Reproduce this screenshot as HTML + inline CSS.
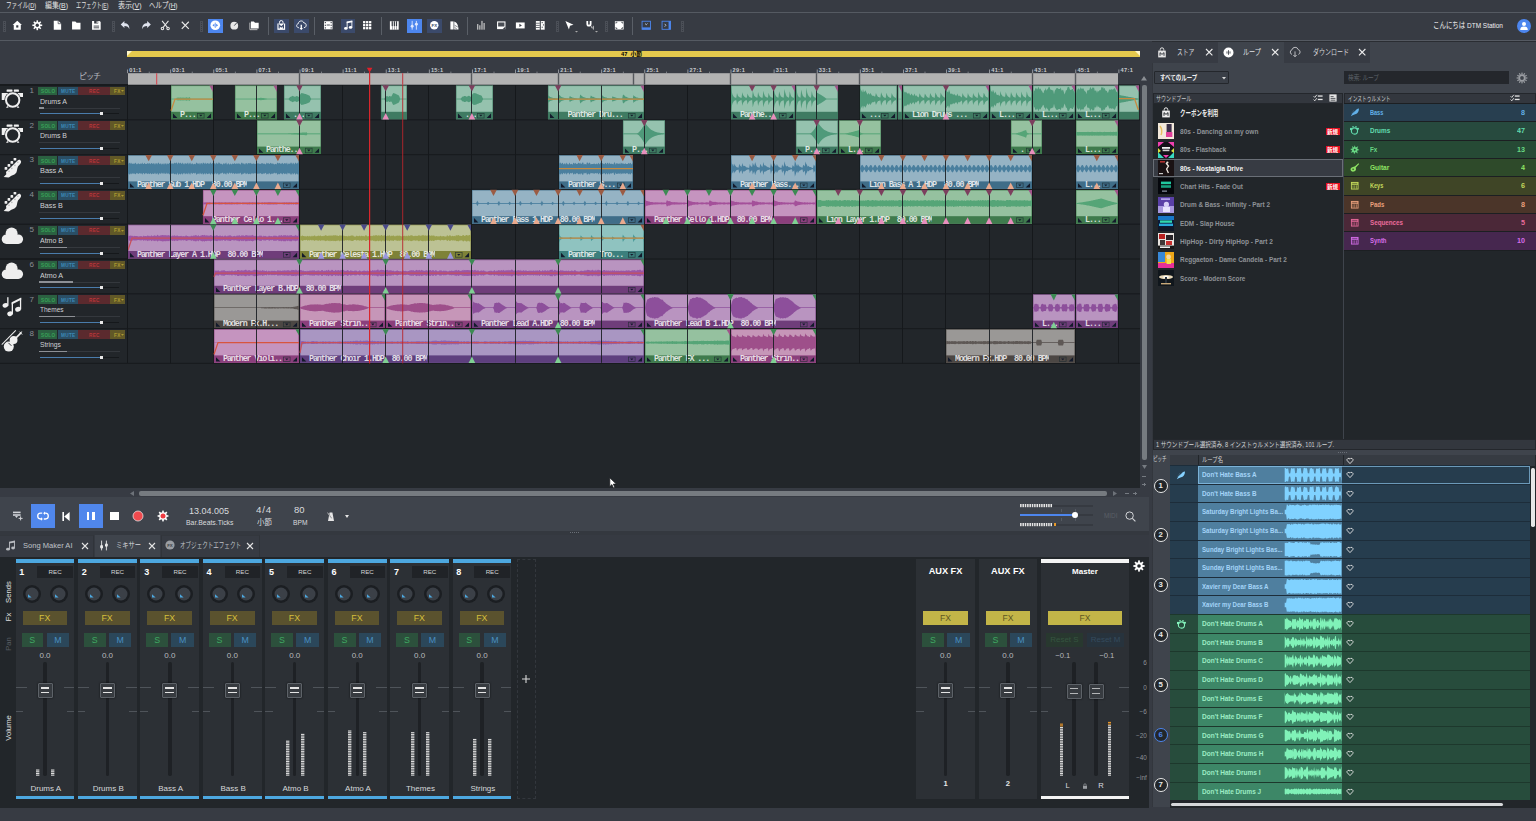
<!DOCTYPE html>
<html lang="ja"><head><meta charset="utf-8"><title>Music Maker</title>
<style>
*{box-sizing:border-box;margin:0;padding:0}
html,body{width:1536px;height:821px;overflow:hidden;background:#373b43;}
body{position:relative;font-family:"Liberation Sans","Noto Sans CJK JP",sans-serif;font-size:8px;color:#ccc;}
div{position:absolute;}
svg{position:absolute;overflow:visible}
.t{white-space:nowrap;line-height:1;}
.mono{font-family:"Liberation Mono","Noto Sans CJK JP",monospace;font-weight:bold;}
.b{font-weight:bold}

.cl{font-size:8.4px;color:rgba(255,255,255,.82);letter-spacing:-1.09px;overflow:hidden;height:8.6px;}

.tb{font-size:9.4px;font-weight:bold;letter-spacing:.6px;transform:scale(.5);transform-origin:0 0}

.tt{color:#d6d8db}

.sb{font-weight:bold}

.mx{font-family:"Liberation Sans",sans-serif}
</style></head>
<body>
<div style="left:0px;top:0px;width:1536px;height:12px;background:#373b43;"></div>
<div style="left:0px;top:12px;width:1536px;height:1px;background:#555a62;"></div>
<div class="t fit" style="left:6.4px;top:1.8px;font-size:8px;color:#e4e4e4;transform-origin:0 0;transform:scaleX(0.696);">ファイル(<u>D</u>)</div>
<div class="t fit" style="left:44.8px;top:1.8px;font-size:8px;color:#e4e4e4;transform-origin:0 0;transform:scaleX(0.862);">編集(<u>B</u>)</div>
<div class="t fit" style="left:76.3px;top:1.8px;font-size:8px;color:#e4e4e4;transform-origin:0 0;transform:scaleX(0.641);">エフェクト(<u>E</u>)</div>
<div class="t fit" style="left:117.6px;top:1.8px;font-size:8px;color:#e4e4e4;transform-origin:0 0;transform:scaleX(0.881);">表示(<u>V</u>)</div>
<div class="t fit" style="left:149.0px;top:1.8px;font-size:8px;color:#e4e4e4;transform-origin:0 0;transform:scaleX(0.811);">ヘルプ(<u>H</u>)</div>
<div style="left:0px;top:13px;width:1536px;height:27px;background:#373b43;"></div>
<div style="left:0px;top:40px;width:1536px;height:1px;background:#555a62;"></div>
<div style="left:3.0px;top:21px;width:3px;height:10.6px;background-image:repeating-linear-gradient(to bottom,#50555d 0 1px,transparent 1px 2px),repeating-linear-gradient(to right,#50555d 0 1px,transparent 1px 2px);background-blend-mode:normal;opacity:.8"></div>
<div style="left:111.5px;top:21px;width:3px;height:10.6px;background-image:repeating-linear-gradient(to bottom,#50555d 0 1px,transparent 1px 2px),repeating-linear-gradient(to right,#50555d 0 1px,transparent 1px 2px);background-blend-mode:normal;opacity:.8"></div>
<div style="left:200.0px;top:21px;width:3px;height:10.6px;background-image:repeating-linear-gradient(to bottom,#50555d 0 1px,transparent 1px 2px),repeating-linear-gradient(to right,#50555d 0 1px,transparent 1px 2px);background-blend-mode:normal;opacity:.8"></div>
<div style="left:555.5px;top:21px;width:3px;height:10.6px;background-image:repeating-linear-gradient(to bottom,#50555d 0 1px,transparent 1px 2px),repeating-linear-gradient(to right,#50555d 0 1px,transparent 1px 2px);background-blend-mode:normal;opacity:.8"></div>
<div style="left:604.5px;top:21px;width:3px;height:10.6px;background-image:repeating-linear-gradient(to bottom,#50555d 0 1px,transparent 1px 2px),repeating-linear-gradient(to right,#50555d 0 1px,transparent 1px 2px);background-blend-mode:normal;opacity:.8"></div>
<div style="left:680.5px;top:21px;width:3px;height:10.6px;background-image:repeating-linear-gradient(to bottom,#50555d 0 1px,transparent 1px 2px),repeating-linear-gradient(to right,#50555d 0 1px,transparent 1px 2px);background-blend-mode:normal;opacity:.8"></div>
<div style="left:267.5px;top:17px;width:1px;height:18px;background:#5a5f67;"></div>
<div style="left:314.3px;top:17px;width:1px;height:18px;background:#5a5f67;"></div>
<div style="left:380.9px;top:17px;width:1px;height:18px;background:#5a5f67;"></div>
<div style="left:467.2px;top:17px;width:1px;height:18px;background:#5a5f67;"></div>
<div style="left:632.0px;top:17px;width:1px;height:18px;background:#5a5f67;"></div>
<div style="left:207.5px;top:18.5px;width:15px;height:14.5px;background:#4d86ee;"></div>
<div style="left:407px;top:18.5px;width:15px;height:14.5px;background:#4d86ee;"></div>
<div style="left:274.3px;top:18.5px;width:14.5px;height:14.5px;background:#3b4a6b;"></div>
<div style="left:294px;top:18.5px;width:14.5px;height:14.5px;background:#3b4a6b;"></div>
<div style="left:340.5px;top:18.5px;width:14.5px;height:14.5px;background:#3b4a6b;"></div>
<div style="left:427.3px;top:18.5px;width:14.5px;height:14.5px;background:#3b4a6b;"></div>
<svg style="left:11.72px;top:20.22px" width="10.56" height="10.56" viewBox="0 0 12 12"><path d="M6 .8 L11.3 5.6 H10 V11 H2 V5.6 H.7 Z" fill="#fff"/><rect x="4.8" y="6" width="2.4" height="2.6" fill="#373b43"/></svg>
<svg style="left:31.72px;top:20.22px" width="10.56" height="10.56" viewBox="0 0 12 12"><g fill="#fff"><circle cx="6" cy="6" r="3.6"/><rect x="5.1" y="0.4" width="1.8" height="11.2" transform="rotate(0 6 6)"/><rect x="5.1" y="0.4" width="1.8" height="11.2" transform="rotate(45 6 6)"/><rect x="5.1" y="0.4" width="1.8" height="11.2" transform="rotate(90 6 6)"/><rect x="5.1" y="0.4" width="1.8" height="11.2" transform="rotate(135 6 6)"/></g><circle cx="6" cy="6" r="1.9" fill="#373b43"/></svg>
<svg style="left:51.72px;top:20.22px" width="10.56" height="10.56" viewBox="0 0 12 12"><path d="M2 .8 H7.2 L10.4 4 V11.2 H2 Z" fill="#fff"/><path d="M7 1 V4.2 H10.2" fill="none" stroke="#373b43" stroke-width=".8"/></svg>
<svg style="left:71.22px;top:20.22px" width="10.56" height="10.56" viewBox="0 0 12 12"><path d="M1.2 1.6 H5 L6.4 3.2 H10.8 V10.8 H1.2 Z" fill="#fff"/></svg>
<svg style="left:91.22px;top:20.22px" width="10.56" height="10.56" viewBox="0 0 12 12"><path d="M1.2 1 H9.6 L11 2.4 V11 H1.2 Z" fill="#fff"/><rect x="3.6" y="1" width="4.6" height="3" fill="#373b43"/><rect x="6.4" y="1.4" width="1.2" height="2.2" fill="#fff"/><rect x="3" y="6.4" width="6.2" height="1" fill="#373b43"/><rect x="3" y="8.4" width="6.2" height="1" fill="#373b43"/></svg>
<svg style="left:120.22px;top:20.22px" width="10.56" height="10.56" viewBox="0 0 12 12"><path d="M5 1.2 V3.6 C8.6 3.6 10.8 5.6 10.6 10.4 C9.8 8 8.2 6.8 5 6.8 V9.2 L.8 5.2 Z" fill="#dfe3ee"/></svg>
<svg style="left:140.72px;top:20.22px" width="10.56" height="10.56" viewBox="0 0 12 12"><path d="M7 1.2 V3.6 C3.4 3.6 1.2 5.6 1.4 10.4 C2.2 8 3.8 6.8 7 6.8 V9.2 L11.2 5.2 Z" fill="#dfe3ee"/></svg>
<svg style="left:159.72px;top:20.22px" width="10.56" height="10.56" viewBox="0 0 12 12"><g stroke="#e8e8e8" stroke-width="1.2" fill="none"><path d="M2.4 1 L8.6 8.6 M9.6 1 L3.4 8.6"/><circle cx="2.8" cy="9.6" r="1.4"/><circle cx="9.2" cy="9.6" r="1.4"/></g></svg>
<svg style="left:179.72px;top:20.22px" width="10.56" height="10.56" viewBox="0 0 12 12"><path d="M2 2 L10 10 M10 2 L2 10" stroke="#e8e8e8" stroke-width="1.3"/></svg>
<svg style="left:209.72px;top:20.22px" width="10.56" height="10.56" viewBox="0 0 12 12"><circle cx="6" cy="6" r="5.5" fill="#fff"/><path d="M6 3 V9" stroke="#4d86ee" stroke-width=".9"/><path d="M5 4.2 V7.8 L2.8 6Z M7 4.2 V7.8 L9.2 6Z" fill="#4d86ee"/></svg>
<svg style="left:228.72px;top:20.22px" width="10.56" height="10.56" viewBox="0 0 12 12"><circle cx="6" cy="6.4" r="4.4" fill="#e8e8e8"/><path d="M6 6.4 L9 3" stroke="#373b43" stroke-width="1"/><path d="M6 .8 A5.4 5.4 0 0 1 11.4 6" stroke="#373b43" stroke-width="1.1" fill="none"/></svg>
<svg style="left:248.72px;top:20.22px" width="10.56" height="10.56" viewBox="0 0 12 12"><path d="M2.2 1.6 H5.6 L6.8 3 H11 V9.6 H2.2 Z" fill="#fff"/><path d="M1 3 V11 H9.6" stroke="#cfcfcf" stroke-width="1" fill="none"/></svg>
<svg style="left:276.22px;top:20.22px" width="10.56" height="10.56" viewBox="0 0 12 12"><path d="M1.6 4 H10.4 V11.2 H1.6 Z" fill="#fff"/><path d="M4 4 V2.6 A2 2 0 0 1 8 2.6 V4" stroke="#fff" stroke-width="1.1" fill="none"/><path d="M3.6 9.8 V5.8 L6 8 L8.4 5.8 V9.8" stroke="#3b4a6b" stroke-width="1.4" fill="none"/></svg>
<svg style="left:295.72px;top:20.22px" width="10.56" height="10.56" viewBox="0 0 12 12"><path d="M3.4 8.8 C.2 8.8 -.2 4.8 2.6 4.2 C2.8 .6 8 -.2 9 3.4 C12.4 3.2 12.6 8.6 9 8.8" stroke="#fff" stroke-width="1" fill="none"/><path d="M6 5.4 V10.4" stroke="#fff" stroke-width="1.5" fill="none"/><path d="M4 9 L6 11.4 L8 9Z" fill="#fff"/></svg>
<svg style="left:322.72px;top:20.22px" width="10.56" height="10.56" viewBox="0 0 12 12"><rect x="1.2" y="1.4" width="9.6" height="9.2" fill="#fff"/><g fill="#373b43"><rect x="2" y="2.4" width="1.4" height="1.2"/><rect x="2" y="5.4" width="1.4" height="1.2"/><rect x="2" y="8.4" width="1.4" height="1.2"/><rect x="8.6" y="2.4" width="1.4" height="1.2"/><rect x="8.6" y="5.4" width="1.4" height="1.2"/><rect x="8.6" y="8.4" width="1.4" height="1.2"/><rect x="4.2" y="5.2" width="3.6" height="1"/></g></svg>
<svg style="left:342.72px;top:20.22px" width="10.56" height="10.56" viewBox="0 0 12 12"><g fill="#fff"><path d="M4.2 1.8 L10.6 .6 V2.6 L4.2 3.8 Z"/><rect x="4.2" y="2" width="1" height="7.6"/><rect x="9.6" y="1" width="1" height="7.4"/><ellipse cx="3.2" cy="9.6" rx="2" ry="1.5"/><ellipse cx="8.6" cy="8.4" rx="2" ry="1.5"/></g></svg>
<svg style="left:362.22px;top:20.22px" width="10.56" height="10.56" viewBox="0 0 12 12"><rect x="1.2" y="1.2" width="2.6" height="2.6" fill="#fff"/><rect x="4.6" y="1.2" width="2.6" height="2.6" fill="#fff"/><rect x="8.0" y="1.2" width="2.6" height="2.6" fill="#fff"/><rect x="1.2" y="4.6" width="2.6" height="2.6" fill="#fff"/><rect x="4.6" y="4.6" width="2.6" height="2.6" fill="#fff"/><rect x="8.0" y="4.6" width="2.6" height="2.6" fill="#fff"/><rect x="1.2" y="8.0" width="2.6" height="2.6" fill="#fff"/><rect x="4.6" y="8.0" width="2.6" height="2.6" fill="#fff"/><rect x="8.0" y="8.0" width="2.6" height="2.6" fill="#fff"/></svg>
<svg style="left:389.22px;top:20.22px" width="10.56" height="10.56" viewBox="0 0 12 12"><rect x="1" y="1.4" width="10" height="9.6" fill="#fff"/><g fill="#373b43"><rect x="3" y="1.4" width="1.4" height="5.6"/><rect x="5.4" y="1.4" width="1.4" height="5.6"/><rect x="7.8" y="1.4" width="1.4" height="5.6"/><rect x="3.5" y="7" width=".5" height="4"/><rect x="5.9" y="7" width=".5" height="4"/><rect x="8.3" y="7" width=".5" height="4"/></g></svg>
<svg style="left:409.22px;top:20.22px" width="10.56" height="10.56" viewBox="0 0 12 12"><g stroke="#dfe8ff" stroke-width="1"><path d="M3.6 1 V11 M8.4 1 V11"/></g><circle cx="3.6" cy="7.2" r="1.7" fill="#dfe8ff"/><circle cx="8.4" cy="4.8" r="1.7" fill="#dfe8ff"/></svg>
<svg style="left:429.42px;top:20.22px" width="10.56" height="10.56" viewBox="0 0 12 12"><circle cx="6" cy="6" r="4.8" fill="#fff"/><text transform="translate(6 7.9) scale(.5)" font-size="10" font-weight="bold" text-anchor="middle" fill="#3b4a6b" font-family="Liberation Sans,sans-serif">FX</text></svg>
<svg style="left:448.72px;top:20.22px" width="10.56" height="10.56" viewBox="0 0 12 12"><rect x="1.6" y="1.6" width="3.6" height="9.2" fill="#fff"/><path d="M6 1.6 C9 2.4 10.6 6 10.8 10.8 H6 Z" fill="#fff"/><path d="M6.4 6 L10 8 M6.4 8.4 L9 10.4" stroke="#373b43" stroke-width=".7"/></svg>
<svg style="left:475.72px;top:20.22px" width="10.56" height="10.56" viewBox="0 0 12 12"><g fill="#dcdcdc"><rect x="1.4" y="4.6" width="1.2" height="6.4"/><rect x="3.8" y="6" width="1.2" height="5"/><rect x="6.2" y="1" width="1.2" height="10"/><rect x="8.6" y="3.4" width="1.2" height="7.6"/></g></svg>
<svg style="left:495.72px;top:20.22px" width="10.56" height="10.56" viewBox="0 0 12 12"><rect x="1.2" y="1.6" width="9.6" height="8.8" fill="#fff"/><rect x="2.4" y="2.8" width="7.2" height="4.6" fill="#4a4e56"/><path d="M7.4 10.4 L10.8 7.4 V10.4 Z" fill="#373b43"/></svg>
<svg style="left:515.22px;top:20.22px" width="10.56" height="10.56" viewBox="0 0 12 12"><rect x="1" y="2.8" width="10" height="6.8" fill="#fff"/><path d="M5 4.4 L7.8 6.2 L5 8 Z" fill="#373b43"/></svg>
<svg style="left:535.22px;top:20.22px" width="10.56" height="10.56" viewBox="0 0 12 12"><rect x="1" y="1.2" width="4.4" height="9.8" fill="#fff"/><rect x="6.6" y="1.2" width="4.4" height="9.8" fill="#fff"/><g fill="#373b43"><rect x="1" y="3.2" width="4.4" height=".8"/><rect x="1" y="5.6" width="4.4" height=".8"/><rect x="1" y="8" width="4.4" height=".8"/><rect x="7.6" y="2.4" width="1.2" height="1.2"/><rect x="9" y="5" width="1.2" height="1.2"/><rect x="7.6" y="7.6" width="1.2" height="1.2"/></g></svg>
<svg style="left:564.22px;top:20.22px" width="10.56" height="10.56" viewBox="0 0 12 12"><path d="M1.6 1 L10.8 5.4 L6.8 6.6 L5.6 10.8 Z" fill="#fff"/></svg>
<svg style="left:584.72px;top:20.22px" width="10.56" height="10.56" viewBox="0 0 12 12"><path d="M1.6 1 V4.6 A2.9 2.9 0 0 0 7.4 4.6 V1 H5.4 V4.6 A.9 .9 0 0 1 3.6 4.6 V1 Z" fill="#fff"/><path d="M7.6 6.6 V9 H9.6 M9.6 6.6 V11" stroke="#ddd" stroke-width=".8" fill="none"/></svg>
<svg style="left:613.72px;top:20.22px" width="10.56" height="10.56" viewBox="0 0 12 12"><rect x="1" y="1.4" width="10" height="9.4" fill="#fff"/><path d="M2.2 4 V2.6 H3.8 M8.2 2.6 H9.8 V4 M9.8 8.2 V9.6 H8.2 M3.8 9.6 H2.2 V8.2" stroke="#373b43" stroke-width=".9" fill="none"/><rect x="4.6" y="4.8" width="2.8" height="2.6" fill="#fff"/></svg>
<svg style="left:640.72px;top:20.22px" width="10.56" height="10.56" viewBox="0 0 12 12"><rect x="1.2" y="1.4" width="9.6" height="9.2" fill="none" stroke="#4d86ee" stroke-width="1"/><rect x="1.2" y="8.4" width="9.6" height="2.4" fill="#4d86ee"/><path d="M4.6 4 L6 5.4 L7.4 4" stroke="#cfe0ff" stroke-width=".9" fill="none"/></svg>
<svg style="left:660.52px;top:20.22px" width="10.56" height="10.56" viewBox="0 0 12 12"><rect x="1.2" y="1.4" width="9.6" height="9.2" fill="none" stroke="#4d86ee" stroke-width="1"/><rect x="8.6" y="1.4" width="2.4" height="9.2" fill="#4d86ee"/><path d="M4.2 4.4 L5.6 6 L4.2 7.6" stroke="#cfe0ff" stroke-width=".9" fill="none"/></svg>
<svg style="left:575.00px;top:31.00px" width="3.00" height="2.00" viewBox="0 0 3 2"><path d="M0 0 L3 0 L1.5 1.6 Z" fill="#aaa"/></svg>
<svg style="left:595.00px;top:31.00px" width="3.00" height="2.00" viewBox="0 0 3 2"><path d="M0 0 L3 0 L1.5 1.6 Z" fill="#aaa"/></svg>
<div class="t fit" style="left:1433.0px;top:22px;font-size:8px;color:#f0f0f0;transform-origin:0 0;transform:scaleX(0.807);">こんにちは DTM Station</div>
<svg style="left:1517.00px;top:19.00px" width="14.00" height="14.00" viewBox="0 0 14 14"><circle cx="7" cy="7" r="7" fill="#4d86ee"/><circle cx="7" cy="5" r="2" fill="#fff"/><path d="M3.2 11 A3.8 3.4 0 0 1 10.8 11 Z" fill="#fff"/></svg>
<div style="left:0px;top:85px;width:1140px;height:403px;background:#22262a;"></div>
<svg style="left:0;top:0" width="1140" height="500" viewBox="0 0 1140 500"><rect x="0" y="84.4" width="1140" height="1.2" fill="#181b1e"/><rect x="0" y="119.2" width="1140" height="1.2" fill="#181b1e"/><rect x="0" y="154.0" width="1140" height="1.2" fill="#181b1e"/><rect x="0" y="188.8" width="1140" height="1.2" fill="#181b1e"/><rect x="0" y="223.6" width="1140" height="1.2" fill="#181b1e"/><rect x="0" y="258.4" width="1140" height="1.2" fill="#181b1e"/><rect x="0" y="293.2" width="1140" height="1.2" fill="#181b1e"/><rect x="0" y="328.0" width="1140" height="1.2" fill="#181b1e"/><rect x="0" y="362.8" width="1140" height="1.2" fill="#181b1e"/><rect x="127" y="85" width="1" height="278.4" fill="#15181b"/><rect x="170" y="85" width="1" height="278.4" fill="#15181b"/><rect x="213" y="85" width="1" height="278.4" fill="#15181b"/><rect x="256" y="85" width="1" height="278.4" fill="#15181b"/><rect x="299" y="85" width="1" height="278.4" fill="#15181b"/><rect x="342" y="85" width="1" height="278.4" fill="#15181b"/><rect x="385" y="85" width="1" height="278.4" fill="#15181b"/><rect x="428" y="85" width="1" height="278.4" fill="#15181b"/><rect x="471" y="85" width="1" height="278.4" fill="#15181b"/><rect x="515" y="85" width="1" height="278.4" fill="#15181b"/><rect x="558" y="85" width="1" height="278.4" fill="#15181b"/><rect x="601" y="85" width="1" height="278.4" fill="#15181b"/><rect x="644" y="85" width="1" height="278.4" fill="#15181b"/><rect x="687" y="85" width="1" height="278.4" fill="#15181b"/><rect x="730" y="85" width="1" height="278.4" fill="#15181b"/><rect x="773" y="85" width="1" height="278.4" fill="#15181b"/><rect x="816" y="85" width="1" height="278.4" fill="#15181b"/><rect x="859" y="85" width="1" height="278.4" fill="#15181b"/><rect x="902" y="85" width="1" height="278.4" fill="#15181b"/><rect x="945" y="85" width="1" height="278.4" fill="#15181b"/><rect x="989" y="85" width="1" height="278.4" fill="#15181b"/><rect x="1032" y="85" width="1" height="278.4" fill="#15181b"/><rect x="1075" y="85" width="1" height="278.4" fill="#15181b"/><rect x="1118" y="85" width="1" height="278.4" fill="#15181b"/><rect x="171.0" y="85.6" width="42.0" height="33.6" fill="#95c19f"/><rect x="171.0" y="111.8" width="42.0" height="7.4" fill="#3f7b4d"/><rect x="171.2" y="85.8" width="41.5" height="33.1" fill="none" stroke="#3f7b4d" stroke-width="0.6" opacity=".8"/><rect x="171.0" y="98.8" width="42.0" height="0.5" fill="#55a577" opacity=".8"/><path d="M171.0 98.7 L171.8 98.7 L172.5 98.7 L173.2 98.7 L174.0 98.7 L174.8 98.7 L175.5 98.7 L176.2 98.7 L177.0 97.6 L177.8 97.8 L178.5 97.4 L179.2 97.8 L180.0 97.5 L180.8 97.6 L181.5 97.8 L182.2 97.5 L183.0 97.8 L183.8 97.5 L184.5 97.8 L185.2 97.8 L186.0 97.5 L186.8 97.2 L187.5 97.8 L188.2 97.7 L189.0 97.4 L189.8 97.1 L190.5 98.7 L191.2 98.7 L192.0 98.7 L192.8 98.7 L193.5 98.7 L194.2 98.7 L195.0 98.7 L195.8 98.7 L196.5 98.7 L197.2 98.7 L198.0 98.7 L198.8 98.7 L199.5 98.7 L200.2 98.7 L201.0 98.7 L201.8 98.7 L202.5 98.7 L203.2 98.7 L204.0 98.7 L204.8 98.7 L205.5 98.7 L206.2 98.7 L207.0 98.7 L207.8 98.7 L208.5 98.7 L209.2 98.7 L210.0 98.7 L210.8 98.7 L211.5 98.7 L212.2 98.7 L213.0 98.7 L213.0 99.3 L212.2 99.3 L211.5 99.3 L210.8 99.3 L210.0 99.3 L209.2 99.3 L208.5 99.3 L207.8 99.3 L207.0 99.3 L206.2 99.3 L205.5 99.3 L204.8 99.3 L204.0 99.3 L203.2 99.3 L202.5 99.3 L201.8 99.3 L201.0 99.3 L200.2 99.3 L199.5 99.3 L198.8 99.3 L198.0 99.3 L197.2 99.3 L196.5 99.3 L195.8 99.3 L195.0 99.3 L194.2 99.3 L193.5 99.3 L192.8 99.3 L192.0 99.3 L191.2 99.3 L190.5 99.3 L189.8 100.9 L189.0 100.6 L188.2 100.3 L187.5 100.2 L186.8 100.8 L186.0 100.5 L185.2 100.2 L184.5 100.2 L183.8 100.5 L183.0 100.2 L182.2 100.5 L181.5 100.2 L180.8 100.4 L180.0 100.5 L179.2 100.2 L178.5 100.6 L177.8 100.2 L177.0 100.4 L176.2 99.3 L175.5 99.3 L174.8 99.3 L174.0 99.3 L173.2 99.3 L172.5 99.3 L171.8 99.3 L171.0 99.3Z" fill="#55a577"/><path d="M171.0 110.8 L175.0 99.0 L213.0 99.0" fill="none" stroke="#c88a40" stroke-width="1.25"/><path d="M173.0 113.6 V118.0 H177.4Z" fill="#131a2b"/><path d="M211.0 113.6 V118.0 H206.6Z" fill="#131a2b"/><rect x="197.5" y="113.4" width="6.6" height="4.6" fill="none" stroke="#1d2a30" stroke-width=".7" opacity=".8"/><path d="M199.1 114.8 H202.5 L200.8 116.6Z" fill="#131a2b"/><rect x="235.0" y="85.6" width="42.0" height="33.6" fill="#95c19f"/><rect x="235.0" y="111.8" width="42.0" height="7.4" fill="#3f7b4d"/><rect x="235.2" y="85.8" width="41.5" height="33.1" fill="none" stroke="#3f7b4d" stroke-width="0.6" opacity=".8"/><rect x="235.0" y="98.8" width="42.0" height="0.5" fill="#55a577" opacity=".8"/><path d="M235.0 98.7 L235.8 98.7 L236.5 98.7 L237.2 98.7 L238.0 98.7 L238.8 98.7 L239.5 98.7 L240.2 98.7 L241.0 98.7 L241.8 98.7 L242.5 98.7 L243.2 98.7 L244.0 98.7 L244.8 98.7 L245.5 98.7 L246.2 98.7 L247.0 98.7 L247.8 98.7 L248.5 98.7 L249.2 98.7 L250.0 98.7 L250.8 98.7 L251.5 98.7 L252.2 98.7 L253.0 98.7 L253.8 98.7 L254.5 98.7 L255.2 98.6 L256.0 98.5 L256.8 98.4 L257.5 98.3 L258.2 98.2 L259.0 98.0 L259.8 97.9 L260.5 97.8 L261.2 97.8 L262.0 97.9 L262.8 98.0 L263.5 98.1 L264.2 98.2 L265.0 98.3 L265.8 98.4 L266.5 98.6 L267.2 98.7 L268.0 98.7 L268.8 98.7 L269.5 98.7 L270.2 98.7 L271.0 98.7 L271.8 98.7 L272.5 98.7 L273.2 98.7 L274.0 98.7 L274.8 98.7 L275.5 98.7 L276.2 98.7 L277.0 98.7 L277.0 99.3 L276.2 99.3 L275.5 99.3 L274.8 99.3 L274.0 99.3 L273.2 99.3 L272.5 99.3 L271.8 99.3 L271.0 99.3 L270.2 99.3 L269.5 99.3 L268.8 99.3 L268.0 99.3 L267.2 99.3 L266.5 99.4 L265.8 99.6 L265.0 99.7 L264.2 99.8 L263.5 99.9 L262.8 100.0 L262.0 100.1 L261.2 100.2 L260.5 100.2 L259.8 100.1 L259.0 100.0 L258.2 99.8 L257.5 99.7 L256.8 99.6 L256.0 99.5 L255.2 99.4 L254.5 99.3 L253.8 99.3 L253.0 99.3 L252.2 99.3 L251.5 99.3 L250.8 99.3 L250.0 99.3 L249.2 99.3 L248.5 99.3 L247.8 99.3 L247.0 99.3 L246.2 99.3 L245.5 99.3 L244.8 99.3 L244.0 99.3 L243.2 99.3 L242.5 99.3 L241.8 99.3 L241.0 99.3 L240.2 99.3 L239.5 99.3 L238.8 99.3 L238.0 99.3 L237.2 99.3 L236.5 99.3 L235.8 99.3 L235.0 99.3Z" fill="#55a577"/><path d="M237.0 113.6 V118.0 H241.4Z" fill="#131a2b"/><path d="M275.0 113.6 V118.0 H270.6Z" fill="#131a2b"/><rect x="261.5" y="113.4" width="6.6" height="4.6" fill="none" stroke="#1d2a30" stroke-width=".7" opacity=".8"/><path d="M263.1 114.8 H266.5 L264.8 116.6Z" fill="#131a2b"/><rect x="284.0" y="85.6" width="37.0" height="33.6" fill="#95c2ae"/><rect x="284.0" y="111.8" width="37.0" height="7.4" fill="#3f7b62"/><rect x="284.2" y="85.8" width="36.5" height="33.1" fill="none" stroke="#3f7b62" stroke-width="0.6" opacity=".8"/><rect x="284.0" y="98.8" width="37.0" height="0.5" fill="#4f9a7a" opacity=".8"/><path d="M284.0 98.7 L284.8 98.7 L285.5 98.7 L286.3 98.7 L287.0 98.7 L287.8 98.7 L288.5 98.7 L289.3 98.0 L290.0 96.9 L290.8 96.7 L291.6 96.5 L292.3 95.8 L293.1 96.3 L293.8 96.3 L294.6 96.8 L295.3 96.7 L296.1 96.3 L296.8 96.1 L297.6 96.2 L298.3 96.9 L299.1 96.5 L299.9 95.1 L300.6 93.9 L301.4 93.0 L302.1 93.2 L302.9 93.3 L303.6 93.6 L304.4 93.8 L305.1 94.0 L305.9 94.1 L306.7 94.4 L307.4 94.8 L308.2 95.0 L308.9 95.4 L309.7 95.8 L310.4 97.4 L311.2 98.7 L311.9 98.7 L312.7 98.7 L313.4 98.7 L314.2 98.7 L315.0 98.7 L315.7 98.7 L316.5 98.7 L317.2 98.7 L318.0 98.7 L318.7 98.7 L319.5 98.7 L320.2 98.7 L321.0 98.7 L321.0 99.3 L320.2 99.3 L319.5 99.3 L318.7 99.3 L318.0 99.3 L317.2 99.3 L316.5 99.3 L315.7 99.3 L315.0 99.3 L314.2 99.3 L313.4 99.3 L312.7 99.3 L311.9 99.3 L311.2 99.3 L310.4 100.6 L309.7 102.2 L308.9 102.6 L308.2 103.0 L307.4 103.2 L306.7 103.6 L305.9 103.9 L305.1 104.0 L304.4 104.2 L303.6 104.4 L302.9 104.7 L302.1 104.8 L301.4 105.0 L300.6 104.1 L299.9 102.9 L299.1 101.5 L298.3 101.1 L297.6 101.8 L296.8 101.9 L296.1 101.7 L295.3 101.3 L294.6 101.2 L293.8 101.7 L293.1 101.7 L292.3 102.2 L291.6 101.5 L290.8 101.3 L290.0 101.1 L289.3 100.0 L288.5 99.3 L287.8 99.3 L287.0 99.3 L286.3 99.3 L285.5 99.3 L284.8 99.3 L284.0 99.3Z" fill="#4f9a7a"/><path d="M286.0 113.6 V118.0 H290.4Z" fill="#131a2b"/><path d="M319.0 113.6 V118.0 H314.6Z" fill="#131a2b"/><rect x="305.5" y="113.4" width="6.6" height="4.6" fill="none" stroke="#1d2a30" stroke-width=".7" opacity=".8"/><path d="M307.1 114.8 H310.5 L308.8 116.6Z" fill="#131a2b"/><rect x="381.0" y="85.6" width="26.0" height="33.6" fill="#95c2ae"/><rect x="381.0" y="111.8" width="26.0" height="7.4" fill="#3f7b62"/><rect x="381.2" y="85.8" width="25.5" height="33.1" fill="none" stroke="#3f7b62" stroke-width="0.6" opacity=".8"/><rect x="381.0" y="98.8" width="26.0" height="0.5" fill="#4f9a7a" opacity=".8"/><path d="M381.0 98.7 L381.8 98.7 L382.5 98.7 L383.3 98.7 L384.1 98.7 L384.8 97.8 L385.6 96.6 L386.4 96.3 L387.1 96.1 L387.9 96.4 L388.6 96.7 L389.4 96.0 L390.2 96.0 L390.9 96.8 L391.7 96.1 L392.5 94.3 L393.2 92.9 L394.0 93.3 L394.8 93.5 L395.5 93.7 L396.3 94.2 L397.1 94.5 L397.8 95.1 L398.6 95.3 L399.4 96.6 L400.1 98.7 L400.9 98.7 L401.6 98.7 L402.4 98.7 L403.2 98.7 L403.9 98.7 L404.7 98.7 L405.5 98.7 L406.2 98.7 L407.0 98.7 L407.0 99.3 L406.2 99.3 L405.5 99.3 L404.7 99.3 L403.9 99.3 L403.2 99.3 L402.4 99.3 L401.6 99.3 L400.9 99.3 L400.1 99.3 L399.4 101.4 L398.6 102.7 L397.8 102.9 L397.1 103.5 L396.3 103.8 L395.5 104.3 L394.8 104.5 L394.0 104.7 L393.2 105.1 L392.5 103.7 L391.7 101.9 L390.9 101.2 L390.2 102.0 L389.4 102.0 L388.6 101.3 L387.9 101.6 L387.1 101.9 L386.4 101.7 L385.6 101.4 L384.8 100.2 L384.1 99.3 L383.3 99.3 L382.5 99.3 L381.8 99.3 L381.0 99.3Z" fill="#4f9a7a"/><rect x="456.0" y="85.6" width="37.0" height="33.6" fill="#95c2ae"/><rect x="456.0" y="111.8" width="37.0" height="7.4" fill="#3f7b62"/><rect x="456.2" y="85.8" width="36.5" height="33.1" fill="none" stroke="#3f7b62" stroke-width="0.6" opacity=".8"/><rect x="456.0" y="98.8" width="37.0" height="0.5" fill="#4f9a7a" opacity=".8"/><path d="M456.0 98.7 L456.8 98.7 L457.5 98.7 L458.3 98.7 L459.0 98.7 L459.8 98.7 L460.5 98.7 L461.3 98.0 L462.0 96.9 L462.8 96.6 L463.6 96.4 L464.3 95.9 L465.1 96.1 L465.8 96.3 L466.6 96.7 L467.3 96.5 L468.1 96.1 L468.8 95.8 L469.6 96.1 L470.3 96.7 L471.1 96.5 L471.9 95.1 L472.6 93.9 L473.4 93.2 L474.1 93.1 L474.9 93.2 L475.6 93.3 L476.4 93.5 L477.1 94.0 L477.9 94.2 L478.7 94.4 L479.4 94.9 L480.2 95.0 L480.9 95.5 L481.7 95.8 L482.4 97.4 L483.2 98.7 L483.9 98.7 L484.7 98.7 L485.4 98.7 L486.2 98.7 L487.0 98.7 L487.7 98.7 L488.5 98.7 L489.2 98.7 L490.0 98.7 L490.7 98.7 L491.5 98.7 L492.2 98.7 L493.0 98.7 L493.0 99.3 L492.2 99.3 L491.5 99.3 L490.7 99.3 L490.0 99.3 L489.2 99.3 L488.5 99.3 L487.7 99.3 L487.0 99.3 L486.2 99.3 L485.4 99.3 L484.7 99.3 L483.9 99.3 L483.2 99.3 L482.4 100.6 L481.7 102.2 L480.9 102.5 L480.2 103.0 L479.4 103.1 L478.7 103.6 L477.9 103.8 L477.1 104.0 L476.4 104.5 L475.6 104.7 L474.9 104.8 L474.1 104.9 L473.4 104.8 L472.6 104.1 L471.9 102.9 L471.1 101.5 L470.3 101.3 L469.6 101.9 L468.8 102.2 L468.1 101.9 L467.3 101.5 L466.6 101.3 L465.8 101.7 L465.1 101.9 L464.3 102.1 L463.6 101.6 L462.8 101.4 L462.0 101.1 L461.3 100.0 L460.5 99.3 L459.8 99.3 L459.0 99.3 L458.3 99.3 L457.5 99.3 L456.8 99.3 L456.0 99.3Z" fill="#4f9a7a"/><path d="M458.0 113.6 V118.0 H462.4Z" fill="#131a2b"/><path d="M491.0 113.6 V118.0 H486.6Z" fill="#131a2b"/><rect x="477.5" y="113.4" width="6.6" height="4.6" fill="none" stroke="#1d2a30" stroke-width=".7" opacity=".8"/><path d="M479.1 114.8 H482.5 L480.8 116.6Z" fill="#131a2b"/><rect x="548.0" y="85.6" width="96.0" height="33.6" fill="#95c2ae"/><rect x="548.0" y="111.8" width="96.0" height="7.4" fill="#3f7b62"/><rect x="548.2" y="85.8" width="95.5" height="33.1" fill="none" stroke="#3f7b62" stroke-width="0.6" opacity=".8"/><rect x="548.0" y="98.8" width="96.0" height="0.5" fill="#4f9a7a" opacity=".8"/><path d="M548.0 95.6 L548.8 95.7 L549.5 96.6 L550.2 97.0 L551.0 97.3 L551.8 97.4 L552.5 97.8 L553.2 97.9 L554.0 98.1 L554.8 98.1 L555.5 98.2 L556.2 98.3 L557.0 98.4 L557.8 98.4 L558.5 98.5 L559.2 94.7 L560.0 95.4 L560.8 96.5 L561.5 96.9 L562.2 97.2 L563.0 97.5 L563.8 97.7 L564.5 97.9 L565.2 98.1 L566.0 98.2 L566.8 98.2 L567.5 98.3 L568.2 98.4 L569.0 98.4 L569.8 95.9 L570.5 96.5 L571.2 96.9 L572.0 97.2 L572.8 97.7 L573.5 97.7 L574.2 97.9 L575.0 98.0 L575.8 98.2 L576.5 98.3 L577.2 98.4 L578.0 98.4 L578.8 98.4 L579.5 98.5 L580.2 94.6 L581.0 95.3 L581.8 96.0 L582.5 96.5 L583.2 97.0 L584.0 97.3 L584.8 97.6 L585.5 97.8 L586.2 97.9 L587.0 98.1 L587.8 98.1 L588.5 98.2 L589.2 98.3 L590.0 98.4 L590.8 95.4 L591.5 96.1 L592.2 96.7 L593.0 96.8 L593.8 97.1 L594.5 97.6 L595.2 97.8 L596.0 98.0 L596.8 98.1 L597.5 98.2 L598.2 98.3 L599.0 98.3 L599.8 98.4 L600.5 98.5 L601.2 98.5 L602.0 95.1 L602.8 96.0 L603.5 96.4 L604.2 97.0 L605.0 97.2 L605.8 97.4 L606.5 97.6 L607.2 97.9 L608.0 98.1 L608.8 98.2 L609.5 98.3 L610.2 98.3 L611.0 98.4 L611.8 98.4 L612.5 96.2 L613.2 96.7 L614.0 96.9 L614.8 97.2 L615.5 97.5 L616.2 97.7 L617.0 97.9 L617.8 98.1 L618.5 98.2 L619.2 98.3 L620.0 98.4 L620.8 98.4 L621.5 98.5 L622.2 98.5 L623.0 94.5 L623.8 95.0 L624.5 95.6 L625.2 96.5 L626.0 96.7 L626.8 97.1 L627.5 97.4 L628.2 97.8 L629.0 98.0 L629.8 98.1 L630.5 98.2 L631.2 98.3 L632.0 98.3 L632.8 98.4 L633.5 95.1 L634.2 96.0 L635.0 96.5 L635.8 96.9 L636.5 97.4 L637.2 97.5 L638.0 97.7 L638.8 97.9 L639.5 98.1 L640.2 98.2 L641.0 98.3 L641.8 98.3 L642.5 98.4 L643.2 98.4 L644.0 93.9 L644.0 104.1 L643.2 99.6 L642.5 99.6 L641.8 99.7 L641.0 99.7 L640.2 99.8 L639.5 99.9 L638.8 100.1 L638.0 100.3 L637.2 100.5 L636.5 100.6 L635.8 101.1 L635.0 101.5 L634.2 102.0 L633.5 102.9 L632.8 99.6 L632.0 99.7 L631.2 99.7 L630.5 99.8 L629.8 99.9 L629.0 100.0 L628.2 100.2 L627.5 100.6 L626.8 100.9 L626.0 101.3 L625.2 101.5 L624.5 102.4 L623.8 103.0 L623.0 103.5 L622.2 99.5 L621.5 99.5 L620.8 99.6 L620.0 99.6 L619.2 99.7 L618.5 99.8 L617.8 99.9 L617.0 100.1 L616.2 100.3 L615.5 100.5 L614.8 100.8 L614.0 101.1 L613.2 101.3 L612.5 101.8 L611.8 99.6 L611.0 99.6 L610.2 99.7 L609.5 99.7 L608.8 99.8 L608.0 99.9 L607.2 100.1 L606.5 100.4 L605.8 100.6 L605.0 100.8 L604.2 101.0 L603.5 101.6 L602.8 102.0 L602.0 102.9 L601.2 99.5 L600.5 99.5 L599.8 99.6 L599.0 99.7 L598.2 99.7 L597.5 99.8 L596.8 99.9 L596.0 100.0 L595.2 100.2 L594.5 100.4 L593.8 100.9 L593.0 101.2 L592.2 101.3 L591.5 101.9 L590.8 102.6 L590.0 99.6 L589.2 99.7 L588.5 99.8 L587.8 99.9 L587.0 99.9 L586.2 100.1 L585.5 100.2 L584.8 100.4 L584.0 100.7 L583.2 101.0 L582.5 101.5 L581.8 102.0 L581.0 102.7 L580.2 103.4 L579.5 99.5 L578.8 99.6 L578.0 99.6 L577.2 99.6 L576.5 99.7 L575.8 99.8 L575.0 100.0 L574.2 100.1 L573.5 100.3 L572.8 100.3 L572.0 100.8 L571.2 101.1 L570.5 101.5 L569.8 102.1 L569.0 99.6 L568.2 99.6 L567.5 99.7 L566.8 99.8 L566.0 99.8 L565.2 99.9 L564.5 100.1 L563.8 100.3 L563.0 100.5 L562.2 100.8 L561.5 101.1 L560.8 101.5 L560.0 102.6 L559.2 103.3 L558.5 99.5 L557.8 99.6 L557.0 99.6 L556.2 99.7 L555.5 99.8 L554.8 99.9 L554.0 99.9 L553.2 100.1 L552.5 100.2 L551.8 100.6 L551.0 100.7 L550.2 101.0 L549.5 101.4 L548.8 102.3 L548.0 102.4Z" fill="#4f9a7a"/><path d="M548.0 99.0 L644.0 99.0" fill="none" stroke="#c88a40" stroke-width="1.25"/><path d="M550.0 113.6 V118.0 H554.4Z" fill="#131a2b"/><path d="M642.0 113.6 V118.0 H637.6Z" fill="#131a2b"/><rect x="628.5" y="113.4" width="6.6" height="4.6" fill="none" stroke="#1d2a30" stroke-width=".7" opacity=".8"/><path d="M630.1 114.8 H633.5 L631.8 116.6Z" fill="#131a2b"/><rect x="731.0" y="85.6" width="64.0" height="33.6" fill="#95c2ae"/><rect x="731.0" y="111.8" width="64.0" height="7.4" fill="#3f7b62"/><rect x="731.2" y="85.8" width="63.5" height="33.1" fill="none" stroke="#3f7b62" stroke-width="0.6" opacity=".8"/><rect x="731.0" y="98.8" width="64.0" height="0.5" fill="#4f9a7a" opacity=".8"/><path d="M731.0 87.1 L731.8 92.0 L732.5 94.4 L733.3 96.1 L734.0 97.0 L734.8 97.5 L735.5 97.7 L736.3 97.8 L737.0 93.1 L737.8 95.6 L738.5 96.5 L739.3 97.1 L740.0 97.5 L740.8 97.8 L741.5 97.9 L742.3 92.3 L743.0 94.9 L743.8 96.0 L744.6 96.9 L745.3 97.4 L746.1 97.7 L746.8 97.8 L747.6 93.5 L748.3 95.5 L749.1 96.8 L749.8 97.3 L750.6 97.6 L751.3 97.8 L752.1 97.9 L752.8 90.8 L753.6 93.9 L754.3 95.9 L755.1 96.6 L755.8 97.3 L756.6 97.6 L757.4 97.8 L758.1 92.0 L758.9 94.9 L759.6 96.2 L760.4 97.0 L761.1 97.5 L761.9 97.7 L762.6 97.8 L763.4 90.7 L764.1 94.1 L764.9 95.9 L765.6 96.7 L766.4 97.3 L767.1 97.6 L767.9 97.8 L768.6 92.8 L769.4 95.2 L770.2 96.4 L770.9 97.1 L771.7 97.5 L772.4 97.7 L773.2 97.8 L773.9 89.3 L774.7 93.2 L775.4 95.1 L776.2 96.5 L776.9 97.1 L777.7 97.5 L778.4 97.7 L779.2 91.2 L779.9 94.1 L780.7 95.9 L781.4 96.8 L782.2 97.3 L783.0 97.6 L783.7 97.8 L784.5 89.0 L785.2 92.6 L786.0 95.1 L786.7 96.4 L787.5 97.1 L788.2 97.5 L789.0 97.7 L789.7 91.2 L790.5 94.3 L791.2 96.2 L792.0 97.0 L792.7 97.4 L793.5 97.7 L794.2 97.8 L795.0 87.7 L795.0 110.3 L794.2 100.2 L793.5 100.3 L792.7 100.6 L792.0 101.0 L791.2 101.8 L790.5 103.7 L789.7 106.8 L789.0 100.3 L788.2 100.5 L787.5 100.9 L786.7 101.6 L786.0 102.9 L785.2 105.4 L784.5 109.0 L783.7 100.2 L783.0 100.4 L782.2 100.7 L781.4 101.2 L780.7 102.1 L779.9 103.9 L779.2 106.8 L778.4 100.3 L777.7 100.5 L776.9 100.9 L776.2 101.5 L775.4 102.9 L774.7 104.8 L773.9 108.7 L773.2 100.2 L772.4 100.3 L771.7 100.5 L770.9 100.9 L770.2 101.6 L769.4 102.8 L768.6 105.2 L767.9 100.2 L767.1 100.4 L766.4 100.7 L765.6 101.3 L764.9 102.1 L764.1 103.9 L763.4 107.3 L762.6 100.2 L761.9 100.3 L761.1 100.5 L760.4 101.0 L759.6 101.8 L758.9 103.1 L758.1 106.0 L757.4 100.2 L756.6 100.4 L755.8 100.7 L755.1 101.4 L754.3 102.1 L753.6 104.1 L752.8 107.2 L752.1 100.1 L751.3 100.2 L750.6 100.4 L749.8 100.7 L749.1 101.2 L748.3 102.5 L747.6 104.5 L746.8 100.2 L746.1 100.3 L745.3 100.6 L744.6 101.1 L743.8 102.0 L743.0 103.1 L742.3 105.7 L741.5 100.1 L740.8 100.2 L740.0 100.5 L739.3 100.9 L738.5 101.5 L737.8 102.4 L737.0 104.9 L736.3 100.2 L735.5 100.3 L734.8 100.5 L734.0 101.0 L733.3 101.9 L732.5 103.6 L731.8 106.0 L731.0 110.9Z" fill="#4f9a7a"/><path d="M733.0 113.6 V118.0 H737.4Z" fill="#131a2b"/><path d="M793.0 113.6 V118.0 H788.6Z" fill="#131a2b"/><rect x="779.5" y="113.4" width="6.6" height="4.6" fill="none" stroke="#1d2a30" stroke-width=".7" opacity=".8"/><path d="M781.1 114.8 H784.5 L782.8 116.6Z" fill="#131a2b"/><rect x="796.0" y="85.6" width="42.0" height="33.6" fill="#95c2ae"/><rect x="796.0" y="111.8" width="42.0" height="7.4" fill="#3f7b62"/><rect x="796.2" y="85.8" width="41.5" height="33.1" fill="none" stroke="#3f7b62" stroke-width="0.6" opacity=".8"/><rect x="796.0" y="98.8" width="42.0" height="0.5" fill="#4f9a7a" opacity=".8"/><path d="M796.0 86.6 L796.8 91.6 L797.5 94.4 L798.2 96.3 L799.0 97.0 L799.8 97.4 L800.5 97.7 L801.2 89.5 L802.0 93.3 L802.8 95.7 L803.5 96.6 L804.2 97.3 L805.0 97.6 L805.8 97.8 L806.5 87.5 L807.2 92.8 L808.0 95.0 L808.8 96.3 L809.5 97.1 L810.2 97.5 L811.0 97.7 L811.8 91.1 L812.5 94.6 L813.2 96.0 L814.0 96.9 L814.8 97.4 L815.5 97.7 L816.2 97.8 L817.0 92.7 L817.8 93.1 L818.5 93.5 L819.2 93.9 L820.0 94.4 L820.8 94.8 L821.5 95.2 L822.2 95.7 L823.0 96.2 L823.8 96.7 L824.5 97.2 L825.2 97.8 L826.0 98.4 L826.8 98.7 L827.5 98.7 L828.2 98.7 L829.0 98.7 L829.8 98.7 L830.5 98.7 L831.2 98.7 L832.0 98.7 L832.8 98.7 L833.5 98.7 L834.2 98.7 L835.0 98.7 L835.8 98.7 L836.5 98.7 L837.2 98.7 L838.0 98.7 L838.0 99.3 L837.2 99.3 L836.5 99.3 L835.8 99.3 L835.0 99.3 L834.2 99.3 L833.5 99.3 L832.8 99.3 L832.0 99.3 L831.2 99.3 L830.5 99.3 L829.8 99.3 L829.0 99.3 L828.2 99.3 L827.5 99.3 L826.8 99.3 L826.0 99.6 L825.2 100.2 L824.5 100.8 L823.8 101.3 L823.0 101.8 L822.2 102.3 L821.5 102.8 L820.8 103.2 L820.0 103.6 L819.2 104.1 L818.5 104.5 L817.8 104.9 L817.0 105.3 L816.2 100.2 L815.5 100.3 L814.8 100.6 L814.0 101.1 L813.2 102.0 L812.5 103.4 L811.8 106.9 L811.0 100.3 L810.2 100.5 L809.5 100.9 L808.8 101.7 L808.0 103.0 L807.2 105.2 L806.5 110.5 L805.8 100.2 L805.0 100.4 L804.2 100.7 L803.5 101.4 L802.8 102.3 L802.0 104.7 L801.2 108.5 L800.5 100.3 L799.8 100.6 L799.0 101.0 L798.2 101.7 L797.5 103.6 L796.8 106.4 L796.0 111.4Z" fill="#4f9a7a"/><rect x="860.0" y="85.6" width="37.0" height="33.6" fill="#95c2ae"/><rect x="860.0" y="111.8" width="37.0" height="7.4" fill="#3f7b62"/><rect x="860.2" y="85.8" width="36.5" height="33.1" fill="none" stroke="#3f7b62" stroke-width="0.6" opacity=".8"/><rect x="860.0" y="98.8" width="37.0" height="0.5" fill="#4f9a7a" opacity=".8"/><path d="M860.0 88.2 L860.8 89.5 L861.5 90.8 L862.3 92.6 L863.0 89.0 L863.8 92.2 L864.5 91.8 L865.3 90.3 L866.0 91.5 L866.8 93.2 L867.6 94.8 L868.3 93.0 L869.1 93.7 L869.8 94.7 L870.6 92.7 L871.3 94.4 L872.1 95.8 L872.8 95.7 L873.6 95.7 L874.3 96.3 L875.1 96.8 L875.9 92.9 L876.6 94.6 L877.4 96.1 L878.1 97.0 L878.9 97.0 L879.6 97.5 L880.4 97.5 L881.1 92.2 L881.9 94.5 L882.7 96.1 L883.4 97.0 L884.2 97.4 L884.9 97.8 L885.7 98.0 L886.4 92.8 L887.2 95.1 L887.9 96.3 L888.7 97.0 L889.4 97.5 L890.2 97.7 L891.0 98.0 L891.7 93.0 L892.5 95.1 L893.2 96.2 L894.0 96.8 L894.7 97.5 L895.5 97.8 L896.2 98.0 L897.0 92.7 L897.0 105.3 L896.2 100.0 L895.5 100.2 L894.7 100.5 L894.0 101.2 L893.2 101.8 L892.5 102.9 L891.7 105.0 L891.0 100.0 L890.2 100.3 L889.4 100.5 L888.7 101.0 L887.9 101.7 L887.2 102.9 L886.4 105.2 L885.7 100.0 L884.9 100.2 L884.2 100.6 L883.4 101.0 L882.7 101.9 L881.9 103.5 L881.1 105.8 L880.4 100.5 L879.6 100.5 L878.9 101.0 L878.1 101.0 L877.4 101.9 L876.6 103.4 L875.9 105.1 L875.1 101.2 L874.3 101.7 L873.6 102.3 L872.8 102.3 L872.1 102.2 L871.3 103.6 L870.6 105.3 L869.8 103.3 L869.1 104.3 L868.3 105.0 L867.6 103.2 L866.8 104.8 L866.0 106.5 L865.3 107.7 L864.5 106.2 L863.8 105.8 L863.0 109.0 L862.3 105.4 L861.5 107.2 L860.8 108.5 L860.0 109.8Z" fill="#4f9a7a"/><path d="M862.0 113.6 V118.0 H866.4Z" fill="#131a2b"/><path d="M895.0 113.6 V118.0 H890.6Z" fill="#131a2b"/><rect x="881.5" y="113.4" width="6.6" height="4.6" fill="none" stroke="#1d2a30" stroke-width=".7" opacity=".8"/><path d="M883.1 114.8 H886.5 L884.8 116.6Z" fill="#131a2b"/><rect x="898.0" y="85.6" width="4.0" height="33.6" fill="#95c2ae"/><rect x="898.0" y="111.8" width="4.0" height="7.4" fill="#3f7b62"/><rect x="898.2" y="85.8" width="3.5" height="33.1" fill="none" stroke="#3f7b62" stroke-width="0.6" opacity=".8"/><rect x="898.0" y="98.8" width="4.0" height="0.5" fill="#4f9a7a" opacity=".8"/><rect x="903.0" y="85.6" width="86.0" height="33.6" fill="#95c2ae"/><rect x="903.0" y="111.8" width="86.0" height="7.4" fill="#3f7b62"/><rect x="903.2" y="85.8" width="85.5" height="33.1" fill="none" stroke="#3f7b62" stroke-width="0.6" opacity=".8"/><rect x="903.0" y="98.8" width="86.0" height="0.5" fill="#4f9a7a" opacity=".8"/><path d="M903.0 88.2 L903.8 90.6 L904.5 92.2 L905.3 92.4 L906.0 91.5 L906.8 92.9 L907.5 93.4 L908.3 93.8 L909.0 92.5 L909.8 94.5 L910.5 95.4 L911.3 93.4 L912.1 94.6 L912.8 95.5 L913.6 95.8 L914.3 93.5 L915.1 95.0 L915.8 96.3 L916.6 95.3 L917.3 96.4 L918.1 97.2 L918.8 97.3 L919.6 93.2 L920.4 95.0 L921.1 96.2 L921.9 96.9 L922.6 97.4 L923.4 97.7 L924.1 97.9 L924.9 93.5 L925.6 94.7 L926.4 96.0 L927.1 96.9 L927.9 97.4 L928.6 97.7 L929.4 97.9 L930.2 93.1 L930.9 94.5 L931.7 95.9 L932.4 96.9 L933.2 97.3 L933.9 97.6 L934.7 97.9 L935.4 92.4 L936.2 94.2 L936.9 95.6 L937.7 96.9 L938.5 97.2 L939.2 97.6 L940.0 97.9 L940.7 92.4 L941.5 94.6 L942.2 95.5 L943.0 96.5 L943.7 97.1 L944.5 97.6 L945.2 97.8 L946.0 89.7 L946.8 90.7 L947.5 92.1 L948.3 92.5 L949.0 89.5 L949.8 91.9 L950.5 94.0 L951.3 93.7 L952.0 93.5 L952.8 94.5 L953.5 94.8 L954.3 93.7 L955.1 95.5 L955.8 95.3 L956.6 95.7 L957.3 93.5 L958.1 95.3 L958.8 96.2 L959.6 95.4 L960.3 96.3 L961.1 96.9 L961.8 97.4 L962.6 93.0 L963.4 95.2 L964.1 96.0 L964.9 97.0 L965.6 97.5 L966.4 97.7 L967.1 97.9 L967.9 92.9 L968.6 95.1 L969.4 96.2 L970.1 96.9 L970.9 97.3 L971.6 97.7 L972.4 97.9 L973.2 92.9 L973.9 94.9 L974.7 95.9 L975.4 96.7 L976.2 97.3 L976.9 97.7 L977.7 97.9 L978.4 91.8 L979.2 94.5 L979.9 95.7 L980.7 96.8 L981.5 97.3 L982.2 97.6 L983.0 97.8 L983.7 92.7 L984.5 93.9 L985.2 95.7 L986.0 96.7 L986.7 97.1 L987.5 97.5 L988.2 97.9 L989.0 89.3 L989.0 108.7 L988.2 100.1 L987.5 100.5 L986.7 100.9 L986.0 101.3 L985.2 102.3 L984.5 104.1 L983.7 105.3 L983.0 100.2 L982.2 100.4 L981.5 100.7 L980.7 101.2 L979.9 102.3 L979.2 103.5 L978.4 106.2 L977.7 100.1 L976.9 100.3 L976.2 100.7 L975.4 101.3 L974.7 102.1 L973.9 103.1 L973.2 105.1 L972.4 100.1 L971.6 100.3 L970.9 100.7 L970.1 101.1 L969.4 101.8 L968.6 102.9 L967.9 105.1 L967.1 100.1 L966.4 100.3 L965.6 100.5 L964.9 101.0 L964.1 102.0 L963.4 102.8 L962.6 105.0 L961.8 100.6 L961.1 101.1 L960.3 101.7 L959.6 102.6 L958.8 101.8 L958.1 102.7 L957.3 104.5 L956.6 102.3 L955.8 102.7 L955.1 102.5 L954.3 104.3 L953.5 103.2 L952.8 103.5 L952.0 104.5 L951.3 104.3 L950.5 104.0 L949.8 106.1 L949.0 108.5 L948.3 105.5 L947.5 105.9 L946.8 107.3 L946.0 108.3 L945.2 100.2 L944.5 100.4 L943.7 100.9 L943.0 101.5 L942.2 102.5 L941.5 103.4 L940.7 105.6 L940.0 100.1 L939.2 100.4 L938.5 100.8 L937.7 101.1 L936.9 102.4 L936.2 103.8 L935.4 105.6 L934.7 100.1 L933.9 100.4 L933.2 100.7 L932.4 101.1 L931.7 102.1 L930.9 103.5 L930.2 104.9 L929.4 100.1 L928.6 100.3 L927.9 100.6 L927.1 101.1 L926.4 102.0 L925.6 103.3 L924.9 104.5 L924.1 100.1 L923.4 100.3 L922.6 100.6 L921.9 101.1 L921.1 101.8 L920.4 103.0 L919.6 104.8 L918.8 100.7 L918.1 100.8 L917.3 101.6 L916.6 102.7 L915.8 101.7 L915.1 103.0 L914.3 104.5 L913.6 102.2 L912.8 102.5 L912.1 103.4 L911.3 104.6 L910.5 102.6 L909.8 103.5 L909.0 105.5 L908.3 104.2 L907.5 104.6 L906.8 105.1 L906.0 106.5 L905.3 105.6 L904.5 105.8 L903.8 107.4 L903.0 109.8Z" fill="#4f9a7a"/><path d="M905.0 113.6 V118.0 H909.4Z" fill="#131a2b"/><path d="M987.0 113.6 V118.0 H982.6Z" fill="#131a2b"/><rect x="973.5" y="113.4" width="6.6" height="4.6" fill="none" stroke="#1d2a30" stroke-width=".7" opacity=".8"/><path d="M975.1 114.8 H978.5 L976.8 116.6Z" fill="#131a2b"/><rect x="990.0" y="85.6" width="42.0" height="33.6" fill="#95c2ae"/><rect x="990.0" y="111.8" width="42.0" height="7.4" fill="#3f7b62"/><rect x="990.2" y="85.8" width="41.5" height="33.1" fill="none" stroke="#3f7b62" stroke-width="0.6" opacity=".8"/><rect x="990.0" y="98.8" width="42.0" height="0.5" fill="#4f9a7a" opacity=".8"/><path d="M990.0 87.6 L990.8 90.2 L991.5 91.2 L992.2 92.2 L993.0 89.8 L993.8 91.7 L994.5 93.8 L995.2 91.5 L996.0 93.0 L996.8 95.0 L997.5 94.9 L998.2 94.4 L999.0 95.7 L999.8 95.8 L1000.5 91.1 L1001.2 94.3 L1002.0 95.3 L1002.8 96.5 L1003.5 96.4 L1004.2 96.6 L1005.0 97.2 L1005.8 92.1 L1006.5 94.2 L1007.2 95.5 L1008.0 96.5 L1008.8 97.1 L1009.5 97.5 L1010.2 97.8 L1011.0 92.1 L1011.8 94.3 L1012.5 95.6 L1013.2 96.7 L1014.0 97.1 L1014.8 97.6 L1015.5 97.8 L1016.2 92.2 L1017.0 94.5 L1017.8 95.4 L1018.5 96.5 L1019.2 97.1 L1020.0 97.6 L1020.8 97.8 L1021.5 91.4 L1022.2 94.2 L1023.0 95.8 L1023.8 96.7 L1024.5 97.1 L1025.2 97.5 L1026.0 97.8 L1026.8 91.2 L1027.5 94.5 L1028.2 95.7 L1029.0 96.7 L1029.8 97.1 L1030.5 97.6 L1031.2 97.8 L1032.0 89.6 L1032.0 108.4 L1031.2 100.2 L1030.5 100.4 L1029.8 100.9 L1029.0 101.3 L1028.2 102.3 L1027.5 103.5 L1026.8 106.8 L1026.0 100.2 L1025.2 100.5 L1024.5 100.9 L1023.8 101.3 L1023.0 102.2 L1022.2 103.8 L1021.5 106.6 L1020.8 100.2 L1020.0 100.4 L1019.2 100.9 L1018.5 101.5 L1017.8 102.6 L1017.0 103.5 L1016.2 105.8 L1015.5 100.2 L1014.8 100.4 L1014.0 100.9 L1013.2 101.3 L1012.5 102.4 L1011.8 103.7 L1011.0 105.9 L1010.2 100.2 L1009.5 100.5 L1008.8 100.9 L1008.0 101.5 L1007.2 102.5 L1006.5 103.8 L1005.8 105.9 L1005.0 100.8 L1004.2 101.4 L1003.5 101.6 L1002.8 101.5 L1002.0 102.7 L1001.2 103.7 L1000.5 106.9 L999.8 102.2 L999.0 102.3 L998.2 103.6 L997.5 103.1 L996.8 103.0 L996.0 105.0 L995.2 106.5 L994.5 104.2 L993.8 106.3 L993.0 108.2 L992.2 105.8 L991.5 106.8 L990.8 107.8 L990.0 110.4Z" fill="#4f9a7a"/><path d="M992.0 113.6 V118.0 H996.4Z" fill="#131a2b"/><path d="M1030.0 113.6 V118.0 H1025.6Z" fill="#131a2b"/><rect x="1016.5" y="113.4" width="6.6" height="4.6" fill="none" stroke="#1d2a30" stroke-width=".7" opacity=".8"/><path d="M1018.1 114.8 H1021.5 L1019.8 116.6Z" fill="#131a2b"/><rect x="1033.0" y="85.6" width="42.0" height="33.6" fill="#95c2ae"/><rect x="1033.0" y="111.8" width="42.0" height="7.4" fill="#3f7b62"/><rect x="1033.2" y="85.8" width="41.5" height="33.1" fill="none" stroke="#3f7b62" stroke-width="0.6" opacity=".8"/><rect x="1033.0" y="98.8" width="42.0" height="0.5" fill="#4f9a7a" opacity=".8"/><path d="M1033.0 94.5 L1033.8 90.4 L1034.5 91.1 L1035.2 88.8 L1036.0 87.6 L1036.8 89.2 L1037.5 89.2 L1038.2 86.7 L1039.0 87.9 L1039.8 89.5 L1040.5 88.3 L1041.2 90.2 L1042.0 91.1 L1042.8 92.8 L1043.5 93.2 L1044.2 90.4 L1045.0 90.0 L1045.8 88.1 L1046.5 90.7 L1047.2 89.6 L1048.0 88.5 L1048.8 86.7 L1049.5 86.7 L1050.2 89.0 L1051.0 89.9 L1051.8 89.8 L1052.5 90.4 L1053.2 90.3 L1054.0 94.2 L1054.8 90.7 L1055.5 89.7 L1056.2 88.5 L1057.0 88.1 L1057.8 88.2 L1058.5 89.0 L1059.2 89.0 L1060.0 88.9 L1060.8 87.6 L1061.5 90.5 L1062.2 90.6 L1063.0 89.6 L1063.8 92.1 L1064.5 94.5 L1065.2 92.7 L1066.0 90.2 L1066.8 90.2 L1067.5 87.3 L1068.2 87.2 L1069.0 86.7 L1069.8 89.2 L1070.5 89.9 L1071.2 90.1 L1072.0 89.0 L1072.8 88.9 L1073.5 90.6 L1074.2 92.2 L1075.0 93.8 L1075.0 104.2 L1074.2 105.8 L1073.5 107.4 L1072.8 109.1 L1072.0 109.0 L1071.2 107.9 L1070.5 108.1 L1069.8 108.8 L1069.0 111.3 L1068.2 110.8 L1067.5 110.7 L1066.8 107.8 L1066.0 107.8 L1065.2 105.3 L1064.5 103.5 L1063.8 105.9 L1063.0 108.4 L1062.2 107.4 L1061.5 107.5 L1060.8 110.4 L1060.0 109.1 L1059.2 109.0 L1058.5 109.0 L1057.8 109.8 L1057.0 109.9 L1056.2 109.5 L1055.5 108.3 L1054.8 107.3 L1054.0 103.8 L1053.2 107.7 L1052.5 107.6 L1051.8 108.2 L1051.0 108.1 L1050.2 109.0 L1049.5 111.3 L1048.8 111.3 L1048.0 109.5 L1047.2 108.4 L1046.5 107.3 L1045.8 109.9 L1045.0 108.0 L1044.2 107.6 L1043.5 104.8 L1042.8 105.2 L1042.0 106.9 L1041.2 107.8 L1040.5 109.7 L1039.8 108.5 L1039.0 110.1 L1038.2 111.3 L1037.5 108.8 L1036.8 108.8 L1036.0 110.4 L1035.2 109.2 L1034.5 106.9 L1033.8 107.6 L1033.0 103.5Z" fill="#4f9a7a"/><path d="M1035.0 113.6 V118.0 H1039.4Z" fill="#131a2b"/><path d="M1073.0 113.6 V118.0 H1068.6Z" fill="#131a2b"/><rect x="1059.5" y="113.4" width="6.6" height="4.6" fill="none" stroke="#1d2a30" stroke-width=".7" opacity=".8"/><path d="M1061.1 114.8 H1064.5 L1062.8 116.6Z" fill="#131a2b"/><rect x="1076.0" y="85.6" width="42.0" height="33.6" fill="#95c2ae"/><rect x="1076.0" y="111.8" width="42.0" height="7.4" fill="#3f7b62"/><rect x="1076.2" y="85.8" width="41.5" height="33.1" fill="none" stroke="#3f7b62" stroke-width="0.6" opacity=".8"/><rect x="1076.0" y="98.8" width="42.0" height="0.5" fill="#4f9a7a" opacity=".8"/><path d="M1076.0 93.4 L1076.8 91.0 L1077.5 89.6 L1078.2 88.5 L1079.0 88.4 L1079.8 90.0 L1080.5 87.1 L1081.2 89.1 L1082.0 88.1 L1082.8 89.1 L1083.5 88.2 L1084.2 90.6 L1085.0 91.2 L1085.8 92.1 L1086.5 94.3 L1087.2 90.5 L1088.0 90.2 L1088.8 90.2 L1089.5 89.4 L1090.2 86.8 L1091.0 88.3 L1091.8 89.3 L1092.5 87.2 L1093.2 88.1 L1094.0 87.3 L1094.8 90.9 L1095.5 90.5 L1096.2 90.6 L1097.0 93.0 L1097.8 90.4 L1098.5 91.8 L1099.2 90.3 L1100.0 90.4 L1100.8 89.8 L1101.5 86.7 L1102.2 88.0 L1103.0 86.8 L1103.8 89.1 L1104.5 87.7 L1105.2 89.8 L1106.0 91.1 L1106.8 90.7 L1107.5 92.8 L1108.2 92.5 L1109.0 90.1 L1109.8 89.2 L1110.5 90.0 L1111.2 89.1 L1112.0 89.7 L1112.8 89.4 L1113.5 89.3 L1114.2 88.3 L1115.0 88.5 L1115.8 90.6 L1116.5 91.9 L1117.2 91.9 L1118.0 93.3 L1118.0 104.7 L1117.2 106.1 L1116.5 106.1 L1115.8 107.4 L1115.0 109.5 L1114.2 109.7 L1113.5 108.7 L1112.8 108.6 L1112.0 108.3 L1111.2 108.9 L1110.5 108.0 L1109.8 108.8 L1109.0 107.9 L1108.2 105.5 L1107.5 105.2 L1106.8 107.3 L1106.0 106.9 L1105.2 108.2 L1104.5 110.3 L1103.8 108.9 L1103.0 111.2 L1102.2 110.0 L1101.5 111.3 L1100.8 108.2 L1100.0 107.6 L1099.2 107.7 L1098.5 106.2 L1097.8 107.6 L1097.0 105.0 L1096.2 107.4 L1095.5 107.5 L1094.8 107.1 L1094.0 110.7 L1093.2 109.9 L1092.5 110.8 L1091.8 108.7 L1091.0 109.7 L1090.2 111.2 L1089.5 108.6 L1088.8 107.8 L1088.0 107.8 L1087.2 107.5 L1086.5 103.7 L1085.8 105.9 L1085.0 106.8 L1084.2 107.4 L1083.5 109.8 L1082.8 108.9 L1082.0 109.9 L1081.2 108.9 L1080.5 110.9 L1079.8 108.0 L1079.0 109.6 L1078.2 109.5 L1077.5 108.4 L1076.8 107.0 L1076.0 104.6Z" fill="#4f9a7a"/><path d="M1078.0 113.6 V118.0 H1082.4Z" fill="#131a2b"/><path d="M1116.0 113.6 V118.0 H1111.6Z" fill="#131a2b"/><rect x="1102.5" y="113.4" width="6.6" height="4.6" fill="none" stroke="#1d2a30" stroke-width=".7" opacity=".8"/><path d="M1104.1 114.8 H1107.5 L1105.8 116.6Z" fill="#131a2b"/><rect x="1119.0" y="85.6" width="20.0" height="33.6" fill="#95c2ae"/><rect x="1119.0" y="111.8" width="20.0" height="7.4" fill="#3f7b62"/><rect x="1119.2" y="85.8" width="19.5" height="33.1" fill="none" stroke="#3f7b62" stroke-width="0.6" opacity=".8"/><rect x="1119.0" y="98.8" width="20.0" height="0.5" fill="#4f9a7a" opacity=".8"/><path d="M1119.0 95.0 L1119.8 95.1 L1120.5 95.3 L1121.3 95.4 L1122.1 95.5 L1122.8 95.7 L1123.6 95.8 L1124.4 96.0 L1125.2 96.1 L1125.9 96.3 L1126.7 96.4 L1127.5 96.6 L1128.2 96.7 L1129.0 96.9 L1129.8 97.0 L1130.5 97.1 L1131.3 97.3 L1132.1 97.4 L1132.8 97.6 L1133.6 97.7 L1134.4 97.9 L1135.2 98.0 L1135.9 98.2 L1136.7 98.3 L1137.5 98.5 L1138.2 98.6 L1139.0 98.7 L1139.0 99.3 L1138.2 99.4 L1137.5 99.5 L1136.7 99.7 L1135.9 99.8 L1135.2 100.0 L1134.4 100.1 L1133.6 100.3 L1132.8 100.4 L1132.1 100.6 L1131.3 100.7 L1130.5 100.9 L1129.8 101.0 L1129.0 101.1 L1128.2 101.3 L1127.5 101.4 L1126.7 101.6 L1125.9 101.7 L1125.2 101.9 L1124.4 102.0 L1123.6 102.2 L1122.8 102.3 L1122.1 102.5 L1121.3 102.6 L1120.5 102.7 L1119.8 102.9 L1119.0 103.0Z" fill="#4f9a7a"/><path d="M1119.0 98.7 L1134.5 98.7 L1138.0 109.0 L1139.0 109.0" fill="none" stroke="#c88a40" stroke-width="1.25"/><rect x="257.0" y="120.4" width="64.0" height="33.6" fill="#95c19f"/><rect x="257.0" y="146.6" width="64.0" height="7.4" fill="#3f7b4d"/><rect x="257.2" y="120.6" width="63.5" height="33.1" fill="none" stroke="#3f7b4d" stroke-width="0.6" opacity=".8"/><rect x="257.0" y="133.6" width="64.0" height="0.5" fill="#55a577" opacity=".8"/><path d="M257.0 133.5 L257.8 133.5 L258.5 133.5 L259.3 133.5 L260.0 133.5 L260.8 133.5 L261.5 133.5 L262.3 133.5 L263.0 133.5 L263.8 133.5 L264.5 133.5 L265.3 133.5 L266.0 133.5 L266.8 133.5 L267.5 133.5 L268.3 133.5 L269.0 133.5 L269.8 133.5 L270.6 133.5 L271.3 133.5 L272.1 133.5 L272.8 133.5 L273.6 133.5 L274.3 133.5 L275.1 133.5 L275.8 133.5 L276.6 133.5 L277.3 133.5 L278.1 133.5 L278.8 133.5 L279.6 133.5 L280.3 133.5 L281.1 133.5 L281.8 133.5 L282.6 133.5 L283.4 133.5 L284.1 133.5 L284.9 133.4 L285.6 133.4 L286.4 133.4 L287.1 133.4 L287.9 133.4 L288.6 133.3 L289.4 133.3 L290.1 133.3 L290.9 133.3 L291.6 133.2 L292.4 133.2 L293.1 133.2 L293.9 133.1 L294.6 133.1 L295.4 133.1 L296.2 133.0 L296.9 133.0 L297.7 132.9 L298.4 132.9 L299.2 132.8 L299.9 132.8 L300.7 132.7 L301.4 132.7 L302.2 132.6 L302.9 132.6 L303.7 132.5 L304.4 132.5 L305.2 132.4 L305.9 132.4 L306.7 132.3 L307.4 133.5 L308.2 133.5 L309.0 133.5 L309.7 133.5 L310.5 133.5 L311.2 133.5 L312.0 133.5 L312.7 133.5 L313.5 133.5 L314.2 133.5 L315.0 133.5 L315.7 133.5 L316.5 133.5 L317.2 133.5 L318.0 133.5 L318.7 133.5 L319.5 133.5 L320.2 133.5 L321.0 133.5 L321.0 134.2 L320.2 134.2 L319.5 134.2 L318.7 134.2 L318.0 134.2 L317.2 134.2 L316.5 134.2 L315.7 134.2 L315.0 134.2 L314.2 134.2 L313.5 134.2 L312.7 134.2 L312.0 134.2 L311.2 134.2 L310.5 134.2 L309.7 134.2 L309.0 134.2 L308.2 134.2 L307.4 134.2 L306.7 135.3 L305.9 135.2 L305.2 135.2 L304.4 135.1 L303.7 135.1 L302.9 135.0 L302.2 135.0 L301.4 134.9 L300.7 134.9 L299.9 134.8 L299.2 134.8 L298.4 134.7 L297.7 134.7 L296.9 134.6 L296.2 134.6 L295.4 134.5 L294.6 134.5 L293.9 134.5 L293.1 134.4 L292.4 134.4 L291.6 134.4 L290.9 134.3 L290.1 134.3 L289.4 134.3 L288.6 134.3 L287.9 134.2 L287.1 134.2 L286.4 134.2 L285.6 134.2 L284.9 134.2 L284.1 134.2 L283.4 134.2 L282.6 134.2 L281.8 134.2 L281.1 134.2 L280.3 134.2 L279.6 134.2 L278.8 134.2 L278.1 134.2 L277.3 134.2 L276.6 134.2 L275.8 134.2 L275.1 134.2 L274.3 134.2 L273.6 134.2 L272.8 134.2 L272.1 134.2 L271.3 134.2 L270.6 134.2 L269.8 134.2 L269.0 134.2 L268.3 134.2 L267.5 134.2 L266.8 134.2 L266.0 134.2 L265.3 134.2 L264.5 134.2 L263.8 134.2 L263.0 134.2 L262.3 134.2 L261.5 134.2 L260.8 134.2 L260.0 134.2 L259.3 134.2 L258.5 134.2 L257.8 134.2 L257.0 134.2Z" fill="#55a577"/><path d="M259.0 148.4 V152.8 H263.4Z" fill="#131a2b"/><path d="M319.0 148.4 V152.8 H314.6Z" fill="#131a2b"/><rect x="305.5" y="148.2" width="6.6" height="4.6" fill="none" stroke="#1d2a30" stroke-width=".7" opacity=".8"/><path d="M307.1 149.6 H310.5 L308.8 151.4Z" fill="#131a2b"/><rect x="623.0" y="120.4" width="42.0" height="33.6" fill="#95c2ae"/><rect x="623.0" y="146.6" width="42.0" height="7.4" fill="#3f7b62"/><rect x="623.2" y="120.6" width="41.5" height="33.1" fill="none" stroke="#3f7b62" stroke-width="0.6" opacity=".8"/><rect x="623.0" y="133.6" width="42.0" height="0.5" fill="#4f9a7a" opacity=".8"/><path d="M623.0 133.5 L623.8 133.5 L624.5 133.5 L625.2 133.5 L626.0 133.5 L626.8 133.5 L627.5 133.5 L628.2 133.5 L629.0 133.5 L629.8 133.5 L630.5 133.5 L631.2 133.5 L632.0 133.5 L632.8 133.5 L633.5 133.5 L634.2 133.5 L635.0 133.5 L635.8 133.5 L636.5 133.5 L637.2 133.3 L638.0 132.9 L638.8 132.3 L639.5 131.6 L640.2 130.7 L641.0 129.8 L641.8 128.7 L642.5 127.6 L643.2 126.4 L644.0 125.1 L644.8 123.7 L645.5 123.1 L646.2 124.4 L647.0 125.5 L647.8 126.5 L648.5 127.3 L649.2 128.1 L650.0 128.8 L650.8 129.4 L651.5 129.9 L652.2 130.3 L653.0 130.7 L653.8 131.1 L654.5 131.4 L655.2 131.7 L656.0 131.9 L656.8 132.2 L657.5 132.4 L658.2 132.5 L659.0 132.7 L659.8 132.8 L660.5 132.9 L661.2 133.0 L662.0 133.1 L662.8 133.2 L663.5 133.3 L664.2 133.3 L665.0 133.4 L665.0 134.2 L664.2 134.3 L663.5 134.3 L662.8 134.4 L662.0 134.5 L661.2 134.6 L660.5 134.7 L659.8 134.8 L659.0 134.9 L658.2 135.1 L657.5 135.2 L656.8 135.4 L656.0 135.7 L655.2 135.9 L654.5 136.2 L653.8 136.5 L653.0 136.9 L652.2 137.3 L651.5 137.7 L650.8 138.2 L650.0 138.8 L649.2 139.5 L648.5 140.3 L647.8 141.1 L647.0 142.1 L646.2 143.2 L645.5 144.5 L644.8 143.9 L644.0 142.5 L643.2 141.2 L642.5 140.0 L641.8 138.9 L641.0 137.8 L640.2 136.9 L639.5 136.0 L638.8 135.3 L638.0 134.7 L637.2 134.3 L636.5 134.2 L635.8 134.2 L635.0 134.2 L634.2 134.2 L633.5 134.2 L632.8 134.2 L632.0 134.2 L631.2 134.2 L630.5 134.2 L629.8 134.2 L629.0 134.2 L628.2 134.2 L627.5 134.2 L626.8 134.2 L626.0 134.2 L625.2 134.2 L624.5 134.2 L623.8 134.2 L623.0 134.2Z" fill="#4f9a7a"/><path d="M625.0 148.4 V152.8 H629.4Z" fill="#131a2b"/><path d="M663.0 148.4 V152.8 H658.6Z" fill="#131a2b"/><rect x="649.5" y="148.2" width="6.6" height="4.6" fill="none" stroke="#1d2a30" stroke-width=".7" opacity=".8"/><path d="M651.1 149.6 H654.5 L652.8 151.4Z" fill="#131a2b"/><rect x="796.0" y="120.4" width="42.0" height="33.6" fill="#95c2ae"/><rect x="796.0" y="146.6" width="42.0" height="7.4" fill="#3f7b62"/><rect x="796.2" y="120.6" width="41.5" height="33.1" fill="none" stroke="#3f7b62" stroke-width="0.6" opacity=".8"/><rect x="796.0" y="133.6" width="42.0" height="0.5" fill="#4f9a7a" opacity=".8"/><path d="M796.0 133.5 L796.8 133.5 L797.5 133.5 L798.2 133.5 L799.0 133.5 L799.8 133.5 L800.5 133.5 L801.2 133.5 L802.0 133.5 L802.8 133.5 L803.5 133.5 L804.2 133.5 L805.0 133.5 L805.8 133.5 L806.5 133.5 L807.2 133.5 L808.0 133.5 L808.8 133.5 L809.5 133.5 L810.2 133.3 L811.0 132.9 L811.8 132.3 L812.5 131.6 L813.2 130.7 L814.0 129.8 L814.8 128.7 L815.5 127.6 L816.2 126.4 L817.0 125.1 L817.8 123.7 L818.5 123.1 L819.2 124.4 L820.0 125.5 L820.8 126.5 L821.5 127.3 L822.2 128.1 L823.0 128.8 L823.8 129.4 L824.5 129.9 L825.2 130.3 L826.0 130.7 L826.8 131.1 L827.5 131.4 L828.2 131.7 L829.0 131.9 L829.8 132.2 L830.5 132.4 L831.2 132.5 L832.0 132.7 L832.8 132.8 L833.5 132.9 L834.2 133.0 L835.0 133.1 L835.8 133.2 L836.5 133.3 L837.2 133.3 L838.0 133.4 L838.0 134.2 L837.2 134.3 L836.5 134.3 L835.8 134.4 L835.0 134.5 L834.2 134.6 L833.5 134.7 L832.8 134.8 L832.0 134.9 L831.2 135.1 L830.5 135.2 L829.8 135.4 L829.0 135.7 L828.2 135.9 L827.5 136.2 L826.8 136.5 L826.0 136.9 L825.2 137.3 L824.5 137.7 L823.8 138.2 L823.0 138.8 L822.2 139.5 L821.5 140.3 L820.8 141.1 L820.0 142.1 L819.2 143.2 L818.5 144.5 L817.8 143.9 L817.0 142.5 L816.2 141.2 L815.5 140.0 L814.8 138.9 L814.0 137.8 L813.2 136.9 L812.5 136.0 L811.8 135.3 L811.0 134.7 L810.2 134.3 L809.5 134.2 L808.8 134.2 L808.0 134.2 L807.2 134.2 L806.5 134.2 L805.8 134.2 L805.0 134.2 L804.2 134.2 L803.5 134.2 L802.8 134.2 L802.0 134.2 L801.2 134.2 L800.5 134.2 L799.8 134.2 L799.0 134.2 L798.2 134.2 L797.5 134.2 L796.8 134.2 L796.0 134.2Z" fill="#4f9a7a"/><path d="M798.0 148.4 V152.8 H802.4Z" fill="#131a2b"/><path d="M836.0 148.4 V152.8 H831.6Z" fill="#131a2b"/><rect x="822.5" y="148.2" width="6.6" height="4.6" fill="none" stroke="#1d2a30" stroke-width=".7" opacity=".8"/><path d="M824.1 149.6 H827.5 L825.8 151.4Z" fill="#131a2b"/><rect x="839.0" y="120.4" width="42.0" height="33.6" fill="#95c19f"/><rect x="839.0" y="146.6" width="42.0" height="7.4" fill="#3f7b4d"/><rect x="839.2" y="120.6" width="41.5" height="33.1" fill="none" stroke="#3f7b4d" stroke-width="0.6" opacity=".8"/><rect x="839.0" y="133.6" width="42.0" height="0.5" fill="#55a577" opacity=".8"/><path d="M839.0 133.5 L839.8 133.5 L840.5 133.5 L841.2 133.5 L842.0 133.5 L842.8 133.5 L843.5 133.5 L844.2 133.5 L845.0 133.4 L845.8 133.3 L846.5 133.2 L847.2 133.0 L848.0 132.9 L848.8 132.7 L849.5 132.6 L850.2 132.4 L851.0 132.3 L851.8 132.1 L852.5 131.9 L853.2 131.7 L854.0 131.5 L854.8 131.3 L855.5 131.1 L856.2 130.9 L857.0 130.7 L857.8 130.5 L858.5 130.2 L859.2 130.0 L860.0 132.3 L860.8 132.7 L861.5 133.0 L862.2 133.2 L863.0 133.3 L863.8 133.4 L864.5 133.5 L865.2 133.5 L866.0 133.5 L866.8 133.5 L867.5 133.5 L868.2 133.5 L869.0 133.5 L869.8 133.5 L870.5 133.5 L871.2 133.5 L872.0 133.5 L872.8 133.5 L873.5 133.5 L874.2 133.5 L875.0 133.5 L875.8 133.5 L876.5 133.5 L877.2 133.5 L878.0 133.5 L878.8 133.5 L879.5 133.5 L880.2 133.5 L881.0 133.5 L881.0 134.2 L880.2 134.2 L879.5 134.2 L878.8 134.2 L878.0 134.2 L877.2 134.2 L876.5 134.2 L875.8 134.2 L875.0 134.2 L874.2 134.2 L873.5 134.2 L872.8 134.2 L872.0 134.2 L871.2 134.2 L870.5 134.2 L869.8 134.2 L869.0 134.2 L868.2 134.2 L867.5 134.2 L866.8 134.2 L866.0 134.2 L865.2 134.2 L864.5 134.2 L863.8 134.2 L863.0 134.3 L862.2 134.4 L861.5 134.6 L860.8 134.9 L860.0 135.3 L859.2 137.6 L858.5 137.4 L857.8 137.1 L857.0 136.9 L856.2 136.7 L855.5 136.5 L854.8 136.3 L854.0 136.1 L853.2 135.9 L852.5 135.7 L851.8 135.5 L851.0 135.3 L850.2 135.2 L849.5 135.0 L848.8 134.9 L848.0 134.7 L847.2 134.6 L846.5 134.4 L845.8 134.3 L845.0 134.2 L844.2 134.2 L843.5 134.2 L842.8 134.2 L842.0 134.2 L841.2 134.2 L840.5 134.2 L839.8 134.2 L839.0 134.2Z" fill="#55a577"/><path d="M841.0 148.4 V152.8 H845.4Z" fill="#131a2b"/><path d="M879.0 148.4 V152.8 H874.6Z" fill="#131a2b"/><rect x="865.5" y="148.2" width="6.6" height="4.6" fill="none" stroke="#1d2a30" stroke-width=".7" opacity=".8"/><path d="M867.1 149.6 H870.5 L868.8 151.4Z" fill="#131a2b"/><rect x="1011.0" y="120.4" width="31.0" height="33.6" fill="#95c19f"/><rect x="1011.0" y="146.6" width="31.0" height="7.4" fill="#3f7b4d"/><rect x="1011.2" y="120.6" width="30.5" height="33.1" fill="none" stroke="#3f7b4d" stroke-width="0.6" opacity=".8"/><rect x="1011.0" y="133.6" width="31.0" height="0.5" fill="#55a577" opacity=".8"/><path d="M1011.0 133.5 L1011.8 133.5 L1012.5 133.5 L1013.3 133.5 L1014.0 133.5 L1014.8 133.5 L1015.5 133.4 L1016.3 133.2 L1017.0 133.0 L1017.8 132.9 L1018.6 132.6 L1019.3 132.4 L1020.1 132.2 L1020.8 131.9 L1021.6 131.7 L1022.3 131.4 L1023.1 131.1 L1023.9 130.8 L1024.6 130.5 L1025.4 130.2 L1026.1 129.9 L1026.9 132.6 L1027.6 133.0 L1028.4 133.2 L1029.1 133.4 L1029.9 133.5 L1030.7 133.5 L1031.4 133.5 L1032.2 133.5 L1032.9 133.5 L1033.7 133.5 L1034.4 133.5 L1035.2 133.5 L1036.0 133.5 L1036.7 133.5 L1037.5 133.5 L1038.2 133.5 L1039.0 133.5 L1039.7 133.5 L1040.5 133.5 L1041.2 133.5 L1042.0 133.5 L1042.0 134.2 L1041.2 134.2 L1040.5 134.2 L1039.7 134.2 L1039.0 134.2 L1038.2 134.2 L1037.5 134.2 L1036.7 134.2 L1036.0 134.2 L1035.2 134.2 L1034.4 134.2 L1033.7 134.2 L1032.9 134.2 L1032.2 134.2 L1031.4 134.2 L1030.7 134.2 L1029.9 134.2 L1029.1 134.2 L1028.4 134.4 L1027.6 134.6 L1026.9 135.0 L1026.1 137.7 L1025.4 137.4 L1024.6 137.1 L1023.9 136.8 L1023.1 136.5 L1022.3 136.2 L1021.6 135.9 L1020.8 135.7 L1020.1 135.4 L1019.3 135.2 L1018.6 135.0 L1017.8 134.7 L1017.0 134.6 L1016.3 134.4 L1015.5 134.2 L1014.8 134.2 L1014.0 134.2 L1013.3 134.2 L1012.5 134.2 L1011.8 134.2 L1011.0 134.2Z" fill="#55a577"/><path d="M1013.0 148.4 V152.8 H1017.4Z" fill="#131a2b"/><path d="M1040.0 148.4 V152.8 H1035.6Z" fill="#131a2b"/><rect x="1026.5" y="148.2" width="6.6" height="4.6" fill="none" stroke="#1d2a30" stroke-width=".7" opacity=".8"/><path d="M1028.1 149.6 H1031.5 L1029.8 151.4Z" fill="#131a2b"/><rect x="1076.0" y="120.4" width="42.0" height="33.6" fill="#95c19f"/><rect x="1076.0" y="146.6" width="42.0" height="7.4" fill="#3f7b4d"/><rect x="1076.2" y="120.6" width="41.5" height="33.1" fill="none" stroke="#3f7b4d" stroke-width="0.6" opacity=".8"/><rect x="1076.0" y="133.6" width="42.0" height="0.5" fill="#55a577" opacity=".8"/><path d="M1076.0 132.1 L1076.8 132.0 L1077.5 132.1 L1078.2 131.9 L1079.0 132.0 L1079.8 132.1 L1080.5 132.1 L1081.2 132.0 L1082.0 132.0 L1082.8 131.9 L1083.5 132.1 L1084.2 132.1 L1085.0 131.9 L1085.8 132.0 L1086.5 132.1 L1087.2 132.0 L1088.0 131.8 L1088.8 132.0 L1089.5 131.9 L1090.2 132.0 L1091.0 132.0 L1091.8 131.8 L1092.5 131.8 L1093.2 132.0 L1094.0 132.1 L1094.8 131.9 L1095.5 132.1 L1096.2 132.2 L1097.0 131.8 L1097.8 132.0 L1098.5 131.9 L1099.2 132.0 L1100.0 131.8 L1100.8 132.0 L1101.5 132.1 L1102.2 132.2 L1103.0 132.0 L1103.8 131.9 L1104.5 131.8 L1105.2 132.1 L1106.0 131.9 L1106.8 132.0 L1107.5 132.0 L1108.2 132.1 L1109.0 132.1 L1109.8 132.0 L1110.5 131.8 L1111.2 132.1 L1112.0 132.0 L1112.8 131.9 L1113.5 131.8 L1114.2 132.1 L1115.0 132.1 L1115.8 131.8 L1116.5 131.8 L1117.2 132.0 L1118.0 132.1 L1118.0 135.5 L1117.2 135.6 L1116.5 135.8 L1115.8 135.8 L1115.0 135.5 L1114.2 135.5 L1113.5 135.8 L1112.8 135.7 L1112.0 135.6 L1111.2 135.5 L1110.5 135.8 L1109.8 135.6 L1109.0 135.5 L1108.2 135.5 L1107.5 135.6 L1106.8 135.6 L1106.0 135.7 L1105.2 135.5 L1104.5 135.8 L1103.8 135.7 L1103.0 135.6 L1102.2 135.4 L1101.5 135.5 L1100.8 135.6 L1100.0 135.8 L1099.2 135.6 L1098.5 135.7 L1097.8 135.6 L1097.0 135.8 L1096.2 135.4 L1095.5 135.5 L1094.8 135.7 L1094.0 135.5 L1093.2 135.6 L1092.5 135.8 L1091.8 135.8 L1091.0 135.6 L1090.2 135.6 L1089.5 135.7 L1088.8 135.6 L1088.0 135.8 L1087.2 135.6 L1086.5 135.5 L1085.8 135.6 L1085.0 135.7 L1084.2 135.5 L1083.5 135.5 L1082.8 135.7 L1082.0 135.6 L1081.2 135.6 L1080.5 135.5 L1079.8 135.5 L1079.0 135.6 L1078.2 135.7 L1077.5 135.5 L1076.8 135.6 L1076.0 135.5Z" fill="#55a577"/><path d="M1078.0 148.4 V152.8 H1082.4Z" fill="#131a2b"/><path d="M1116.0 148.4 V152.8 H1111.6Z" fill="#131a2b"/><rect x="1102.5" y="148.2" width="6.6" height="4.6" fill="none" stroke="#1d2a30" stroke-width=".7" opacity=".8"/><path d="M1104.1 149.6 H1107.5 L1105.8 151.4Z" fill="#131a2b"/><rect x="128.0" y="155.2" width="171.0" height="33.6" fill="#95b3c4"/><rect x="128.0" y="181.4" width="171.0" height="7.4" fill="#3f6d88"/><rect x="128.2" y="155.4" width="170.5" height="33.1" fill="none" stroke="#3f6d88" stroke-width="0.6" opacity=".8"/><rect x="128.0" y="168.4" width="171.0" height="0.5" fill="#4a7f9e" opacity=".8"/><path d="M128.0 163.7 L128.8 163.4 L129.5 162.5 L130.2 164.0 L131.0 162.6 L131.8 163.8 L132.5 163.8 L133.2 163.7 L134.0 163.4 L134.8 163.8 L135.5 162.6 L136.2 163.7 L137.0 164.5 L137.8 163.4 L138.5 163.2 L139.2 164.3 L140.0 163.8 L140.8 163.6 L141.5 163.9 L142.2 162.5 L143.0 164.0 L143.8 164.1 L144.5 162.7 L145.2 164.0 L146.0 163.8 L146.8 163.9 L147.5 163.0 L148.2 164.1 L149.0 163.0 L149.8 163.5 L150.5 164.3 L151.2 163.0 L152.0 163.3 L152.8 164.0 L153.5 163.3 L154.2 163.3 L155.0 164.8 L155.8 163.0 L156.5 163.2 L157.2 164.5 L158.0 162.7 L158.8 162.7 L159.5 164.2 L160.2 163.7 L161.0 163.2 L161.8 164.7 L162.5 163.8 L163.2 163.3 L164.0 164.7 L164.8 163.3 L165.5 163.2 L166.2 164.8 L167.0 162.9 L167.8 163.9 L168.5 163.9 L169.2 162.7 L170.0 163.2 L170.8 164.8 L171.5 163.2 L172.2 163.4 L173.0 163.6 L173.8 163.8 L174.5 162.6 L175.2 163.6 L176.0 162.8 L176.8 162.6 L177.5 164.6 L178.2 162.3 L179.0 163.2 L179.8 163.6 L180.5 162.4 L181.2 163.8 L182.0 163.8 L182.8 162.4 L183.5 163.9 L184.2 164.4 L185.0 162.7 L185.8 163.8 L186.5 163.7 L187.2 163.6 L188.0 162.6 L188.8 164.6 L189.5 163.2 L190.2 162.4 L191.0 164.6 L191.8 163.6 L192.5 163.2 L193.2 164.4 L194.0 164.0 L194.8 163.7 L195.5 164.6 L196.2 162.4 L197.0 162.9 L197.8 163.7 L198.5 163.8 L199.2 162.7 L200.0 164.7 L200.8 163.1 L201.5 162.9 L202.2 164.4 L203.0 162.5 L203.8 163.1 L204.5 164.1 L205.2 162.5 L206.0 163.9 L206.8 163.6 L207.5 163.0 L208.2 163.4 L209.0 163.8 L209.8 163.6 L210.5 162.3 L211.2 164.1 L212.0 163.4 L212.8 162.7 L213.5 164.3 L214.2 163.8 L215.0 162.8 L215.8 164.8 L216.5 162.6 L217.2 163.6 L218.0 164.0 L218.8 162.3 L219.5 163.0 L220.2 164.0 L221.0 163.5 L221.8 164.1 L222.5 164.8 L223.2 163.8 L224.0 163.0 L224.8 164.3 L225.5 163.2 L226.2 162.5 L227.0 164.7 L227.8 163.7 L228.5 162.9 L229.2 164.8 L230.0 164.1 L230.8 163.4 L231.5 164.7 L232.2 163.4 L233.0 163.7 L233.8 164.1 L234.5 163.0 L235.2 163.7 L236.0 164.0 L236.8 163.2 L237.5 163.8 L238.2 163.6 L239.0 163.6 L239.8 163.8 L240.5 164.7 L241.2 162.9 L242.0 162.5 L242.8 163.8 L243.5 163.4 L244.2 163.6 L245.0 164.8 L245.8 162.9 L246.5 163.1 L247.2 164.4 L248.0 162.9 L248.8 163.3 L249.5 163.6 L250.2 162.8 L251.0 163.6 L251.8 163.7 L252.5 164.0 L253.2 163.1 L254.0 164.3 L254.8 163.6 L255.5 164.0 L256.2 163.8 L257.0 164.0 L257.8 163.1 L258.5 163.6 L259.2 163.8 L260.0 163.7 L260.8 164.1 L261.5 163.2 L262.2 162.9 L263.0 163.8 L263.8 163.8 L264.5 163.5 L265.2 164.4 L266.0 164.0 L266.8 162.5 L267.5 163.8 L268.2 162.8 L269.0 164.1 L269.8 163.8 L270.5 162.7 L271.2 163.2 L272.0 163.9 L272.8 163.3 L273.5 163.7 L274.2 164.7 L275.0 163.7 L275.8 164.0 L276.5 164.4 L277.2 162.7 L278.0 162.8 L278.8 163.8 L279.5 162.8 L280.2 163.6 L281.0 164.1 L281.8 163.3 L282.5 162.7 L283.2 164.2 L284.0 163.6 L284.8 162.9 L285.5 163.6 L286.2 163.7 L287.0 162.5 L287.8 164.8 L288.5 163.6 L289.2 163.6 L290.0 163.9 L290.8 162.4 L291.5 162.7 L292.2 164.4 L293.0 162.5 L293.8 163.5 L294.5 164.5 L295.2 162.5 L296.0 163.0 L296.8 163.9 L297.5 162.9 L298.2 162.3 L299.0 164.2 L299.0 173.0 L298.2 174.9 L297.5 174.3 L296.8 173.3 L296.0 174.2 L295.2 174.7 L294.5 172.7 L293.8 173.7 L293.0 174.7 L292.2 172.8 L291.5 174.5 L290.8 174.8 L290.0 173.3 L289.2 173.6 L288.5 173.6 L287.8 172.4 L287.0 174.7 L286.2 173.5 L285.5 173.6 L284.8 174.3 L284.0 173.6 L283.2 173.0 L282.5 174.5 L281.8 173.9 L281.0 173.1 L280.2 173.6 L279.5 174.4 L278.8 173.4 L278.0 174.4 L277.2 174.5 L276.5 172.8 L275.8 173.2 L275.0 173.5 L274.2 172.5 L273.5 173.5 L272.8 173.9 L272.0 173.3 L271.2 174.0 L270.5 174.5 L269.8 173.4 L269.0 173.1 L268.2 174.4 L267.5 173.4 L266.8 174.7 L266.0 173.2 L265.2 172.8 L264.5 173.7 L263.8 173.4 L263.0 173.4 L262.2 174.3 L261.5 174.0 L260.8 173.1 L260.0 173.5 L259.2 173.4 L258.5 173.6 L257.8 174.1 L257.0 173.2 L256.2 173.4 L255.5 173.2 L254.8 173.6 L254.0 172.9 L253.2 174.1 L252.5 173.2 L251.8 173.5 L251.0 173.6 L250.2 174.4 L249.5 173.6 L248.8 173.9 L248.0 174.3 L247.2 172.8 L246.5 174.1 L245.8 174.3 L245.0 172.4 L244.2 173.6 L243.5 173.8 L242.8 173.4 L242.0 174.7 L241.2 174.3 L240.5 172.5 L239.8 173.4 L239.0 173.6 L238.2 173.6 L237.5 173.4 L236.8 174.0 L236.0 173.2 L235.2 173.5 L234.5 174.2 L233.8 173.1 L233.0 173.5 L232.2 173.8 L231.5 172.5 L230.8 173.8 L230.0 173.1 L229.2 172.4 L228.5 174.3 L227.8 173.5 L227.0 172.5 L226.2 174.7 L225.5 174.0 L224.8 172.9 L224.0 174.2 L223.2 173.4 L222.5 172.4 L221.8 173.1 L221.0 173.7 L220.2 173.2 L219.5 174.2 L218.8 174.9 L218.0 173.2 L217.2 173.6 L216.5 174.6 L215.8 172.4 L215.0 174.4 L214.2 173.4 L213.5 172.9 L212.8 174.5 L212.0 173.8 L211.2 173.1 L210.5 174.9 L209.8 173.6 L209.0 173.4 L208.2 173.8 L207.5 174.2 L206.8 173.6 L206.0 173.3 L205.2 174.7 L204.5 173.1 L203.8 174.1 L203.0 174.7 L202.2 172.8 L201.5 174.3 L200.8 174.1 L200.0 172.5 L199.2 174.5 L198.5 173.4 L197.8 173.5 L197.0 174.3 L196.2 174.8 L195.5 172.6 L194.8 173.5 L194.0 173.2 L193.2 172.8 L192.5 174.0 L191.8 173.6 L191.0 172.6 L190.2 174.8 L189.5 174.0 L188.8 172.6 L188.0 174.6 L187.2 173.6 L186.5 173.5 L185.8 173.4 L185.0 174.5 L184.2 172.8 L183.5 173.3 L182.8 174.8 L182.0 173.4 L181.2 173.4 L180.5 174.8 L179.8 173.6 L179.0 174.0 L178.2 174.9 L177.5 172.6 L176.8 174.6 L176.0 174.4 L175.2 173.6 L174.5 174.6 L173.8 173.4 L173.0 173.6 L172.2 173.8 L171.5 174.0 L170.8 172.4 L170.0 174.0 L169.2 174.5 L168.5 173.3 L167.8 173.3 L167.0 174.3 L166.2 172.4 L165.5 174.0 L164.8 173.9 L164.0 172.5 L163.2 173.9 L162.5 173.4 L161.8 172.5 L161.0 174.0 L160.2 173.5 L159.5 173.0 L158.8 174.5 L158.0 174.5 L157.2 172.7 L156.5 174.0 L155.8 174.2 L155.0 172.4 L154.2 173.9 L153.5 173.9 L152.8 173.2 L152.0 173.9 L151.2 174.2 L150.5 172.9 L149.8 173.7 L149.0 174.2 L148.2 173.1 L147.5 174.2 L146.8 173.3 L146.0 173.4 L145.2 173.2 L144.5 174.5 L143.8 173.1 L143.0 173.2 L142.2 174.7 L141.5 173.3 L140.8 173.6 L140.0 173.4 L139.2 172.9 L138.5 174.0 L137.8 173.8 L137.0 172.7 L136.2 173.5 L135.5 174.6 L134.8 173.4 L134.0 173.8 L133.2 173.5 L132.5 173.4 L131.8 173.4 L131.0 174.6 L130.2 173.2 L129.5 174.7 L128.8 173.8 L128.0 173.5Z" fill="#4a7f9e"/><path d="M130.0 183.2 V187.6 H134.4Z" fill="#131a2b"/><path d="M297.0 183.2 V187.6 H292.6Z" fill="#131a2b"/><rect x="283.5" y="183.0" width="6.6" height="4.6" fill="none" stroke="#1d2a30" stroke-width=".7" opacity=".8"/><path d="M285.1 184.4 H288.5 L286.8 186.2Z" fill="#131a2b"/><rect x="559.0" y="155.2" width="74.0" height="33.6" fill="#95b3c4"/><rect x="559.0" y="181.4" width="74.0" height="7.4" fill="#3f6d88"/><rect x="559.2" y="155.4" width="73.5" height="33.1" fill="none" stroke="#3f6d88" stroke-width="0.6" opacity=".8"/><rect x="559.0" y="168.4" width="74.0" height="0.5" fill="#4a7f9e" opacity=".8"/><path d="M559.0 163.8 L559.8 162.8 L560.5 162.6 L561.3 164.3 L562.0 162.8 L562.8 163.1 L563.5 164.4 L564.3 163.7 L565.0 163.0 L565.8 164.7 L566.6 162.5 L567.3 163.8 L568.1 164.8 L568.8 163.9 L569.6 162.4 L570.3 164.4 L571.1 163.8 L571.8 164.0 L572.6 164.8 L573.3 162.8 L574.1 162.9 L574.9 163.9 L575.6 162.8 L576.4 163.9 L577.1 164.1 L577.9 163.4 L578.6 162.6 L579.4 163.8 L580.1 162.5 L580.9 163.9 L581.7 163.7 L582.4 162.5 L583.2 162.4 L583.9 164.7 L584.7 163.7 L585.4 163.9 L586.2 164.8 L586.9 162.6 L587.7 162.6 L588.4 164.0 L589.2 162.6 L590.0 162.9 L590.7 164.5 L591.5 163.9 L592.2 163.9 L593.0 163.9 L593.7 163.7 L594.5 163.5 L595.2 164.3 L596.0 164.0 L596.8 163.6 L597.5 164.5 L598.3 162.8 L599.0 163.4 L599.8 164.4 L600.5 162.4 L601.3 163.2 L602.0 163.7 L602.8 163.0 L603.6 164.0 L604.3 164.3 L605.1 163.3 L605.8 162.7 L606.6 164.4 L607.3 162.8 L608.1 163.1 L608.8 164.5 L609.6 162.5 L610.3 163.9 L611.1 163.8 L611.9 163.8 L612.6 164.1 L613.4 164.6 L614.1 162.7 L614.9 162.3 L615.6 164.8 L616.4 163.2 L617.1 163.2 L617.9 163.8 L618.7 163.7 L619.4 163.2 L620.2 164.4 L620.9 162.6 L621.7 163.6 L622.4 163.6 L623.2 163.6 L623.9 163.7 L624.7 163.9 L625.4 163.2 L626.2 163.9 L627.0 164.0 L627.7 163.9 L628.5 162.7 L629.2 163.9 L630.0 162.7 L630.7 163.0 L631.5 164.4 L632.2 163.4 L633.0 163.4 L633.0 173.8 L632.2 173.8 L631.5 172.8 L630.7 174.2 L630.0 174.5 L629.2 173.3 L628.5 174.5 L627.7 173.3 L627.0 173.2 L626.2 173.3 L625.4 174.0 L624.7 173.3 L623.9 173.5 L623.2 173.6 L622.4 173.6 L621.7 173.6 L620.9 174.6 L620.2 172.8 L619.4 174.0 L618.7 173.5 L617.9 173.4 L617.1 174.0 L616.4 174.0 L615.6 172.4 L614.9 174.9 L614.1 174.5 L613.4 172.6 L612.6 173.1 L611.9 173.4 L611.1 173.4 L610.3 173.3 L609.6 174.7 L608.8 172.7 L608.1 174.1 L607.3 174.4 L606.6 172.8 L605.8 174.5 L605.1 173.9 L604.3 172.9 L603.6 173.2 L602.8 174.2 L602.0 173.5 L601.3 174.0 L600.5 174.8 L599.8 172.8 L599.0 173.8 L598.3 174.4 L597.5 172.7 L596.8 173.6 L596.0 173.2 L595.2 172.9 L594.5 173.7 L593.7 173.5 L593.0 173.3 L592.2 173.3 L591.5 173.3 L590.7 172.7 L590.0 174.3 L589.2 174.6 L588.4 173.2 L587.7 174.6 L586.9 174.6 L586.2 172.4 L585.4 173.3 L584.7 173.5 L583.9 172.5 L583.2 174.8 L582.4 174.7 L581.7 173.5 L580.9 173.3 L580.1 174.7 L579.4 173.4 L578.6 174.6 L577.9 173.8 L577.1 173.1 L576.4 173.3 L575.6 174.4 L574.9 173.3 L574.1 174.3 L573.3 174.4 L572.6 172.4 L571.8 173.2 L571.1 173.4 L570.3 172.8 L569.6 174.8 L568.8 173.3 L568.1 172.4 L567.3 173.4 L566.6 174.7 L565.8 172.5 L565.0 174.2 L564.3 173.5 L563.5 172.8 L562.8 174.1 L562.0 174.4 L561.3 172.9 L560.5 174.6 L559.8 174.4 L559.0 173.4Z" fill="#4a7f9e"/><path d="M559.0 168.6 L633.0 168.6" fill="none" stroke="#c88a40" stroke-width="1.25"/><path d="M561.0 183.2 V187.6 H565.4Z" fill="#131a2b"/><path d="M631.0 183.2 V187.6 H626.6Z" fill="#131a2b"/><rect x="617.5" y="183.0" width="6.6" height="4.6" fill="none" stroke="#1d2a30" stroke-width=".7" opacity=".8"/><path d="M619.1 184.4 H622.5 L620.8 186.2Z" fill="#131a2b"/><rect x="731.0" y="155.2" width="85.0" height="33.6" fill="#95b3c4"/><rect x="731.0" y="181.4" width="85.0" height="7.4" fill="#3f6d88"/><rect x="731.2" y="155.4" width="84.5" height="33.1" fill="none" stroke="#3f6d88" stroke-width="0.6" opacity=".8"/><rect x="731.0" y="168.4" width="85.0" height="0.5" fill="#4a7f9e" opacity=".8"/><path d="M731.0 158.5 L731.8 163.6 L732.5 164.3 L733.3 166.4 L734.0 163.6 L734.8 165.2 L735.5 165.8 L736.3 166.9 L737.0 167.2 L737.8 167.5 L738.5 167.8 L739.3 163.8 L740.0 165.4 L740.8 166.3 L741.5 167.0 L742.3 162.9 L743.0 165.2 L743.8 166.3 L744.5 165.8 L745.3 166.3 L746.0 167.0 L746.8 167.5 L747.5 167.6 L748.3 167.8 L749.1 167.9 L749.8 163.9 L750.6 165.9 L751.3 166.5 L752.1 167.0 L752.8 162.7 L753.6 164.8 L754.3 165.9 L755.1 162.0 L755.8 164.1 L756.6 166.2 L757.3 166.9 L758.1 167.2 L758.8 167.5 L759.6 167.7 L760.3 163.8 L761.1 165.2 L761.8 166.4 L762.6 166.7 L763.3 162.1 L764.1 165.1 L764.8 165.6 L765.6 165.6 L766.4 166.3 L767.1 166.8 L767.9 167.3 L768.6 167.3 L769.4 167.7 L770.1 167.9 L770.9 163.2 L771.6 165.6 L772.4 166.5 L773.1 167.0 L773.9 162.5 L774.6 164.0 L775.4 165.2 L776.1 166.3 L776.9 164.1 L777.6 165.5 L778.4 166.6 L779.1 167.1 L779.9 167.4 L780.6 167.7 L781.4 167.9 L782.2 164.2 L782.9 166.0 L783.7 166.7 L784.4 161.3 L785.2 164.3 L785.9 165.9 L786.7 166.5 L787.4 165.7 L788.2 166.7 L788.9 167.3 L789.7 167.2 L790.4 167.6 L791.2 167.8 L791.9 168.0 L792.7 165.1 L793.4 166.0 L794.2 167.0 L794.9 160.8 L795.7 162.9 L796.4 164.9 L797.2 166.2 L797.9 164.0 L798.7 165.4 L799.5 166.4 L800.2 166.7 L801.0 167.3 L801.7 167.6 L802.5 167.8 L803.2 164.7 L804.0 165.6 L804.7 166.5 L805.5 161.4 L806.2 163.7 L807.0 164.9 L807.7 166.7 L808.5 165.7 L809.2 166.8 L810.0 167.1 L810.7 167.0 L811.5 167.6 L812.2 167.9 L813.0 167.9 L813.7 164.4 L814.5 165.6 L815.2 166.7 L816.0 159.2 L816.0 178.0 L815.2 170.5 L814.5 171.6 L813.7 172.8 L813.0 169.3 L812.2 169.3 L811.5 169.6 L810.7 170.2 L810.0 170.1 L809.2 170.4 L808.5 171.5 L807.7 170.5 L807.0 172.3 L806.2 173.5 L805.5 175.8 L804.7 170.7 L804.0 171.6 L803.2 172.5 L802.5 169.4 L801.7 169.6 L801.0 169.9 L800.2 170.5 L799.5 170.8 L798.7 171.8 L797.9 173.2 L797.2 171.0 L796.4 172.3 L795.7 174.3 L794.9 176.4 L794.2 170.2 L793.4 171.2 L792.7 172.1 L791.9 169.2 L791.2 169.4 L790.4 169.6 L789.7 170.0 L788.9 169.9 L788.2 170.5 L787.4 171.5 L786.7 170.7 L785.9 171.3 L785.2 172.9 L784.4 175.9 L783.7 170.5 L782.9 171.2 L782.2 173.0 L781.4 169.3 L780.6 169.5 L779.9 169.8 L779.1 170.1 L778.4 170.6 L777.6 171.7 L776.9 173.1 L776.1 170.9 L775.4 172.0 L774.6 173.2 L773.9 174.7 L773.1 170.2 L772.4 170.7 L771.6 171.6 L770.9 174.0 L770.1 169.3 L769.4 169.5 L768.6 169.9 L767.9 169.9 L767.1 170.4 L766.4 170.9 L765.6 171.6 L764.8 171.6 L764.1 172.1 L763.3 175.1 L762.6 170.5 L761.8 170.8 L761.1 172.0 L760.3 173.4 L759.6 169.5 L758.8 169.7 L758.1 170.0 L757.3 170.3 L756.6 171.0 L755.8 173.1 L755.1 175.2 L754.3 171.3 L753.6 172.4 L752.8 174.5 L752.1 170.2 L751.3 170.7 L750.6 171.3 L749.8 173.3 L749.1 169.3 L748.3 169.4 L747.5 169.6 L746.8 169.7 L746.0 170.2 L745.3 170.9 L744.5 171.4 L743.8 170.9 L743.0 172.0 L742.3 174.3 L741.5 170.2 L740.8 170.9 L740.0 171.8 L739.3 173.4 L738.5 169.4 L737.8 169.7 L737.0 170.0 L736.3 170.3 L735.5 171.4 L734.8 172.0 L734.0 173.6 L733.3 170.8 L732.5 172.9 L731.8 173.6 L731.0 178.7Z" fill="#4a7f9e"/><path d="M733.0 183.2 V187.6 H737.4Z" fill="#131a2b"/><path d="M814.0 183.2 V187.6 H809.6Z" fill="#131a2b"/><rect x="800.5" y="183.0" width="6.6" height="4.6" fill="none" stroke="#1d2a30" stroke-width=".7" opacity=".8"/><path d="M802.1 184.4 H805.5 L803.8 186.2Z" fill="#131a2b"/><rect x="860.0" y="155.2" width="172.0" height="33.6" fill="#95b3c4"/><rect x="860.0" y="181.4" width="172.0" height="7.4" fill="#3f6d88"/><rect x="860.2" y="155.4" width="171.5" height="33.1" fill="none" stroke="#3f6d88" stroke-width="0.6" opacity=".8"/><rect x="860.0" y="168.4" width="172.0" height="0.5" fill="#4a7f9e" opacity=".8"/><path d="M860.0 168.1 L860.8 166.6 L861.5 165.2 L862.3 164.8 L863.0 165.5 L863.8 167.0 L864.5 167.8 L865.3 166.2 L866.0 165.0 L866.8 164.9 L867.5 165.9 L868.3 167.5 L869.0 167.3 L869.8 165.8 L870.5 164.9 L871.3 165.1 L872.0 166.3 L872.8 167.9 L873.5 166.9 L874.3 165.4 L875.0 164.8 L875.8 165.3 L876.5 166.8 L877.3 168.0 L878.0 166.4 L878.8 165.2 L879.5 164.9 L880.3 165.7 L881.0 167.2 L881.8 167.6 L882.5 166.0 L883.3 165.0 L884.0 165.0 L884.8 166.1 L885.5 167.6 L886.3 167.2 L887.0 165.6 L887.8 164.8 L888.5 165.2 L889.3 166.5 L890.0 168.0 L890.8 166.7 L891.5 165.3 L892.3 164.8 L893.0 165.5 L893.8 166.9 L894.6 167.9 L895.3 166.3 L896.1 165.1 L896.8 164.9 L897.6 165.8 L898.3 167.4 L899.1 167.5 L899.8 165.9 L900.6 164.9 L901.3 165.0 L902.1 166.2 L902.8 167.8 L903.6 167.0 L904.3 165.5 L905.1 164.8 L905.8 165.3 L906.6 166.6 L907.3 168.1 L908.1 166.6 L908.8 165.2 L909.6 164.8 L910.3 165.6 L911.1 167.1 L911.8 167.7 L912.6 166.1 L913.3 165.0 L914.1 164.9 L914.8 165.9 L915.6 167.5 L916.3 167.3 L917.1 165.7 L917.8 164.9 L918.6 165.1 L919.3 166.4 L920.1 167.9 L920.8 166.8 L921.6 165.4 L922.3 164.8 L923.1 165.4 L923.8 166.8 L924.6 168.0 L925.3 166.4 L926.1 165.1 L926.8 164.9 L927.6 165.7 L928.3 167.3 L929.1 167.6 L929.9 166.0 L930.6 164.9 L931.4 165.0 L932.1 166.1 L932.9 167.7 L933.6 167.1 L934.4 165.6 L935.1 164.8 L935.9 165.2 L936.6 166.5 L937.4 168.1 L938.1 166.7 L938.9 165.3 L939.6 164.8 L940.4 165.5 L941.1 167.0 L941.9 167.8 L942.6 166.2 L943.4 165.1 L944.1 164.9 L944.9 165.8 L945.6 167.4 L946.4 167.4 L947.1 165.8 L947.9 164.9 L948.6 165.1 L949.4 166.2 L950.1 167.8 L950.9 167.0 L951.6 165.5 L952.4 164.8 L953.1 165.3 L953.9 166.7 L954.6 168.1 L955.4 166.5 L956.1 165.2 L956.9 164.8 L957.6 165.6 L958.4 167.1 L959.1 167.7 L959.9 166.1 L960.6 165.0 L961.4 164.9 L962.1 166.0 L962.9 167.6 L963.7 167.3 L964.4 165.7 L965.2 164.9 L965.9 165.1 L966.7 166.4 L967.4 168.0 L968.2 166.8 L968.9 165.4 L969.7 164.8 L970.4 165.4 L971.2 166.8 L971.9 167.9 L972.7 166.4 L973.4 165.1 L974.2 164.9 L974.9 165.7 L975.7 167.3 L976.4 167.5 L977.2 165.9 L977.9 164.9 L978.7 165.0 L979.4 166.1 L980.2 167.7 L980.9 167.1 L981.7 165.6 L982.4 164.8 L983.2 165.2 L983.9 166.6 L984.7 168.1 L985.4 166.6 L986.2 165.3 L986.9 164.8 L987.7 165.5 L988.4 167.0 L989.2 167.8 L989.9 166.2 L990.7 165.0 L991.4 164.9 L992.2 165.9 L992.9 167.5 L993.7 167.4 L994.4 165.8 L995.2 164.9 L995.9 165.1 L996.7 166.3 L997.4 167.9 L998.2 166.9 L999.0 165.5 L999.7 164.8 L1000.5 165.3 L1001.2 166.7 L1002.0 168.0 L1002.7 166.5 L1003.5 165.2 L1004.2 164.8 L1005.0 165.6 L1005.7 167.2 L1006.5 167.6 L1007.2 166.1 L1008.0 165.0 L1008.7 165.0 L1009.5 166.0 L1010.2 167.6 L1011.0 167.2 L1011.7 165.7 L1012.5 164.9 L1013.2 165.2 L1014.0 166.4 L1014.7 168.0 L1015.5 166.8 L1016.2 165.3 L1017.0 164.8 L1017.7 165.4 L1018.5 166.9 L1019.2 167.9 L1020.0 166.3 L1020.7 165.1 L1021.5 164.9 L1022.2 165.8 L1023.0 167.3 L1023.7 167.5 L1024.5 165.9 L1025.2 164.9 L1026.0 165.0 L1026.7 166.2 L1027.5 167.8 L1028.2 167.0 L1029.0 165.5 L1029.7 164.8 L1030.5 165.2 L1031.2 166.6 L1032.0 168.1 L1032.0 169.1 L1031.2 170.6 L1030.5 172.0 L1029.7 172.4 L1029.0 171.7 L1028.2 170.2 L1027.5 169.4 L1026.7 171.0 L1026.0 172.2 L1025.2 172.3 L1024.5 171.3 L1023.7 169.7 L1023.0 169.9 L1022.2 171.4 L1021.5 172.3 L1020.7 172.1 L1020.0 170.9 L1019.2 169.3 L1018.5 170.3 L1017.7 171.8 L1017.0 172.4 L1016.2 171.9 L1015.5 170.4 L1014.7 169.2 L1014.0 170.8 L1013.2 172.0 L1012.5 172.3 L1011.7 171.5 L1011.0 170.0 L1010.2 169.6 L1009.5 171.2 L1008.7 172.2 L1008.0 172.2 L1007.2 171.1 L1006.5 169.6 L1005.7 170.0 L1005.0 171.6 L1004.2 172.4 L1003.5 172.0 L1002.7 170.7 L1002.0 169.2 L1001.2 170.5 L1000.5 171.9 L999.7 172.4 L999.0 171.7 L998.2 170.3 L997.4 169.3 L996.7 170.9 L995.9 172.1 L995.2 172.3 L994.4 171.4 L993.7 169.8 L992.9 169.7 L992.2 171.3 L991.4 172.3 L990.7 172.2 L989.9 171.0 L989.2 169.4 L988.4 170.2 L987.7 171.7 L986.9 172.4 L986.2 171.9 L985.4 170.6 L984.7 169.1 L983.9 170.6 L983.2 172.0 L982.4 172.4 L981.7 171.6 L980.9 170.1 L980.2 169.5 L979.4 171.1 L978.7 172.2 L977.9 172.3 L977.2 171.3 L976.4 169.7 L975.7 169.9 L974.9 171.5 L974.2 172.3 L973.4 172.1 L972.7 170.8 L971.9 169.3 L971.2 170.4 L970.4 171.8 L969.7 172.4 L968.9 171.8 L968.2 170.4 L967.4 169.2 L966.7 170.8 L965.9 172.1 L965.2 172.3 L964.4 171.5 L963.7 169.9 L962.9 169.6 L962.1 171.2 L961.4 172.3 L960.6 172.2 L959.9 171.1 L959.1 169.5 L958.4 170.1 L957.6 171.6 L956.9 172.4 L956.1 172.0 L955.4 170.7 L954.6 169.1 L953.9 170.5 L953.1 171.9 L952.4 172.4 L951.6 171.7 L950.9 170.2 L950.1 169.4 L949.4 171.0 L948.6 172.1 L947.9 172.3 L947.1 171.4 L946.4 169.8 L945.6 169.8 L944.9 171.4 L944.1 172.3 L943.4 172.1 L942.6 171.0 L941.9 169.4 L941.1 170.2 L940.4 171.7 L939.6 172.4 L938.9 171.9 L938.1 170.5 L937.4 169.1 L936.6 170.7 L935.9 172.0 L935.1 172.4 L934.4 171.6 L933.6 170.1 L932.9 169.5 L932.1 171.1 L931.4 172.2 L930.6 172.3 L929.9 171.2 L929.1 169.6 L928.3 169.9 L927.6 171.5 L926.8 172.3 L926.1 172.1 L925.3 170.8 L924.6 169.2 L923.8 170.4 L923.1 171.8 L922.3 172.4 L921.6 171.8 L920.8 170.4 L920.1 169.3 L919.3 170.8 L918.6 172.1 L917.8 172.3 L917.1 171.5 L916.3 169.9 L915.6 169.7 L914.8 171.3 L914.1 172.3 L913.3 172.2 L912.6 171.1 L911.8 169.5 L911.1 170.1 L910.3 171.6 L909.6 172.4 L908.8 172.0 L908.1 170.6 L907.3 169.1 L906.6 170.6 L905.8 171.9 L905.1 172.4 L904.3 171.7 L903.6 170.2 L902.8 169.4 L902.1 171.0 L901.3 172.2 L900.6 172.3 L899.8 171.3 L899.1 169.7 L898.3 169.8 L897.6 171.4 L896.8 172.3 L896.1 172.1 L895.3 170.9 L894.6 169.3 L893.8 170.3 L893.0 171.7 L892.3 172.4 L891.5 171.9 L890.8 170.5 L890.0 169.2 L889.3 170.7 L888.5 172.0 L887.8 172.4 L887.0 171.6 L886.3 170.0 L885.5 169.6 L884.8 171.1 L884.0 172.2 L883.3 172.2 L882.5 171.2 L881.8 169.6 L881.0 170.0 L880.3 171.5 L879.5 172.3 L878.8 172.0 L878.0 170.8 L877.3 169.2 L876.5 170.4 L875.8 171.9 L875.0 172.4 L874.3 171.8 L873.5 170.3 L872.8 169.3 L872.0 170.9 L871.3 172.1 L870.5 172.3 L869.8 171.4 L869.0 169.9 L868.3 169.7 L867.5 171.3 L866.8 172.3 L866.0 172.2 L865.3 171.0 L864.5 169.4 L863.8 170.2 L863.0 171.7 L862.3 172.4 L861.5 172.0 L860.8 170.6 L860.0 169.1Z" fill="#4a7f9e"/><path d="M862.0 183.2 V187.6 H866.4Z" fill="#131a2b"/><path d="M1030.0 183.2 V187.6 H1025.6Z" fill="#131a2b"/><rect x="1016.5" y="183.0" width="6.6" height="4.6" fill="none" stroke="#1d2a30" stroke-width=".7" opacity=".8"/><path d="M1018.1 184.4 H1021.5 L1019.8 186.2Z" fill="#131a2b"/><rect x="1076.0" y="155.2" width="42.0" height="33.6" fill="#95b3c4"/><rect x="1076.0" y="181.4" width="42.0" height="7.4" fill="#3f6d88"/><rect x="1076.2" y="155.4" width="41.5" height="33.1" fill="none" stroke="#3f6d88" stroke-width="0.6" opacity=".8"/><rect x="1076.0" y="168.4" width="42.0" height="0.5" fill="#4a7f9e" opacity=".8"/><path d="M1076.0 168.1 L1076.8 166.6 L1077.5 165.2 L1078.2 164.8 L1079.0 165.7 L1079.8 167.2 L1080.5 167.6 L1081.2 165.9 L1082.0 164.9 L1082.8 165.0 L1083.5 166.2 L1084.2 167.9 L1085.0 166.9 L1085.8 165.4 L1086.5 164.8 L1087.2 165.4 L1088.0 166.9 L1088.8 167.9 L1089.5 166.2 L1090.2 165.0 L1091.0 164.9 L1091.8 165.9 L1092.5 167.6 L1093.2 167.2 L1094.0 165.7 L1094.8 164.8 L1095.5 165.2 L1096.2 166.6 L1097.0 168.1 L1097.8 166.6 L1098.5 165.2 L1099.2 164.8 L1100.0 165.7 L1100.8 167.2 L1101.5 167.6 L1102.2 165.9 L1103.0 164.9 L1103.8 165.0 L1104.5 166.2 L1105.2 167.9 L1106.0 166.9 L1106.8 165.4 L1107.5 164.8 L1108.2 165.4 L1109.0 166.9 L1109.8 167.9 L1110.5 166.2 L1111.2 165.0 L1112.0 164.9 L1112.8 165.9 L1113.5 167.6 L1114.2 167.2 L1115.0 165.7 L1115.8 164.8 L1116.5 165.2 L1117.2 166.6 L1118.0 168.1 L1118.0 169.1 L1117.2 170.6 L1116.5 172.0 L1115.8 172.4 L1115.0 171.5 L1114.2 170.0 L1113.5 169.6 L1112.8 171.3 L1112.0 172.3 L1111.2 172.2 L1110.5 171.0 L1109.8 169.3 L1109.0 170.3 L1108.2 171.8 L1107.5 172.4 L1106.8 171.8 L1106.0 170.3 L1105.2 169.3 L1104.5 171.0 L1103.8 172.2 L1103.0 172.3 L1102.2 171.3 L1101.5 169.6 L1100.8 170.0 L1100.0 171.5 L1099.2 172.4 L1098.5 172.0 L1097.8 170.6 L1097.0 169.1 L1096.2 170.6 L1095.5 172.0 L1094.8 172.4 L1094.0 171.5 L1093.2 170.0 L1092.5 169.6 L1091.8 171.3 L1091.0 172.3 L1090.2 172.2 L1089.5 171.0 L1088.8 169.3 L1088.0 170.3 L1087.2 171.8 L1086.5 172.4 L1085.8 171.8 L1085.0 170.3 L1084.2 169.3 L1083.5 171.0 L1082.8 172.2 L1082.0 172.3 L1081.2 171.3 L1080.5 169.6 L1079.8 170.0 L1079.0 171.5 L1078.2 172.4 L1077.5 172.0 L1076.8 170.6 L1076.0 169.1Z" fill="#4a7f9e"/><path d="M1078.0 183.2 V187.6 H1082.4Z" fill="#131a2b"/><path d="M1116.0 183.2 V187.6 H1111.6Z" fill="#131a2b"/><rect x="1102.5" y="183.0" width="6.6" height="4.6" fill="none" stroke="#1d2a30" stroke-width=".7" opacity=".8"/><path d="M1104.1 184.4 H1107.5 L1105.8 186.2Z" fill="#131a2b"/><rect x="203.0" y="190.0" width="96.0" height="33.6" fill="#c594bf"/><rect x="203.0" y="216.2" width="96.0" height="7.4" fill="#8b3f7c"/><rect x="203.2" y="190.2" width="95.5" height="33.1" fill="none" stroke="#8b3f7c" stroke-width="0.6" opacity=".8"/><rect x="203.0" y="203.1" width="96.0" height="0.5" fill="#a4509a" opacity=".8"/><path d="M203.0 202.2 L203.8 202.4 L204.5 202.5 L205.2 202.2 L206.0 202.6 L206.8 202.3 L207.5 202.5 L208.2 202.3 L209.0 202.7 L209.8 202.1 L210.5 202.5 L211.2 202.7 L212.0 202.6 L212.8 202.5 L213.5 202.8 L214.2 202.5 L215.0 202.5 L215.8 202.3 L216.5 202.5 L217.2 202.6 L218.0 202.6 L218.8 202.3 L219.5 202.2 L220.2 202.4 L221.0 202.6 L221.8 202.3 L222.5 202.5 L223.2 202.6 L224.0 202.7 L224.8 202.3 L225.5 202.3 L226.2 202.4 L227.0 202.5 L227.8 202.4 L228.5 202.6 L229.2 202.2 L230.0 202.5 L230.8 202.4 L231.5 202.3 L232.2 202.3 L233.0 202.5 L233.8 202.6 L234.5 202.4 L235.2 202.7 L236.0 202.2 L236.8 202.5 L237.5 202.2 L238.2 202.6 L239.0 202.5 L239.8 202.6 L240.5 202.5 L241.2 202.7 L242.0 202.8 L242.8 202.3 L243.5 202.6 L244.2 202.6 L245.0 202.6 L245.8 202.5 L246.5 202.5 L247.2 202.4 L248.0 202.4 L248.8 202.5 L249.5 202.2 L250.2 202.2 L251.0 202.7 L251.8 202.2 L252.5 202.2 L253.2 202.3 L254.0 202.7 L254.8 202.2 L255.5 202.4 L256.2 202.8 L257.0 202.8 L257.8 202.2 L258.5 202.4 L259.2 202.6 L260.0 202.7 L260.8 202.7 L261.5 202.6 L262.2 202.3 L263.0 202.6 L263.8 202.7 L264.5 202.2 L265.2 202.3 L266.0 202.7 L266.8 202.2 L267.5 202.4 L268.2 202.3 L269.0 202.3 L269.8 202.2 L270.5 202.3 L271.2 202.2 L272.0 202.6 L272.8 202.3 L273.5 202.4 L274.2 202.3 L275.0 202.5 L275.8 202.2 L276.5 202.4 L277.2 202.6 L278.0 202.6 L278.8 202.7 L279.5 202.5 L280.2 202.7 L281.0 202.5 L281.8 202.7 L282.5 202.5 L283.2 202.5 L284.0 202.4 L284.8 202.2 L285.5 202.8 L286.2 202.2 L287.0 202.5 L287.8 202.4 L288.5 202.4 L289.2 202.2 L290.0 202.5 L290.8 202.5 L291.5 202.2 L292.2 202.7 L293.0 202.4 L293.8 202.4 L294.5 202.8 L295.2 202.4 L296.0 202.3 L296.8 202.2 L297.5 202.6 L298.2 202.2 L299.0 202.4 L299.0 204.4 L298.2 204.6 L297.5 204.2 L296.8 204.6 L296.0 204.5 L295.2 204.4 L294.5 204.0 L293.8 204.4 L293.0 204.4 L292.2 204.1 L291.5 204.6 L290.8 204.3 L290.0 204.3 L289.2 204.6 L288.5 204.4 L287.8 204.4 L287.0 204.3 L286.2 204.6 L285.5 204.0 L284.8 204.6 L284.0 204.4 L283.2 204.3 L282.5 204.3 L281.8 204.1 L281.0 204.3 L280.2 204.1 L279.5 204.3 L278.8 204.1 L278.0 204.2 L277.2 204.2 L276.5 204.4 L275.8 204.6 L275.0 204.3 L274.2 204.5 L273.5 204.4 L272.8 204.5 L272.0 204.2 L271.2 204.6 L270.5 204.5 L269.8 204.6 L269.0 204.5 L268.2 204.5 L267.5 204.4 L266.8 204.6 L266.0 204.1 L265.2 204.5 L264.5 204.6 L263.8 204.1 L263.0 204.2 L262.2 204.5 L261.5 204.2 L260.8 204.1 L260.0 204.1 L259.2 204.2 L258.5 204.4 L257.8 204.6 L257.0 204.0 L256.2 204.0 L255.5 204.4 L254.8 204.6 L254.0 204.1 L253.2 204.5 L252.5 204.6 L251.8 204.6 L251.0 204.1 L250.2 204.6 L249.5 204.6 L248.8 204.3 L248.0 204.4 L247.2 204.4 L246.5 204.3 L245.8 204.3 L245.0 204.2 L244.2 204.2 L243.5 204.2 L242.8 204.5 L242.0 204.0 L241.2 204.1 L240.5 204.3 L239.8 204.2 L239.0 204.3 L238.2 204.2 L237.5 204.6 L236.8 204.3 L236.0 204.6 L235.2 204.1 L234.5 204.4 L233.8 204.2 L233.0 204.3 L232.2 204.5 L231.5 204.5 L230.8 204.4 L230.0 204.3 L229.2 204.6 L228.5 204.2 L227.8 204.4 L227.0 204.3 L226.2 204.4 L225.5 204.5 L224.8 204.5 L224.0 204.1 L223.2 204.2 L222.5 204.3 L221.8 204.5 L221.0 204.2 L220.2 204.4 L219.5 204.6 L218.8 204.5 L218.0 204.2 L217.2 204.2 L216.5 204.3 L215.8 204.5 L215.0 204.3 L214.2 204.3 L213.5 204.0 L212.8 204.3 L212.0 204.2 L211.2 204.1 L210.5 204.3 L209.8 204.7 L209.0 204.1 L208.2 204.5 L207.5 204.3 L206.8 204.5 L206.0 204.2 L205.2 204.6 L204.5 204.3 L203.8 204.4 L203.0 204.6Z" fill="#a4509a"/><path d="M203.0 215.2 L207.0 203.4 L299.0 203.4" fill="none" stroke="#d8553f" stroke-width="1.25"/><path d="M205.0 218.0 V222.4 H209.4Z" fill="#131a2b"/><path d="M297.0 218.0 V222.4 H292.6Z" fill="#131a2b"/><rect x="283.5" y="217.8" width="6.6" height="4.6" fill="none" stroke="#1d2a30" stroke-width=".7" opacity=".8"/><path d="M285.1 219.2 H288.5 L286.8 221.0Z" fill="#131a2b"/><rect x="472.0" y="190.0" width="172.0" height="33.6" fill="#95b3c4"/><rect x="472.0" y="216.2" width="172.0" height="7.4" fill="#3f6d88"/><rect x="472.2" y="190.2" width="171.5" height="33.1" fill="none" stroke="#3f6d88" stroke-width="0.6" opacity=".8"/><rect x="472.0" y="203.1" width="172.0" height="0.5" fill="#4a7f9e" opacity=".8"/><path d="M472.0 203.0 L472.8 203.0 L473.5 203.0 L474.3 203.0 L475.0 203.0 L475.8 203.0 L476.5 202.6 L477.3 200.6 L478.0 202.1 L478.8 203.0 L479.5 203.0 L480.3 203.0 L481.0 203.0 L481.8 203.0 L482.5 203.0 L483.3 203.0 L484.0 203.0 L484.8 203.0 L485.5 203.0 L486.3 203.0 L487.0 202.9 L487.8 201.9 L488.5 202.0 L489.3 203.0 L490.0 203.0 L490.8 203.0 L491.5 203.0 L492.3 203.0 L493.0 203.0 L493.8 203.0 L494.5 203.0 L495.3 203.0 L496.0 203.0 L496.8 203.0 L497.5 203.0 L498.3 201.9 L499.0 200.7 L499.8 202.7 L500.5 203.0 L501.3 203.0 L502.0 203.0 L502.8 203.0 L503.5 203.0 L504.3 203.0 L505.0 203.0 L505.8 203.0 L506.6 203.0 L507.3 203.0 L508.1 203.0 L508.8 202.7 L509.6 201.5 L510.3 202.5 L511.1 203.0 L511.8 203.0 L512.6 203.0 L513.3 203.0 L514.1 203.0 L514.8 203.0 L515.6 203.0 L516.3 203.0 L517.1 203.0 L517.8 203.0 L518.6 203.0 L519.3 202.8 L520.1 201.0 L520.8 201.5 L521.6 202.9 L522.3 203.0 L523.1 203.0 L523.8 203.0 L524.6 203.0 L525.3 203.0 L526.1 203.0 L526.8 203.0 L527.6 203.0 L528.3 203.0 L529.1 203.0 L529.8 203.0 L530.6 202.3 L531.3 201.7 L532.1 202.9 L532.8 203.0 L533.6 203.0 L534.3 203.0 L535.1 203.0 L535.8 203.0 L536.6 203.0 L537.3 203.0 L538.1 203.0 L538.8 203.0 L539.6 203.0 L540.3 203.0 L541.1 202.4 L541.9 200.5 L542.6 202.3 L543.4 203.0 L544.1 203.0 L544.9 203.0 L545.6 203.0 L546.4 203.0 L547.1 203.0 L547.9 203.0 L548.6 203.0 L549.4 203.0 L550.1 203.0 L550.9 203.0 L551.6 202.9 L552.4 201.7 L553.1 202.2 L553.9 203.0 L554.6 203.0 L555.4 203.0 L556.1 203.0 L556.9 203.0 L557.6 203.0 L558.4 203.0 L559.1 203.0 L559.9 203.0 L560.6 203.0 L561.4 203.0 L562.1 203.0 L562.9 201.6 L563.6 200.9 L564.4 202.8 L565.1 203.0 L565.9 203.0 L566.6 203.0 L567.4 203.0 L568.1 203.0 L568.9 203.0 L569.6 203.0 L570.4 203.0 L571.1 203.0 L571.9 203.0 L572.6 203.0 L573.4 202.6 L574.1 201.5 L574.9 202.7 L575.7 203.0 L576.4 203.0 L577.2 203.0 L577.9 203.0 L578.7 203.0 L579.4 203.0 L580.2 203.0 L580.9 203.0 L581.7 203.0 L582.4 203.0 L583.2 203.0 L583.9 202.7 L584.7 200.8 L585.4 201.8 L586.2 203.0 L586.9 203.0 L587.7 203.0 L588.4 203.0 L589.2 203.0 L589.9 203.0 L590.7 203.0 L591.4 203.0 L592.2 203.0 L592.9 203.0 L593.7 203.0 L594.4 203.0 L595.2 202.1 L595.9 201.8 L596.7 202.9 L597.4 203.0 L598.2 203.0 L598.9 203.0 L599.7 203.0 L600.4 203.0 L601.2 203.0 L601.9 203.0 L602.7 203.0 L603.4 203.0 L604.2 203.0 L604.9 203.0 L605.7 202.2 L606.4 200.5 L607.2 202.5 L607.9 203.0 L608.7 203.0 L609.4 203.0 L610.2 203.0 L611.0 203.0 L611.7 203.0 L612.5 203.0 L613.2 203.0 L614.0 203.0 L614.7 203.0 L615.5 203.0 L616.2 202.8 L617.0 201.6 L617.7 202.4 L618.5 203.0 L619.2 203.0 L620.0 203.0 L620.7 203.0 L621.5 203.0 L622.2 203.0 L623.0 203.0 L623.7 203.0 L624.5 203.0 L625.2 203.0 L626.0 203.0 L626.7 202.9 L627.5 201.3 L628.2 201.2 L629.0 202.9 L629.7 203.0 L630.5 203.0 L631.2 203.0 L632.0 203.0 L632.7 203.0 L633.5 203.0 L634.2 203.0 L635.0 203.0 L635.7 203.0 L636.5 203.0 L637.2 203.0 L638.0 202.4 L638.7 201.6 L639.5 202.8 L640.2 203.0 L641.0 203.0 L641.7 203.0 L642.5 203.0 L643.2 203.0 L644.0 203.0 L644.0 203.8 L643.2 203.8 L642.5 203.8 L641.7 203.8 L641.0 203.8 L640.2 203.8 L639.5 204.0 L638.7 205.2 L638.0 204.4 L637.2 203.8 L636.5 203.8 L635.7 203.8 L635.0 203.8 L634.2 203.8 L633.5 203.8 L632.7 203.8 L632.0 203.8 L631.2 203.8 L630.5 203.8 L629.7 203.8 L629.0 203.9 L628.2 205.6 L627.5 205.5 L626.7 203.9 L626.0 203.8 L625.2 203.8 L624.5 203.8 L623.7 203.8 L623.0 203.8 L622.2 203.8 L621.5 203.8 L620.7 203.8 L620.0 203.8 L619.2 203.8 L618.5 203.8 L617.7 204.4 L617.0 205.2 L616.2 204.0 L615.5 203.8 L614.7 203.8 L614.0 203.8 L613.2 203.8 L612.5 203.8 L611.7 203.8 L611.0 203.8 L610.2 203.8 L609.4 203.8 L608.7 203.8 L607.9 203.8 L607.2 204.3 L606.4 206.3 L605.7 204.6 L604.9 203.8 L604.2 203.8 L603.4 203.8 L602.7 203.8 L601.9 203.8 L601.2 203.8 L600.4 203.8 L599.7 203.8 L598.9 203.8 L598.2 203.8 L597.4 203.8 L596.7 203.9 L595.9 205.0 L595.2 204.7 L594.4 203.8 L593.7 203.8 L592.9 203.8 L592.2 203.8 L591.4 203.8 L590.7 203.8 L589.9 203.8 L589.2 203.8 L588.4 203.8 L587.7 203.8 L586.9 203.8 L586.2 203.8 L585.4 205.0 L584.7 206.0 L583.9 204.1 L583.2 203.8 L582.4 203.8 L581.7 203.8 L580.9 203.8 L580.2 203.8 L579.4 203.8 L578.7 203.8 L577.9 203.8 L577.2 203.8 L576.4 203.8 L575.7 203.8 L574.9 204.1 L574.1 205.3 L573.4 204.2 L572.6 203.8 L571.9 203.8 L571.1 203.8 L570.4 203.8 L569.6 203.8 L568.9 203.8 L568.1 203.8 L567.4 203.8 L566.6 203.8 L565.9 203.8 L565.1 203.8 L564.4 204.0 L563.6 205.9 L562.9 205.2 L562.1 203.8 L561.4 203.8 L560.6 203.8 L559.9 203.8 L559.1 203.8 L558.4 203.8 L557.6 203.8 L556.9 203.8 L556.1 203.8 L555.4 203.8 L554.6 203.8 L553.9 203.8 L553.1 204.6 L552.4 205.1 L551.6 203.9 L550.9 203.8 L550.1 203.8 L549.4 203.8 L548.6 203.8 L547.9 203.8 L547.1 203.8 L546.4 203.8 L545.6 203.8 L544.9 203.8 L544.1 203.8 L543.4 203.8 L542.6 204.5 L541.9 206.3 L541.1 204.4 L540.3 203.8 L539.6 203.8 L538.8 203.8 L538.1 203.8 L537.3 203.8 L536.6 203.8 L535.8 203.8 L535.1 203.8 L534.3 203.8 L533.6 203.8 L532.8 203.8 L532.1 203.9 L531.3 205.1 L530.6 204.5 L529.8 203.8 L529.1 203.8 L528.3 203.8 L527.6 203.8 L526.8 203.8 L526.1 203.8 L525.3 203.8 L524.6 203.8 L523.8 203.8 L523.1 203.8 L522.3 203.8 L521.6 203.9 L520.8 205.3 L520.1 205.8 L519.3 204.0 L518.6 203.8 L517.8 203.8 L517.1 203.8 L516.3 203.8 L515.6 203.8 L514.8 203.8 L514.1 203.8 L513.3 203.8 L512.6 203.8 L511.8 203.8 L511.1 203.8 L510.3 204.3 L509.6 205.3 L508.8 204.1 L508.1 203.8 L507.3 203.8 L506.6 203.8 L505.8 203.8 L505.0 203.8 L504.3 203.8 L503.5 203.8 L502.8 203.8 L502.0 203.8 L501.3 203.8 L500.5 203.8 L499.8 204.1 L499.0 206.1 L498.3 204.9 L497.5 203.8 L496.8 203.8 L496.0 203.8 L495.3 203.8 L494.5 203.8 L493.8 203.8 L493.0 203.8 L492.3 203.8 L491.5 203.8 L490.8 203.8 L490.0 203.8 L489.3 203.8 L488.5 204.8 L487.8 204.9 L487.0 203.9 L486.3 203.8 L485.5 203.8 L484.8 203.8 L484.0 203.8 L483.3 203.8 L482.5 203.8 L481.8 203.8 L481.0 203.8 L480.3 203.8 L479.5 203.8 L478.8 203.8 L478.0 204.7 L477.3 206.2 L476.5 204.2 L475.8 203.8 L475.0 203.8 L474.3 203.8 L473.5 203.8 L472.8 203.8 L472.0 203.8Z" fill="#4a7f9e"/><path d="M474.0 218.0 V222.4 H478.4Z" fill="#131a2b"/><path d="M642.0 218.0 V222.4 H637.6Z" fill="#131a2b"/><rect x="628.5" y="217.8" width="6.6" height="4.6" fill="none" stroke="#1d2a30" stroke-width=".7" opacity=".8"/><path d="M630.1 219.2 H633.5 L631.8 221.0Z" fill="#131a2b"/><rect x="645.0" y="190.0" width="171.0" height="33.6" fill="#c594bf"/><rect x="645.0" y="216.2" width="171.0" height="7.4" fill="#8b3f7c"/><rect x="645.2" y="190.2" width="170.5" height="33.1" fill="none" stroke="#8b3f7c" stroke-width="0.6" opacity=".8"/><rect x="645.0" y="203.1" width="171.0" height="0.5" fill="#a4509a" opacity=".8"/><path d="M645.0 200.1 L645.8 200.3 L646.5 201.0 L647.2 201.0 L648.0 201.3 L648.8 201.6 L649.5 201.5 L650.2 201.9 L651.0 202.0 L651.8 202.0 L652.5 202.0 L653.2 202.4 L654.0 202.3 L654.8 202.4 L655.5 202.3 L656.2 202.2 L657.0 202.5 L657.8 202.3 L658.5 202.5 L659.2 202.5 L660.0 202.6 L660.8 202.5 L661.5 202.3 L662.2 202.5 L663.0 202.4 L663.8 202.6 L664.5 202.6 L665.2 202.7 L666.0 202.5 L666.8 200.2 L667.5 200.5 L668.2 201.2 L669.0 201.1 L669.8 201.2 L670.5 201.6 L671.2 202.0 L672.0 202.0 L672.8 202.3 L673.5 202.3 L674.2 202.0 L675.0 202.2 L675.8 202.2 L676.5 202.2 L677.2 202.2 L678.0 202.4 L678.8 202.4 L679.5 202.4 L680.2 202.4 L681.0 202.5 L681.8 202.4 L682.5 202.7 L683.2 202.4 L684.0 202.6 L684.8 202.4 L685.5 202.8 L686.2 202.7 L687.0 202.8 L687.8 199.9 L688.5 200.3 L689.2 200.7 L690.0 201.2 L690.8 201.2 L691.5 201.4 L692.2 201.7 L693.0 202.0 L693.8 202.1 L694.5 202.1 L695.2 202.2 L696.0 202.3 L696.8 202.2 L697.5 202.1 L698.2 202.6 L699.0 202.4 L699.8 202.7 L700.5 202.6 L701.2 202.3 L702.0 202.5 L702.8 202.3 L703.5 202.5 L704.2 202.8 L705.0 202.6 L705.8 202.5 L706.5 202.3 L707.2 202.3 L708.0 202.6 L708.8 202.6 L709.5 200.5 L710.2 200.6 L711.0 201.1 L711.8 201.4 L712.5 201.7 L713.2 201.9 L714.0 201.7 L714.8 202.1 L715.5 201.8 L716.2 202.3 L717.0 202.0 L717.8 202.4 L718.5 202.5 L719.2 202.2 L720.0 202.5 L720.8 202.3 L721.5 202.6 L722.2 202.7 L723.0 202.3 L723.8 202.4 L724.5 202.3 L725.2 202.4 L726.0 202.7 L726.8 202.5 L727.5 202.4 L728.2 202.6 L729.0 202.3 L729.8 202.7 L730.5 199.8 L731.2 200.4 L732.0 201.1 L732.8 201.3 L733.5 201.3 L734.2 201.4 L735.0 201.9 L735.8 201.9 L736.5 201.8 L737.2 202.2 L738.0 202.0 L738.8 202.2 L739.5 202.5 L740.2 202.4 L741.0 202.3 L741.8 202.4 L742.5 202.3 L743.2 202.6 L744.0 202.3 L744.8 202.6 L745.5 202.4 L746.2 202.5 L747.0 202.6 L747.8 202.6 L748.5 202.4 L749.2 202.3 L750.0 202.4 L750.8 202.5 L751.5 202.7 L752.2 200.5 L753.0 200.4 L753.8 200.9 L754.5 201.1 L755.2 201.5 L756.0 201.6 L756.8 201.5 L757.5 201.7 L758.2 202.0 L759.0 202.2 L759.8 202.2 L760.5 202.1 L761.2 202.4 L762.0 202.3 L762.8 202.3 L763.5 202.2 L764.2 202.3 L765.0 202.6 L765.8 202.7 L766.5 202.6 L767.2 202.6 L768.0 202.5 L768.8 202.4 L769.5 202.3 L770.2 202.8 L771.0 202.4 L771.8 202.4 L772.5 202.4 L773.2 200.0 L774.0 200.6 L774.8 200.6 L775.5 200.9 L776.2 201.2 L777.0 201.3 L777.8 201.8 L778.5 202.1 L779.2 201.9 L780.0 201.9 L780.8 202.3 L781.5 202.1 L782.2 202.1 L783.0 202.5 L783.8 202.3 L784.5 202.3 L785.2 202.4 L786.0 202.6 L786.8 202.6 L787.5 202.4 L788.2 202.4 L789.0 202.5 L789.8 202.7 L790.5 202.4 L791.2 202.4 L792.0 202.7 L792.8 202.5 L793.5 202.4 L794.2 202.4 L795.0 200.3 L795.8 200.7 L796.5 200.9 L797.2 201.4 L798.0 201.6 L798.8 201.8 L799.5 201.7 L800.2 202.0 L801.0 202.0 L801.8 202.2 L802.5 202.2 L803.2 202.4 L804.0 202.5 L804.8 202.1 L805.5 202.4 L806.2 202.6 L807.0 202.4 L807.8 202.3 L808.5 202.7 L809.2 202.4 L810.0 202.6 L810.8 202.5 L811.5 202.8 L812.2 202.8 L813.0 202.3 L813.8 202.4 L814.5 202.6 L815.2 202.5 L816.0 200.2 L816.0 206.6 L815.2 204.3 L814.5 204.2 L813.8 204.4 L813.0 204.5 L812.2 204.0 L811.5 204.0 L810.8 204.3 L810.0 204.2 L809.2 204.4 L808.5 204.1 L807.8 204.5 L807.0 204.4 L806.2 204.2 L805.5 204.4 L804.8 204.7 L804.0 204.3 L803.2 204.4 L802.5 204.6 L801.8 204.6 L801.0 204.8 L800.2 204.8 L799.5 205.1 L798.8 205.0 L798.0 205.2 L797.2 205.4 L796.5 205.9 L795.8 206.1 L795.0 206.5 L794.2 204.4 L793.5 204.4 L792.8 204.3 L792.0 204.1 L791.2 204.4 L790.5 204.4 L789.8 204.1 L789.0 204.3 L788.2 204.4 L787.5 204.4 L786.8 204.2 L786.0 204.2 L785.2 204.4 L784.5 204.5 L783.8 204.5 L783.0 204.3 L782.2 204.7 L781.5 204.7 L780.8 204.5 L780.0 204.9 L779.2 204.9 L778.5 204.7 L777.8 205.0 L777.0 205.5 L776.2 205.6 L775.5 205.9 L774.8 206.2 L774.0 206.2 L773.2 206.8 L772.5 204.4 L771.8 204.4 L771.0 204.4 L770.2 204.0 L769.5 204.5 L768.8 204.4 L768.0 204.3 L767.2 204.2 L766.5 204.2 L765.8 204.1 L765.0 204.2 L764.2 204.5 L763.5 204.6 L762.8 204.5 L762.0 204.5 L761.2 204.4 L760.5 204.7 L759.8 204.6 L759.0 204.6 L758.2 204.8 L757.5 205.1 L756.8 205.3 L756.0 205.2 L755.2 205.3 L754.5 205.7 L753.8 205.9 L753.0 206.4 L752.2 206.3 L751.5 204.1 L750.8 204.3 L750.0 204.4 L749.2 204.5 L748.5 204.4 L747.8 204.2 L747.0 204.2 L746.2 204.3 L745.5 204.4 L744.8 204.2 L744.0 204.5 L743.2 204.2 L742.5 204.5 L741.8 204.4 L741.0 204.5 L740.2 204.4 L739.5 204.3 L738.8 204.6 L738.0 204.8 L737.2 204.6 L736.5 205.0 L735.8 204.9 L735.0 204.9 L734.2 205.4 L733.5 205.5 L732.8 205.5 L732.0 205.7 L731.2 206.4 L730.5 207.0 L729.8 204.1 L729.0 204.5 L728.2 204.2 L727.5 204.4 L726.8 204.3 L726.0 204.1 L725.2 204.4 L724.5 204.5 L723.8 204.4 L723.0 204.5 L722.2 204.1 L721.5 204.2 L720.8 204.5 L720.0 204.3 L719.2 204.6 L718.5 204.3 L717.8 204.4 L717.0 204.8 L716.2 204.5 L715.5 205.0 L714.8 204.7 L714.0 205.1 L713.2 204.9 L712.5 205.1 L711.8 205.4 L711.0 205.7 L710.2 206.2 L709.5 206.3 L708.8 204.2 L708.0 204.2 L707.2 204.5 L706.5 204.5 L705.8 204.3 L705.0 204.2 L704.2 204.0 L703.5 204.3 L702.8 204.5 L702.0 204.3 L701.2 204.5 L700.5 204.2 L699.8 204.1 L699.0 204.4 L698.2 204.2 L697.5 204.7 L696.8 204.6 L696.0 204.5 L695.2 204.6 L694.5 204.7 L693.8 204.7 L693.0 204.8 L692.2 205.1 L691.5 205.4 L690.8 205.6 L690.0 205.6 L689.2 206.1 L688.5 206.5 L687.8 206.9 L687.0 204.0 L686.2 204.1 L685.5 204.0 L684.8 204.4 L684.0 204.2 L683.2 204.4 L682.5 204.1 L681.8 204.4 L681.0 204.3 L680.2 204.4 L679.5 204.4 L678.8 204.4 L678.0 204.4 L677.2 204.6 L676.5 204.6 L675.8 204.6 L675.0 204.6 L674.2 204.8 L673.5 204.5 L672.8 204.5 L672.0 204.8 L671.2 204.8 L670.5 205.2 L669.8 205.6 L669.0 205.7 L668.2 205.6 L667.5 206.3 L666.8 206.6 L666.0 204.3 L665.2 204.1 L664.5 204.2 L663.8 204.2 L663.0 204.4 L662.2 204.3 L661.5 204.5 L660.8 204.3 L660.0 204.2 L659.2 204.3 L658.5 204.3 L657.8 204.5 L657.0 204.3 L656.2 204.6 L655.5 204.5 L654.8 204.4 L654.0 204.5 L653.2 204.4 L652.5 204.8 L651.8 204.8 L651.0 204.8 L650.2 204.9 L649.5 205.3 L648.8 205.2 L648.0 205.5 L647.2 205.8 L646.5 205.8 L645.8 206.5 L645.0 206.7Z" fill="#a4509a"/><path d="M647.0 218.0 V222.4 H651.4Z" fill="#131a2b"/><path d="M814.0 218.0 V222.4 H809.6Z" fill="#131a2b"/><rect x="800.5" y="217.8" width="6.6" height="4.6" fill="none" stroke="#1d2a30" stroke-width=".7" opacity=".8"/><path d="M802.1 219.2 H805.5 L803.8 221.0Z" fill="#131a2b"/><rect x="817.0" y="190.0" width="215.0" height="33.6" fill="#95c19f"/><rect x="817.0" y="216.2" width="215.0" height="7.4" fill="#3f7b4d"/><rect x="817.2" y="190.2" width="214.5" height="33.1" fill="none" stroke="#3f7b4d" stroke-width="0.6" opacity=".8"/><rect x="817.0" y="203.1" width="215.0" height="0.5" fill="#55a577" opacity=".8"/><path d="M817.0 200.1 L817.8 200.5 L818.5 199.9 L819.3 200.1 L820.0 200.1 L820.8 199.9 L821.5 200.6 L822.3 200.8 L823.0 200.7 L823.8 200.7 L824.5 200.8 L825.3 200.8 L826.0 200.3 L826.8 200.0 L827.5 200.4 L828.3 199.9 L829.0 200.0 L829.8 200.8 L830.5 200.3 L831.3 200.5 L832.0 200.8 L832.8 199.9 L833.5 200.6 L834.3 200.3 L835.0 200.2 L835.8 199.9 L836.5 200.2 L837.3 200.5 L838.0 200.4 L838.8 200.7 L839.6 199.9 L840.3 199.9 L841.1 200.7 L841.8 200.8 L842.6 200.6 L843.3 200.5 L844.1 200.0 L844.8 200.0 L845.6 200.0 L846.3 200.8 L847.1 200.1 L847.8 200.2 L848.6 200.2 L849.3 199.9 L850.1 200.8 L850.8 200.7 L851.6 200.1 L852.3 199.9 L853.1 200.2 L853.8 200.6 L854.6 200.3 L855.3 200.1 L856.1 200.8 L856.8 200.6 L857.6 200.6 L858.3 200.8 L859.1 200.4 L859.8 200.7 L860.6 200.6 L861.4 200.7 L862.1 200.2 L862.9 200.9 L863.6 200.2 L864.4 200.7 L865.1 200.8 L865.9 199.9 L866.6 200.7 L867.4 199.9 L868.1 200.0 L868.9 200.0 L869.6 200.7 L870.4 200.4 L871.1 200.8 L871.9 199.9 L872.6 200.0 L873.4 200.2 L874.1 200.4 L874.9 200.5 L875.6 200.1 L876.4 200.4 L877.1 200.2 L877.9 200.7 L878.6 200.7 L879.4 200.8 L880.1 200.2 L880.9 200.3 L881.7 200.7 L882.4 200.0 L883.2 200.6 L883.9 200.5 L884.7 200.7 L885.4 200.6 L886.2 200.0 L886.9 200.5 L887.7 200.7 L888.4 200.4 L889.2 200.6 L889.9 200.0 L890.7 200.8 L891.4 199.9 L892.2 200.8 L892.9 200.0 L893.7 200.2 L894.4 200.7 L895.2 200.4 L895.9 200.6 L896.7 200.6 L897.4 200.7 L898.2 200.5 L898.9 199.9 L899.7 199.9 L900.4 199.9 L901.2 200.8 L901.9 200.6 L902.7 200.0 L903.5 200.8 L904.2 200.1 L905.0 200.6 L905.7 199.9 L906.5 200.9 L907.2 200.1 L908.0 200.5 L908.7 200.7 L909.5 200.9 L910.2 200.0 L911.0 200.3 L911.7 200.7 L912.5 200.4 L913.2 200.0 L914.0 200.7 L914.7 200.3 L915.5 200.7 L916.2 200.7 L917.0 200.1 L917.7 200.2 L918.5 200.7 L919.2 200.8 L920.0 200.8 L920.7 200.3 L921.5 200.4 L922.2 200.6 L923.0 200.7 L923.7 200.3 L924.5 200.2 L925.3 200.1 L926.0 200.3 L926.8 200.7 L927.5 200.8 L928.3 200.1 L929.0 200.5 L929.8 200.2 L930.5 200.8 L931.3 200.1 L932.0 200.5 L932.8 200.0 L933.5 200.0 L934.3 200.4 L935.0 200.9 L935.8 200.0 L936.5 200.4 L937.3 200.0 L938.0 200.6 L938.8 200.7 L939.5 200.0 L940.3 200.5 L941.0 200.7 L941.8 200.5 L942.5 200.3 L943.3 200.9 L944.0 200.4 L944.8 200.4 L945.5 200.4 L946.3 200.8 L947.1 200.2 L947.8 200.1 L948.6 200.0 L949.3 200.6 L950.1 200.2 L950.8 200.5 L951.6 200.1 L952.3 200.8 L953.1 200.0 L953.8 199.9 L954.6 200.4 L955.3 200.4 L956.1 200.3 L956.8 200.3 L957.6 200.9 L958.3 199.9 L959.1 200.7 L959.8 200.7 L960.6 200.8 L961.3 200.6 L962.1 200.1 L962.8 200.8 L963.6 200.8 L964.3 200.2 L965.1 200.7 L965.8 200.9 L966.6 200.3 L967.3 200.3 L968.1 200.4 L968.9 200.2 L969.6 200.8 L970.4 200.0 L971.1 200.2 L971.9 200.8 L972.6 200.8 L973.4 200.4 L974.1 200.4 L974.9 200.6 L975.6 200.8 L976.4 200.5 L977.1 200.7 L977.9 200.3 L978.6 200.0 L979.4 200.7 L980.1 200.3 L980.9 200.1 L981.6 200.7 L982.4 200.0 L983.1 199.9 L983.9 200.5 L984.6 200.5 L985.4 200.0 L986.1 200.4 L986.9 200.5 L987.6 199.9 L988.4 200.1 L989.2 200.5 L989.9 200.6 L990.7 200.5 L991.4 200.4 L992.2 199.9 L992.9 200.1 L993.7 200.0 L994.4 200.1 L995.2 200.0 L995.9 200.8 L996.7 200.4 L997.4 199.9 L998.2 199.9 L998.9 200.6 L999.7 200.5 L1000.4 200.2 L1001.2 200.5 L1001.9 200.3 L1002.7 200.8 L1003.4 200.4 L1004.2 200.4 L1004.9 200.9 L1005.7 200.7 L1006.4 199.9 L1007.2 200.1 L1007.9 199.9 L1008.7 200.2 L1009.4 200.1 L1010.2 200.0 L1011.0 200.0 L1011.7 200.8 L1012.5 200.2 L1013.2 200.6 L1014.0 200.2 L1014.7 200.6 L1015.5 200.3 L1016.2 199.9 L1017.0 200.3 L1017.7 200.6 L1018.5 200.4 L1019.2 200.4 L1020.0 199.9 L1020.7 200.6 L1021.5 200.6 L1022.2 200.2 L1023.0 200.8 L1023.7 200.3 L1024.5 199.9 L1025.2 200.4 L1026.0 200.6 L1026.7 200.4 L1027.5 200.3 L1028.2 200.7 L1029.0 200.8 L1029.7 200.7 L1030.5 200.6 L1031.2 200.5 L1032.0 200.6 L1032.0 206.2 L1031.2 206.3 L1030.5 206.2 L1029.7 206.1 L1029.0 206.0 L1028.2 206.1 L1027.5 206.5 L1026.7 206.4 L1026.0 206.2 L1025.2 206.4 L1024.5 206.9 L1023.7 206.5 L1023.0 206.0 L1022.2 206.6 L1021.5 206.2 L1020.7 206.2 L1020.0 206.9 L1019.2 206.4 L1018.5 206.4 L1017.7 206.2 L1017.0 206.5 L1016.2 206.9 L1015.5 206.5 L1014.7 206.2 L1014.0 206.6 L1013.2 206.2 L1012.5 206.6 L1011.7 206.0 L1011.0 206.8 L1010.2 206.8 L1009.4 206.7 L1008.7 206.6 L1007.9 206.9 L1007.2 206.7 L1006.4 206.9 L1005.7 206.1 L1004.9 205.9 L1004.2 206.4 L1003.4 206.4 L1002.7 206.0 L1001.9 206.5 L1001.2 206.3 L1000.4 206.6 L999.7 206.3 L998.9 206.2 L998.2 206.9 L997.4 206.9 L996.7 206.4 L995.9 206.0 L995.2 206.8 L994.4 206.7 L993.7 206.8 L992.9 206.7 L992.2 206.9 L991.4 206.4 L990.7 206.3 L989.9 206.2 L989.2 206.3 L988.4 206.7 L987.6 206.9 L986.9 206.3 L986.1 206.4 L985.4 206.8 L984.6 206.3 L983.9 206.3 L983.1 206.9 L982.4 206.8 L981.6 206.1 L980.9 206.7 L980.1 206.5 L979.4 206.1 L978.6 206.8 L977.9 206.5 L977.1 206.1 L976.4 206.3 L975.6 206.0 L974.9 206.2 L974.1 206.4 L973.4 206.4 L972.6 206.0 L971.9 206.0 L971.1 206.6 L970.4 206.8 L969.6 206.0 L968.9 206.6 L968.1 206.4 L967.3 206.5 L966.6 206.5 L965.8 205.9 L965.1 206.1 L964.3 206.6 L963.6 206.0 L962.8 206.0 L962.1 206.7 L961.3 206.2 L960.6 206.0 L959.8 206.1 L959.1 206.1 L958.3 206.9 L957.6 205.9 L956.8 206.5 L956.1 206.5 L955.3 206.4 L954.6 206.4 L953.8 206.9 L953.1 206.8 L952.3 206.0 L951.6 206.7 L950.8 206.3 L950.1 206.6 L949.3 206.2 L948.6 206.8 L947.8 206.7 L947.1 206.6 L946.3 206.0 L945.5 206.4 L944.8 206.4 L944.0 206.4 L943.3 205.9 L942.5 206.5 L941.8 206.3 L941.0 206.1 L940.3 206.3 L939.5 206.8 L938.8 206.1 L938.0 206.2 L937.3 206.8 L936.5 206.4 L935.8 206.8 L935.0 205.9 L934.3 206.4 L933.5 206.8 L932.8 206.8 L932.0 206.3 L931.3 206.7 L930.5 206.0 L929.8 206.6 L929.0 206.3 L928.3 206.7 L927.5 206.0 L926.8 206.1 L926.0 206.5 L925.3 206.7 L924.5 206.6 L923.7 206.5 L923.0 206.1 L922.2 206.2 L921.5 206.4 L920.7 206.5 L920.0 206.0 L919.2 206.0 L918.5 206.1 L917.7 206.6 L917.0 206.7 L916.2 206.1 L915.5 206.1 L914.7 206.5 L914.0 206.1 L913.2 206.8 L912.5 206.4 L911.7 206.1 L911.0 206.5 L910.2 206.8 L909.5 205.9 L908.7 206.1 L908.0 206.3 L907.2 206.7 L906.5 205.9 L905.7 206.9 L905.0 206.2 L904.2 206.7 L903.5 206.0 L902.7 206.8 L901.9 206.2 L901.2 206.0 L900.4 206.9 L899.7 206.9 L898.9 206.9 L898.2 206.3 L897.4 206.1 L896.7 206.2 L895.9 206.2 L895.2 206.4 L894.4 206.1 L893.7 206.6 L892.9 206.8 L892.2 206.0 L891.4 206.9 L890.7 206.0 L889.9 206.8 L889.2 206.2 L888.4 206.4 L887.7 206.1 L886.9 206.3 L886.2 206.8 L885.4 206.2 L884.7 206.1 L883.9 206.3 L883.2 206.2 L882.4 206.8 L881.7 206.1 L880.9 206.5 L880.1 206.6 L879.4 206.0 L878.6 206.1 L877.9 206.1 L877.1 206.6 L876.4 206.4 L875.6 206.7 L874.9 206.3 L874.1 206.4 L873.4 206.6 L872.6 206.8 L871.9 206.9 L871.1 206.0 L870.4 206.4 L869.6 206.1 L868.9 206.8 L868.1 206.8 L867.4 206.9 L866.6 206.1 L865.9 206.9 L865.1 206.0 L864.4 206.1 L863.6 206.6 L862.9 205.9 L862.1 206.6 L861.4 206.1 L860.6 206.2 L859.8 206.1 L859.1 206.4 L858.3 206.0 L857.6 206.2 L856.8 206.2 L856.1 206.0 L855.3 206.7 L854.6 206.5 L853.8 206.2 L853.1 206.6 L852.3 206.9 L851.6 206.7 L850.8 206.1 L850.1 206.0 L849.3 206.9 L848.6 206.6 L847.8 206.6 L847.1 206.7 L846.3 206.0 L845.6 206.8 L844.8 206.8 L844.1 206.8 L843.3 206.3 L842.6 206.2 L841.8 206.0 L841.1 206.1 L840.3 206.9 L839.6 206.9 L838.8 206.1 L838.0 206.4 L837.3 206.3 L836.5 206.6 L835.8 206.9 L835.0 206.6 L834.3 206.5 L833.5 206.2 L832.8 206.9 L832.0 206.0 L831.3 206.3 L830.5 206.5 L829.8 206.0 L829.0 206.8 L828.3 206.9 L827.5 206.4 L826.8 206.8 L826.0 206.5 L825.3 206.0 L824.5 206.0 L823.8 206.1 L823.0 206.1 L822.3 206.0 L821.5 206.2 L820.8 206.9 L820.0 206.7 L819.3 206.7 L818.5 206.9 L817.8 206.3 L817.0 206.7Z" fill="#55a577"/><path d="M819.0 218.0 V222.4 H823.4Z" fill="#131a2b"/><path d="M1030.0 218.0 V222.4 H1025.6Z" fill="#131a2b"/><rect x="1016.5" y="217.8" width="6.6" height="4.6" fill="none" stroke="#1d2a30" stroke-width=".7" opacity=".8"/><path d="M1018.1 219.2 H1021.5 L1019.8 221.0Z" fill="#131a2b"/><rect x="1076.0" y="190.0" width="42.0" height="33.6" fill="#95c19f"/><rect x="1076.0" y="216.2" width="42.0" height="7.4" fill="#3f7b4d"/><rect x="1076.2" y="190.2" width="41.5" height="33.1" fill="none" stroke="#3f7b4d" stroke-width="0.6" opacity=".8"/><rect x="1076.0" y="203.1" width="42.0" height="0.5" fill="#55a577" opacity=".8"/><path d="M1076.0 203.0 L1076.8 203.0 L1077.5 202.9 L1078.2 202.8 L1079.0 202.7 L1079.8 202.6 L1080.5 202.5 L1081.2 202.4 L1082.0 202.3 L1082.8 202.2 L1083.5 202.1 L1084.2 202.0 L1085.0 201.8 L1085.8 201.7 L1086.5 201.6 L1087.2 201.4 L1088.0 201.3 L1088.8 201.2 L1089.5 201.0 L1090.2 200.9 L1091.0 200.7 L1091.8 200.6 L1092.5 200.4 L1093.2 200.3 L1094.0 200.1 L1094.8 199.9 L1095.5 199.8 L1096.2 199.6 L1097.0 199.4 L1097.8 199.3 L1098.5 199.1 L1099.2 198.9 L1100.0 198.8 L1100.8 198.6 L1101.5 198.6 L1102.2 198.8 L1103.0 199.1 L1103.8 199.3 L1104.5 199.5 L1105.2 199.8 L1106.0 200.0 L1106.8 200.2 L1107.5 200.4 L1108.2 200.7 L1109.0 200.9 L1109.8 201.1 L1110.5 201.3 L1111.2 201.5 L1112.0 201.7 L1112.8 201.9 L1113.5 202.1 L1114.2 202.3 L1115.0 202.4 L1115.8 202.6 L1116.5 202.8 L1117.2 202.9 L1118.0 203.0 L1118.0 203.8 L1117.2 203.9 L1116.5 204.0 L1115.8 204.2 L1115.0 204.4 L1114.2 204.5 L1113.5 204.7 L1112.8 204.9 L1112.0 205.1 L1111.2 205.3 L1110.5 205.5 L1109.8 205.7 L1109.0 205.9 L1108.2 206.1 L1107.5 206.4 L1106.8 206.6 L1106.0 206.8 L1105.2 207.0 L1104.5 207.3 L1103.8 207.5 L1103.0 207.7 L1102.2 208.0 L1101.5 208.2 L1100.8 208.2 L1100.0 208.0 L1099.2 207.9 L1098.5 207.7 L1097.8 207.5 L1097.0 207.4 L1096.2 207.2 L1095.5 207.0 L1094.8 206.9 L1094.0 206.7 L1093.2 206.5 L1092.5 206.4 L1091.8 206.2 L1091.0 206.1 L1090.2 205.9 L1089.5 205.8 L1088.8 205.6 L1088.0 205.5 L1087.2 205.4 L1086.5 205.2 L1085.8 205.1 L1085.0 205.0 L1084.2 204.8 L1083.5 204.7 L1082.8 204.6 L1082.0 204.5 L1081.2 204.4 L1080.5 204.3 L1079.8 204.2 L1079.0 204.1 L1078.2 204.0 L1077.5 203.9 L1076.8 203.8 L1076.0 203.8Z" fill="#55a577"/><path d="M1078.0 218.0 V222.4 H1082.4Z" fill="#131a2b"/><path d="M1116.0 218.0 V222.4 H1111.6Z" fill="#131a2b"/><rect x="1102.5" y="217.8" width="6.6" height="4.6" fill="none" stroke="#1d2a30" stroke-width=".7" opacity=".8"/><path d="M1104.1 219.2 H1107.5 L1105.8 221.0Z" fill="#131a2b"/><rect x="128.0" y="224.8" width="171.0" height="33.6" fill="#b994c0"/><rect x="128.0" y="251.0" width="171.0" height="7.4" fill="#6f3d7a"/><rect x="128.2" y="225.0" width="170.5" height="33.1" fill="none" stroke="#6f3d7a" stroke-width="0.6" opacity=".8"/><rect x="128.0" y="237.9" width="171.0" height="0.5" fill="#9a55a6" opacity=".8"/><path d="M128.0 236.1 L128.8 236.3 L129.5 235.7 L130.2 235.4 L131.0 235.7 L131.8 235.8 L132.5 235.7 L133.2 236.4 L134.0 235.7 L134.8 236.1 L135.5 235.9 L136.2 235.9 L137.0 236.1 L137.8 236.3 L138.5 236.4 L139.2 236.4 L140.0 236.0 L140.8 236.2 L141.5 235.9 L142.2 236.7 L143.0 236.2 L143.8 235.5 L144.5 236.3 L145.2 235.9 L146.0 235.9 L146.8 236.2 L147.5 235.2 L148.2 236.1 L149.0 235.4 L149.8 236.2 L150.5 236.3 L151.2 235.2 L152.0 235.7 L152.8 236.2 L153.5 235.7 L154.2 235.6 L155.0 235.2 L155.8 236.0 L156.5 235.9 L157.2 234.8 L158.0 235.1 L158.8 235.9 L159.5 235.7 L160.2 235.6 L161.0 235.2 L161.8 235.3 L162.5 235.0 L163.2 235.0 L164.0 235.4 L164.8 235.1 L165.5 235.2 L166.2 235.2 L167.0 235.6 L167.8 235.2 L168.5 235.3 L169.2 235.1 L170.0 236.2 L170.8 235.2 L171.5 236.4 L172.2 235.4 L173.0 235.7 L173.8 235.8 L174.5 235.2 L175.2 235.8 L176.0 236.0 L176.8 235.6 L177.5 235.5 L178.2 235.9 L179.0 236.2 L179.8 236.1 L180.5 236.1 L181.2 235.7 L182.0 236.3 L182.8 236.2 L183.5 236.0 L184.2 236.2 L185.0 236.3 L185.8 235.6 L186.5 235.5 L187.2 236.0 L188.0 236.0 L188.8 236.4 L189.5 236.2 L190.2 236.4 L191.0 235.7 L191.8 235.7 L192.5 236.3 L193.2 235.2 L194.0 236.0 L194.8 235.2 L195.5 235.2 L196.2 235.0 L197.0 236.0 L197.8 235.7 L198.5 235.0 L199.2 236.2 L200.0 236.1 L200.8 235.4 L201.5 235.5 L202.2 234.9 L203.0 235.1 L203.8 235.4 L204.5 234.7 L205.2 235.4 L206.0 235.4 L206.8 235.2 L207.5 235.6 L208.2 235.7 L209.0 235.4 L209.8 235.7 L210.5 234.9 L211.2 235.3 L212.0 235.6 L212.8 236.2 L213.5 235.9 L214.2 235.8 L215.0 235.7 L215.8 235.7 L216.5 235.3 L217.2 235.2 L218.0 235.9 L218.8 236.0 L219.5 235.8 L220.2 235.3 L221.0 236.2 L221.8 236.0 L222.5 235.6 L223.2 236.5 L224.0 236.3 L224.8 235.4 L225.5 235.6 L226.2 236.0 L227.0 236.6 L227.8 235.5 L228.5 235.8 L229.2 235.6 L230.0 235.3 L230.8 235.4 L231.5 236.1 L232.2 236.4 L233.0 236.2 L233.8 235.9 L234.5 235.8 L235.2 236.2 L236.0 236.2 L236.8 235.6 L237.5 235.6 L238.2 235.9 L239.0 235.0 L239.8 235.4 L240.5 236.2 L241.2 235.7 L242.0 235.1 L242.8 235.8 L243.5 235.2 L244.2 236.1 L245.0 235.7 L245.8 235.0 L246.5 235.3 L247.2 235.2 L248.0 235.8 L248.8 235.4 L249.5 235.4 L250.2 235.8 L251.0 235.3 L251.8 235.4 L252.5 234.8 L253.2 235.4 L254.0 235.7 L254.8 236.1 L255.5 236.1 L256.2 235.3 L257.0 236.2 L257.8 236.3 L258.5 236.2 L259.2 235.8 L260.0 235.4 L260.8 235.7 L261.5 235.5 L262.2 236.5 L263.0 236.6 L263.8 235.6 L264.5 236.2 L265.2 235.7 L266.0 236.2 L266.8 236.5 L267.5 236.4 L268.2 236.6 L269.0 235.5 L269.8 235.9 L270.5 236.3 L271.2 236.1 L272.0 236.2 L272.8 236.6 L273.5 235.5 L274.2 235.9 L275.0 235.3 L275.8 236.0 L276.5 235.7 L277.2 236.2 L278.0 236.5 L278.8 235.2 L279.5 235.3 L280.2 236.0 L281.0 235.1 L281.8 235.2 L282.5 235.9 L283.2 235.5 L284.0 234.9 L284.8 235.5 L285.5 234.9 L286.2 235.8 L287.0 235.6 L287.8 235.2 L288.5 235.8 L289.2 235.7 L290.0 234.9 L290.8 235.4 L291.5 235.0 L292.2 235.8 L293.0 235.9 L293.8 235.7 L294.5 235.9 L295.2 234.8 L296.0 235.8 L296.8 235.5 L297.5 236.1 L298.2 235.5 L299.0 235.8 L299.0 240.6 L298.2 240.9 L297.5 240.3 L296.8 240.9 L296.0 240.6 L295.2 241.6 L294.5 240.5 L293.8 240.7 L293.0 240.5 L292.2 240.6 L291.5 241.4 L290.8 241.0 L290.0 241.5 L289.2 240.7 L288.5 240.6 L287.8 241.2 L287.0 240.8 L286.2 240.6 L285.5 241.5 L284.8 240.9 L284.0 241.5 L283.2 240.9 L282.5 240.5 L281.8 241.2 L281.0 241.3 L280.2 240.4 L279.5 241.1 L278.8 241.2 L278.0 239.9 L277.2 240.2 L276.5 240.7 L275.8 240.4 L275.0 241.1 L274.2 240.5 L273.5 240.9 L272.8 239.8 L272.0 240.2 L271.2 240.3 L270.5 240.1 L269.8 240.5 L269.0 240.9 L268.2 239.8 L267.5 240.0 L266.8 239.9 L266.0 240.2 L265.2 240.7 L264.5 240.2 L263.8 240.8 L263.0 239.8 L262.2 239.9 L261.5 240.9 L260.8 240.7 L260.0 241.0 L259.2 240.6 L258.5 240.2 L257.8 240.1 L257.0 240.2 L256.2 241.1 L255.5 240.3 L254.8 240.3 L254.0 240.7 L253.2 241.0 L252.5 241.6 L251.8 241.0 L251.0 241.1 L250.2 240.6 L249.5 241.0 L248.8 241.0 L248.0 240.6 L247.2 241.2 L246.5 241.1 L245.8 241.4 L245.0 240.7 L244.2 240.3 L243.5 241.2 L242.8 240.6 L242.0 241.3 L241.2 240.7 L240.5 240.2 L239.8 241.0 L239.0 241.4 L238.2 240.5 L237.5 240.8 L236.8 240.8 L236.0 240.2 L235.2 240.2 L234.5 240.6 L233.8 240.5 L233.0 240.2 L232.2 240.0 L231.5 240.3 L230.8 241.0 L230.0 241.1 L229.2 240.8 L228.5 240.6 L227.8 240.9 L227.0 239.8 L226.2 240.4 L225.5 240.8 L224.8 241.0 L224.0 240.1 L223.2 239.9 L222.5 240.8 L221.8 240.4 L221.0 240.2 L220.2 241.1 L219.5 240.6 L218.8 240.4 L218.0 240.5 L217.2 241.2 L216.5 241.1 L215.8 240.7 L215.0 240.7 L214.2 240.6 L213.5 240.5 L212.8 240.2 L212.0 240.8 L211.2 241.1 L210.5 241.5 L209.8 240.7 L209.0 241.0 L208.2 240.7 L207.5 240.8 L206.8 241.2 L206.0 241.0 L205.2 241.0 L204.5 241.7 L203.8 241.0 L203.0 241.3 L202.2 241.5 L201.5 240.9 L200.8 241.0 L200.0 240.3 L199.2 240.2 L198.5 241.4 L197.8 240.7 L197.0 240.4 L196.2 241.4 L195.5 241.2 L194.8 241.2 L194.0 240.4 L193.2 241.2 L192.5 240.1 L191.8 240.7 L191.0 240.7 L190.2 240.0 L189.5 240.2 L188.8 240.0 L188.0 240.4 L187.2 240.4 L186.5 240.9 L185.8 240.8 L185.0 240.1 L184.2 240.2 L183.5 240.4 L182.8 240.2 L182.0 240.1 L181.2 240.7 L180.5 240.3 L179.8 240.3 L179.0 240.2 L178.2 240.5 L177.5 240.9 L176.8 240.8 L176.0 240.4 L175.2 240.6 L174.5 241.2 L173.8 240.6 L173.0 240.7 L172.2 241.0 L171.5 240.0 L170.8 241.2 L170.0 240.2 L169.2 241.3 L168.5 241.1 L167.8 241.2 L167.0 240.8 L166.2 241.2 L165.5 241.2 L164.8 241.3 L164.0 241.0 L163.2 241.4 L162.5 241.4 L161.8 241.1 L161.0 241.2 L160.2 240.8 L159.5 240.7 L158.8 240.5 L158.0 241.3 L157.2 241.6 L156.5 240.5 L155.8 240.4 L155.0 241.2 L154.2 240.8 L153.5 240.7 L152.8 240.2 L152.0 240.7 L151.2 241.2 L150.5 240.1 L149.8 240.2 L149.0 241.0 L148.2 240.3 L147.5 241.2 L146.8 240.2 L146.0 240.5 L145.2 240.5 L144.5 240.1 L143.8 240.9 L143.0 240.2 L142.2 239.7 L141.5 240.5 L140.8 240.2 L140.0 240.4 L139.2 240.0 L138.5 240.0 L137.8 240.1 L137.0 240.3 L136.2 240.5 L135.5 240.5 L134.8 240.3 L134.0 240.7 L133.2 240.0 L132.5 240.7 L131.8 240.6 L131.0 240.7 L130.2 241.0 L129.5 240.7 L128.8 240.1 L128.0 240.3Z" fill="#9a55a6"/><path d="M128.0 250.0 L132.0 238.2 L299.0 238.2" fill="none" stroke="#c8505a" stroke-width="1.25"/><path d="M130.0 252.8 V257.2 H134.4Z" fill="#131a2b"/><path d="M297.0 252.8 V257.2 H292.6Z" fill="#131a2b"/><rect x="283.5" y="252.6" width="6.6" height="4.6" fill="none" stroke="#1d2a30" stroke-width=".7" opacity=".8"/><path d="M285.1 254.0 H288.5 L286.8 255.8Z" fill="#131a2b"/><rect x="300.0" y="224.8" width="171.0" height="33.6" fill="#bcc294"/><rect x="300.0" y="251.0" width="171.0" height="7.4" fill="#7e8238"/><rect x="300.2" y="225.0" width="170.5" height="33.1" fill="none" stroke="#7e8238" stroke-width="0.6" opacity=".8"/><rect x="300.0" y="237.9" width="171.0" height="0.5" fill="#9aa04e" opacity=".8"/><path d="M300.0 235.8 L300.8 236.3 L301.5 236.2 L302.2 235.3 L303.0 236.0 L303.8 236.1 L304.5 236.3 L305.2 236.2 L306.0 236.3 L306.8 236.6 L307.5 235.7 L308.2 236.2 L309.0 236.5 L309.8 235.7 L310.5 236.6 L311.2 236.4 L312.0 235.6 L312.8 236.6 L313.5 236.1 L314.2 235.6 L315.0 235.6 L315.8 236.5 L316.5 236.2 L317.2 235.7 L318.0 236.2 L318.8 235.3 L319.5 236.3 L320.2 235.3 L321.0 235.9 L321.8 236.2 L322.5 235.9 L323.2 236.3 L324.0 235.5 L324.8 236.1 L325.5 235.1 L326.2 235.5 L327.0 235.8 L327.8 235.9 L328.5 235.4 L329.2 235.9 L330.0 235.0 L330.8 236.0 L331.5 235.5 L332.2 235.4 L333.0 235.8 L333.8 235.1 L334.5 235.6 L335.2 235.2 L336.0 235.3 L336.8 235.7 L337.5 235.6 L338.2 236.0 L339.0 235.9 L339.8 235.0 L340.5 235.8 L341.2 235.3 L342.0 236.1 L342.8 235.5 L343.5 235.8 L344.2 235.7 L345.0 236.0 L345.8 236.3 L346.5 236.0 L347.2 236.2 L348.0 236.4 L348.8 235.6 L349.5 236.2 L350.2 236.1 L351.0 235.4 L351.8 235.6 L352.5 235.5 L353.2 235.5 L354.0 236.5 L354.8 236.4 L355.5 236.7 L356.2 235.8 L357.0 235.8 L357.8 236.3 L358.5 236.2 L359.2 235.8 L360.0 235.7 L360.8 236.4 L361.5 235.5 L362.2 236.2 L363.0 235.8 L363.8 236.3 L364.5 236.4 L365.2 235.3 L366.0 235.5 L366.8 235.5 L367.5 236.4 L368.2 236.3 L369.0 236.1 L369.8 236.1 L370.5 235.9 L371.2 235.7 L372.0 236.2 L372.8 235.8 L373.5 235.3 L374.2 235.9 L375.0 235.0 L375.8 235.4 L376.5 235.1 L377.2 235.8 L378.0 235.5 L378.8 235.2 L379.5 235.6 L380.2 236.1 L381.0 235.0 L381.8 235.1 L382.5 235.8 L383.2 236.1 L384.0 235.0 L384.8 235.4 L385.5 236.2 L386.2 236.0 L387.0 236.2 L387.8 235.3 L388.5 236.1 L389.2 235.2 L390.0 235.4 L390.8 236.4 L391.5 235.6 L392.2 236.0 L393.0 235.6 L393.8 235.5 L394.5 236.3 L395.2 236.6 L396.0 235.4 L396.8 236.1 L397.5 235.4 L398.2 235.8 L399.0 235.7 L399.8 235.6 L400.5 235.9 L401.2 236.1 L402.0 236.7 L402.8 235.8 L403.5 236.1 L404.2 236.0 L405.0 235.4 L405.8 236.5 L406.5 235.6 L407.2 236.5 L408.0 235.6 L408.8 235.4 L409.5 236.1 L410.2 235.7 L411.0 235.1 L411.8 235.5 L412.5 235.6 L413.2 236.0 L414.0 236.2 L414.8 235.8 L415.5 235.7 L416.2 235.9 L417.0 235.8 L417.8 236.0 L418.5 235.2 L419.2 235.2 L420.0 235.8 L420.8 235.8 L421.5 235.4 L422.2 235.5 L423.0 234.8 L423.8 235.6 L424.5 235.7 L425.2 234.9 L426.0 236.0 L426.8 235.4 L427.5 235.8 L428.2 235.1 L429.0 235.5 L429.8 235.3 L430.5 236.1 L431.2 235.5 L432.0 235.6 L432.8 235.8 L433.5 235.4 L434.2 235.4 L435.0 236.4 L435.8 236.2 L436.5 236.1 L437.2 236.3 L438.0 236.6 L438.8 236.3 L439.5 236.4 L440.2 235.7 L441.0 236.1 L441.8 236.6 L442.5 236.3 L443.2 236.1 L444.0 236.2 L444.8 236.5 L445.5 236.6 L446.2 236.7 L447.0 235.3 L447.8 235.6 L448.5 236.6 L449.2 235.6 L450.0 235.3 L450.8 235.8 L451.5 236.4 L452.2 235.8 L453.0 235.9 L453.8 236.2 L454.5 235.7 L455.2 236.4 L456.0 235.1 L456.8 235.4 L457.5 235.4 L458.2 235.0 L459.0 235.3 L459.8 235.9 L460.5 235.8 L461.2 236.0 L462.0 236.1 L462.8 235.1 L463.5 235.0 L464.2 235.7 L465.0 235.9 L465.8 235.2 L466.5 235.0 L467.2 234.9 L468.0 235.9 L468.8 235.1 L469.5 235.0 L470.2 235.2 L471.0 235.8 L471.0 240.6 L470.2 241.2 L469.5 241.4 L468.8 241.3 L468.0 240.5 L467.2 241.5 L466.5 241.4 L465.8 241.2 L465.0 240.5 L464.2 240.7 L463.5 241.4 L462.8 241.3 L462.0 240.3 L461.2 240.4 L460.5 240.6 L459.8 240.5 L459.0 241.1 L458.2 241.4 L457.5 241.0 L456.8 241.0 L456.0 241.3 L455.2 240.0 L454.5 240.7 L453.8 240.2 L453.0 240.5 L452.2 240.6 L451.5 240.0 L450.8 240.6 L450.0 241.1 L449.2 240.8 L448.5 239.8 L447.8 240.8 L447.0 241.1 L446.2 239.7 L445.5 239.8 L444.8 239.9 L444.0 240.2 L443.2 240.3 L442.5 240.1 L441.8 239.8 L441.0 240.3 L440.2 240.7 L439.5 240.0 L438.8 240.1 L438.0 239.8 L437.2 240.1 L436.5 240.3 L435.8 240.2 L435.0 240.0 L434.2 241.0 L433.5 241.0 L432.8 240.6 L432.0 240.8 L431.2 240.9 L430.5 240.3 L429.8 241.1 L429.0 240.9 L428.2 241.3 L427.5 240.6 L426.8 241.0 L426.0 240.4 L425.2 241.5 L424.5 240.7 L423.8 240.8 L423.0 241.6 L422.2 240.9 L421.5 241.0 L420.8 240.6 L420.0 240.6 L419.2 241.2 L418.5 241.2 L417.8 240.4 L417.0 240.6 L416.2 240.5 L415.5 240.7 L414.8 240.6 L414.0 240.2 L413.2 240.4 L412.5 240.8 L411.8 240.9 L411.0 241.3 L410.2 240.7 L409.5 240.3 L408.8 241.0 L408.0 240.8 L407.2 239.9 L406.5 240.8 L405.8 239.9 L405.0 241.0 L404.2 240.4 L403.5 240.3 L402.8 240.6 L402.0 239.7 L401.2 240.3 L400.5 240.5 L399.8 240.8 L399.0 240.7 L398.2 240.6 L397.5 241.0 L396.8 240.3 L396.0 241.0 L395.2 239.8 L394.5 240.1 L393.8 240.9 L393.0 240.8 L392.2 240.4 L391.5 240.8 L390.8 240.0 L390.0 241.0 L389.2 241.2 L388.5 240.3 L387.8 241.1 L387.0 240.2 L386.2 240.4 L385.5 240.2 L384.8 241.0 L384.0 241.4 L383.2 240.3 L382.5 240.6 L381.8 241.3 L381.0 241.4 L380.2 240.3 L379.5 240.8 L378.8 241.2 L378.0 240.9 L377.2 240.6 L376.5 241.3 L375.8 241.0 L375.0 241.4 L374.2 240.5 L373.5 241.1 L372.8 240.6 L372.0 240.2 L371.2 240.7 L370.5 240.5 L369.8 240.3 L369.0 240.3 L368.2 240.1 L367.5 240.0 L366.8 240.9 L366.0 240.9 L365.2 241.1 L364.5 240.0 L363.8 240.1 L363.0 240.6 L362.2 240.2 L361.5 240.9 L360.8 240.0 L360.0 240.7 L359.2 240.6 L358.5 240.2 L357.8 240.1 L357.0 240.6 L356.2 240.6 L355.5 239.7 L354.8 240.0 L354.0 239.9 L353.2 240.9 L352.5 240.9 L351.8 240.8 L351.0 241.0 L350.2 240.3 L349.5 240.2 L348.8 240.8 L348.0 240.0 L347.2 240.2 L346.5 240.4 L345.8 240.1 L345.0 240.4 L344.2 240.7 L343.5 240.6 L342.8 240.9 L342.0 240.3 L341.2 241.1 L340.5 240.6 L339.8 241.4 L339.0 240.5 L338.2 240.4 L337.5 240.8 L336.8 240.7 L336.0 241.1 L335.2 241.2 L334.5 240.8 L333.8 241.3 L333.0 240.6 L332.2 241.0 L331.5 240.9 L330.8 240.4 L330.0 241.4 L329.2 240.5 L328.5 241.0 L327.8 240.5 L327.0 240.6 L326.2 240.9 L325.5 241.3 L324.8 240.3 L324.0 240.9 L323.2 240.1 L322.5 240.5 L321.8 240.2 L321.0 240.5 L320.2 241.1 L319.5 240.1 L318.8 241.1 L318.0 240.2 L317.2 240.7 L316.5 240.2 L315.8 239.9 L315.0 240.8 L314.2 240.8 L313.5 240.3 L312.8 239.8 L312.0 240.8 L311.2 240.0 L310.5 239.8 L309.8 240.7 L309.0 239.9 L308.2 240.2 L307.5 240.7 L306.8 239.8 L306.0 240.1 L305.2 240.2 L304.5 240.1 L303.8 240.3 L303.0 240.4 L302.2 241.1 L301.5 240.2 L300.8 240.1 L300.0 240.6Z" fill="#9aa04e"/><path d="M302.0 252.8 V257.2 H306.4Z" fill="#131a2b"/><path d="M469.0 252.8 V257.2 H464.6Z" fill="#131a2b"/><rect x="455.5" y="252.6" width="6.6" height="4.6" fill="none" stroke="#1d2a30" stroke-width=".7" opacity=".8"/><path d="M457.1 254.0 H460.5 L458.8 255.8Z" fill="#131a2b"/><rect x="559.0" y="224.8" width="85.0" height="33.6" fill="#8fc3c0"/><rect x="559.0" y="251.0" width="85.0" height="7.4" fill="#3c7f7d"/><rect x="559.2" y="225.0" width="84.5" height="33.1" fill="none" stroke="#3c7f7d" stroke-width="0.6" opacity=".8"/><rect x="559.0" y="237.9" width="85.0" height="0.5" fill="#4a9a98" opacity=".8"/><path d="M559.0 233.9 L559.8 235.7 L560.5 236.6 L561.3 237.2 L562.0 237.5 L562.8 237.7 L563.5 237.8 L564.3 237.8 L565.0 237.8 L565.8 237.8 L566.5 237.8 L567.3 237.8 L568.0 237.8 L568.8 237.8 L569.5 237.8 L570.3 236.9 L571.0 237.3 L571.8 237.6 L572.5 237.8 L573.3 237.8 L574.0 237.8 L574.8 237.8 L575.5 237.8 L576.3 237.8 L577.1 237.8 L577.8 237.8 L578.6 237.8 L579.3 237.8 L580.1 237.8 L580.8 235.3 L581.6 236.5 L582.3 237.1 L583.1 237.5 L583.8 237.7 L584.6 237.8 L585.3 237.8 L586.1 237.8 L586.8 237.8 L587.6 237.8 L588.3 237.8 L589.1 237.8 L589.8 237.8 L590.6 237.8 L591.3 235.1 L592.1 236.3 L592.8 237.0 L593.6 237.4 L594.4 237.7 L595.1 237.8 L595.9 237.8 L596.6 237.8 L597.4 237.8 L598.1 237.8 L598.9 237.8 L599.6 237.8 L600.4 237.8 L601.1 237.8 L601.9 234.9 L602.6 236.2 L603.4 237.0 L604.1 237.4 L604.9 237.6 L605.6 237.8 L606.4 237.8 L607.1 237.8 L607.9 237.8 L608.6 237.8 L609.4 237.8 L610.2 237.8 L610.9 237.8 L611.7 237.8 L612.4 236.5 L613.2 237.1 L613.9 237.5 L614.7 237.7 L615.4 237.8 L616.2 237.8 L616.9 237.8 L617.7 237.8 L618.4 237.8 L619.2 237.8 L619.9 237.8 L620.7 237.8 L621.4 237.8 L622.2 237.8 L622.9 234.4 L623.7 236.0 L624.4 236.8 L625.2 237.3 L625.9 237.6 L626.7 237.7 L627.5 237.8 L628.2 237.8 L629.0 237.8 L629.7 237.8 L630.5 237.8 L631.2 237.8 L632.0 237.8 L632.7 237.8 L633.5 234.2 L634.2 235.8 L635.0 236.7 L635.7 237.3 L636.5 237.6 L637.2 237.7 L638.0 237.8 L638.7 237.8 L639.5 237.8 L640.2 237.8 L641.0 237.8 L641.7 237.8 L642.5 237.8 L643.2 237.8 L644.0 233.9 L644.0 242.5 L643.2 238.5 L642.5 238.5 L641.7 238.5 L641.0 238.5 L640.2 238.5 L639.5 238.5 L638.7 238.5 L638.0 238.6 L637.2 238.7 L636.5 238.8 L635.7 239.1 L635.0 239.7 L634.2 240.6 L633.5 242.2 L632.7 238.5 L632.0 238.5 L631.2 238.5 L630.5 238.5 L629.7 238.5 L629.0 238.5 L628.2 238.5 L627.5 238.6 L626.7 238.7 L625.9 238.8 L625.2 239.1 L624.4 239.6 L623.7 240.4 L622.9 242.0 L622.2 238.5 L621.4 238.5 L620.7 238.5 L619.9 238.5 L619.2 238.5 L618.4 238.5 L617.7 238.5 L616.9 238.5 L616.2 238.5 L615.4 238.6 L614.7 238.7 L613.9 238.9 L613.2 239.3 L612.4 239.9 L611.7 238.5 L610.9 238.5 L610.2 238.5 L609.4 238.5 L608.6 238.5 L607.9 238.5 L607.1 238.5 L606.4 238.6 L605.6 238.6 L604.9 238.8 L604.1 239.0 L603.4 239.4 L602.6 240.2 L601.9 241.5 L601.1 238.5 L600.4 238.5 L599.6 238.5 L598.9 238.5 L598.1 238.5 L597.4 238.5 L596.6 238.5 L595.9 238.5 L595.1 238.6 L594.4 238.7 L593.6 239.0 L592.8 239.4 L592.1 240.1 L591.3 241.3 L590.6 238.5 L589.8 238.5 L589.1 238.5 L588.3 238.5 L587.6 238.5 L586.8 238.5 L586.1 238.5 L585.3 238.5 L584.6 238.6 L583.8 238.7 L583.1 238.9 L582.3 239.3 L581.6 239.9 L580.8 241.1 L580.1 238.5 L579.3 238.5 L578.6 238.5 L577.8 238.5 L577.1 238.5 L576.3 238.5 L575.5 238.5 L574.8 238.5 L574.0 238.5 L573.3 238.6 L572.5 238.6 L571.8 238.8 L571.0 239.1 L570.3 239.5 L569.5 238.5 L568.8 238.5 L568.0 238.5 L567.3 238.5 L566.5 238.5 L565.8 238.5 L565.0 238.5 L564.3 238.5 L563.5 238.6 L562.8 238.7 L562.0 238.9 L561.3 239.2 L560.5 239.8 L559.8 240.7 L559.0 242.5Z" fill="#4a9a98"/><path d="M559.0 238.2 L644.0 238.2" fill="none" stroke="#c88a40" stroke-width="1.25"/><path d="M561.0 252.8 V257.2 H565.4Z" fill="#131a2b"/><path d="M642.0 252.8 V257.2 H637.6Z" fill="#131a2b"/><rect x="628.5" y="252.6" width="6.6" height="4.6" fill="none" stroke="#1d2a30" stroke-width=".7" opacity=".8"/><path d="M630.1 254.0 H633.5 L631.8 255.8Z" fill="#131a2b"/><rect x="214.0" y="259.6" width="430.0" height="33.6" fill="#b994c0"/><rect x="214.0" y="285.8" width="430.0" height="7.4" fill="#6f3d7a"/><rect x="214.2" y="259.9" width="429.5" height="33.1" fill="none" stroke="#6f3d7a" stroke-width="0.6" opacity=".8"/><rect x="214.0" y="272.8" width="430.0" height="0.5" fill="#9a55a6" opacity=".8"/><path d="M214.0 270.9 L214.8 270.1 L215.5 270.8 L216.3 270.8 L217.0 270.5 L217.8 270.8 L218.5 270.2 L219.3 271.1 L220.0 271.4 L220.8 270.7 L221.5 270.6 L222.3 270.4 L223.0 270.5 L223.8 270.3 L224.5 270.2 L225.3 270.9 L226.0 270.9 L226.8 271.3 L227.5 271.1 L228.3 270.7 L229.0 271.4 L229.8 270.6 L230.5 271.3 L231.3 270.9 L232.0 270.1 L232.8 271.3 L233.5 271.3 L234.3 270.8 L235.0 271.1 L235.8 270.3 L236.5 271.3 L237.3 270.1 L238.0 270.0 L238.8 270.1 L239.5 270.5 L240.3 270.7 L241.0 270.2 L241.8 270.3 L242.5 270.4 L243.3 270.5 L244.0 270.4 L244.8 270.0 L245.5 269.8 L246.3 269.7 L247.0 270.7 L247.8 270.5 L248.5 270.3 L249.3 270.1 L250.0 270.5 L250.8 270.7 L251.5 270.8 L252.3 270.5 L253.0 270.4 L253.8 269.7 L254.5 269.8 L255.3 269.9 L256.0 269.8 L256.8 269.8 L257.5 270.3 L258.3 270.1 L259.0 271.2 L259.8 270.3 L260.5 270.5 L261.3 270.9 L262.0 270.6 L262.8 270.1 L263.5 270.8 L264.3 270.6 L265.0 271.1 L265.8 271.0 L266.5 270.3 L267.3 271.5 L268.0 271.3 L268.8 270.6 L269.5 270.9 L270.3 271.4 L271.0 270.6 L271.8 271.0 L272.5 270.7 L273.3 270.9 L274.0 270.8 L274.8 270.7 L275.5 270.9 L276.3 271.3 L277.0 271.1 L277.8 270.1 L278.5 270.6 L279.3 271.1 L280.0 270.1 L280.8 270.9 L281.5 271.1 L282.3 270.4 L283.0 270.8 L283.8 270.4 L284.5 270.3 L285.3 270.7 L286.0 270.2 L286.8 270.8 L287.5 270.3 L288.3 270.1 L289.0 270.8 L289.8 270.4 L290.5 270.8 L291.3 270.3 L292.0 269.7 L292.8 270.2 L293.5 269.9 L294.3 269.9 L295.0 270.8 L295.8 269.6 L296.5 270.0 L297.3 270.9 L298.0 269.9 L298.8 270.5 L299.5 270.9 L300.3 269.8 L301.1 270.4 L301.8 270.1 L302.6 271.0 L303.3 270.2 L304.1 271.2 L304.8 271.0 L305.6 270.9 L306.3 271.4 L307.1 270.6 L307.8 271.2 L308.6 271.1 L309.3 270.5 L310.1 270.9 L310.8 270.3 L311.6 270.7 L312.3 270.3 L313.1 270.8 L313.8 270.3 L314.6 270.3 L315.3 271.3 L316.1 270.5 L316.8 271.0 L317.6 270.4 L318.3 270.5 L319.1 270.3 L319.8 271.3 L320.6 270.9 L321.3 270.3 L322.1 270.0 L322.8 270.3 L323.6 271.2 L324.3 270.4 L325.1 271.1 L325.8 270.4 L326.6 270.0 L327.3 271.0 L328.1 269.8 L328.8 270.1 L329.6 270.7 L330.3 270.7 L331.1 270.4 L331.8 269.8 L332.6 270.1 L333.3 270.8 L334.1 270.9 L334.8 270.8 L335.6 269.8 L336.3 270.7 L337.1 270.2 L337.8 270.5 L338.6 270.0 L339.3 270.4 L340.1 270.8 L340.8 269.8 L341.6 270.3 L342.3 270.1 L343.1 270.0 L343.8 269.8 L344.6 271.1 L345.3 270.7 L346.1 271.0 L346.8 270.6 L347.6 270.1 L348.3 270.2 L349.1 271.3 L349.8 271.1 L350.6 270.3 L351.3 270.5 L352.1 270.9 L352.8 270.8 L353.6 271.3 L354.3 270.4 L355.1 271.0 L355.8 270.3 L356.6 270.7 L357.3 271.4 L358.1 271.1 L358.8 271.2 L359.6 270.3 L360.3 270.7 L361.1 271.4 L361.8 271.2 L362.6 271.0 L363.3 270.8 L364.1 270.6 L364.8 270.8 L365.6 270.9 L366.3 271.3 L367.1 270.5 L367.8 270.8 L368.6 271.2 L369.3 270.5 L370.1 269.8 L370.8 271.0 L371.6 270.9 L372.3 270.1 L373.1 270.6 L373.8 270.6 L374.6 270.3 L375.3 270.6 L376.1 270.2 L376.8 270.2 L377.6 269.6 L378.3 269.5 L379.1 270.9 L379.8 270.1 L380.6 269.9 L381.3 269.7 L382.1 269.9 L382.8 270.1 L383.6 270.1 L384.3 270.5 L385.1 270.6 L385.8 270.0 L386.6 269.9 L387.4 269.8 L388.1 270.2 L388.9 270.8 L389.6 270.2 L390.4 270.2 L391.1 270.6 L391.9 270.4 L392.6 270.9 L393.4 270.6 L394.1 270.9 L394.9 271.4 L395.6 271.0 L396.4 271.0 L397.1 270.1 L397.9 270.9 L398.6 271.0 L399.4 271.2 L400.1 271.2 L400.9 271.1 L401.6 271.4 L402.4 271.5 L403.1 270.3 L403.9 270.9 L404.6 270.9 L405.4 270.7 L406.1 271.0 L406.9 271.2 L407.6 271.3 L408.4 271.0 L409.1 270.9 L409.9 270.3 L410.6 270.5 L411.4 269.9 L412.1 270.7 L412.9 269.9 L413.6 270.3 L414.4 271.0 L415.1 270.8 L415.9 270.2 L416.6 269.7 L417.4 270.5 L418.1 269.9 L418.9 270.4 L419.6 269.7 L420.4 270.8 L421.1 270.3 L421.9 269.7 L422.6 270.5 L423.4 270.6 L424.1 270.9 L424.9 270.7 L425.6 270.6 L426.4 270.0 L427.1 270.7 L427.9 270.5 L428.6 270.8 L429.4 270.2 L430.1 269.9 L430.9 270.2 L431.6 270.9 L432.4 270.2 L433.1 269.9 L433.9 270.4 L434.6 271.2 L435.4 270.2 L436.1 270.1 L436.9 270.9 L437.6 271.2 L438.4 271.2 L439.1 270.7 L439.9 270.3 L440.6 270.6 L441.4 270.2 L442.1 271.2 L442.9 271.1 L443.6 270.5 L444.4 270.7 L445.1 271.0 L445.9 270.6 L446.6 271.1 L447.4 271.4 L448.1 270.9 L448.9 271.4 L449.6 270.6 L450.4 271.0 L451.1 270.7 L451.9 270.5 L452.6 271.0 L453.4 270.7 L454.1 271.3 L454.9 270.0 L455.6 270.4 L456.4 269.8 L457.1 271.1 L457.9 270.3 L458.6 270.1 L459.4 270.6 L460.1 270.9 L460.9 270.8 L461.6 270.8 L462.4 269.9 L463.1 270.8 L463.9 269.8 L464.6 270.3 L465.4 270.2 L466.1 270.1 L466.9 270.2 L467.6 270.0 L468.4 270.1 L469.1 270.5 L469.9 269.9 L470.6 270.6 L471.4 270.0 L472.2 270.0 L472.9 270.0 L473.7 270.7 L474.4 270.1 L475.2 269.8 L475.9 270.6 L476.7 270.8 L477.4 270.5 L478.2 270.0 L478.9 271.1 L479.7 271.3 L480.4 270.7 L481.2 270.5 L481.9 270.4 L482.7 271.0 L483.4 270.1 L484.2 271.2 L484.9 270.5 L485.7 271.4 L486.4 271.5 L487.2 271.4 L487.9 271.5 L488.7 270.9 L489.4 270.8 L490.2 271.3 L490.9 270.2 L491.7 271.0 L492.4 271.3 L493.2 271.2 L493.9 270.4 L494.7 270.1 L495.4 271.2 L496.2 271.3 L496.9 270.2 L497.7 270.9 L498.4 269.9 L499.2 270.5 L499.9 270.3 L500.7 270.7 L501.4 270.0 L502.2 270.4 L502.9 270.6 L503.7 269.8 L504.4 270.9 L505.2 270.0 L505.9 270.9 L506.7 270.1 L507.4 270.4 L508.2 269.7 L508.9 270.8 L509.7 270.1 L510.4 270.4 L511.2 269.7 L511.9 269.6 L512.7 270.1 L513.4 270.7 L514.2 270.6 L514.9 270.6 L515.7 270.4 L516.4 270.7 L517.2 270.8 L517.9 270.1 L518.7 270.3 L519.4 270.8 L520.2 269.8 L520.9 271.0 L521.7 270.5 L522.4 271.1 L523.2 270.2 L523.9 270.2 L524.7 271.0 L525.4 270.4 L526.2 270.3 L526.9 271.1 L527.7 271.0 L528.4 270.9 L529.2 270.3 L529.9 271.3 L530.7 270.6 L531.4 270.7 L532.2 270.9 L532.9 270.7 L533.7 270.3 L534.4 271.2 L535.2 270.3 L535.9 271.0 L536.7 270.4 L537.4 270.2 L538.2 271.2 L538.9 270.2 L539.7 270.0 L540.4 270.9 L541.2 271.3 L541.9 271.1 L542.7 269.9 L543.4 271.2 L544.2 269.9 L544.9 270.9 L545.7 270.1 L546.4 270.9 L547.2 270.8 L547.9 270.1 L548.7 270.9 L549.4 270.5 L550.2 269.7 L550.9 269.9 L551.7 269.7 L552.4 269.6 L553.2 270.9 L553.9 270.6 L554.7 269.8 L555.4 270.0 L556.2 270.9 L556.9 270.3 L557.7 270.7 L558.5 270.4 L559.2 270.9 L560.0 271.0 L560.7 269.7 L561.5 270.7 L562.2 269.9 L563.0 271.0 L563.7 270.5 L564.5 271.1 L565.2 270.7 L566.0 271.1 L566.7 270.4 L567.5 271.2 L568.2 270.4 L569.0 270.7 L569.7 271.3 L570.5 271.0 L571.2 270.8 L572.0 270.2 L572.7 271.1 L573.5 271.2 L574.2 270.2 L575.0 270.3 L575.7 270.5 L576.5 271.2 L577.2 271.3 L578.0 271.2 L578.7 271.4 L579.5 271.4 L580.2 270.8 L581.0 270.9 L581.7 270.6 L582.5 270.9 L583.2 271.3 L584.0 270.4 L584.7 270.4 L585.5 270.5 L586.2 270.5 L587.0 270.2 L587.7 269.8 L588.5 269.9 L589.2 270.1 L590.0 270.5 L590.7 270.6 L591.5 270.4 L592.2 269.6 L593.0 270.4 L593.7 270.4 L594.5 270.4 L595.2 270.7 L596.0 269.5 L596.7 270.9 L597.5 270.1 L598.2 269.6 L599.0 270.6 L599.7 270.1 L600.5 270.4 L601.2 270.7 L602.0 270.7 L602.7 270.9 L603.5 269.9 L604.2 270.0 L605.0 269.9 L605.7 271.1 L606.5 270.2 L607.2 270.8 L608.0 270.4 L608.7 270.5 L609.5 270.9 L610.2 270.0 L611.0 271.4 L611.7 270.4 L612.5 270.3 L613.2 270.8 L614.0 270.7 L614.7 270.1 L615.5 271.2 L616.2 270.7 L617.0 270.5 L617.7 271.0 L618.5 270.6 L619.2 271.0 L620.0 270.8 L620.7 270.7 L621.5 270.6 L622.2 271.1 L623.0 270.6 L623.7 270.7 L624.5 271.1 L625.2 270.6 L626.0 271.0 L626.7 270.1 L627.5 270.7 L628.2 270.3 L629.0 270.5 L629.7 270.6 L630.5 270.9 L631.2 271.0 L632.0 269.8 L632.7 270.4 L633.5 270.3 L634.2 270.3 L635.0 269.9 L635.7 270.7 L636.5 270.7 L637.2 269.8 L638.0 270.3 L638.7 270.0 L639.5 269.8 L640.2 269.7 L641.0 269.7 L641.7 270.9 L642.5 270.4 L643.2 269.8 L644.0 269.8 L644.0 276.2 L643.2 276.2 L642.5 275.6 L641.7 275.1 L641.0 276.3 L640.2 276.3 L639.5 276.2 L638.7 276.0 L638.0 275.7 L637.2 276.2 L636.5 275.3 L635.7 275.3 L635.0 276.1 L634.2 275.7 L633.5 275.7 L632.7 275.6 L632.0 276.2 L631.2 275.0 L630.5 275.1 L629.7 275.4 L629.0 275.5 L628.2 275.7 L627.5 275.3 L626.7 275.9 L626.0 275.0 L625.2 275.4 L624.5 274.9 L623.7 275.3 L623.0 275.4 L622.2 274.9 L621.5 275.4 L620.7 275.3 L620.0 275.2 L619.2 275.0 L618.5 275.4 L617.7 275.0 L617.0 275.5 L616.2 275.3 L615.5 274.8 L614.7 275.9 L614.0 275.3 L613.2 275.2 L612.5 275.7 L611.7 275.6 L611.0 274.6 L610.2 276.0 L609.5 275.1 L608.7 275.5 L608.0 275.6 L607.2 275.2 L606.5 275.8 L605.7 274.9 L605.0 276.1 L604.2 276.0 L603.5 276.1 L602.7 275.1 L602.0 275.3 L601.2 275.3 L600.5 275.6 L599.7 275.9 L599.0 275.4 L598.2 276.4 L597.5 275.9 L596.7 275.1 L596.0 276.5 L595.2 275.3 L594.5 275.6 L593.7 275.6 L593.0 275.6 L592.2 276.4 L591.5 275.6 L590.7 275.4 L590.0 275.5 L589.2 275.9 L588.5 276.1 L587.7 276.2 L587.0 275.8 L586.2 275.5 L585.5 275.5 L584.7 275.6 L584.0 275.6 L583.2 274.7 L582.5 275.1 L581.7 275.4 L581.0 275.1 L580.2 275.2 L579.5 274.6 L578.7 274.6 L578.0 274.8 L577.2 274.7 L576.5 274.8 L575.7 275.5 L575.0 275.7 L574.2 275.8 L573.5 274.8 L572.7 274.9 L572.0 275.8 L571.2 275.2 L570.5 275.0 L569.7 274.7 L569.0 275.3 L568.2 275.6 L567.5 274.8 L566.7 275.6 L566.0 274.9 L565.2 275.3 L564.5 274.9 L563.7 275.5 L563.0 275.0 L562.2 276.1 L561.5 275.3 L560.7 276.3 L560.0 275.0 L559.2 275.1 L558.5 275.6 L557.7 275.3 L556.9 275.7 L556.2 275.1 L555.4 276.0 L554.7 276.2 L553.9 275.4 L553.2 275.1 L552.4 276.4 L551.7 276.3 L550.9 276.1 L550.2 276.3 L549.4 275.5 L548.7 275.1 L547.9 275.9 L547.2 275.2 L546.4 275.1 L545.7 275.9 L544.9 275.1 L544.2 276.1 L543.4 274.8 L542.7 276.1 L541.9 274.9 L541.2 274.7 L540.4 275.1 L539.7 276.0 L538.9 275.8 L538.2 274.8 L537.4 275.8 L536.7 275.6 L535.9 275.0 L535.2 275.7 L534.4 274.8 L533.7 275.7 L532.9 275.3 L532.2 275.1 L531.4 275.3 L530.7 275.4 L529.9 274.7 L529.2 275.7 L528.4 275.1 L527.7 275.0 L526.9 274.9 L526.2 275.7 L525.4 275.6 L524.7 275.0 L523.9 275.8 L523.2 275.8 L522.4 274.9 L521.7 275.5 L520.9 275.0 L520.2 276.2 L519.4 275.2 L518.7 275.7 L517.9 275.9 L517.2 275.2 L516.4 275.3 L515.7 275.6 L514.9 275.4 L514.2 275.4 L513.4 275.3 L512.7 275.9 L511.9 276.4 L511.2 276.3 L510.4 275.6 L509.7 275.9 L508.9 275.2 L508.2 276.3 L507.4 275.6 L506.7 275.9 L505.9 275.1 L505.2 276.0 L504.4 275.1 L503.7 276.2 L502.9 275.4 L502.2 275.6 L501.4 276.0 L500.7 275.3 L499.9 275.7 L499.2 275.5 L498.4 276.1 L497.7 275.1 L496.9 275.8 L496.2 274.7 L495.4 274.8 L494.7 275.9 L493.9 275.6 L493.2 274.8 L492.4 274.7 L491.7 275.0 L490.9 275.8 L490.2 274.7 L489.4 275.2 L488.7 275.1 L487.9 274.5 L487.2 274.6 L486.4 274.5 L485.7 274.6 L484.9 275.5 L484.2 274.8 L483.4 275.9 L482.7 275.0 L481.9 275.6 L481.2 275.5 L480.4 275.3 L479.7 274.7 L478.9 274.9 L478.2 276.0 L477.4 275.5 L476.7 275.2 L475.9 275.4 L475.2 276.2 L474.4 275.9 L473.7 275.3 L472.9 276.0 L472.2 276.0 L471.4 276.0 L470.6 275.4 L469.9 276.1 L469.1 275.5 L468.4 275.9 L467.6 276.0 L466.9 275.8 L466.1 275.9 L465.4 275.8 L464.6 275.7 L463.9 276.2 L463.1 275.2 L462.4 276.1 L461.6 275.2 L460.9 275.2 L460.1 275.1 L459.4 275.4 L458.6 275.9 L457.9 275.7 L457.1 274.9 L456.4 276.2 L455.6 275.6 L454.9 276.0 L454.1 274.7 L453.4 275.3 L452.6 275.0 L451.9 275.5 L451.1 275.3 L450.4 275.0 L449.6 275.4 L448.9 274.6 L448.1 275.1 L447.4 274.6 L446.6 274.9 L445.9 275.4 L445.1 275.0 L444.4 275.3 L443.6 275.5 L442.9 274.9 L442.1 274.8 L441.4 275.8 L440.6 275.4 L439.9 275.7 L439.1 275.3 L438.4 274.8 L437.6 274.8 L436.9 275.1 L436.1 275.9 L435.4 275.8 L434.6 274.8 L433.9 275.6 L433.1 276.1 L432.4 275.8 L431.6 275.1 L430.9 275.8 L430.1 276.1 L429.4 275.8 L428.6 275.2 L427.9 275.5 L427.1 275.3 L426.4 276.0 L425.6 275.4 L424.9 275.3 L424.1 275.1 L423.4 275.4 L422.6 275.5 L421.9 276.3 L421.1 275.7 L420.4 275.2 L419.6 276.3 L418.9 275.6 L418.1 276.1 L417.4 275.5 L416.6 276.3 L415.9 275.8 L415.1 275.2 L414.4 275.0 L413.6 275.7 L412.9 276.1 L412.1 275.3 L411.4 276.1 L410.6 275.5 L409.9 275.7 L409.1 275.1 L408.4 275.0 L407.6 274.7 L406.9 274.8 L406.1 275.0 L405.4 275.3 L404.6 275.1 L403.9 275.1 L403.1 275.7 L402.4 274.5 L401.6 274.6 L400.9 274.9 L400.1 274.8 L399.4 274.8 L398.6 275.0 L397.9 275.1 L397.1 275.9 L396.4 275.0 L395.6 275.0 L394.9 274.6 L394.1 275.1 L393.4 275.4 L392.6 275.1 L391.9 275.6 L391.1 275.4 L390.4 275.8 L389.6 275.8 L388.9 275.2 L388.1 275.8 L387.4 276.2 L386.6 276.1 L385.8 276.0 L385.1 275.4 L384.3 275.5 L383.6 275.9 L382.8 275.9 L382.1 276.1 L381.3 276.3 L380.6 276.1 L379.8 275.9 L379.1 275.1 L378.3 276.5 L377.6 276.4 L376.8 275.8 L376.1 275.8 L375.3 275.4 L374.6 275.7 L373.8 275.4 L373.1 275.4 L372.3 275.9 L371.6 275.1 L370.8 275.0 L370.1 276.2 L369.3 275.5 L368.6 274.8 L367.8 275.2 L367.1 275.5 L366.3 274.7 L365.6 275.1 L364.8 275.2 L364.1 275.4 L363.3 275.2 L362.6 275.0 L361.8 274.8 L361.1 274.6 L360.3 275.3 L359.6 275.7 L358.8 274.8 L358.1 274.9 L357.3 274.6 L356.6 275.3 L355.8 275.7 L355.1 275.0 L354.3 275.6 L353.6 274.7 L352.8 275.2 L352.1 275.1 L351.3 275.5 L350.6 275.7 L349.8 274.9 L349.1 274.7 L348.3 275.8 L347.6 275.9 L346.8 275.4 L346.1 275.0 L345.3 275.3 L344.6 274.9 L343.8 276.2 L343.1 276.0 L342.3 275.9 L341.6 275.7 L340.8 276.2 L340.1 275.2 L339.3 275.6 L338.6 276.0 L337.8 275.5 L337.1 275.8 L336.3 275.3 L335.6 276.2 L334.8 275.2 L334.1 275.1 L333.3 275.2 L332.6 275.9 L331.8 276.2 L331.1 275.6 L330.3 275.3 L329.6 275.3 L328.8 275.9 L328.1 276.2 L327.3 275.0 L326.6 276.0 L325.8 275.6 L325.1 274.9 L324.3 275.6 L323.6 274.8 L322.8 275.7 L322.1 276.0 L321.3 275.7 L320.6 275.1 L319.8 274.7 L319.1 275.7 L318.3 275.5 L317.6 275.6 L316.8 275.0 L316.1 275.5 L315.3 274.7 L314.6 275.7 L313.8 275.7 L313.1 275.2 L312.3 275.7 L311.6 275.3 L310.8 275.7 L310.1 275.1 L309.3 275.5 L308.6 274.9 L307.8 274.8 L307.1 275.4 L306.3 274.6 L305.6 275.1 L304.8 275.0 L304.1 274.8 L303.3 275.8 L302.6 275.0 L301.8 275.9 L301.1 275.6 L300.3 276.2 L299.5 275.1 L298.8 275.5 L298.0 276.1 L297.3 275.1 L296.5 276.0 L295.8 276.4 L295.0 275.2 L294.3 276.1 L293.5 276.1 L292.8 275.8 L292.0 276.3 L291.3 275.7 L290.5 275.2 L289.8 275.6 L289.0 275.2 L288.3 275.9 L287.5 275.7 L286.8 275.2 L286.0 275.8 L285.3 275.3 L284.5 275.7 L283.8 275.6 L283.0 275.2 L282.3 275.6 L281.5 274.9 L280.8 275.1 L280.0 275.9 L279.3 274.9 L278.5 275.4 L277.8 275.9 L277.0 274.9 L276.3 274.7 L275.5 275.1 L274.8 275.3 L274.0 275.2 L273.3 275.1 L272.5 275.3 L271.8 275.0 L271.0 275.4 L270.3 274.6 L269.5 275.1 L268.8 275.4 L268.0 274.7 L267.3 274.5 L266.5 275.7 L265.8 275.0 L265.0 274.9 L264.3 275.4 L263.5 275.2 L262.8 275.9 L262.0 275.4 L261.3 275.1 L260.5 275.5 L259.8 275.7 L259.0 274.8 L258.3 275.9 L257.5 275.7 L256.8 276.2 L256.0 276.2 L255.3 276.1 L254.5 276.2 L253.8 276.3 L253.0 275.6 L252.3 275.5 L251.5 275.2 L250.8 275.3 L250.0 275.5 L249.3 275.9 L248.5 275.7 L247.8 275.5 L247.0 275.3 L246.3 276.3 L245.5 276.2 L244.8 276.0 L244.0 275.6 L243.3 275.5 L242.5 275.6 L241.8 275.7 L241.0 275.8 L240.3 275.3 L239.5 275.5 L238.8 275.9 L238.0 276.0 L237.3 275.9 L236.5 274.7 L235.8 275.7 L235.0 274.9 L234.3 275.2 L233.5 274.7 L232.8 274.7 L232.0 275.9 L231.3 275.1 L230.5 274.7 L229.8 275.4 L229.0 274.6 L228.3 275.3 L227.5 274.9 L226.8 274.7 L226.0 275.1 L225.3 275.1 L224.5 275.8 L223.8 275.7 L223.0 275.5 L222.3 275.6 L221.5 275.4 L220.8 275.3 L220.0 274.6 L219.3 274.9 L218.5 275.8 L217.8 275.2 L217.0 275.5 L216.3 275.2 L215.5 275.2 L214.8 275.9 L214.0 275.1Z" fill="#9a55a6"/><path d="M214.0 276.8 L215.5 273.0 L644.0 273.0" fill="none" stroke="#c8505a" stroke-width="1.25"/><path d="M216.0 287.6 V292.0 H220.4Z" fill="#131a2b"/><path d="M642.0 287.6 V292.0 H637.6Z" fill="#131a2b"/><rect x="628.5" y="287.4" width="6.6" height="4.6" fill="none" stroke="#1d2a30" stroke-width=".7" opacity=".8"/><path d="M630.1 288.8 H633.5 L631.8 290.6Z" fill="#131a2b"/><rect x="214.0" y="294.4" width="85.0" height="33.6" fill="#9a9896"/><rect x="214.0" y="320.6" width="85.0" height="7.4" fill="#4c4744"/><rect x="214.2" y="294.6" width="84.5" height="33.1" fill="none" stroke="#4c4744" stroke-width="0.6" opacity=".8"/><rect x="214.0" y="307.5" width="85.0" height="0.5" fill="#5e5855" opacity=".8"/><path d="M214.0 307.4 L214.8 307.4 L215.5 307.4 L216.3 307.4 L217.0 307.4 L217.8 307.4 L218.5 307.4 L219.3 307.4 L220.0 307.4 L220.8 307.4 L221.5 307.4 L222.3 307.4 L223.0 307.4 L223.8 307.4 L224.5 307.4 L225.3 307.4 L226.0 307.4 L226.8 307.4 L227.5 307.4 L228.3 307.4 L229.0 307.4 L229.8 307.4 L230.5 307.4 L231.3 307.4 L232.1 307.4 L232.8 307.4 L233.6 307.4 L234.3 307.4 L235.1 307.4 L235.8 307.4 L236.6 307.4 L237.3 307.4 L238.1 307.4 L238.8 307.4 L239.6 307.4 L240.3 307.4 L241.1 307.4 L241.8 307.4 L242.6 307.4 L243.3 307.4 L244.1 307.4 L244.8 307.4 L245.6 307.4 L246.3 307.4 L247.1 307.4 L247.8 307.4 L248.6 307.4 L249.4 307.4 L250.1 307.4 L250.9 307.4 L251.6 307.4 L252.4 307.4 L253.1 307.4 L253.9 307.4 L254.6 307.4 L255.4 307.4 L256.1 307.4 L256.9 307.4 L257.6 307.4 L258.4 307.4 L259.1 307.4 L259.9 307.4 L260.6 307.4 L261.4 307.3 L262.1 307.3 L262.9 307.3 L263.6 307.3 L264.4 307.2 L265.2 307.1 L265.9 307.2 L266.7 307.2 L267.4 307.3 L268.2 307.2 L268.9 307.0 L269.7 307.1 L270.4 307.2 L271.2 307.2 L271.9 307.1 L272.7 307.1 L273.4 307.3 L274.2 307.1 L274.9 307.2 L275.7 307.2 L276.4 307.3 L277.2 307.2 L277.9 307.2 L278.7 307.2 L279.4 307.3 L280.2 307.3 L280.9 307.2 L281.7 307.3 L282.5 307.3 L283.2 307.1 L284.0 307.3 L284.7 307.2 L285.5 307.3 L286.2 307.1 L287.0 307.3 L287.7 307.2 L288.5 307.1 L289.2 307.3 L290.0 307.2 L290.7 307.2 L291.5 307.1 L292.2 307.1 L293.0 307.1 L293.7 306.8 L294.5 306.7 L295.2 306.4 L296.0 306.5 L296.7 306.3 L297.5 306.0 L298.2 305.7 L299.0 306.0 L299.0 309.6 L298.2 309.9 L297.5 309.6 L296.7 309.3 L296.0 309.1 L295.2 309.2 L294.5 308.9 L293.7 308.8 L293.0 308.5 L292.2 308.5 L291.5 308.5 L290.7 308.4 L290.0 308.4 L289.2 308.3 L288.5 308.5 L287.7 308.4 L287.0 308.3 L286.2 308.5 L285.5 308.3 L284.7 308.4 L284.0 308.3 L283.2 308.5 L282.5 308.3 L281.7 308.3 L280.9 308.4 L280.2 308.3 L279.4 308.3 L278.7 308.4 L277.9 308.4 L277.2 308.4 L276.4 308.3 L275.7 308.4 L274.9 308.4 L274.2 308.5 L273.4 308.3 L272.7 308.5 L271.9 308.5 L271.2 308.4 L270.4 308.4 L269.7 308.5 L268.9 308.6 L268.2 308.4 L267.4 308.3 L266.7 308.4 L265.9 308.4 L265.2 308.5 L264.4 308.4 L263.6 308.3 L262.9 308.3 L262.1 308.3 L261.4 308.3 L260.6 308.1 L259.9 308.1 L259.1 308.1 L258.4 308.1 L257.6 308.1 L256.9 308.1 L256.1 308.1 L255.4 308.1 L254.6 308.1 L253.9 308.1 L253.1 308.1 L252.4 308.1 L251.6 308.1 L250.9 308.1 L250.1 308.1 L249.4 308.1 L248.6 308.1 L247.8 308.1 L247.1 308.1 L246.3 308.1 L245.6 308.1 L244.8 308.1 L244.1 308.1 L243.3 308.1 L242.6 308.1 L241.8 308.1 L241.1 308.1 L240.3 308.1 L239.6 308.1 L238.8 308.1 L238.1 308.1 L237.3 308.1 L236.6 308.1 L235.8 308.1 L235.1 308.1 L234.3 308.1 L233.6 308.1 L232.8 308.1 L232.1 308.1 L231.3 308.1 L230.5 308.1 L229.8 308.1 L229.0 308.1 L228.3 308.1 L227.5 308.1 L226.8 308.1 L226.0 308.1 L225.3 308.1 L224.5 308.1 L223.8 308.1 L223.0 308.1 L222.3 308.1 L221.5 308.1 L220.8 308.1 L220.0 308.1 L219.3 308.1 L218.5 308.1 L217.8 308.1 L217.0 308.1 L216.3 308.1 L215.5 308.1 L214.8 308.1 L214.0 308.1Z" fill="#5e5855"/><path d="M216.0 322.4 V326.8 H220.4Z" fill="#131a2b"/><path d="M297.0 322.4 V326.8 H292.6Z" fill="#131a2b"/><rect x="283.5" y="322.2" width="6.6" height="4.6" fill="none" stroke="#1d2a30" stroke-width=".7" opacity=".8"/><path d="M285.1 323.6 H288.5 L286.8 325.4Z" fill="#131a2b"/><rect x="300.0" y="294.4" width="85.0" height="33.6" fill="#c696b8"/><rect x="300.0" y="320.6" width="85.0" height="7.4" fill="#8b3f7c"/><rect x="300.2" y="294.6" width="84.5" height="33.1" fill="none" stroke="#8b3f7c" stroke-width="0.6" opacity=".8"/><rect x="300.0" y="307.5" width="85.0" height="0.5" fill="#9e4f8a" opacity=".8"/><path d="M300.0 307.4 L300.8 307.0 L301.5 306.7 L302.3 306.5 L303.0 306.2 L303.8 306.0 L304.5 305.8 L305.3 305.6 L306.0 305.5 L306.8 305.4 L307.5 305.1 L308.3 305.0 L309.0 304.8 L309.8 304.7 L310.5 304.5 L311.3 304.5 L312.0 304.6 L312.8 304.4 L313.5 304.4 L314.3 304.4 L315.0 304.2 L315.8 304.4 L316.5 304.4 L317.3 304.3 L318.1 304.5 L318.8 304.5 L319.6 304.6 L320.3 304.6 L321.1 304.7 L321.8 304.8 L322.6 304.8 L323.3 304.8 L324.1 304.4 L324.8 304.3 L325.6 304.0 L326.3 303.8 L327.1 303.9 L327.8 303.8 L328.6 303.7 L329.3 303.3 L330.1 303.5 L330.8 303.4 L331.6 303.0 L332.3 303.0 L333.1 303.2 L333.8 302.9 L334.6 302.9 L335.4 303.0 L336.1 303.2 L336.9 303.0 L337.6 303.2 L338.4 303.2 L339.1 303.1 L339.9 303.3 L340.6 303.4 L341.4 303.9 L342.1 303.9 L342.9 304.0 L343.6 304.4 L344.4 304.2 L345.1 304.6 L345.9 304.8 L346.6 304.9 L347.4 305.0 L348.1 304.7 L348.9 304.7 L349.6 304.6 L350.4 304.6 L351.2 304.7 L351.9 304.5 L352.7 304.3 L353.4 304.3 L354.2 304.3 L354.9 304.5 L355.7 304.6 L356.4 304.7 L357.2 304.6 L357.9 304.7 L358.7 304.8 L359.4 304.9 L360.2 305.0 L360.9 305.2 L361.7 305.3 L362.4 305.6 L363.2 305.6 L363.9 305.9 L364.7 306.2 L365.4 306.3 L366.2 306.5 L366.9 306.8 L367.7 307.1 L368.5 307.4 L369.2 307.4 L370.0 307.4 L370.7 307.4 L371.5 307.4 L372.2 307.4 L373.0 307.4 L373.7 307.4 L374.5 307.4 L375.2 307.4 L376.0 307.4 L376.7 307.4 L377.5 307.4 L378.2 307.4 L379.0 307.4 L379.7 307.4 L380.5 307.4 L381.2 307.4 L382.0 307.4 L382.7 307.4 L383.5 307.4 L384.2 307.4 L385.0 307.4 L385.0 308.1 L384.2 308.1 L383.5 308.1 L382.7 308.1 L382.0 308.1 L381.2 308.1 L380.5 308.1 L379.7 308.1 L379.0 308.1 L378.2 308.1 L377.5 308.1 L376.7 308.1 L376.0 308.1 L375.2 308.1 L374.5 308.1 L373.7 308.1 L373.0 308.1 L372.2 308.1 L371.5 308.1 L370.7 308.1 L370.0 308.1 L369.2 308.1 L368.5 308.1 L367.7 308.5 L366.9 308.8 L366.2 309.1 L365.4 309.3 L364.7 309.4 L363.9 309.7 L363.2 310.0 L362.4 310.0 L361.7 310.3 L360.9 310.4 L360.2 310.6 L359.4 310.7 L358.7 310.8 L357.9 310.9 L357.2 311.0 L356.4 310.9 L355.7 311.0 L354.9 311.1 L354.2 311.3 L353.4 311.3 L352.7 311.3 L351.9 311.1 L351.2 310.9 L350.4 311.0 L349.6 311.0 L348.9 310.9 L348.1 310.9 L347.4 310.6 L346.6 310.7 L345.9 310.8 L345.1 311.0 L344.4 311.4 L343.6 311.2 L342.9 311.6 L342.1 311.7 L341.4 311.7 L340.6 312.2 L339.9 312.3 L339.1 312.5 L338.4 312.4 L337.6 312.4 L336.9 312.6 L336.1 312.4 L335.4 312.6 L334.6 312.7 L333.8 312.7 L333.1 312.4 L332.3 312.6 L331.6 312.6 L330.8 312.2 L330.1 312.1 L329.3 312.3 L328.6 311.9 L327.8 311.8 L327.1 311.7 L326.3 311.8 L325.6 311.6 L324.8 311.3 L324.1 311.2 L323.3 310.8 L322.6 310.8 L321.8 310.8 L321.1 310.9 L320.3 311.0 L319.6 311.0 L318.8 311.1 L318.1 311.1 L317.3 311.3 L316.5 311.2 L315.8 311.2 L315.0 311.4 L314.3 311.2 L313.5 311.2 L312.8 311.2 L312.0 311.0 L311.3 311.1 L310.5 311.1 L309.8 310.9 L309.0 310.8 L308.3 310.6 L307.5 310.5 L306.8 310.2 L306.0 310.1 L305.3 310.0 L304.5 309.8 L303.8 309.6 L303.0 309.4 L302.3 309.1 L301.5 308.9 L300.8 308.6 L300.0 308.2Z" fill="#9e4f8a"/><path d="M302.0 322.4 V326.8 H306.4Z" fill="#131a2b"/><path d="M383.0 322.4 V326.8 H378.6Z" fill="#131a2b"/><rect x="369.5" y="322.2" width="6.6" height="4.6" fill="none" stroke="#1d2a30" stroke-width=".7" opacity=".8"/><path d="M371.1 323.6 H374.5 L372.8 325.4Z" fill="#131a2b"/><rect x="386.0" y="294.4" width="85.0" height="33.6" fill="#c696b8"/><rect x="386.0" y="320.6" width="85.0" height="7.4" fill="#8b3f7c"/><rect x="386.2" y="294.6" width="84.5" height="33.1" fill="none" stroke="#8b3f7c" stroke-width="0.6" opacity=".8"/><rect x="386.0" y="307.5" width="85.0" height="0.5" fill="#9e4f8a" opacity=".8"/><path d="M386.0 307.4 L386.8 307.0 L387.5 306.7 L388.3 306.5 L389.0 306.2 L389.8 306.0 L390.5 305.8 L391.3 305.6 L392.0 305.4 L392.8 305.3 L393.5 305.0 L394.3 305.1 L395.0 304.9 L395.8 304.7 L396.5 304.8 L397.3 304.4 L398.0 304.6 L398.8 304.4 L399.5 304.5 L400.3 304.2 L401.0 304.3 L401.8 304.2 L402.5 304.4 L403.3 304.4 L404.1 304.4 L404.8 304.6 L405.6 304.7 L406.3 304.6 L407.1 304.9 L407.8 304.8 L408.6 304.9 L409.3 304.7 L410.1 304.6 L410.8 304.2 L411.6 303.9 L412.3 304.0 L413.1 303.7 L413.8 303.7 L414.6 303.3 L415.3 303.3 L416.1 303.4 L416.8 303.4 L417.6 303.0 L418.3 303.3 L419.1 302.9 L419.8 303.1 L420.6 303.1 L421.4 303.0 L422.1 303.1 L422.9 303.1 L423.6 303.3 L424.4 303.1 L425.1 303.4 L425.9 303.3 L426.6 303.7 L427.4 303.6 L428.1 303.7 L428.9 304.1 L429.6 304.3 L430.4 304.4 L431.1 304.5 L431.9 304.8 L432.6 304.9 L433.4 305.0 L434.1 304.8 L434.9 304.7 L435.6 304.7 L436.4 304.5 L437.2 304.6 L437.9 304.4 L438.7 304.6 L439.4 304.3 L440.2 304.3 L440.9 304.3 L441.7 304.5 L442.4 304.6 L443.2 304.7 L443.9 304.6 L444.7 304.8 L445.4 304.8 L446.2 305.2 L446.9 305.2 L447.7 305.3 L448.4 305.5 L449.2 305.7 L449.9 306.0 L450.7 306.2 L451.4 306.3 L452.2 306.5 L452.9 306.8 L453.7 307.2 L454.5 307.4 L455.2 307.4 L456.0 307.4 L456.7 307.4 L457.5 307.4 L458.2 307.4 L459.0 307.4 L459.7 307.4 L460.5 307.4 L461.2 307.4 L462.0 307.4 L462.7 307.4 L463.5 307.4 L464.2 307.4 L465.0 307.4 L465.7 307.4 L466.5 307.4 L467.2 307.4 L468.0 307.4 L468.7 307.4 L469.5 307.4 L470.2 307.4 L471.0 307.4 L471.0 308.1 L470.2 308.1 L469.5 308.1 L468.7 308.1 L468.0 308.1 L467.2 308.1 L466.5 308.1 L465.7 308.1 L465.0 308.1 L464.2 308.1 L463.5 308.1 L462.7 308.1 L462.0 308.1 L461.2 308.1 L460.5 308.1 L459.7 308.1 L459.0 308.1 L458.2 308.1 L457.5 308.1 L456.7 308.1 L456.0 308.1 L455.2 308.1 L454.5 308.1 L453.7 308.4 L452.9 308.8 L452.2 309.1 L451.4 309.3 L450.7 309.4 L449.9 309.6 L449.2 309.9 L448.4 310.1 L447.7 310.3 L446.9 310.4 L446.2 310.4 L445.4 310.8 L444.7 310.8 L443.9 311.0 L443.2 310.9 L442.4 311.0 L441.7 311.1 L440.9 311.3 L440.2 311.3 L439.4 311.3 L438.7 311.0 L437.9 311.2 L437.2 311.0 L436.4 311.1 L435.6 310.9 L434.9 310.9 L434.1 310.8 L433.4 310.6 L432.6 310.7 L431.9 310.8 L431.1 311.1 L430.4 311.2 L429.6 311.3 L428.9 311.5 L428.1 311.9 L427.4 312.0 L426.6 311.9 L425.9 312.3 L425.1 312.2 L424.4 312.5 L423.6 312.3 L422.9 312.5 L422.1 312.5 L421.4 312.6 L420.6 312.5 L419.8 312.5 L419.1 312.7 L418.3 312.3 L417.6 312.6 L416.8 312.2 L416.1 312.2 L415.3 312.3 L414.6 312.3 L413.8 311.9 L413.1 311.9 L412.3 311.6 L411.6 311.7 L410.8 311.4 L410.1 311.0 L409.3 310.9 L408.6 310.7 L407.8 310.8 L407.1 310.7 L406.3 311.0 L405.6 310.9 L404.8 311.0 L404.1 311.2 L403.3 311.2 L402.5 311.2 L401.8 311.4 L401.0 311.3 L400.3 311.4 L399.5 311.1 L398.8 311.2 L398.0 311.0 L397.3 311.2 L396.5 310.8 L395.8 310.9 L395.0 310.7 L394.3 310.5 L393.5 310.6 L392.8 310.3 L392.0 310.2 L391.3 310.0 L390.5 309.8 L389.8 309.6 L389.0 309.4 L388.3 309.1 L387.5 308.9 L386.8 308.6 L386.0 308.2Z" fill="#9e4f8a"/><path d="M388.0 322.4 V326.8 H392.4Z" fill="#131a2b"/><path d="M469.0 322.4 V326.8 H464.6Z" fill="#131a2b"/><rect x="455.5" y="322.2" width="6.6" height="4.6" fill="none" stroke="#1d2a30" stroke-width=".7" opacity=".8"/><path d="M457.1 323.6 H460.5 L458.8 325.4Z" fill="#131a2b"/><rect x="472.0" y="294.4" width="172.0" height="33.6" fill="#b994c0"/><rect x="472.0" y="320.6" width="172.0" height="7.4" fill="#6f3d7a"/><rect x="472.2" y="294.6" width="171.5" height="33.1" fill="none" stroke="#6f3d7a" stroke-width="0.6" opacity=".8"/><rect x="472.0" y="307.5" width="172.0" height="0.5" fill="#8d4f9b" opacity=".8"/><path d="M472.0 307.4 L472.8 303.4 L473.5 301.6 L474.3 302.3 L475.0 303.2 L475.8 302.8 L476.5 303.0 L477.3 303.4 L478.0 303.2 L478.8 303.2 L479.5 303.9 L480.3 304.2 L481.0 305.0 L481.8 305.3 L482.5 306.0 L483.3 306.5 L484.0 306.8 L484.8 307.2 L485.5 307.4 L486.3 307.4 L487.0 307.4 L487.8 307.4 L488.5 307.4 L489.3 307.4 L490.0 307.4 L490.8 307.4 L491.5 307.4 L492.3 307.4 L493.0 307.4 L493.8 306.4 L494.5 303.0 L495.3 303.1 L496.0 303.1 L496.8 302.6 L497.5 303.0 L498.3 302.6 L499.0 302.6 L499.8 302.9 L500.5 303.6 L501.3 304.2 L502.0 304.4 L502.8 305.2 L503.5 305.6 L504.3 306.1 L505.0 306.6 L505.8 307.0 L506.6 307.3 L507.3 307.4 L508.1 307.4 L508.8 307.4 L509.6 307.4 L510.3 307.4 L511.1 307.4 L511.8 307.4 L512.6 307.4 L513.3 307.4 L514.1 307.4 L514.8 307.4 L515.6 304.5 L516.3 301.0 L517.1 302.5 L517.8 302.9 L518.6 303.1 L519.3 303.0 L520.1 303.3 L520.8 302.9 L521.6 303.2 L522.3 303.7 L523.1 304.4 L523.8 304.8 L524.6 305.3 L525.3 305.9 L526.1 306.2 L526.8 306.8 L527.6 307.1 L528.3 307.4 L529.1 307.4 L529.8 307.4 L530.6 307.4 L531.3 307.4 L532.1 307.4 L532.8 307.4 L533.6 307.4 L534.3 307.4 L535.1 307.4 L535.8 307.4 L536.6 307.1 L537.3 304.0 L538.1 302.7 L538.8 302.9 L539.6 302.6 L540.3 303.3 L541.1 302.6 L541.9 303.0 L542.6 303.0 L543.4 303.5 L544.1 304.0 L544.9 304.3 L545.6 304.9 L546.4 305.6 L547.1 306.0 L547.9 306.5 L548.6 306.9 L549.4 307.3 L550.1 307.4 L550.9 307.4 L551.6 307.4 L552.4 307.4 L553.1 307.4 L553.9 307.4 L554.6 307.4 L555.4 307.4 L556.1 307.4 L556.9 307.4 L557.6 307.4 L558.4 305.3 L559.1 300.9 L559.9 301.9 L560.6 303.4 L561.4 303.0 L562.1 303.2 L562.9 303.4 L563.6 302.8 L564.4 303.0 L565.1 303.3 L565.9 304.2 L566.6 304.5 L567.4 305.0 L568.1 305.6 L568.9 306.1 L569.6 306.6 L570.4 307.0 L571.1 307.4 L571.9 307.4 L572.6 307.4 L573.4 307.4 L574.1 307.4 L574.9 307.4 L575.7 307.4 L576.4 307.4 L577.2 307.4 L577.9 307.4 L578.7 307.4 L579.4 307.4 L580.2 304.8 L580.9 302.6 L581.7 303.1 L582.4 303.1 L583.2 302.9 L583.9 303.1 L584.7 302.9 L585.4 302.6 L586.2 302.9 L586.9 303.5 L587.7 304.3 L588.4 304.7 L589.2 305.3 L589.9 305.8 L590.7 306.3 L591.4 306.7 L592.2 307.2 L592.9 307.4 L593.7 307.4 L594.4 307.4 L595.2 307.4 L595.9 307.4 L596.7 307.4 L597.4 307.4 L598.2 307.4 L598.9 307.4 L599.7 307.4 L600.4 307.4 L601.2 306.4 L601.9 302.0 L602.7 301.9 L603.4 303.0 L604.2 303.2 L604.9 303.3 L605.7 303.2 L606.4 302.9 L607.2 303.0 L607.9 303.4 L608.7 304.1 L609.4 304.6 L610.2 304.9 L611.0 305.6 L611.7 306.0 L612.5 306.5 L613.2 307.0 L614.0 307.3 L614.7 307.4 L615.5 307.4 L616.2 307.4 L617.0 307.4 L617.7 307.4 L618.5 307.4 L619.2 307.4 L620.0 307.4 L620.7 307.4 L621.5 307.4 L622.2 307.4 L623.0 305.5 L623.7 302.5 L624.5 302.9 L625.2 302.5 L626.0 303.1 L626.7 302.6 L627.5 303.1 L628.2 302.9 L629.0 303.3 L629.7 303.7 L630.5 303.9 L631.2 304.7 L632.0 305.1 L632.7 305.8 L633.5 306.3 L634.2 306.7 L635.0 307.1 L635.7 307.4 L636.5 307.4 L637.2 307.4 L638.0 307.4 L638.7 307.4 L639.5 307.4 L640.2 307.4 L641.0 307.4 L641.7 307.4 L642.5 307.4 L643.2 307.4 L644.0 307.4 L644.0 308.1 L643.2 308.1 L642.5 308.1 L641.7 308.1 L641.0 308.1 L640.2 308.1 L639.5 308.1 L638.7 308.1 L638.0 308.1 L637.2 308.1 L636.5 308.1 L635.7 308.2 L635.0 308.5 L634.2 308.9 L633.5 309.3 L632.7 309.8 L632.0 310.5 L631.2 310.9 L630.5 311.7 L629.7 311.9 L629.0 312.3 L628.2 312.7 L627.5 312.5 L626.7 313.0 L626.0 312.5 L625.2 313.1 L624.5 312.7 L623.7 313.1 L623.0 310.1 L622.2 308.1 L621.5 308.1 L620.7 308.1 L620.0 308.1 L619.2 308.1 L618.5 308.1 L617.7 308.1 L617.0 308.1 L616.2 308.1 L615.5 308.1 L614.7 308.1 L614.0 308.3 L613.2 308.6 L612.5 309.1 L611.7 309.6 L611.0 310.0 L610.2 310.7 L609.4 311.0 L608.7 311.5 L607.9 312.2 L607.2 312.6 L606.4 312.7 L605.7 312.4 L604.9 312.3 L604.2 312.4 L603.4 312.6 L602.7 313.7 L601.9 313.6 L601.2 309.2 L600.4 308.1 L599.7 308.1 L598.9 308.1 L598.2 308.1 L597.4 308.1 L596.7 308.1 L595.9 308.1 L595.2 308.1 L594.4 308.1 L593.7 308.1 L592.9 308.1 L592.2 308.4 L591.4 308.9 L590.7 309.3 L589.9 309.8 L589.2 310.3 L588.4 310.9 L587.7 311.3 L586.9 312.1 L586.2 312.7 L585.4 313.0 L584.7 312.7 L583.9 312.5 L583.2 312.7 L582.4 312.5 L581.7 312.5 L580.9 313.0 L580.2 310.8 L579.4 308.1 L578.7 308.1 L577.9 308.1 L577.2 308.1 L576.4 308.1 L575.7 308.1 L574.9 308.1 L574.1 308.1 L573.4 308.1 L572.6 308.1 L571.9 308.1 L571.1 308.2 L570.4 308.6 L569.6 309.0 L568.9 309.5 L568.1 310.0 L567.4 310.6 L566.6 311.1 L565.9 311.4 L565.1 312.3 L564.4 312.6 L563.6 312.8 L562.9 312.2 L562.1 312.4 L561.4 312.6 L560.6 312.2 L559.9 313.7 L559.1 314.7 L558.4 310.3 L557.6 308.1 L556.9 308.1 L556.1 308.1 L555.4 308.1 L554.6 308.1 L553.9 308.1 L553.1 308.1 L552.4 308.1 L551.6 308.1 L550.9 308.1 L550.1 308.1 L549.4 308.3 L548.6 308.7 L547.9 309.1 L547.1 309.6 L546.4 310.0 L545.6 310.7 L544.9 311.3 L544.1 311.6 L543.4 312.1 L542.6 312.6 L541.9 312.6 L541.1 313.0 L540.3 312.3 L539.6 313.0 L538.8 312.7 L538.1 312.9 L537.3 311.6 L536.6 308.5 L535.8 308.1 L535.1 308.1 L534.3 308.1 L533.6 308.1 L532.8 308.1 L532.1 308.1 L531.3 308.1 L530.6 308.1 L529.8 308.1 L529.1 308.1 L528.3 308.2 L527.6 308.5 L526.8 308.8 L526.1 309.4 L525.3 309.7 L524.6 310.3 L523.8 310.8 L523.1 311.2 L522.3 311.9 L521.6 312.4 L520.8 312.7 L520.1 312.3 L519.3 312.6 L518.6 312.5 L517.8 312.7 L517.1 313.1 L516.3 314.6 L515.6 311.1 L514.8 308.1 L514.1 308.1 L513.3 308.1 L512.6 308.1 L511.8 308.1 L511.1 308.1 L510.3 308.1 L509.6 308.1 L508.8 308.1 L508.1 308.1 L507.3 308.1 L506.6 308.3 L505.8 308.6 L505.0 309.0 L504.3 309.5 L503.5 310.0 L502.8 310.4 L502.0 311.2 L501.3 311.4 L500.5 312.0 L499.8 312.7 L499.0 313.0 L498.3 313.0 L497.5 312.6 L496.8 313.0 L496.0 312.5 L495.3 312.5 L494.5 312.6 L493.8 309.2 L493.0 308.1 L492.3 308.1 L491.5 308.1 L490.8 308.1 L490.0 308.1 L489.3 308.1 L488.5 308.1 L487.8 308.1 L487.0 308.1 L486.3 308.1 L485.5 308.1 L484.8 308.4 L484.0 308.8 L483.3 309.1 L482.5 309.6 L481.8 310.3 L481.0 310.6 L480.3 311.4 L479.5 311.7 L478.8 312.4 L478.0 312.4 L477.3 312.2 L476.5 312.6 L475.8 312.8 L475.0 312.4 L474.3 313.3 L473.5 314.0 L472.8 312.2 L472.0 308.1Z" fill="#8d4f9b"/><path d="M474.0 322.4 V326.8 H478.4Z" fill="#131a2b"/><path d="M642.0 322.4 V326.8 H637.6Z" fill="#131a2b"/><rect x="628.5" y="322.2" width="6.6" height="4.6" fill="none" stroke="#1d2a30" stroke-width=".7" opacity=".8"/><path d="M630.1 323.6 H633.5 L631.8 325.4Z" fill="#131a2b"/><rect x="645.0" y="294.4" width="171.0" height="33.6" fill="#b994c0"/><rect x="645.0" y="320.6" width="171.0" height="7.4" fill="#6f3d7a"/><rect x="645.2" y="294.6" width="170.5" height="33.1" fill="none" stroke="#6f3d7a" stroke-width="0.6" opacity=".8"/><rect x="645.0" y="307.5" width="171.0" height="0.5" fill="#8d4f9b" opacity=".8"/><path d="M645.0 307.2 L645.8 304.4 L646.5 301.7 L647.2 299.5 L648.0 299.3 L648.8 298.8 L649.5 298.3 L650.2 297.8 L651.0 297.9 L651.8 297.8 L652.5 297.0 L653.2 297.9 L654.0 296.9 L654.8 297.1 L655.5 297.2 L656.2 297.5 L657.0 297.3 L657.8 297.4 L658.5 297.8 L659.2 298.1 L660.0 299.1 L660.8 299.2 L661.5 299.7 L662.2 299.4 L663.0 300.3 L663.8 301.5 L664.5 301.9 L665.2 302.6 L666.0 303.5 L666.8 304.0 L667.5 304.4 L668.2 305.0 L669.0 305.6 L669.8 306.0 L670.5 306.5 L671.2 306.9 L672.0 307.2 L672.8 307.4 L673.5 307.4 L674.2 307.4 L675.0 307.4 L675.8 307.4 L676.5 307.4 L677.2 307.4 L678.0 307.4 L678.8 307.4 L679.5 307.4 L680.2 307.4 L681.0 307.4 L681.8 307.4 L682.5 307.4 L683.2 307.4 L684.0 307.4 L684.8 307.4 L685.5 307.4 L686.2 307.4 L687.0 307.4 L687.8 307.2 L688.5 304.4 L689.2 301.7 L690.0 299.3 L690.8 299.1 L691.5 299.0 L692.2 298.1 L693.0 298.0 L693.8 297.7 L694.5 297.9 L695.2 297.9 L696.0 297.3 L696.8 296.9 L697.5 296.9 L698.2 297.5 L699.0 297.8 L699.8 297.5 L700.5 297.4 L701.2 298.4 L702.0 298.1 L702.8 299.0 L703.5 299.2 L704.2 299.8 L705.0 300.0 L705.8 300.7 L706.5 301.0 L707.2 301.7 L708.0 302.8 L708.8 303.4 L709.5 303.7 L710.2 304.6 L711.0 305.1 L711.8 305.6 L712.5 306.1 L713.2 306.5 L714.0 306.9 L714.8 307.2 L715.5 307.4 L716.2 307.4 L717.0 307.4 L717.8 307.4 L718.5 307.4 L719.2 307.4 L720.0 307.4 L720.8 307.4 L721.5 307.4 L722.2 307.4 L723.0 307.4 L723.8 307.4 L724.5 307.4 L725.2 307.4 L726.0 307.4 L726.8 307.4 L727.5 307.4 L728.2 307.4 L729.0 307.4 L729.8 307.4 L730.5 307.2 L731.2 304.4 L732.0 301.7 L732.8 299.9 L733.5 298.9 L734.2 298.9 L735.0 298.2 L735.8 298.1 L736.5 297.6 L737.2 297.9 L738.0 297.9 L738.8 297.1 L739.5 297.3 L740.2 297.2 L741.0 297.1 L741.8 297.1 L742.5 297.8 L743.2 297.9 L744.0 297.6 L744.8 298.3 L745.5 298.8 L746.2 298.9 L747.0 299.6 L747.8 299.6 L748.5 300.9 L749.2 301.1 L750.0 301.9 L750.8 302.7 L751.5 303.1 L752.2 304.0 L753.0 304.6 L753.8 305.2 L754.5 305.5 L755.2 306.0 L756.0 306.4 L756.8 306.9 L757.5 307.2 L758.2 307.4 L759.0 307.4 L759.8 307.4 L760.5 307.4 L761.2 307.4 L762.0 307.4 L762.8 307.4 L763.5 307.4 L764.2 307.4 L765.0 307.4 L765.8 307.4 L766.5 307.4 L767.2 307.4 L768.0 307.4 L768.8 307.4 L769.5 307.4 L770.2 307.4 L771.0 307.4 L771.8 307.4 L772.5 307.4 L773.2 307.2 L774.0 304.4 L774.8 301.7 L775.5 299.5 L776.2 298.8 L777.0 298.7 L777.8 298.3 L778.5 297.9 L779.2 298.0 L780.0 297.2 L780.8 297.2 L781.5 297.5 L782.2 297.4 L783.0 296.9 L783.8 297.5 L784.5 297.7 L785.2 297.2 L786.0 297.7 L786.8 298.0 L787.5 298.1 L788.2 298.3 L789.0 299.3 L789.8 299.5 L790.5 300.2 L791.2 300.6 L792.0 301.3 L792.8 301.8 L793.5 302.6 L794.2 303.3 L795.0 303.9 L795.8 304.5 L796.5 305.1 L797.2 305.5 L798.0 306.0 L798.8 306.4 L799.5 306.9 L800.2 307.2 L801.0 307.4 L801.8 307.4 L802.5 307.4 L803.2 307.4 L804.0 307.4 L804.8 307.4 L805.5 307.4 L806.2 307.4 L807.0 307.4 L807.8 307.4 L808.5 307.4 L809.2 307.4 L810.0 307.4 L810.8 307.4 L811.5 307.4 L812.2 307.4 L813.0 307.4 L813.8 307.4 L814.5 307.4 L815.2 307.4 L816.0 307.2 L816.0 308.4 L815.2 308.1 L814.5 308.1 L813.8 308.1 L813.0 308.1 L812.2 308.1 L811.5 308.1 L810.8 308.1 L810.0 308.1 L809.2 308.1 L808.5 308.1 L807.8 308.1 L807.0 308.1 L806.2 308.1 L805.5 308.1 L804.8 308.1 L804.0 308.1 L803.2 308.1 L802.5 308.1 L801.8 308.1 L801.0 308.1 L800.2 308.4 L799.5 308.7 L798.8 309.2 L798.0 309.6 L797.2 310.1 L796.5 310.5 L795.8 311.1 L795.0 311.7 L794.2 312.3 L793.5 313.0 L792.8 313.8 L792.0 314.3 L791.2 315.0 L790.5 315.4 L789.8 316.1 L789.0 316.3 L788.2 317.3 L787.5 317.5 L786.8 317.6 L786.0 317.9 L785.2 318.4 L784.5 317.9 L783.8 318.1 L783.0 318.7 L782.2 318.2 L781.5 318.1 L780.8 318.4 L780.0 318.4 L779.2 317.6 L778.5 317.7 L777.8 317.3 L777.0 316.9 L776.2 316.8 L775.5 316.1 L774.8 313.9 L774.0 311.2 L773.2 308.4 L772.5 308.1 L771.8 308.1 L771.0 308.1 L770.2 308.1 L769.5 308.1 L768.8 308.1 L768.0 308.1 L767.2 308.1 L766.5 308.1 L765.8 308.1 L765.0 308.1 L764.2 308.1 L763.5 308.1 L762.8 308.1 L762.0 308.1 L761.2 308.1 L760.5 308.1 L759.8 308.1 L759.0 308.1 L758.2 308.1 L757.5 308.4 L756.8 308.7 L756.0 309.2 L755.2 309.6 L754.5 310.1 L753.8 310.4 L753.0 311.0 L752.2 311.6 L751.5 312.5 L750.8 312.9 L750.0 313.7 L749.2 314.5 L748.5 314.7 L747.8 316.0 L747.0 316.0 L746.2 316.7 L745.5 316.8 L744.8 317.3 L744.0 318.0 L743.2 317.7 L742.5 317.8 L741.8 318.5 L741.0 318.5 L740.2 318.4 L739.5 318.3 L738.8 318.5 L738.0 317.7 L737.2 317.7 L736.5 318.0 L735.8 317.5 L735.0 317.4 L734.2 316.7 L733.5 316.7 L732.8 315.7 L732.0 313.9 L731.2 311.2 L730.5 308.4 L729.8 308.1 L729.0 308.1 L728.2 308.1 L727.5 308.1 L726.8 308.1 L726.0 308.1 L725.2 308.1 L724.5 308.1 L723.8 308.1 L723.0 308.1 L722.2 308.1 L721.5 308.1 L720.8 308.1 L720.0 308.1 L719.2 308.1 L718.5 308.1 L717.8 308.1 L717.0 308.1 L716.2 308.1 L715.5 308.1 L714.8 308.4 L714.0 308.7 L713.2 309.1 L712.5 309.5 L711.8 310.0 L711.0 310.5 L710.2 311.0 L709.5 311.9 L708.8 312.2 L708.0 312.8 L707.2 313.9 L706.5 314.6 L705.8 314.9 L705.0 315.6 L704.2 315.8 L703.5 316.4 L702.8 316.6 L702.0 317.5 L701.2 317.2 L700.5 318.2 L699.8 318.1 L699.0 317.8 L698.2 318.1 L697.5 318.7 L696.8 318.7 L696.0 318.3 L695.2 317.7 L694.5 317.7 L693.8 317.9 L693.0 317.6 L692.2 317.5 L691.5 316.6 L690.8 316.5 L690.0 316.3 L689.2 313.9 L688.5 311.2 L687.8 308.4 L687.0 308.1 L686.2 308.1 L685.5 308.1 L684.8 308.1 L684.0 308.1 L683.2 308.1 L682.5 308.1 L681.8 308.1 L681.0 308.1 L680.2 308.1 L679.5 308.1 L678.8 308.1 L678.0 308.1 L677.2 308.1 L676.5 308.1 L675.8 308.1 L675.0 308.1 L674.2 308.1 L673.5 308.1 L672.8 308.1 L672.0 308.4 L671.2 308.7 L670.5 309.1 L669.8 309.6 L669.0 310.0 L668.2 310.6 L667.5 311.2 L666.8 311.6 L666.0 312.1 L665.2 313.0 L664.5 313.7 L663.8 314.1 L663.0 315.3 L662.2 316.2 L661.5 315.9 L660.8 316.4 L660.0 316.5 L659.2 317.5 L658.5 317.8 L657.8 318.2 L657.0 318.3 L656.2 318.1 L655.5 318.4 L654.8 318.5 L654.0 318.7 L653.2 317.7 L652.5 318.6 L651.8 317.8 L651.0 317.7 L650.2 317.8 L649.5 317.3 L648.8 316.8 L648.0 316.3 L647.2 316.1 L646.5 313.9 L645.8 311.2 L645.0 308.4Z" fill="#8d4f9b"/><path d="M647.0 322.4 V326.8 H651.4Z" fill="#131a2b"/><path d="M814.0 322.4 V326.8 H809.6Z" fill="#131a2b"/><rect x="800.5" y="322.2" width="6.6" height="4.6" fill="none" stroke="#1d2a30" stroke-width=".7" opacity=".8"/><path d="M802.1 323.6 H805.5 L803.8 325.4Z" fill="#131a2b"/><rect x="1033.0" y="294.4" width="42.0" height="33.6" fill="#b994c0"/><rect x="1033.0" y="320.6" width="42.0" height="7.4" fill="#6f3d7a"/><rect x="1033.2" y="294.6" width="41.5" height="33.1" fill="none" stroke="#6f3d7a" stroke-width="0.6" opacity=".8"/><rect x="1033.0" y="307.5" width="42.0" height="0.5" fill="#8d4f9b" opacity=".8"/><path d="M1033.0 307.2 L1033.8 307.2 L1034.5 303.9 L1035.2 303.8 L1036.0 304.0 L1036.8 303.8 L1037.5 304.6 L1038.2 304.0 L1039.0 307.2 L1039.8 307.2 L1040.5 307.2 L1041.2 304.6 L1042.0 304.1 L1042.8 303.8 L1043.5 304.4 L1044.2 304.5 L1045.0 304.5 L1045.8 304.6 L1046.5 307.2 L1047.2 307.2 L1048.0 307.2 L1048.8 304.3 L1049.5 304.0 L1050.2 304.6 L1051.0 303.8 L1051.8 304.4 L1052.5 304.7 L1053.2 307.2 L1054.0 307.2 L1054.8 307.2 L1055.5 304.6 L1056.2 304.2 L1057.0 304.1 L1057.8 303.8 L1058.5 304.7 L1059.2 303.8 L1060.0 307.2 L1060.8 307.2 L1061.5 307.2 L1062.2 304.3 L1063.0 304.4 L1063.8 304.1 L1064.5 304.5 L1065.2 303.9 L1066.0 304.5 L1066.8 303.8 L1067.5 307.2 L1068.2 307.2 L1069.0 307.2 L1069.8 303.9 L1070.5 304.7 L1071.2 304.2 L1072.0 304.3 L1072.8 304.6 L1073.5 304.0 L1074.2 307.2 L1075.0 307.2 L1075.0 308.4 L1074.2 308.4 L1073.5 311.6 L1072.8 311.0 L1072.0 311.3 L1071.2 311.4 L1070.5 310.9 L1069.8 311.7 L1069.0 308.4 L1068.2 308.4 L1067.5 308.4 L1066.8 311.8 L1066.0 311.1 L1065.2 311.7 L1064.5 311.1 L1063.8 311.5 L1063.0 311.2 L1062.2 311.3 L1061.5 308.4 L1060.8 308.4 L1060.0 308.4 L1059.2 311.8 L1058.5 310.9 L1057.8 311.8 L1057.0 311.5 L1056.2 311.4 L1055.5 311.0 L1054.8 308.4 L1054.0 308.4 L1053.2 308.4 L1052.5 310.9 L1051.8 311.2 L1051.0 311.8 L1050.2 311.0 L1049.5 311.6 L1048.8 311.3 L1048.0 308.4 L1047.2 308.4 L1046.5 308.4 L1045.8 311.0 L1045.0 311.1 L1044.2 311.1 L1043.5 311.2 L1042.8 311.8 L1042.0 311.5 L1041.2 311.0 L1040.5 308.4 L1039.8 308.4 L1039.0 308.4 L1038.2 311.6 L1037.5 311.0 L1036.8 311.8 L1036.0 311.6 L1035.2 311.8 L1034.5 311.7 L1033.8 308.4 L1033.0 308.4Z" fill="#8d4f9b"/><path d="M1035.0 322.4 V326.8 H1039.4Z" fill="#131a2b"/><path d="M1073.0 322.4 V326.8 H1068.6Z" fill="#131a2b"/><rect x="1059.5" y="322.2" width="6.6" height="4.6" fill="none" stroke="#1d2a30" stroke-width=".7" opacity=".8"/><path d="M1061.1 323.6 H1064.5 L1062.8 325.4Z" fill="#131a2b"/><rect x="1076.0" y="294.4" width="42.0" height="33.6" fill="#b994c0"/><rect x="1076.0" y="320.6" width="42.0" height="7.4" fill="#6f3d7a"/><rect x="1076.2" y="294.6" width="41.5" height="33.1" fill="none" stroke="#6f3d7a" stroke-width="0.6" opacity=".8"/><rect x="1076.0" y="307.5" width="42.0" height="0.5" fill="#8d4f9b" opacity=".8"/><path d="M1076.0 307.2 L1076.8 307.2 L1077.5 304.1 L1078.2 304.5 L1079.0 303.8 L1079.8 303.6 L1080.5 303.8 L1081.2 303.7 L1082.0 307.2 L1082.8 307.2 L1083.5 307.2 L1084.2 304.2 L1085.0 304.6 L1085.8 304.2 L1086.5 304.0 L1087.2 304.0 L1088.0 304.2 L1088.8 304.3 L1089.5 307.2 L1090.2 307.2 L1091.0 307.2 L1091.8 304.5 L1092.5 303.9 L1093.2 304.2 L1094.0 304.2 L1094.8 304.5 L1095.5 304.0 L1096.2 307.2 L1097.0 307.2 L1097.8 307.2 L1098.5 304.0 L1099.2 303.7 L1100.0 303.9 L1100.8 303.7 L1101.5 303.7 L1102.2 303.9 L1103.0 307.2 L1103.8 307.2 L1104.5 307.2 L1105.2 304.7 L1106.0 303.8 L1106.8 303.9 L1107.5 304.0 L1108.2 304.4 L1109.0 304.3 L1109.8 304.5 L1110.5 307.2 L1111.2 307.2 L1112.0 307.2 L1112.8 304.7 L1113.5 304.5 L1114.2 304.3 L1115.0 303.7 L1115.8 303.8 L1116.5 304.2 L1117.2 307.2 L1118.0 307.2 L1118.0 308.4 L1117.2 308.4 L1116.5 311.4 L1115.8 311.8 L1115.0 311.9 L1114.2 311.3 L1113.5 311.1 L1112.8 310.9 L1112.0 308.4 L1111.2 308.4 L1110.5 308.4 L1109.8 311.1 L1109.0 311.3 L1108.2 311.2 L1107.5 311.6 L1106.8 311.7 L1106.0 311.8 L1105.2 310.9 L1104.5 308.4 L1103.8 308.4 L1103.0 308.4 L1102.2 311.7 L1101.5 311.9 L1100.8 311.9 L1100.0 311.7 L1099.2 311.9 L1098.5 311.6 L1097.8 308.4 L1097.0 308.4 L1096.2 308.4 L1095.5 311.6 L1094.8 311.1 L1094.0 311.4 L1093.2 311.4 L1092.5 311.7 L1091.8 311.1 L1091.0 308.4 L1090.2 308.4 L1089.5 308.4 L1088.8 311.3 L1088.0 311.4 L1087.2 311.6 L1086.5 311.6 L1085.8 311.4 L1085.0 311.0 L1084.2 311.4 L1083.5 308.4 L1082.8 308.4 L1082.0 308.4 L1081.2 311.9 L1080.5 311.8 L1079.8 312.0 L1079.0 311.8 L1078.2 311.1 L1077.5 311.5 L1076.8 308.4 L1076.0 308.4Z" fill="#8d4f9b"/><path d="M1078.0 322.4 V326.8 H1082.4Z" fill="#131a2b"/><path d="M1116.0 322.4 V326.8 H1111.6Z" fill="#131a2b"/><rect x="1102.5" y="322.2" width="6.6" height="4.6" fill="none" stroke="#1d2a30" stroke-width=".7" opacity=".8"/><path d="M1104.1 323.6 H1107.5 L1105.8 325.4Z" fill="#131a2b"/><rect x="214.0" y="329.2" width="85.0" height="33.6" fill="#c594bf"/><rect x="214.0" y="355.4" width="85.0" height="7.4" fill="#8b3f7c"/><rect x="214.2" y="329.4" width="84.5" height="33.1" fill="none" stroke="#8b3f7c" stroke-width="0.6" opacity=".8"/><rect x="214.0" y="342.3" width="85.0" height="0.5" fill="#a4509a" opacity=".8"/><path d="M214.0 354.4 L218.0 342.6 L299.0 342.6" fill="none" stroke="#d8553f" stroke-width="1.25"/><path d="M216.0 357.2 V361.6 H220.4Z" fill="#131a2b"/><path d="M297.0 357.2 V361.6 H292.6Z" fill="#131a2b"/><rect x="283.5" y="357.0" width="6.6" height="4.6" fill="none" stroke="#1d2a30" stroke-width=".7" opacity=".8"/><path d="M285.1 358.4 H288.5 L286.8 360.2Z" fill="#131a2b"/><rect x="300.0" y="329.2" width="344.0" height="33.6" fill="#a996c2"/><rect x="300.0" y="355.4" width="344.0" height="7.4" fill="#5e3f7e"/><rect x="300.2" y="329.4" width="343.5" height="33.1" fill="none" stroke="#5e3f7e" stroke-width="0.6" opacity=".8"/><rect x="300.0" y="342.3" width="344.0" height="0.5" fill="#8a62b4" opacity=".8"/><path d="M300.0 341.5 L300.8 341.0 L301.5 341.3 L302.3 341.0 L303.0 341.0 L303.8 341.2 L304.5 341.5 L305.3 341.2 L306.0 341.7 L306.8 341.8 L307.5 341.4 L308.3 341.5 L309.0 341.7 L309.8 341.7 L310.5 341.8 L311.3 341.2 L312.0 341.3 L312.8 341.1 L313.5 341.1 L314.3 341.5 L315.0 341.3 L315.8 341.6 L316.5 341.2 L317.3 341.2 L318.0 341.7 L318.8 341.8 L319.5 341.7 L320.3 341.4 L321.0 341.6 L321.8 341.8 L322.5 341.2 L323.3 341.2 L324.0 341.5 L324.8 341.8 L325.5 341.2 L326.3 341.4 L327.0 341.8 L327.8 341.6 L328.5 341.4 L329.3 341.2 L330.0 341.5 L330.8 341.4 L331.5 341.7 L332.3 341.7 L333.0 341.2 L333.8 341.6 L334.6 341.8 L335.3 341.4 L336.1 341.7 L336.8 341.7 L337.6 341.5 L338.3 341.4 L339.1 341.4 L339.8 341.3 L340.6 341.5 L341.3 341.8 L342.1 341.3 L342.8 341.8 L343.6 341.5 L344.3 341.5 L345.1 341.3 L345.8 341.3 L346.6 341.6 L347.3 341.2 L348.1 341.2 L348.8 341.3 L349.6 341.5 L350.3 340.9 L351.1 341.1 L351.8 341.5 L352.6 341.3 L353.3 340.7 L354.1 341.3 L354.8 341.1 L355.6 340.8 L356.3 340.7 L357.1 340.8 L357.8 340.7 L358.6 341.3 L359.3 341.2 L360.1 340.5 L360.8 340.6 L361.6 341.2 L362.3 341.2 L363.1 341.0 L363.8 340.5 L364.6 341.0 L365.3 340.7 L366.1 340.5 L366.8 340.7 L367.6 340.5 L368.3 341.0 L369.1 341.1 L369.9 341.3 L370.6 340.7 L371.4 341.2 L372.1 340.6 L372.9 340.8 L373.6 341.2 L374.4 340.8 L375.1 341.3 L375.9 341.1 L376.6 341.4 L377.4 340.9 L378.1 340.9 L378.9 340.9 L379.6 341.6 L380.4 341.0 L381.1 341.3 L381.9 341.1 L382.6 341.4 L383.4 341.3 L384.1 341.4 L384.9 341.2 L385.6 341.8 L386.4 341.8 L387.1 341.4 L387.9 341.6 L388.6 341.5 L389.4 341.8 L390.1 341.3 L390.9 341.8 L391.6 341.2 L392.4 341.2 L393.1 341.5 L393.9 341.8 L394.6 341.4 L395.4 341.7 L396.1 341.5 L396.9 341.8 L397.6 341.1 L398.4 341.4 L399.1 341.6 L399.9 341.8 L400.6 341.3 L401.4 341.2 L402.1 341.2 L402.9 341.8 L403.7 341.6 L404.4 341.6 L405.2 341.3 L405.9 341.7 L406.7 341.4 L407.4 341.1 L408.2 341.3 L408.9 341.8 L409.7 341.8 L410.4 341.8 L411.2 341.3 L411.9 341.4 L412.7 341.5 L413.4 341.5 L414.2 341.5 L414.9 341.4 L415.7 341.4 L416.4 341.2 L417.2 341.3 L417.9 341.2 L418.7 341.2 L419.4 341.2 L420.2 341.3 L420.9 341.8 L421.7 341.3 L422.4 341.2 L423.2 341.5 L423.9 341.2 L424.7 341.7 L425.4 341.1 L426.2 341.4 L426.9 341.2 L427.7 341.5 L428.4 341.4 L429.2 341.3 L429.9 341.3 L430.7 341.5 L431.4 341.2 L432.2 340.7 L432.9 341.0 L433.7 340.7 L434.4 340.8 L435.2 340.7 L435.9 340.6 L436.7 340.8 L437.4 341.1 L438.2 341.1 L439.0 341.0 L439.7 341.2 L440.5 341.1 L441.2 340.6 L442.0 340.5 L442.7 341.0 L443.5 340.6 L444.2 340.6 L445.0 340.5 L445.7 340.6 L446.5 340.8 L447.2 341.2 L448.0 340.6 L448.7 341.0 L449.5 340.8 L450.2 341.0 L451.0 340.9 L451.7 340.6 L452.5 341.2 L453.2 341.0 L454.0 340.9 L454.7 341.0 L455.5 340.7 L456.2 341.2 L457.0 340.8 L457.7 341.0 L458.5 340.8 L459.2 341.5 L460.0 341.5 L460.7 341.5 L461.5 341.0 L462.2 341.7 L463.0 341.6 L463.7 341.3 L464.5 341.1 L465.2 341.7 L466.0 341.5 L466.7 341.3 L467.5 341.3 L468.2 341.3 L469.0 341.3 L469.7 341.7 L470.5 341.6 L471.2 341.8 L472.0 341.3 L472.8 341.7 L473.5 341.6 L474.3 341.1 L475.0 341.4 L475.8 341.4 L476.5 341.3 L477.3 341.4 L478.0 341.3 L478.8 341.6 L479.5 341.8 L480.3 341.8 L481.0 341.8 L481.8 341.6 L482.5 341.7 L483.3 341.8 L484.0 341.5 L484.8 341.1 L485.5 341.3 L486.3 341.6 L487.0 341.3 L487.8 341.7 L488.5 341.8 L489.3 341.6 L490.0 341.5 L490.8 341.3 L491.5 341.5 L492.3 341.3 L493.0 341.8 L493.8 341.1 L494.5 341.6 L495.3 341.2 L496.0 341.8 L496.8 341.2 L497.5 341.7 L498.3 341.2 L499.0 341.2 L499.8 341.3 L500.5 341.6 L501.3 341.8 L502.0 341.7 L502.8 341.2 L503.5 341.7 L504.3 341.3 L505.0 341.3 L505.8 341.2 L506.6 341.6 L507.3 341.6 L508.1 341.6 L508.8 340.9 L509.6 341.3 L510.3 341.0 L511.1 341.1 L511.8 341.3 L512.6 341.4 L513.3 341.4 L514.1 340.7 L514.8 341.3 L515.6 340.6 L516.3 341.0 L517.1 340.8 L517.8 341.2 L518.6 340.7 L519.3 341.1 L520.1 341.0 L520.8 340.8 L521.6 341.1 L522.3 341.0 L523.1 340.6 L523.8 341.0 L524.6 340.9 L525.3 340.6 L526.1 341.1 L526.8 341.1 L527.6 341.1 L528.3 341.0 L529.1 341.0 L529.8 340.8 L530.6 340.9 L531.3 340.7 L532.1 341.3 L532.8 340.9 L533.6 340.8 L534.3 341.2 L535.1 341.4 L535.8 341.2 L536.6 341.4 L537.3 341.2 L538.1 341.0 L538.8 341.5 L539.6 341.6 L540.3 341.3 L541.1 341.6 L541.9 341.6 L542.6 341.5 L543.4 341.7 L544.1 341.8 L544.9 341.6 L545.6 341.5 L546.4 341.1 L547.1 341.4 L547.9 341.8 L548.6 341.7 L549.4 341.3 L550.1 341.4 L550.9 341.2 L551.6 341.1 L552.4 341.2 L553.1 341.8 L553.9 341.1 L554.6 341.4 L555.4 341.7 L556.1 341.7 L556.9 341.2 L557.6 341.7 L558.4 341.8 L559.1 341.6 L559.9 341.1 L560.6 341.5 L561.4 341.3 L562.1 341.8 L562.9 341.5 L563.6 341.6 L564.4 341.7 L565.1 341.3 L565.9 341.6 L566.6 341.8 L567.4 341.1 L568.1 341.5 L568.9 341.7 L569.6 341.8 L570.4 341.4 L571.1 341.5 L571.9 341.8 L572.6 341.5 L573.4 341.3 L574.1 341.4 L574.9 341.7 L575.7 341.5 L576.4 341.4 L577.2 341.4 L577.9 341.7 L578.7 341.2 L579.4 341.1 L580.2 341.3 L580.9 341.2 L581.7 341.6 L582.4 341.2 L583.2 341.7 L583.9 341.6 L584.7 341.3 L585.4 341.1 L586.2 341.6 L586.9 341.5 L587.7 341.6 L588.4 341.3 L589.2 341.5 L589.9 341.4 L590.7 340.9 L591.4 341.0 L592.2 340.7 L592.9 341.1 L593.7 340.9 L594.4 341.3 L595.2 340.6 L595.9 341.1 L596.7 340.9 L597.4 340.9 L598.2 340.5 L598.9 340.9 L599.7 340.5 L600.4 340.8 L601.2 341.1 L601.9 340.6 L602.7 341.1 L603.4 340.5 L604.2 340.9 L604.9 341.0 L605.7 340.5 L606.4 341.0 L607.2 340.9 L607.9 341.0 L608.7 340.8 L609.4 341.3 L610.2 341.0 L611.0 341.2 L611.7 340.7 L612.5 341.4 L613.2 340.9 L614.0 341.2 L614.7 341.1 L615.5 341.1 L616.2 341.0 L617.0 341.4 L617.7 341.4 L618.5 341.5 L619.2 340.9 L620.0 341.6 L620.7 341.6 L621.5 341.4 L622.2 341.4 L623.0 341.2 L623.7 341.8 L624.5 341.7 L625.2 341.7 L626.0 341.4 L626.7 341.5 L627.5 341.5 L628.2 341.2 L629.0 341.3 L629.7 341.2 L630.5 341.1 L631.2 341.6 L632.0 341.1 L632.7 341.5 L633.5 341.8 L634.2 341.2 L635.0 341.8 L635.7 341.8 L636.5 341.6 L637.2 341.6 L638.0 341.1 L638.7 341.2 L639.5 341.5 L640.2 341.4 L641.0 341.2 L641.7 341.2 L642.5 341.4 L643.2 341.5 L644.0 341.8 L644.0 343.4 L643.2 343.7 L642.5 343.8 L641.7 344.0 L641.0 344.0 L640.2 343.8 L639.5 343.7 L638.7 344.0 L638.0 344.1 L637.2 343.6 L636.5 343.6 L635.7 343.4 L635.0 343.4 L634.2 344.0 L633.5 343.4 L632.7 343.7 L632.0 344.1 L631.2 343.6 L630.5 344.1 L629.7 344.0 L629.0 343.9 L628.2 344.0 L627.5 343.7 L626.7 343.7 L626.0 343.8 L625.2 343.5 L624.5 343.5 L623.7 343.4 L623.0 344.0 L622.2 343.8 L621.5 343.8 L620.7 343.6 L620.0 343.6 L619.2 344.3 L618.5 343.7 L617.7 343.8 L617.0 343.8 L616.2 344.2 L615.5 344.1 L614.7 344.1 L614.0 344.0 L613.2 344.3 L612.5 343.8 L611.7 344.5 L611.0 344.0 L610.2 344.2 L609.4 343.9 L608.7 344.4 L607.9 344.2 L607.2 344.3 L606.4 344.2 L605.7 344.7 L604.9 344.2 L604.2 344.3 L603.4 344.7 L602.7 344.1 L601.9 344.6 L601.2 344.1 L600.4 344.4 L599.7 344.7 L598.9 344.3 L598.2 344.7 L597.4 344.3 L596.7 344.3 L595.9 344.1 L595.2 344.6 L594.4 343.9 L593.7 344.3 L592.9 344.1 L592.2 344.5 L591.4 344.2 L590.7 344.3 L589.9 343.8 L589.2 343.7 L588.4 343.9 L587.7 343.6 L586.9 343.7 L586.2 343.6 L585.4 344.1 L584.7 343.9 L583.9 343.6 L583.2 343.5 L582.4 344.0 L581.7 343.6 L580.9 344.0 L580.2 343.9 L579.4 344.1 L578.7 344.0 L577.9 343.5 L577.2 343.8 L576.4 343.8 L575.7 343.7 L574.9 343.5 L574.1 343.8 L573.4 343.9 L572.6 343.7 L571.9 343.4 L571.1 343.7 L570.4 343.8 L569.6 343.4 L568.9 343.5 L568.1 343.7 L567.4 344.1 L566.6 343.4 L565.9 343.6 L565.1 343.9 L564.4 343.5 L563.6 343.6 L562.9 343.7 L562.1 343.4 L561.4 343.9 L560.6 343.7 L559.9 344.1 L559.1 343.6 L558.4 343.4 L557.6 343.5 L556.9 344.0 L556.1 343.5 L555.4 343.5 L554.6 343.8 L553.9 344.1 L553.1 343.4 L552.4 344.0 L551.6 344.1 L550.9 344.0 L550.1 343.8 L549.4 343.9 L548.6 343.5 L547.9 343.4 L547.1 343.8 L546.4 344.1 L545.6 343.7 L544.9 343.6 L544.1 343.4 L543.4 343.5 L542.6 343.7 L541.9 343.6 L541.1 343.6 L540.3 343.9 L539.6 343.6 L538.8 343.7 L538.1 344.2 L537.3 344.0 L536.6 343.8 L535.8 344.0 L535.1 343.8 L534.3 344.0 L533.6 344.4 L532.8 344.3 L532.1 343.9 L531.3 344.5 L530.6 344.3 L529.8 344.4 L529.1 344.2 L528.3 344.2 L527.6 344.1 L526.8 344.1 L526.1 344.1 L525.3 344.6 L524.6 344.3 L523.8 344.2 L523.1 344.6 L522.3 344.2 L521.6 344.1 L520.8 344.4 L520.1 344.2 L519.3 344.1 L518.6 344.5 L517.8 344.0 L517.1 344.4 L516.3 344.2 L515.6 344.6 L514.8 343.9 L514.1 344.5 L513.3 343.8 L512.6 343.8 L511.8 343.9 L511.1 344.1 L510.3 344.2 L509.6 343.9 L508.8 344.3 L508.1 343.6 L507.3 343.6 L506.6 343.6 L505.8 344.0 L505.0 343.9 L504.3 343.9 L503.5 343.5 L502.8 344.0 L502.0 343.5 L501.3 343.4 L500.5 343.6 L499.8 343.9 L499.0 344.0 L498.3 344.0 L497.5 343.5 L496.8 344.0 L496.0 343.4 L495.3 344.0 L494.5 343.6 L493.8 344.1 L493.0 343.4 L492.3 343.9 L491.5 343.7 L490.8 343.9 L490.0 343.7 L489.3 343.6 L488.5 343.4 L487.8 343.5 L487.0 343.9 L486.3 343.6 L485.5 343.9 L484.8 344.1 L484.0 343.7 L483.3 343.4 L482.5 343.5 L481.8 343.6 L481.0 343.4 L480.3 343.4 L479.5 343.4 L478.8 343.6 L478.0 343.9 L477.3 343.8 L476.5 343.9 L475.8 343.8 L475.0 343.8 L474.3 344.1 L473.5 343.6 L472.8 343.5 L472.0 343.9 L471.2 343.4 L470.5 343.6 L469.7 343.5 L469.0 343.9 L468.2 343.9 L467.5 343.9 L466.7 343.9 L466.0 343.7 L465.2 343.5 L464.5 344.1 L463.7 343.9 L463.0 343.6 L462.2 343.5 L461.5 344.2 L460.7 343.7 L460.0 343.7 L459.2 343.7 L458.5 344.4 L457.7 344.2 L457.0 344.4 L456.2 344.0 L455.5 344.5 L454.7 344.2 L454.0 344.3 L453.2 344.2 L452.5 344.0 L451.7 344.6 L451.0 344.3 L450.2 344.2 L449.5 344.4 L448.7 344.2 L448.0 344.6 L447.2 344.0 L446.5 344.4 L445.7 344.6 L445.0 344.7 L444.2 344.6 L443.5 344.6 L442.7 344.2 L442.0 344.7 L441.2 344.6 L440.5 344.1 L439.7 344.0 L439.0 344.2 L438.2 344.1 L437.4 344.1 L436.7 344.4 L435.9 344.6 L435.2 344.5 L434.4 344.4 L433.7 344.5 L432.9 344.2 L432.2 344.5 L431.4 344.0 L430.7 343.7 L429.9 343.9 L429.2 343.9 L428.4 343.8 L427.7 343.7 L426.9 344.0 L426.2 343.8 L425.4 344.1 L424.7 343.5 L423.9 344.0 L423.2 343.7 L422.4 344.0 L421.7 343.9 L420.9 343.4 L420.2 343.9 L419.4 344.0 L418.7 344.0 L417.9 344.0 L417.2 343.9 L416.4 344.0 L415.7 343.8 L414.9 343.8 L414.2 343.7 L413.4 343.7 L412.7 343.7 L411.9 343.8 L411.2 343.9 L410.4 343.4 L409.7 343.4 L408.9 343.4 L408.2 343.9 L407.4 344.1 L406.7 343.8 L405.9 343.5 L405.2 343.9 L404.4 343.6 L403.7 343.6 L402.9 343.4 L402.1 344.0 L401.4 344.0 L400.6 343.9 L399.9 343.4 L399.1 343.6 L398.4 343.8 L397.6 344.1 L396.9 343.4 L396.1 343.7 L395.4 343.5 L394.6 343.8 L393.9 343.4 L393.1 343.7 L392.4 344.0 L391.6 344.0 L390.9 343.4 L390.1 343.9 L389.4 343.4 L388.6 343.7 L387.9 343.6 L387.1 343.8 L386.4 343.4 L385.6 343.4 L384.9 344.0 L384.1 343.8 L383.4 343.9 L382.6 343.8 L381.9 344.1 L381.1 343.9 L380.4 344.2 L379.6 343.6 L378.9 344.3 L378.1 344.3 L377.4 344.3 L376.6 343.8 L375.9 344.1 L375.1 343.9 L374.4 344.4 L373.6 344.0 L372.9 344.4 L372.1 344.6 L371.4 344.0 L370.6 344.5 L369.9 343.9 L369.1 344.1 L368.3 344.2 L367.6 344.7 L366.8 344.5 L366.1 344.7 L365.3 344.5 L364.6 344.2 L363.8 344.7 L363.1 344.2 L362.3 344.0 L361.6 344.0 L360.8 344.6 L360.1 344.7 L359.3 344.0 L358.6 343.9 L357.8 344.5 L357.1 344.4 L356.3 344.5 L355.6 344.4 L354.8 344.1 L354.1 343.9 L353.3 344.5 L352.6 343.9 L351.8 343.7 L351.1 344.1 L350.3 344.3 L349.6 343.7 L348.8 343.9 L348.1 344.0 L347.3 344.0 L346.6 343.6 L345.8 343.9 L345.1 343.9 L344.3 343.7 L343.6 343.7 L342.8 343.4 L342.1 343.9 L341.3 343.4 L340.6 343.7 L339.8 343.9 L339.1 343.8 L338.3 343.8 L337.6 343.7 L336.8 343.5 L336.1 343.5 L335.3 343.8 L334.6 343.4 L333.8 343.6 L333.0 344.0 L332.3 343.5 L331.5 343.5 L330.8 343.8 L330.0 343.7 L329.3 344.0 L328.5 343.8 L327.8 343.6 L327.0 343.4 L326.3 343.8 L325.5 344.0 L324.8 343.4 L324.0 343.7 L323.3 344.0 L322.5 344.0 L321.8 343.4 L321.0 343.6 L320.3 343.8 L319.5 343.5 L318.8 343.4 L318.0 343.5 L317.3 344.0 L316.5 344.0 L315.8 343.6 L315.0 343.9 L314.3 343.7 L313.5 344.1 L312.8 344.1 L312.0 343.9 L311.3 344.0 L310.5 343.4 L309.8 343.5 L309.0 343.5 L308.3 343.7 L307.5 343.8 L306.8 343.4 L306.0 343.5 L305.3 344.0 L304.5 343.7 L303.8 344.0 L303.0 344.2 L302.3 344.2 L301.5 343.9 L300.8 344.2 L300.0 343.7Z" fill="#8a62b4"/><path d="M300.0 352.9 L302.0 342.6 L644.0 342.6" fill="none" stroke="#c8505a" stroke-width="1.25"/><path d="M302.0 357.2 V361.6 H306.4Z" fill="#131a2b"/><path d="M642.0 357.2 V361.6 H637.6Z" fill="#131a2b"/><rect x="628.5" y="357.0" width="6.6" height="4.6" fill="none" stroke="#1d2a30" stroke-width=".7" opacity=".8"/><path d="M630.1 358.4 H633.5 L631.8 360.2Z" fill="#131a2b"/><rect x="645.0" y="329.2" width="85.0" height="33.6" fill="#95c19f"/><rect x="645.0" y="355.4" width="85.0" height="7.4" fill="#3f7b4d"/><rect x="645.2" y="329.4" width="84.5" height="33.1" fill="none" stroke="#3f7b4d" stroke-width="0.6" opacity=".8"/><rect x="645.0" y="342.3" width="85.0" height="0.5" fill="#55a577" opacity=".8"/><path d="M645.0 341.8 L645.8 341.6 L646.5 341.7 L647.3 341.5 L648.0 341.5 L648.8 341.4 L649.5 341.8 L650.3 341.9 L651.0 341.4 L651.8 341.6 L652.5 341.8 L653.3 341.5 L654.0 341.7 L654.8 341.7 L655.5 341.6 L656.3 341.6 L657.0 341.5 L657.8 341.8 L658.5 341.4 L659.3 341.5 L660.0 341.5 L660.8 341.4 L661.5 341.3 L662.3 341.7 L663.1 341.5 L663.8 341.4 L664.6 341.4 L665.3 341.4 L666.1 341.6 L666.8 341.2 L667.6 341.3 L668.3 341.5 L669.1 341.4 L669.8 341.2 L670.6 341.5 L671.3 341.4 L672.1 341.1 L672.8 341.1 L673.6 341.5 L674.3 341.2 L675.1 341.4 L675.8 341.2 L676.6 341.2 L677.3 341.5 L678.1 341.4 L678.8 341.4 L679.6 341.4 L680.4 341.5 L681.1 341.4 L681.9 341.3 L682.6 341.3 L683.4 341.4 L684.1 341.2 L684.9 341.0 L685.6 341.1 L686.4 341.2 L687.1 341.1 L687.9 341.2 L688.6 341.3 L689.4 341.1 L690.1 341.4 L690.9 341.0 L691.6 341.3 L692.4 341.2 L693.1 340.8 L693.9 340.9 L694.6 340.9 L695.4 341.0 L696.2 341.0 L696.9 340.9 L697.7 340.8 L698.4 341.2 L699.2 340.9 L699.9 341.1 L700.7 341.1 L701.4 340.8 L702.2 340.9 L702.9 340.8 L703.7 340.7 L704.4 340.9 L705.2 341.1 L705.9 341.1 L706.7 340.9 L707.4 340.8 L708.2 341.0 L708.9 341.1 L709.7 341.1 L710.4 341.0 L711.2 340.7 L711.9 341.1 L712.7 341.0 L713.5 340.9 L714.2 340.7 L715.0 340.5 L715.7 341.0 L716.5 341.0 L717.2 340.5 L718.0 340.5 L718.7 340.9 L719.5 340.8 L720.2 340.7 L721.0 340.8 L721.7 340.7 L722.5 340.7 L723.2 340.8 L724.0 340.9 L724.7 340.9 L725.5 340.8 L726.2 340.8 L727.0 340.6 L727.7 340.5 L728.5 340.7 L729.2 340.4 L730.0 340.5 L730.0 344.7 L729.2 344.8 L728.5 344.5 L727.7 344.7 L727.0 344.6 L726.2 344.4 L725.5 344.4 L724.7 344.3 L724.0 344.3 L723.2 344.4 L722.5 344.5 L721.7 344.5 L721.0 344.4 L720.2 344.5 L719.5 344.4 L718.7 344.3 L718.0 344.7 L717.2 344.7 L716.5 344.2 L715.7 344.2 L715.0 344.7 L714.2 344.5 L713.5 344.3 L712.7 344.2 L711.9 344.1 L711.2 344.5 L710.4 344.2 L709.7 344.1 L708.9 344.1 L708.2 344.2 L707.4 344.4 L706.7 344.3 L705.9 344.1 L705.2 344.1 L704.4 344.3 L703.7 344.5 L702.9 344.4 L702.2 344.3 L701.4 344.4 L700.7 344.1 L699.9 344.1 L699.2 344.3 L698.4 344.0 L697.7 344.4 L696.9 344.3 L696.2 344.2 L695.4 344.2 L694.6 344.3 L693.9 344.3 L693.1 344.4 L692.4 344.0 L691.6 343.9 L690.9 344.2 L690.1 343.8 L689.4 344.1 L688.6 343.9 L687.9 344.0 L687.1 344.1 L686.4 344.0 L685.6 344.1 L684.9 344.2 L684.1 344.0 L683.4 343.8 L682.6 343.9 L681.9 343.9 L681.1 343.8 L680.4 343.7 L679.6 343.8 L678.8 343.8 L678.1 343.8 L677.3 343.7 L676.6 344.0 L675.8 344.0 L675.1 343.8 L674.3 344.0 L673.6 343.7 L672.8 344.1 L672.1 344.1 L671.3 343.8 L670.6 343.7 L669.8 344.0 L669.1 343.8 L668.3 343.7 L667.6 343.9 L666.8 344.0 L666.1 343.6 L665.3 343.8 L664.6 343.8 L663.8 343.8 L663.1 343.7 L662.3 343.5 L661.5 343.9 L660.8 343.8 L660.0 343.7 L659.3 343.7 L658.5 343.8 L657.8 343.4 L657.0 343.7 L656.3 343.6 L655.5 343.6 L654.8 343.5 L654.0 343.5 L653.3 343.7 L652.5 343.4 L651.8 343.6 L651.0 343.8 L650.3 343.3 L649.5 343.4 L648.8 343.8 L648.0 343.7 L647.3 343.7 L646.5 343.5 L645.8 343.6 L645.0 343.4Z" fill="#55a577"/><path d="M647.0 357.2 V361.6 H651.4Z" fill="#131a2b"/><path d="M728.0 357.2 V361.6 H723.6Z" fill="#131a2b"/><rect x="714.5" y="357.0" width="6.6" height="4.6" fill="none" stroke="#1d2a30" stroke-width=".7" opacity=".8"/><path d="M716.1 358.4 H719.5 L717.8 360.2Z" fill="#131a2b"/><rect x="731.0" y="329.2" width="85.0" height="33.6" fill="#c696b8"/><rect x="731.0" y="355.4" width="85.0" height="7.4" fill="#8b3f7c"/><rect x="731.2" y="329.4" width="84.5" height="33.1" fill="none" stroke="#8b3f7c" stroke-width="0.6" opacity=".8"/><rect x="731.0" y="342.3" width="85.0" height="0.5" fill="#9e4f8a" opacity=".8"/><path d="M731.0 333.8 L731.8 334.9 L732.5 335.9 L733.3 336.2 L734.0 336.4 L734.8 336.6 L735.5 337.2 L736.3 337.2 L737.0 334.3 L737.8 335.6 L738.5 336.2 L739.3 336.8 L740.0 336.7 L740.8 336.8 L741.5 337.2 L742.3 334.8 L743.0 335.7 L743.8 336.2 L744.5 336.4 L745.3 336.6 L746.0 337.0 L746.8 336.9 L747.5 335.2 L748.3 335.5 L749.1 335.7 L749.8 336.1 L750.6 336.9 L751.3 337.2 L752.1 337.3 L752.8 335.1 L753.6 335.4 L754.3 335.9 L755.1 336.8 L755.8 336.7 L756.6 336.7 L757.3 336.8 L758.1 335.3 L758.8 335.5 L759.6 336.0 L760.3 336.7 L761.1 336.5 L761.8 336.9 L762.6 336.7 L763.3 333.7 L764.1 335.8 L764.8 336.1 L765.6 336.2 L766.4 336.8 L767.1 336.8 L767.9 337.3 L768.6 333.8 L769.4 335.7 L770.1 336.3 L770.9 336.5 L771.6 336.5 L772.4 337.2 L773.1 337.3 L773.9 333.9 L774.6 335.8 L775.4 335.8 L776.1 336.7 L776.9 336.4 L777.6 337.1 L778.4 336.6 L779.1 333.6 L779.9 334.7 L780.6 336.1 L781.4 336.1 L782.2 337.0 L782.9 337.0 L783.7 337.0 L784.4 334.7 L785.2 334.8 L785.9 335.8 L786.7 336.6 L787.4 336.7 L788.2 336.9 L788.9 336.6 L789.7 334.3 L790.4 334.7 L791.2 335.2 L791.9 336.1 L792.7 336.7 L793.4 336.9 L794.2 337.0 L794.9 334.8 L795.7 334.7 L796.4 335.4 L797.2 336.3 L797.9 336.2 L798.7 336.5 L799.5 336.7 L800.2 334.1 L801.0 334.9 L801.7 336.0 L802.5 336.1 L803.2 336.4 L804.0 336.4 L804.7 336.6 L805.5 333.2 L806.2 335.1 L807.0 335.4 L807.7 336.4 L808.5 336.3 L809.2 336.9 L810.0 337.1 L810.7 334.5 L811.5 335.2 L812.2 336.2 L813.0 336.2 L813.7 336.7 L814.5 336.6 L815.2 337.0 L816.0 333.0 L816.0 352.2 L815.2 348.2 L814.5 348.6 L813.7 348.5 L813.0 349.0 L812.2 349.0 L811.5 350.0 L810.7 350.7 L810.0 348.1 L809.2 348.3 L808.5 348.9 L807.7 348.8 L807.0 349.8 L806.2 350.1 L805.5 352.0 L804.7 348.6 L804.0 348.8 L803.2 348.8 L802.5 349.1 L801.7 349.2 L801.0 350.3 L800.2 351.1 L799.5 348.5 L798.7 348.7 L797.9 349.0 L797.2 348.9 L796.4 349.8 L795.7 350.5 L794.9 350.4 L794.2 348.2 L793.4 348.3 L792.7 348.5 L791.9 349.1 L791.2 350.0 L790.4 350.5 L789.7 350.9 L788.9 348.6 L788.2 348.3 L787.4 348.5 L786.7 348.6 L785.9 349.4 L785.2 350.4 L784.4 350.5 L783.7 348.2 L782.9 348.2 L782.2 348.2 L781.4 349.1 L780.6 349.1 L779.9 350.5 L779.1 351.6 L778.4 348.6 L777.6 348.1 L776.9 348.8 L776.1 348.5 L775.4 349.4 L774.6 349.4 L773.9 351.3 L773.1 347.9 L772.4 348.0 L771.6 348.7 L770.9 348.7 L770.1 348.9 L769.4 349.5 L768.6 351.4 L767.9 347.9 L767.1 348.4 L766.4 348.4 L765.6 349.0 L764.8 349.1 L764.1 349.4 L763.3 351.5 L762.6 348.5 L761.8 348.3 L761.1 348.7 L760.3 348.5 L759.6 349.2 L758.8 349.7 L758.1 349.9 L757.3 348.4 L756.6 348.5 L755.8 348.5 L755.1 348.4 L754.3 349.3 L753.6 349.8 L752.8 350.1 L752.1 347.9 L751.3 348.0 L750.6 348.3 L749.8 349.1 L749.1 349.5 L748.3 349.7 L747.5 350.0 L746.8 348.3 L746.0 348.2 L745.3 348.6 L744.5 348.8 L743.8 349.0 L743.0 349.5 L742.3 350.4 L741.5 348.0 L740.8 348.4 L740.0 348.5 L739.3 348.4 L738.5 349.0 L737.8 349.6 L737.0 350.9 L736.3 348.0 L735.5 348.0 L734.8 348.6 L734.0 348.8 L733.3 349.0 L732.5 349.3 L731.8 350.3 L731.0 351.4Z" fill="#9e4f8a"/><path d="M733.0 357.2 V361.6 H737.4Z" fill="#131a2b"/><path d="M814.0 357.2 V361.6 H809.6Z" fill="#131a2b"/><rect x="800.5" y="357.0" width="6.6" height="4.6" fill="none" stroke="#1d2a30" stroke-width=".7" opacity=".8"/><path d="M802.1 358.4 H805.5 L803.8 360.2Z" fill="#131a2b"/><rect x="946.0" y="329.2" width="129.0" height="33.6" fill="#9a9896"/><rect x="946.0" y="355.4" width="129.0" height="7.4" fill="#4c4744"/><rect x="946.2" y="329.4" width="128.5" height="33.1" fill="none" stroke="#4c4744" stroke-width="0.6" opacity=".8"/><rect x="946.0" y="342.3" width="129.0" height="0.5" fill="#5e5855" opacity=".8"/><path d="M946.0 341.3 L946.8 341.0 L947.5 341.1 L948.2 341.4 L949.0 341.0 L949.8 341.2 L950.5 341.5 L951.2 341.2 L952.0 341.1 L952.8 341.3 L953.5 341.3 L954.2 341.3 L955.0 341.0 L955.8 341.2 L956.5 341.5 L957.2 341.4 L958.0 341.4 L958.8 341.0 L959.5 341.2 L960.2 341.5 L961.0 341.0 L961.8 341.6 L962.5 341.2 L963.2 341.3 L964.0 341.1 L964.8 341.3 L965.5 341.5 L966.2 341.3 L967.0 341.1 L967.8 341.1 L968.5 341.4 L969.2 341.5 L970.0 341.1 L970.8 341.1 L971.5 341.5 L972.2 341.0 L973.0 341.0 L973.8 341.3 L974.5 341.4 L975.2 341.1 L976.0 341.0 L976.8 341.5 L977.5 341.4 L978.2 341.4 L979.0 341.1 L979.8 341.5 L980.5 341.2 L981.2 341.3 L982.0 341.2 L982.8 341.5 L983.5 341.0 L984.2 341.0 L985.0 341.2 L985.8 341.1 L986.5 341.5 L987.2 341.0 L988.0 341.2 L988.8 341.1 L989.5 341.0 L990.2 341.4 L991.0 341.0 L991.8 341.5 L992.5 341.6 L993.2 341.3 L994.0 341.0 L994.8 341.0 L995.5 341.0 L996.2 341.3 L997.0 341.0 L997.8 341.2 L998.5 341.5 L999.2 341.2 L1000.0 341.1 L1000.8 341.3 L1001.5 341.2 L1002.2 341.4 L1003.0 341.4 L1003.8 341.3 L1004.5 341.3 L1005.2 341.3 L1006.0 341.5 L1006.8 341.6 L1007.5 341.4 L1008.2 341.1 L1009.0 341.1 L1009.8 341.4 L1010.5 341.4 L1011.2 341.3 L1012.0 341.5 L1012.8 341.2 L1013.5 341.0 L1014.2 341.5 L1015.0 341.2 L1015.8 341.1 L1016.5 341.1 L1017.2 341.1 L1018.0 341.1 L1018.8 341.4 L1019.5 341.1 L1020.2 341.0 L1021.0 341.6 L1021.8 341.0 L1022.5 341.3 L1023.2 341.5 L1024.0 341.5 L1024.8 341.1 L1025.5 341.2 L1026.2 341.5 L1027.0 341.3 L1027.8 341.2 L1028.5 341.0 L1029.2 341.4 L1030.0 341.1 L1030.8 341.4 L1031.5 342.2 L1032.2 342.2 L1033.0 342.2 L1033.8 342.2 L1034.5 342.2 L1035.2 342.2 L1036.0 342.2 L1036.8 339.8 L1037.5 339.8 L1038.2 339.8 L1039.0 339.8 L1039.8 339.8 L1040.5 339.8 L1041.2 339.8 L1042.0 342.2 L1042.8 342.2 L1043.5 342.2 L1044.2 342.2 L1045.0 342.2 L1045.8 342.2 L1046.5 342.2 L1047.2 342.2 L1048.0 342.2 L1048.8 342.2 L1049.5 342.2 L1050.2 342.2 L1051.0 342.2 L1051.8 342.2 L1052.5 342.2 L1053.2 342.2 L1054.0 342.2 L1054.8 342.2 L1055.5 342.2 L1056.2 342.2 L1057.0 342.2 L1057.8 342.2 L1058.5 339.8 L1059.2 339.8 L1060.0 339.8 L1060.8 339.8 L1061.5 339.8 L1062.2 339.8 L1063.0 339.8 L1063.8 342.2 L1064.5 342.2 L1065.2 342.2 L1066.0 342.2 L1066.8 342.2 L1067.5 342.2 L1068.2 342.2 L1069.0 342.2 L1069.8 342.2 L1070.5 342.2 L1071.2 342.2 L1072.0 342.2 L1072.8 342.2 L1073.5 342.2 L1074.2 342.2 L1075.0 342.2 L1075.0 342.9 L1074.2 342.9 L1073.5 342.9 L1072.8 342.9 L1072.0 342.9 L1071.2 342.9 L1070.5 342.9 L1069.8 342.9 L1069.0 342.9 L1068.2 342.9 L1067.5 342.9 L1066.8 342.9 L1066.0 342.9 L1065.2 342.9 L1064.5 342.9 L1063.8 342.9 L1063.0 345.4 L1062.2 345.4 L1061.5 345.4 L1060.8 345.4 L1060.0 345.4 L1059.2 345.4 L1058.5 345.4 L1057.8 342.9 L1057.0 342.9 L1056.2 342.9 L1055.5 342.9 L1054.8 342.9 L1054.0 342.9 L1053.2 342.9 L1052.5 342.9 L1051.8 342.9 L1051.0 342.9 L1050.2 342.9 L1049.5 342.9 L1048.8 342.9 L1048.0 342.9 L1047.2 342.9 L1046.5 342.9 L1045.8 342.9 L1045.0 342.9 L1044.2 342.9 L1043.5 342.9 L1042.8 342.9 L1042.0 342.9 L1041.2 345.4 L1040.5 345.4 L1039.8 345.4 L1039.0 345.4 L1038.2 345.4 L1037.5 345.4 L1036.8 345.4 L1036.0 342.9 L1035.2 342.9 L1034.5 342.9 L1033.8 342.9 L1033.0 342.9 L1032.2 342.9 L1031.5 342.9 L1030.8 343.8 L1030.0 344.1 L1029.2 343.8 L1028.5 344.2 L1027.8 344.0 L1027.0 343.9 L1026.2 343.7 L1025.5 344.0 L1024.8 344.1 L1024.0 343.7 L1023.2 343.7 L1022.5 343.9 L1021.8 344.2 L1021.0 343.6 L1020.2 344.2 L1019.5 344.1 L1018.8 343.8 L1018.0 344.1 L1017.2 344.1 L1016.5 344.1 L1015.8 344.1 L1015.0 344.0 L1014.2 343.7 L1013.5 344.2 L1012.8 344.0 L1012.0 343.7 L1011.2 343.9 L1010.5 343.8 L1009.8 343.8 L1009.0 344.1 L1008.2 344.1 L1007.5 343.8 L1006.8 343.6 L1006.0 343.7 L1005.2 343.9 L1004.5 343.9 L1003.8 343.9 L1003.0 343.8 L1002.2 343.8 L1001.5 344.0 L1000.8 343.9 L1000.0 344.1 L999.2 344.0 L998.5 343.7 L997.8 344.0 L997.0 344.2 L996.2 343.9 L995.5 344.2 L994.8 344.2 L994.0 344.2 L993.2 343.9 L992.5 343.6 L991.8 343.7 L991.0 344.2 L990.2 343.8 L989.5 344.2 L988.8 344.1 L988.0 344.0 L987.2 344.2 L986.5 343.7 L985.8 344.1 L985.0 344.0 L984.2 344.2 L983.5 344.2 L982.8 343.7 L982.0 344.0 L981.2 343.9 L980.5 344.0 L979.8 343.7 L979.0 344.1 L978.2 343.8 L977.5 343.8 L976.8 343.7 L976.0 344.2 L975.2 344.1 L974.5 343.8 L973.8 343.9 L973.0 344.2 L972.2 344.2 L971.5 343.7 L970.8 344.1 L970.0 344.1 L969.2 343.7 L968.5 343.8 L967.8 344.1 L967.0 344.1 L966.2 343.9 L965.5 343.7 L964.8 343.9 L964.0 344.1 L963.2 343.9 L962.5 344.0 L961.8 343.6 L961.0 344.2 L960.2 343.7 L959.5 344.0 L958.8 344.2 L958.0 343.8 L957.2 343.8 L956.5 343.7 L955.8 344.0 L955.0 344.2 L954.2 343.9 L953.5 343.9 L952.8 343.9 L952.0 344.1 L951.2 344.0 L950.5 343.7 L949.8 344.0 L949.0 344.2 L948.2 343.8 L947.5 344.1 L946.8 344.2 L946.0 343.9Z" fill="#5e5855"/><path d="M948.0 357.2 V361.6 H952.4Z" fill="#131a2b"/><path d="M1073.0 357.2 V361.6 H1068.6Z" fill="#131a2b"/><rect x="1059.5" y="357.0" width="6.6" height="4.6" fill="none" stroke="#1d2a30" stroke-width=".7" opacity=".8"/><path d="M1061.1 358.4 H1064.5 L1062.8 360.2Z" fill="#131a2b"/></svg>
<div class="t mono cl" style="left:180.0px;top:111.3px;max-width:16.0px">P...</div>
<div class="t mono cl" style="left:244.0px;top:111.3px;max-width:16.0px">P...</div>
<div class="t mono cl" style="left:293.0px;top:111.3px;max-width:11.0px">...</div>
<div class="t mono cl" style="left:465.0px;top:111.3px;max-width:11.0px">...</div>
<div class="t mono cl" style="left:567.6px;top:111.3px;max-width:59.4px">Panther Dru...</div>
<div class="t mono cl" style="left:740.0px;top:111.3px;max-width:38.0px">Panthe...</div>
<div class="t mono cl" style="left:869.0px;top:111.3px;max-width:11.0px">...</div>
<div class="t mono cl" style="left:912.0px;top:111.3px;max-width:60.0px">Lion Drums ...</div>
<div class="t mono cl" style="left:999.0px;top:111.3px;max-width:16.0px">L...</div>
<div class="t mono cl" style="left:1042.0px;top:111.3px;max-width:16.0px">L...</div>
<div class="t mono cl" style="left:1085.0px;top:111.3px;max-width:16.0px">L...</div>
<div class="t mono cl" style="left:266.0px;top:146.1px;max-width:38.0px">Panthe...</div>
<div class="t mono cl" style="left:632.0px;top:146.1px;max-width:16.0px">P...</div>
<div class="t mono cl" style="left:805.0px;top:146.1px;max-width:16.0px">P...</div>
<div class="t mono cl" style="left:848.0px;top:146.1px;max-width:16.0px">L...</div>
<div class="t mono cl" style="left:1020.0px;top:146.1px;max-width:5.0px">...</div>
<div class="t mono cl" style="left:1085.0px;top:146.1px;max-width:16.0px">L...</div>
<div class="t mono cl" style="left:137.0px;top:180.9px;max-width:145.0px">Panther Sub 1.HDP&nbsp;&nbsp;80.00 BPM</div>
<div class="t mono cl" style="left:568.0px;top:180.9px;max-width:48.0px">Panther S...</div>
<div class="t mono cl" style="left:740.0px;top:180.9px;max-width:59.0px">Panther Bass...</div>
<div class="t mono cl" style="left:869.0px;top:180.9px;max-width:146.0px">Lion Bass A 1.HDP&nbsp;&nbsp;80.00 BPM</div>
<div class="t mono cl" style="left:1085.0px;top:180.9px;max-width:16.0px">L...</div>
<div class="t mono cl" style="left:212.0px;top:215.7px;max-width:70.0px">Panther Cello 1...</div>
<div class="t mono cl" style="left:481.0px;top:215.7px;max-width:146.0px">Panther Bass 1.HDP&nbsp;&nbsp;80.00 BPM</div>
<div class="t mono cl" style="left:654.0px;top:215.7px;max-width:145.0px">Panther Cello 1.HDP&nbsp;&nbsp;80.00 BPM</div>
<div class="t mono cl" style="left:826.0px;top:215.7px;max-width:189.0px">Lion Layer 1.HDP&nbsp;&nbsp;80.00 BPM</div>
<div class="t mono cl" style="left:1085.0px;top:215.7px;max-width:16.0px">L...</div>
<div class="t mono cl" style="left:137.0px;top:250.5px;max-width:145.0px">Panther Layer A 1.HDP&nbsp;&nbsp;80.00 BPM</div>
<div class="t mono cl" style="left:309.0px;top:250.5px;max-width:145.0px">Panther Celesta 1.HDP&nbsp;&nbsp;80.00 BPM</div>
<div class="t mono cl" style="left:568.0px;top:250.5px;max-width:59.0px">Panther Tro...</div>
<div class="t mono cl" style="left:223.0px;top:285.3px;max-width:404.0px">Panther Layer B.HDP&nbsp;&nbsp;80.00 BPM</div>
<div class="t mono cl" style="left:223.0px;top:320.1px;max-width:59.0px">Modern Fx.H...</div>
<div class="t mono cl" style="left:309.0px;top:320.1px;max-width:59.0px">Panther Strin...</div>
<div class="t mono cl" style="left:395.0px;top:320.1px;max-width:59.0px">Panther Strin...</div>
<div class="t mono cl" style="left:481.0px;top:320.1px;max-width:146.0px">Panther Lead A.HDP&nbsp;&nbsp;80.00 BPM</div>
<div class="t mono cl" style="left:654.0px;top:320.1px;max-width:145.0px">Panther Lead B 1.HDP&nbsp;&nbsp;80.00 BPM</div>
<div class="t mono cl" style="left:1042.0px;top:320.1px;max-width:16.0px">L...</div>
<div class="t mono cl" style="left:1085.0px;top:320.1px;max-width:16.0px">L...</div>
<div class="t mono cl" style="left:223.0px;top:354.9px;max-width:59.0px">Panther Violi...</div>
<div class="t mono cl" style="left:309.0px;top:354.9px;max-width:318.0px">Panther Choir 1.HDP&nbsp;&nbsp;80.00 BPM</div>
<div class="t mono cl" style="left:654.0px;top:354.9px;max-width:59.0px">Panther FX ...</div>
<div class="t mono cl" style="left:740.0px;top:354.9px;max-width:59.0px">Panther Strin...</div>
<div class="t mono cl" style="left:955.0px;top:354.9px;max-width:103.0px">Modern Fx.HDP&nbsp;&nbsp;80.00 BPM</div>
<svg style="left:0;top:0" width="1140" height="500" viewBox="0 0 1140 500"><path d="M209.4 85.6 H213.0 V92.0Z" fill="#a0548a"/><rect x="256" y="85.6" width="1" height="33.6" fill="#1a1e22" opacity=".9"/><path d="M273.4 85.6 H277.0 V92.0Z" fill="#a0548a"/><rect x="299" y="85.6" width="1" height="33.6" fill="#1a1e22" opacity=".9"/><path d="M296.2 85.3 H302.8 L299.5 91.6Z" fill="#7c3f5e"/><path d="M296.2 119.5 H302.8 L299.5 112.9Z" fill="#e78fbd"/><rect x="385" y="85.6" width="1" height="33.6" fill="#1a1e22" opacity=".9"/><path d="M382.4 85.3 H389.0 L385.7 91.6Z" fill="#7c3f5e"/><path d="M382.4 119.5 H389.0 L385.7 112.9Z" fill="#e78fbd"/><rect x="471" y="85.6" width="1" height="33.6" fill="#1a1e22" opacity=".9"/><path d="M468.6 85.3 H475.2 L471.9 91.6Z" fill="#7c3f5e"/><path d="M468.6 119.5 H475.2 L471.9 112.9Z" fill="#e78fbd"/><rect x="558" y="85.6" width="1" height="33.6" fill="#1a1e22" opacity=".9"/><rect x="601" y="85.6" width="1" height="33.6" fill="#1a1e22" opacity=".9"/><path d="M554.8 85.3 H561.4 L558.1 91.6Z" fill="#7c3f5e"/><path d="M640.4 85.6 H644.0 V92.0Z" fill="#a0548a"/><rect x="773" y="85.6" width="1" height="33.6" fill="#1a1e22" opacity=".9"/><path d="M748.8 85.3 H755.4 L752.1 91.6Z" fill="#7c3f5e"/><path d="M770.3 85.3 H776.9 L773.6 91.6Z" fill="#7c3f5e"/><path d="M791.4 85.6 H795.0 V92.0Z" fill="#a0548a"/><path d="M748.8 119.5 H755.4 L752.1 112.9Z" fill="#e78fbd"/><path d="M770.3 119.5 H776.9 L773.6 112.9Z" fill="#e78fbd"/><rect x="816" y="85.6" width="1" height="33.6" fill="#1a1e22" opacity=".9"/><path d="M813.4 85.3 H820.0 L816.7 91.6Z" fill="#7c3f5e"/><path d="M834.4 85.6 H838.0 V92.0Z" fill="#a0548a"/><path d="M898.4 85.6 H902.0 V92.0Z" fill="#a0548a"/><rect x="945" y="85.6" width="1" height="33.6" fill="#1a1e22" opacity=".9"/><path d="M942.7 85.3 H949.3 L946.0 91.6Z" fill="#7c3f5e"/><path d="M985.4 85.6 H989.0 V92.0Z" fill="#a0548a"/><path d="M942.7 119.5 H949.3 L946.0 112.9Z" fill="#e78fbd"/><path d="M1028.4 85.6 H1032.0 V92.0Z" fill="#a0548a"/><path d="M1071.4 85.6 H1075.0 V92.0Z" fill="#a0548a"/><path d="M1114.4 85.6 H1118.0 V92.0Z" fill="#a0548a"/><path d="M1135.4 85.6 H1139.0 V92.0Z" fill="#a0548a"/><rect x="299" y="120.4" width="1" height="33.6" fill="#1a1e22" opacity=".9"/><path d="M296.2 120.1 H302.8 L299.5 126.4Z" fill="#7c3f5e"/><path d="M296.2 154.3 H302.8 L299.5 147.7Z" fill="#e78fbd"/><rect x="644" y="120.4" width="1" height="33.6" fill="#1a1e22" opacity=".9"/><path d="M641.0 120.1 H647.6 L644.3 126.4Z" fill="#7c3f5e"/><path d="M641.0 154.3 H647.6 L644.3 147.7Z" fill="#e78fbd"/><rect x="816" y="120.4" width="1" height="33.6" fill="#1a1e22" opacity=".9"/><path d="M813.4 120.1 H820.0 L816.7 126.4Z" fill="#7c3f5e"/><path d="M813.4 154.3 H820.0 L816.7 147.7Z" fill="#e78fbd"/><rect x="859" y="120.4" width="1" height="33.6" fill="#1a1e22" opacity=".9"/><path d="M856.5 120.1 H863.1 L859.8 126.4Z" fill="#7c3f5e"/><path d="M856.5 154.3 H863.1 L859.8 147.7Z" fill="#e78fbd"/><rect x="1032" y="120.4" width="1" height="33.6" fill="#1a1e22" opacity=".9"/><path d="M1028.9 120.1 H1035.5 L1032.2 126.4Z" fill="#7c3f5e"/><path d="M1028.9 154.3 H1035.5 L1032.2 147.7Z" fill="#e78fbd"/><path d="M1114.4 120.4 H1118.0 V126.8Z" fill="#a0548a"/><rect x="170" y="155.2" width="1" height="33.6" fill="#1a1e22" opacity=".9"/><rect x="213" y="155.2" width="1" height="33.6" fill="#1a1e22" opacity=".9"/><rect x="256" y="155.2" width="1" height="33.6" fill="#1a1e22" opacity=".9"/><path d="M145.3 154.9 H152.0 L148.7 161.2Z" fill="#9b5c44"/><path d="M166.9 154.9 H173.5 L170.2 161.2Z" fill="#9b5c44"/><path d="M188.4 154.9 H195.1 L191.8 161.2Z" fill="#9b5c44"/><path d="M210.0 154.9 H216.6 L213.3 161.2Z" fill="#9b5c44"/><path d="M231.5 154.9 H238.2 L234.8 161.2Z" fill="#9b5c44"/><path d="M253.1 154.9 H259.7 L256.4 161.2Z" fill="#9b5c44"/><path d="M274.6 154.9 H281.2 L277.9 161.2Z" fill="#9b5c44"/><path d="M295.4 155.2 H299.0 V161.6Z" fill="#9b5c44"/><path d="M145.3 189.1 H152.0 L148.7 182.5Z" fill="#e9a98d"/><path d="M166.9 189.1 H173.5 L170.2 182.5Z" fill="#e9a98d"/><path d="M188.4 189.1 H195.1 L191.8 182.5Z" fill="#e9a98d"/><path d="M210.0 189.1 H216.6 L213.3 182.5Z" fill="#e9a98d"/><path d="M231.5 189.1 H238.2 L234.8 182.5Z" fill="#e9a98d"/><path d="M253.1 189.1 H259.7 L256.4 182.5Z" fill="#e9a98d"/><path d="M274.6 189.1 H281.2 L277.9 182.5Z" fill="#e9a98d"/><rect x="601" y="155.2" width="1" height="33.6" fill="#1a1e22" opacity=".9"/><path d="M576.4 154.9 H582.9 L579.6 161.2Z" fill="#9b5c44"/><path d="M597.9 154.9 H604.5 L601.2 161.2Z" fill="#9b5c44"/><path d="M619.5 154.9 H626.0 L622.8 161.2Z" fill="#9b5c44"/><path d="M629.4 155.2 H633.0 V161.6Z" fill="#9b5c44"/><path d="M597.9 189.1 H604.5 L601.2 182.5Z" fill="#e9a98d"/><path d="M619.5 189.1 H626.0 L622.8 182.5Z" fill="#e9a98d"/><rect x="773" y="155.2" width="1" height="33.6" fill="#1a1e22" opacity=".9"/><path d="M748.8 154.9 H755.4 L752.1 161.2Z" fill="#9b5c44"/><path d="M770.3 154.9 H776.9 L773.6 161.2Z" fill="#9b5c44"/><path d="M791.9 154.9 H798.5 L795.2 161.2Z" fill="#9b5c44"/><path d="M812.4 155.2 H816.0 V161.6Z" fill="#9b5c44"/><path d="M748.8 189.1 H755.4 L752.1 182.5Z" fill="#e9a98d"/><path d="M770.3 189.1 H776.9 L773.6 182.5Z" fill="#e9a98d"/><path d="M791.9 189.1 H798.5 L795.2 182.5Z" fill="#e9a98d"/><rect x="902" y="155.2" width="1" height="33.6" fill="#1a1e22" opacity=".9"/><rect x="945" y="155.2" width="1" height="33.6" fill="#1a1e22" opacity=".9"/><rect x="989" y="155.2" width="1" height="33.6" fill="#1a1e22" opacity=".9"/><path d="M878.1 154.9 H884.6 L881.4 161.2Z" fill="#9b5c44"/><path d="M899.6 154.9 H906.2 L902.9 161.2Z" fill="#9b5c44"/><path d="M921.2 154.9 H927.8 L924.5 161.2Z" fill="#9b5c44"/><path d="M942.7 154.9 H949.3 L946.0 161.2Z" fill="#9b5c44"/><path d="M964.3 154.9 H970.9 L967.6 161.2Z" fill="#9b5c44"/><path d="M985.8 154.9 H992.4 L989.1 161.2Z" fill="#9b5c44"/><path d="M1007.4 154.9 H1014.0 L1010.7 161.2Z" fill="#9b5c44"/><path d="M1028.4 155.2 H1032.0 V161.6Z" fill="#9b5c44"/><path d="M878.1 189.1 H884.6 L881.4 182.5Z" fill="#e9a98d"/><path d="M899.6 189.1 H906.2 L902.9 182.5Z" fill="#e9a98d"/><path d="M921.2 189.1 H927.8 L924.5 182.5Z" fill="#e9a98d"/><path d="M942.7 189.1 H949.3 L946.0 182.5Z" fill="#e9a98d"/><path d="M964.3 189.1 H970.9 L967.6 182.5Z" fill="#e9a98d"/><path d="M985.8 189.1 H992.4 L989.1 182.5Z" fill="#e9a98d"/><path d="M1007.4 189.1 H1014.0 L1010.7 182.5Z" fill="#e9a98d"/><path d="M1093.5 154.9 H1100.1 L1096.8 161.2Z" fill="#9b5c44"/><path d="M1114.4 155.2 H1118.0 V161.6Z" fill="#9b5c44"/><path d="M1093.5 189.1 H1100.1 L1096.8 182.5Z" fill="#e9a98d"/><rect x="213" y="190.0" width="1" height="33.6" fill="#1a1e22" opacity=".9"/><rect x="256" y="190.0" width="1" height="33.6" fill="#1a1e22" opacity=".9"/><path d="M210.0 189.7 H216.6 L213.3 196.0Z" fill="#3d8a54"/><path d="M231.5 189.7 H238.2 L234.8 196.0Z" fill="#3d8a54"/><path d="M253.1 189.7 H259.7 L256.4 196.0Z" fill="#3d8a54"/><path d="M274.6 189.7 H281.2 L277.9 196.0Z" fill="#3d8a54"/><path d="M295.4 190.0 H299.0 V196.4Z" fill="#3d8a54"/><path d="M210.0 223.9 H216.6 L213.3 217.3Z" fill="#7fd093"/><path d="M231.5 223.9 H238.2 L234.8 217.3Z" fill="#7fd093"/><path d="M253.1 223.9 H259.7 L256.4 217.3Z" fill="#7fd093"/><path d="M274.6 223.9 H281.2 L277.9 217.3Z" fill="#7fd093"/><rect x="515" y="190.0" width="1" height="33.6" fill="#1a1e22" opacity=".9"/><rect x="558" y="190.0" width="1" height="33.6" fill="#1a1e22" opacity=".9"/><rect x="601" y="190.0" width="1" height="33.6" fill="#1a1e22" opacity=".9"/><path d="M490.2 189.7 H496.8 L493.5 196.0Z" fill="#9b5c44"/><path d="M511.7 189.7 H518.3 L515.0 196.0Z" fill="#9b5c44"/><path d="M533.2 189.7 H539.8 L536.5 196.0Z" fill="#9b5c44"/><path d="M554.8 189.7 H561.4 L558.1 196.0Z" fill="#9b5c44"/><path d="M576.4 189.7 H582.9 L579.6 196.0Z" fill="#9b5c44"/><path d="M597.9 189.7 H604.5 L601.2 196.0Z" fill="#9b5c44"/><path d="M619.5 189.7 H626.0 L622.8 196.0Z" fill="#9b5c44"/><path d="M640.4 190.0 H644.0 V196.4Z" fill="#9b5c44"/><path d="M490.2 223.9 H496.8 L493.5 217.3Z" fill="#e9a98d"/><path d="M511.7 223.9 H518.3 L515.0 217.3Z" fill="#e9a98d"/><path d="M533.2 223.9 H539.8 L536.5 217.3Z" fill="#e9a98d"/><path d="M554.8 223.9 H561.4 L558.1 217.3Z" fill="#e9a98d"/><path d="M576.4 223.9 H582.9 L579.6 217.3Z" fill="#e9a98d"/><path d="M597.9 223.9 H604.5 L601.2 217.3Z" fill="#e9a98d"/><path d="M619.5 223.9 H626.0 L622.8 217.3Z" fill="#e9a98d"/><rect x="687" y="190.0" width="1" height="33.6" fill="#1a1e22" opacity=".9"/><rect x="730" y="190.0" width="1" height="33.6" fill="#1a1e22" opacity=".9"/><rect x="773" y="190.0" width="1" height="33.6" fill="#1a1e22" opacity=".9"/><path d="M662.6 189.7 H669.1 L665.9 196.0Z" fill="#3d8a54"/><path d="M684.1 189.7 H690.7 L687.4 196.0Z" fill="#3d8a54"/><path d="M705.7 189.7 H712.2 L709.0 196.0Z" fill="#3d8a54"/><path d="M727.2 189.7 H733.8 L730.5 196.0Z" fill="#3d8a54"/><path d="M748.8 189.7 H755.4 L752.1 196.0Z" fill="#3d8a54"/><path d="M770.3 189.7 H776.9 L773.6 196.0Z" fill="#3d8a54"/><path d="M791.9 189.7 H798.5 L795.2 196.0Z" fill="#3d8a54"/><path d="M812.4 190.0 H816.0 V196.4Z" fill="#3d8a54"/><path d="M662.6 223.9 H669.1 L665.9 217.3Z" fill="#7fd093"/><path d="M684.1 223.9 H690.7 L687.4 217.3Z" fill="#7fd093"/><path d="M705.7 223.9 H712.2 L709.0 217.3Z" fill="#7fd093"/><path d="M727.2 223.9 H733.8 L730.5 217.3Z" fill="#7fd093"/><path d="M748.8 223.9 H755.4 L752.1 217.3Z" fill="#7fd093"/><path d="M770.3 223.9 H776.9 L773.6 217.3Z" fill="#7fd093"/><path d="M791.9 223.9 H798.5 L795.2 217.3Z" fill="#7fd093"/><rect x="859" y="190.0" width="1" height="33.6" fill="#1a1e22" opacity=".9"/><rect x="902" y="190.0" width="1" height="33.6" fill="#1a1e22" opacity=".9"/><rect x="945" y="190.0" width="1" height="33.6" fill="#1a1e22" opacity=".9"/><rect x="989" y="190.0" width="1" height="33.6" fill="#1a1e22" opacity=".9"/><path d="M835.0 189.7 H841.5 L838.2 196.0Z" fill="#7c3f5e"/><path d="M856.5 189.7 H863.1 L859.8 196.0Z" fill="#7c3f5e"/><path d="M878.1 189.7 H884.6 L881.4 196.0Z" fill="#7c3f5e"/><path d="M899.6 189.7 H906.2 L902.9 196.0Z" fill="#7c3f5e"/><path d="M921.2 189.7 H927.8 L924.5 196.0Z" fill="#7c3f5e"/><path d="M942.7 189.7 H949.3 L946.0 196.0Z" fill="#7c3f5e"/><path d="M964.3 189.7 H970.9 L967.6 196.0Z" fill="#7c3f5e"/><path d="M985.8 189.7 H992.4 L989.1 196.0Z" fill="#7c3f5e"/><path d="M1007.4 189.7 H1014.0 L1010.7 196.0Z" fill="#7c3f5e"/><path d="M1028.4 190.0 H1032.0 V196.4Z" fill="#a0548a"/><path d="M835.0 223.9 H841.5 L838.2 217.3Z" fill="#e78fbd"/><path d="M856.5 223.9 H863.1 L859.8 217.3Z" fill="#e78fbd"/><path d="M878.1 223.9 H884.6 L881.4 217.3Z" fill="#e78fbd"/><path d="M899.6 223.9 H906.2 L902.9 217.3Z" fill="#e78fbd"/><path d="M921.2 223.9 H927.8 L924.5 217.3Z" fill="#e78fbd"/><path d="M942.7 223.9 H949.3 L946.0 217.3Z" fill="#e78fbd"/><path d="M964.3 223.9 H970.9 L967.6 217.3Z" fill="#e78fbd"/><path d="M985.8 223.9 H992.4 L989.1 217.3Z" fill="#e78fbd"/><path d="M1007.4 223.9 H1014.0 L1010.7 217.3Z" fill="#e78fbd"/><path d="M1114.4 190.0 H1118.0 V196.4Z" fill="#a0548a"/><rect x="170" y="224.8" width="1" height="33.6" fill="#1a1e22" opacity=".9"/><rect x="213" y="224.8" width="1" height="33.6" fill="#1a1e22" opacity=".9"/><rect x="256" y="224.8" width="1" height="33.6" fill="#1a1e22" opacity=".9"/><path d="M210.0 224.5 H216.6 L213.3 230.8Z" fill="#3d8a54"/><path d="M295.4 224.8 H299.0 V231.2Z" fill="#3d8a54"/><path d="M210.0 258.7 H216.6 L213.3 252.1Z" fill="#7fd093"/><rect x="342" y="224.8" width="1" height="33.6" fill="#1a1e22" opacity=".9"/><rect x="385" y="224.8" width="1" height="33.6" fill="#1a1e22" opacity=".9"/><rect x="428" y="224.8" width="1" height="33.6" fill="#1a1e22" opacity=".9"/><path d="M317.8 224.5 H324.4 L321.1 230.8Z" fill="#4a4a8a"/><path d="M339.3 224.5 H345.9 L342.6 230.8Z" fill="#4a4a8a"/><path d="M360.8 224.5 H367.4 L364.1 230.8Z" fill="#4a4a8a"/><path d="M382.4 224.5 H389.0 L385.7 230.8Z" fill="#4a4a8a"/><path d="M403.9 224.5 H410.6 L407.2 230.8Z" fill="#4a4a8a"/><path d="M425.5 224.5 H432.1 L428.8 230.8Z" fill="#4a4a8a"/><path d="M447.1 224.5 H453.7 L450.4 230.8Z" fill="#4a4a8a"/><path d="M467.4 224.8 H471.0 V231.2Z" fill="#4a4a8a"/><path d="M317.8 258.7 H324.4 L321.1 252.1Z" fill="#9a96e0"/><path d="M339.3 258.7 H345.9 L342.6 252.1Z" fill="#9a96e0"/><path d="M360.8 258.7 H367.4 L364.1 252.1Z" fill="#9a96e0"/><path d="M382.4 258.7 H389.0 L385.7 252.1Z" fill="#9a96e0"/><path d="M403.9 258.7 H410.6 L407.2 252.1Z" fill="#9a96e0"/><path d="M425.5 258.7 H432.1 L428.8 252.1Z" fill="#9a96e0"/><path d="M447.1 258.7 H453.7 L450.4 252.1Z" fill="#9a96e0"/><rect x="601" y="224.8" width="1" height="33.6" fill="#1a1e22" opacity=".9"/><path d="M640.4 224.8 H644.0 V231.2Z" fill="#9b5c44"/><rect x="256" y="259.6" width="1" height="33.6" fill="#1a1e22" opacity=".9"/><rect x="299" y="259.6" width="1" height="33.6" fill="#1a1e22" opacity=".9"/><rect x="342" y="259.6" width="1" height="33.6" fill="#1a1e22" opacity=".9"/><rect x="385" y="259.6" width="1" height="33.6" fill="#1a1e22" opacity=".9"/><rect x="428" y="259.6" width="1" height="33.6" fill="#1a1e22" opacity=".9"/><rect x="471" y="259.6" width="1" height="33.6" fill="#1a1e22" opacity=".9"/><rect x="515" y="259.6" width="1" height="33.6" fill="#1a1e22" opacity=".9"/><rect x="558" y="259.6" width="1" height="33.6" fill="#1a1e22" opacity=".9"/><rect x="601" y="259.6" width="1" height="33.6" fill="#1a1e22" opacity=".9"/><path d="M296.2 259.3 H302.8 L299.5 265.6Z" fill="#3d8a54"/><path d="M382.4 259.3 H389.0 L385.7 265.6Z" fill="#3d8a54"/><path d="M468.6 259.3 H475.2 L471.9 265.6Z" fill="#3d8a54"/><path d="M554.8 259.3 H561.4 L558.1 265.6Z" fill="#3d8a54"/><path d="M640.4 259.6 H644.0 V266.0Z" fill="#3d8a54"/><path d="M296.2 293.5 H302.8 L299.5 286.9Z" fill="#7fd093"/><path d="M382.4 293.5 H389.0 L385.7 286.9Z" fill="#7fd093"/><path d="M468.6 293.5 H475.2 L471.9 286.9Z" fill="#7fd093"/><path d="M554.8 293.5 H561.4 L558.1 286.9Z" fill="#7fd093"/><rect x="256" y="294.4" width="1" height="33.6" fill="#1a1e22" opacity=".9"/><rect x="342" y="294.4" width="1" height="33.6" fill="#1a1e22" opacity=".9"/><path d="M381.4 294.4 H385.0 V300.8Z" fill="#3d8a54"/><rect x="428" y="294.4" width="1" height="33.6" fill="#1a1e22" opacity=".9"/><path d="M467.4 294.4 H471.0 V300.8Z" fill="#3d8a54"/><rect x="515" y="294.4" width="1" height="33.6" fill="#1a1e22" opacity=".9"/><rect x="558" y="294.4" width="1" height="33.6" fill="#1a1e22" opacity=".9"/><rect x="601" y="294.4" width="1" height="33.6" fill="#1a1e22" opacity=".9"/><path d="M554.8 294.1 H561.4 L558.1 300.4Z" fill="#3d8a54"/><path d="M640.4 294.4 H644.0 V300.8Z" fill="#3d8a54"/><path d="M554.8 328.3 H561.4 L558.1 321.7Z" fill="#7fd093"/><rect x="687" y="294.4" width="1" height="33.6" fill="#1a1e22" opacity=".9"/><rect x="730" y="294.4" width="1" height="33.6" fill="#1a1e22" opacity=".9"/><rect x="773" y="294.4" width="1" height="33.6" fill="#1a1e22" opacity=".9"/><path d="M727.2 294.1 H733.8 L730.5 300.4Z" fill="#3d8a54"/><path d="M812.4 294.4 H816.0 V300.8Z" fill="#3d8a54"/><path d="M727.2 328.3 H733.8 L730.5 321.7Z" fill="#7fd093"/><path d="M1050.5 294.1 H1057.0 L1053.8 300.4Z" fill="#3d8a54"/><path d="M1071.4 294.4 H1075.0 V300.8Z" fill="#3d8a54"/><path d="M1050.5 328.3 H1057.0 L1053.8 321.7Z" fill="#7fd093"/><path d="M1114.4 294.4 H1118.0 V300.8Z" fill="#3d8a54"/><rect x="256" y="329.2" width="1" height="33.6" fill="#1a1e22" opacity=".9"/><path d="M295.4 329.2 H299.0 V335.6Z" fill="#3d8a54"/><rect x="342" y="329.2" width="1" height="33.6" fill="#1a1e22" opacity=".9"/><rect x="385" y="329.2" width="1" height="33.6" fill="#1a1e22" opacity=".9"/><rect x="428" y="329.2" width="1" height="33.6" fill="#1a1e22" opacity=".9"/><rect x="471" y="329.2" width="1" height="33.6" fill="#1a1e22" opacity=".9"/><rect x="515" y="329.2" width="1" height="33.6" fill="#1a1e22" opacity=".9"/><rect x="558" y="329.2" width="1" height="33.6" fill="#1a1e22" opacity=".9"/><rect x="601" y="329.2" width="1" height="33.6" fill="#1a1e22" opacity=".9"/><path d="M382.4 328.9 H389.0 L385.7 335.2Z" fill="#3d8a54"/><path d="M468.6 328.9 H475.2 L471.9 335.2Z" fill="#3d8a54"/><path d="M554.8 328.9 H561.4 L558.1 335.2Z" fill="#3d8a54"/><path d="M640.4 329.2 H644.0 V335.6Z" fill="#3d8a54"/><path d="M382.4 363.1 H389.0 L385.7 356.5Z" fill="#7fd093"/><path d="M468.6 363.1 H475.2 L471.9 356.5Z" fill="#7fd093"/><path d="M554.8 363.1 H561.4 L558.1 356.5Z" fill="#7fd093"/><rect x="687" y="329.2" width="1" height="33.6" fill="#1a1e22" opacity=".9"/><path d="M726.4 329.2 H730.0 V335.6Z" fill="#a0548a"/><rect x="773" y="329.2" width="1" height="33.6" fill="#1a1e22" opacity=".9"/><path d="M770.3 328.9 H776.9 L773.6 335.2Z" fill="#3d8a54"/><path d="M812.4 329.2 H816.0 V335.6Z" fill="#3d8a54"/><path d="M770.3 363.1 H776.9 L773.6 356.5Z" fill="#7fd093"/><rect x="989" y="329.2" width="1" height="33.6" fill="#1a1e22" opacity=".9"/><rect x="1032" y="329.2" width="1" height="33.6" fill="#1a1e22" opacity=".9"/><rect x="369" y="73" width="1.2" height="290.4" fill="#d8262c"/><rect x="402.2" y="73" width="1" height="290.4" fill="#b8262c" opacity=".9"/></svg>
<div style="left:127px;top:50.8px;width:1013px;height:6.2px;background:#e5c94d;"></div>
<svg style="left:127px;top:50.8px" width="1013" height="7" viewBox="0 0 1013 7"><path d="M0 0 H5 L0 5Z" fill="#fff6c8"/><path d="M1013 0 H1008 L1013 5Z" fill="#fff6c8"/></svg>
<div class="t fit" style="left:621.1px;top:51.3px;font-size:11.2px;color:#000;transform-origin:0 0;transform:scale(0.512,.5);font-weight:bold;">47&nbsp;&nbsp;小節</div>
<svg style="left:0;top:0" width="1140" height="90" viewBox="0 0 1140 90"><rect x="127.2" y="69.5" width=".8" height="3.7" fill="#a8acb2"/><text transform="translate(129.2 71.8) scale(.5)" font-size="11.2" font-weight="bold" fill="#c9cbcf" letter-spacing=".7" font-family="Liberation Sans,sans-serif">01:1</text><rect x="148.8" y="71.6" width=".8" height="1.6" fill="#8c9096"/><rect x="170.3" y="69.5" width=".8" height="3.7" fill="#a8acb2"/><text transform="translate(172.3 71.8) scale(.5)" font-size="11.2" font-weight="bold" fill="#c9cbcf" letter-spacing=".7" font-family="Liberation Sans,sans-serif">03:1</text><rect x="191.8" y="71.6" width=".8" height="1.6" fill="#8c9096"/><rect x="213.4" y="69.5" width=".8" height="3.7" fill="#a8acb2"/><text transform="translate(215.4 71.8) scale(.5)" font-size="11.2" font-weight="bold" fill="#c9cbcf" letter-spacing=".7" font-family="Liberation Sans,sans-serif">05:1</text><rect x="234.9" y="71.6" width=".8" height="1.6" fill="#8c9096"/><rect x="256.5" y="69.5" width=".8" height="3.7" fill="#a8acb2"/><text transform="translate(258.5 71.8) scale(.5)" font-size="11.2" font-weight="bold" fill="#c9cbcf" letter-spacing=".7" font-family="Liberation Sans,sans-serif">07:1</text><rect x="278.1" y="71.6" width=".8" height="1.6" fill="#8c9096"/><rect x="299.6" y="69.5" width=".8" height="3.7" fill="#a8acb2"/><text transform="translate(301.6 71.8) scale(.5)" font-size="11.2" font-weight="bold" fill="#c9cbcf" letter-spacing=".7" font-family="Liberation Sans,sans-serif">09:1</text><rect x="321.2" y="71.6" width=".8" height="1.6" fill="#8c9096"/><rect x="342.7" y="69.5" width=".8" height="3.7" fill="#a8acb2"/><text transform="translate(344.7 71.8) scale(.5)" font-size="11.2" font-weight="bold" fill="#c9cbcf" letter-spacing=".7" font-family="Liberation Sans,sans-serif">11:1</text><rect x="364.2" y="71.6" width=".8" height="1.6" fill="#8c9096"/><rect x="385.8" y="69.5" width=".8" height="3.7" fill="#a8acb2"/><text transform="translate(387.8 71.8) scale(.5)" font-size="11.2" font-weight="bold" fill="#c9cbcf" letter-spacing=".7" font-family="Liberation Sans,sans-serif">13:1</text><rect x="407.4" y="71.6" width=".8" height="1.6" fill="#8c9096"/><rect x="428.9" y="69.5" width=".8" height="3.7" fill="#a8acb2"/><text transform="translate(430.9 71.8) scale(.5)" font-size="11.2" font-weight="bold" fill="#c9cbcf" letter-spacing=".7" font-family="Liberation Sans,sans-serif">15:1</text><rect x="450.5" y="71.6" width=".8" height="1.6" fill="#8c9096"/><rect x="472.0" y="69.5" width=".8" height="3.7" fill="#a8acb2"/><text transform="translate(474.0 71.8) scale(.5)" font-size="11.2" font-weight="bold" fill="#c9cbcf" letter-spacing=".7" font-family="Liberation Sans,sans-serif">17:1</text><rect x="493.6" y="71.6" width=".8" height="1.6" fill="#8c9096"/><rect x="515.1" y="69.5" width=".8" height="3.7" fill="#a8acb2"/><text transform="translate(517.1 71.8) scale(.5)" font-size="11.2" font-weight="bold" fill="#c9cbcf" letter-spacing=".7" font-family="Liberation Sans,sans-serif">19:1</text><rect x="536.6" y="71.6" width=".8" height="1.6" fill="#8c9096"/><rect x="558.2" y="69.5" width=".8" height="3.7" fill="#a8acb2"/><text transform="translate(560.2 71.8) scale(.5)" font-size="11.2" font-weight="bold" fill="#c9cbcf" letter-spacing=".7" font-family="Liberation Sans,sans-serif">21:1</text><rect x="579.8" y="71.6" width=".8" height="1.6" fill="#8c9096"/><rect x="601.3" y="69.5" width=".8" height="3.7" fill="#a8acb2"/><text transform="translate(603.3 71.8) scale(.5)" font-size="11.2" font-weight="bold" fill="#c9cbcf" letter-spacing=".7" font-family="Liberation Sans,sans-serif">23:1</text><rect x="622.9" y="71.6" width=".8" height="1.6" fill="#8c9096"/><rect x="644.4" y="69.5" width=".8" height="3.7" fill="#a8acb2"/><text transform="translate(646.4 71.8) scale(.5)" font-size="11.2" font-weight="bold" fill="#c9cbcf" letter-spacing=".7" font-family="Liberation Sans,sans-serif">25:1</text><rect x="666.0" y="71.6" width=".8" height="1.6" fill="#8c9096"/><rect x="687.5" y="69.5" width=".8" height="3.7" fill="#a8acb2"/><text transform="translate(689.5 71.8) scale(.5)" font-size="11.2" font-weight="bold" fill="#c9cbcf" letter-spacing=".7" font-family="Liberation Sans,sans-serif">27:1</text><rect x="709.1" y="71.6" width=".8" height="1.6" fill="#8c9096"/><rect x="730.6" y="69.5" width=".8" height="3.7" fill="#a8acb2"/><text transform="translate(732.6 71.8) scale(.5)" font-size="11.2" font-weight="bold" fill="#c9cbcf" letter-spacing=".7" font-family="Liberation Sans,sans-serif">29:1</text><rect x="752.2" y="71.6" width=".8" height="1.6" fill="#8c9096"/><rect x="773.7" y="69.5" width=".8" height="3.7" fill="#a8acb2"/><text transform="translate(775.7 71.8) scale(.5)" font-size="11.2" font-weight="bold" fill="#c9cbcf" letter-spacing=".7" font-family="Liberation Sans,sans-serif">31:1</text><rect x="795.3" y="71.6" width=".8" height="1.6" fill="#8c9096"/><rect x="816.8" y="69.5" width=".8" height="3.7" fill="#a8acb2"/><text transform="translate(818.8 71.8) scale(.5)" font-size="11.2" font-weight="bold" fill="#c9cbcf" letter-spacing=".7" font-family="Liberation Sans,sans-serif">33:1</text><rect x="838.4" y="71.6" width=".8" height="1.6" fill="#8c9096"/><rect x="859.9" y="69.5" width=".8" height="3.7" fill="#a8acb2"/><text transform="translate(861.9 71.8) scale(.5)" font-size="11.2" font-weight="bold" fill="#c9cbcf" letter-spacing=".7" font-family="Liberation Sans,sans-serif">35:1</text><rect x="881.5" y="71.6" width=".8" height="1.6" fill="#8c9096"/><rect x="903.0" y="69.5" width=".8" height="3.7" fill="#a8acb2"/><text transform="translate(905.0 71.8) scale(.5)" font-size="11.2" font-weight="bold" fill="#c9cbcf" letter-spacing=".7" font-family="Liberation Sans,sans-serif">37:1</text><rect x="924.6" y="71.6" width=".8" height="1.6" fill="#8c9096"/><rect x="946.1" y="69.5" width=".8" height="3.7" fill="#a8acb2"/><text transform="translate(948.1 71.8) scale(.5)" font-size="11.2" font-weight="bold" fill="#c9cbcf" letter-spacing=".7" font-family="Liberation Sans,sans-serif">39:1</text><rect x="967.7" y="71.6" width=".8" height="1.6" fill="#8c9096"/><rect x="989.2" y="69.5" width=".8" height="3.7" fill="#a8acb2"/><text transform="translate(991.2 71.8) scale(.5)" font-size="11.2" font-weight="bold" fill="#c9cbcf" letter-spacing=".7" font-family="Liberation Sans,sans-serif">41:1</text><rect x="1010.8" y="71.6" width=".8" height="1.6" fill="#8c9096"/><rect x="1032.3" y="69.5" width=".8" height="3.7" fill="#a8acb2"/><text transform="translate(1034.3 71.8) scale(.5)" font-size="11.2" font-weight="bold" fill="#c9cbcf" letter-spacing=".7" font-family="Liberation Sans,sans-serif">43:1</text><rect x="1053.8" y="71.6" width=".8" height="1.6" fill="#8c9096"/><rect x="1075.4" y="69.5" width=".8" height="3.7" fill="#a8acb2"/><text transform="translate(1077.4 71.8) scale(.5)" font-size="11.2" font-weight="bold" fill="#c9cbcf" letter-spacing=".7" font-family="Liberation Sans,sans-serif">45:1</text><rect x="1096.9" y="71.6" width=".8" height="1.6" fill="#8c9096"/><rect x="1118.5" y="69.5" width=".8" height="3.7" fill="#a8acb2"/><text transform="translate(1120.5 71.8) scale(.5)" font-size="11.2" font-weight="bold" fill="#c9cbcf" letter-spacing=".7" font-family="Liberation Sans,sans-serif">47:1</text><rect x="128" y="73.2" width="990" height="11.5" fill="#b2b2b2"/><rect x="298.8" y="73.2" width="1.4" height="11.5" fill="#55585d"/><rect x="470.8" y="73.2" width="1.4" height="11.5" fill="#55585d"/><rect x="557.8" y="73.2" width="1.4" height="11.5" fill="#55585d"/><rect x="632.8" y="73.2" width="1.4" height="11.5" fill="#55585d"/><rect x="643.8" y="73.2" width="1.4" height="11.5" fill="#55585d"/><rect x="729.8" y="73.2" width="1.4" height="11.5" fill="#55585d"/><rect x="815.8" y="73.2" width="1.4" height="11.5" fill="#55585d"/><rect x="858.8" y="73.2" width="1.4" height="11.5" fill="#55585d"/><rect x="1031.8" y="73.2" width="1.4" height="11.5" fill="#55585d"/><rect x="1074.8" y="73.2" width="1.4" height="11.5" fill="#55585d"/><rect x="156.2" y="73.2" width="1" height="11.5" fill="#d8404a"/><rect x="369" y="72" width="1.2" height="13" fill="#d8262c"/><rect x="402.2" y="73.2" width="1" height="11.6" fill="#c0363c"/><path d="M366.8 67.8 H372.4 L369.6 72.6Z" fill="#e0202a"/></svg>
<div class="t" style="left:79px;top:72.5px;font-size:8px;color:#b4b8be;letter-spacing:-1px">ピッチ</div>
<div style="left:0px;top:84.4px;width:127.5px;height:1.2px;background:#181b1e;"></div>
<svg style="left:0px;top:85.0px" width="24" height="35" viewBox="0 0 24 35"><g fill="#f0f0f0"><rect x="6.6" y="4.5" width="5.9" height="2.2" rx=".5"/><rect x="13.8" y="4.5" width="5.1" height="2.2" rx=".5"/><rect x="1.75" y="8" width="6.4" height="7"/><rect x="17.6" y="8" width="5.4" height="4"/><path d="M7.9 20 L6 22.7 H8 L9.6 21.2Z M17.5 20 L19.4 22.7 H17.4 L15.8 21.2Z"/></g><circle cx="12.7" cy="15" r="8.3" fill="#22262a"/><circle cx="12.7" cy="15" r="7.7" fill="#f0f0f0"/><circle cx="12.7" cy="15" r="5.7" fill="#22262a"/></svg>
<div class="t" style="left:29.5px;top:86.8px;font-size:8px;color:#8b8f95;">1</div>
<div style="left:38.2px;top:86.6px;width:19.3px;height:8.8px;background:#2b6141;"><div class="t tb" style="left:3.2px;top:2.4px;color:#38a258">SOLO</div></div>
<div style="left:57.5px;top:86.6px;width:20.3px;height:8.8px;background:#2a4e65;"><div class="t tb" style="left:3.6px;top:2.4px;color:#3c88b8">MUTE</div></div>
<div style="left:77.8px;top:86.6px;width:31.8px;height:8.8px;background:#5b2a2e;"><div class="t tb" style="left:11.6px;top:2.4px;color:#ba3638">REC</div></div>
<div style="left:109.6px;top:86.6px;width:15.9px;height:8.8px;background:#615827;"><div class="t tb" style="left:4px;top:2.4px;color:#ac9a31">FX</div><svg style="left:11.6px;top:3.8px" width="3" height="2" viewBox="0 0 3 2"><path d="M0 0H3L1.5 1.8Z" fill="#ac9a31"/></svg></div>
<div class="t fit" style="left:40.0px;top:97.6px;font-size:7.8px;color:#cfd1d4;transform-origin:0 0;transform:scaleX(0.903);">Drums A</div>
<div style="left:39px;top:107.6px;width:81px;height:1px;background:#34383d;"></div>
<div style="left:39px;top:107.4px;width:5px;height:1.3px;background:#8d9095;"></div>
<div style="left:40px;top:113.4px;width:79px;height:1px;background:#15181b;"></div>
<div style="left:40px;top:113.3px;width:61px;height:1.2px;background:#4a7cab;"></div>
<div style="left:100.2px;top:112.4px;width:3px;height:3px;background:#e8e8e8;"></div>
<div style="left:0px;top:119.2px;width:127.5px;height:1.2px;background:#181b1e;"></div>
<svg style="left:0px;top:119.8px" width="24" height="35" viewBox="0 0 24 35"><g fill="#f0f0f0"><rect x="6.6" y="4.5" width="5.9" height="2.2" rx=".5"/><rect x="13.8" y="4.5" width="5.1" height="2.2" rx=".5"/><rect x="1.75" y="8" width="6.4" height="7"/><rect x="17.6" y="8" width="5.4" height="4"/><path d="M7.9 20 L6 22.7 H8 L9.6 21.2Z M17.5 20 L19.4 22.7 H17.4 L15.8 21.2Z"/></g><circle cx="12.7" cy="15" r="8.3" fill="#22262a"/><circle cx="12.7" cy="15" r="7.7" fill="#f0f0f0"/><circle cx="12.7" cy="15" r="5.7" fill="#22262a"/></svg>
<div class="t" style="left:29.5px;top:121.6px;font-size:8px;color:#8b8f95;">2</div>
<div style="left:38.2px;top:121.39999999999999px;width:19.3px;height:8.8px;background:#2b6141;"><div class="t tb" style="left:3.2px;top:2.4px;color:#38a258">SOLO</div></div>
<div style="left:57.5px;top:121.39999999999999px;width:20.3px;height:8.8px;background:#2a4e65;"><div class="t tb" style="left:3.6px;top:2.4px;color:#3c88b8">MUTE</div></div>
<div style="left:77.8px;top:121.39999999999999px;width:31.8px;height:8.8px;background:#5b2a2e;"><div class="t tb" style="left:11.6px;top:2.4px;color:#ba3638">REC</div></div>
<div style="left:109.6px;top:121.39999999999999px;width:15.9px;height:8.8px;background:#615827;"><div class="t tb" style="left:4px;top:2.4px;color:#ac9a31">FX</div><svg style="left:11.6px;top:3.8px" width="3" height="2" viewBox="0 0 3 2"><path d="M0 0H3L1.5 1.8Z" fill="#ac9a31"/></svg></div>
<div class="t fit" style="left:40.0px;top:132.4px;font-size:7.8px;color:#cfd1d4;transform-origin:0 0;transform:scaleX(0.890);">Drums B</div>
<div style="left:39px;top:142.4px;width:81px;height:1px;background:#34383d;"></div>
<div style="left:40px;top:148.2px;width:79px;height:1px;background:#15181b;"></div>
<div style="left:40px;top:148.1px;width:61px;height:1.2px;background:#4a7cab;"></div>
<div style="left:100.2px;top:147.2px;width:3px;height:3px;background:#e8e8e8;"></div>
<div style="left:0px;top:154.0px;width:127.5px;height:1.2px;background:#181b1e;"></div>
<svg style="left:0px;top:154.6px" width="24" height="35" viewBox="0 0 24 35"><g fill="#f0f0f0"><path d="M3.7 22.1 L6.3 19.2 L6.0 17.0 L17.6 5.4 C19 4.4 20.6 4.8 21.1 6.6 C21.4 8.6 19.4 9.6 18 11.6 C17 13.4 17.4 15.4 16.4 17.4 C15.4 19.2 13.6 19.6 12 20.4 C10.4 21.2 9.4 22.2 8.4 22.4 Z"/><rect x="13.6" y="2.9" width="2.7" height="2.7" rx=".6"/><rect x="10.5" y="6.1" width="2.7" height="2.7" rx=".6"/><rect x="7.6" y="9.1" width="2.7" height="2.7" rx=".6"/><rect x="4.6" y="12.1" width="2.7" height="2.7" rx=".6"/></g><g fill="#b8b8b8"><circle cx="17.8" cy="7.3" r=".8"/><circle cx="14.9" cy="10.4" r=".8"/><circle cx="11.8" cy="13.4" r=".8"/><circle cx="9" cy="16.3" r=".8"/></g></svg>
<div class="t" style="left:29.5px;top:156.4px;font-size:8px;color:#8b8f95;">3</div>
<div style="left:38.2px;top:156.2px;width:19.3px;height:8.8px;background:#2b6141;"><div class="t tb" style="left:3.2px;top:2.4px;color:#38a258">SOLO</div></div>
<div style="left:57.5px;top:156.2px;width:20.3px;height:8.8px;background:#2a4e65;"><div class="t tb" style="left:3.6px;top:2.4px;color:#3c88b8">MUTE</div></div>
<div style="left:77.8px;top:156.2px;width:31.8px;height:8.8px;background:#5b2a2e;"><div class="t tb" style="left:11.6px;top:2.4px;color:#ba3638">REC</div></div>
<div style="left:109.6px;top:156.2px;width:15.9px;height:8.8px;background:#615827;"><div class="t tb" style="left:4px;top:2.4px;color:#ac9a31">FX</div><svg style="left:11.6px;top:3.8px" width="3" height="2" viewBox="0 0 3 2"><path d="M0 0H3L1.5 1.8Z" fill="#ac9a31"/></svg></div>
<div class="t fit" style="left:40.0px;top:167.2px;font-size:7.8px;color:#cfd1d4;transform-origin:0 0;transform:scaleX(0.939);">Bass A</div>
<div style="left:39px;top:177.2px;width:81px;height:1px;background:#34383d;"></div>
<div style="left:40px;top:183.0px;width:79px;height:1px;background:#15181b;"></div>
<div style="left:40px;top:182.9px;width:61px;height:1.2px;background:#4a7cab;"></div>
<div style="left:100.2px;top:182.0px;width:3px;height:3px;background:#e8e8e8;"></div>
<div style="left:0px;top:188.79999999999998px;width:127.5px;height:1.2px;background:#181b1e;"></div>
<svg style="left:0px;top:189.4px" width="24" height="35" viewBox="0 0 24 35"><g fill="#f0f0f0"><path d="M3.7 22.1 L6.3 19.2 L6.0 17.0 L17.6 5.4 C19 4.4 20.6 4.8 21.1 6.6 C21.4 8.6 19.4 9.6 18 11.6 C17 13.4 17.4 15.4 16.4 17.4 C15.4 19.2 13.6 19.6 12 20.4 C10.4 21.2 9.4 22.2 8.4 22.4 Z"/><rect x="13.6" y="2.9" width="2.7" height="2.7" rx=".6"/><rect x="10.5" y="6.1" width="2.7" height="2.7" rx=".6"/><rect x="7.6" y="9.1" width="2.7" height="2.7" rx=".6"/><rect x="4.6" y="12.1" width="2.7" height="2.7" rx=".6"/></g><g fill="#b8b8b8"><circle cx="17.8" cy="7.3" r=".8"/><circle cx="14.9" cy="10.4" r=".8"/><circle cx="11.8" cy="13.4" r=".8"/><circle cx="9" cy="16.3" r=".8"/></g></svg>
<div class="t" style="left:29.5px;top:191.2px;font-size:8px;color:#8b8f95;">4</div>
<div style="left:38.2px;top:190.99999999999997px;width:19.3px;height:8.8px;background:#2b6141;"><div class="t tb" style="left:3.2px;top:2.4px;color:#38a258">SOLO</div></div>
<div style="left:57.5px;top:190.99999999999997px;width:20.3px;height:8.8px;background:#2a4e65;"><div class="t tb" style="left:3.6px;top:2.4px;color:#3c88b8">MUTE</div></div>
<div style="left:77.8px;top:190.99999999999997px;width:31.8px;height:8.8px;background:#5b2a2e;"><div class="t tb" style="left:11.6px;top:2.4px;color:#ba3638">REC</div></div>
<div style="left:109.6px;top:190.99999999999997px;width:15.9px;height:8.8px;background:#615827;"><div class="t tb" style="left:4px;top:2.4px;color:#ac9a31">FX</div><svg style="left:11.6px;top:3.8px" width="3" height="2" viewBox="0 0 3 2"><path d="M0 0H3L1.5 1.8Z" fill="#ac9a31"/></svg></div>
<div class="t fit" style="left:40.0px;top:202.0px;font-size:7.8px;color:#cfd1d4;transform-origin:0 0;transform:scaleX(0.923);">Bass B</div>
<div style="left:39px;top:211.99999999999997px;width:81px;height:1px;background:#34383d;"></div>
<div style="left:40px;top:217.79999999999998px;width:79px;height:1px;background:#15181b;"></div>
<div style="left:40px;top:217.7px;width:61px;height:1.2px;background:#4a7cab;"></div>
<div style="left:100.2px;top:216.79999999999998px;width:3px;height:3px;background:#e8e8e8;"></div>
<div style="left:0px;top:223.6px;width:127.5px;height:1.2px;background:#181b1e;"></div>
<svg style="left:0px;top:224.2px" width="24" height="35" viewBox="0 0 24 35"><g fill="#eeeeee"><circle cx="11.6" cy="9.6" r="6"/><rect x="1.75" y="10.4" width="21.3" height="9.5" rx="4.7"/></g></svg>
<div class="t" style="left:29.5px;top:226.0px;font-size:8px;color:#8b8f95;">5</div>
<div style="left:38.2px;top:225.79999999999998px;width:19.3px;height:8.8px;background:#2b6141;"><div class="t tb" style="left:3.2px;top:2.4px;color:#38a258">SOLO</div></div>
<div style="left:57.5px;top:225.79999999999998px;width:20.3px;height:8.8px;background:#2a4e65;"><div class="t tb" style="left:3.6px;top:2.4px;color:#3c88b8">MUTE</div></div>
<div style="left:77.8px;top:225.79999999999998px;width:31.8px;height:8.8px;background:#5b2a2e;"><div class="t tb" style="left:11.6px;top:2.4px;color:#ba3638">REC</div></div>
<div style="left:109.6px;top:225.79999999999998px;width:15.9px;height:8.8px;background:#615827;"><div class="t tb" style="left:4px;top:2.4px;color:#ac9a31">FX</div><svg style="left:11.6px;top:3.8px" width="3" height="2" viewBox="0 0 3 2"><path d="M0 0H3L1.5 1.8Z" fill="#ac9a31"/></svg></div>
<div class="t fit" style="left:40.0px;top:236.8px;font-size:7.8px;color:#cfd1d4;transform-origin:0 0;transform:scaleX(0.899);">Atmo B</div>
<div style="left:39px;top:246.79999999999998px;width:81px;height:1px;background:#34383d;"></div>
<div style="left:39px;top:246.6px;width:28px;height:1.3px;background:#8d9095;"></div>
<div style="left:40px;top:252.6px;width:79px;height:1px;background:#15181b;"></div>
<div style="left:40px;top:252.5px;width:61px;height:1.2px;background:#4a7cab;"></div>
<div style="left:100.2px;top:251.6px;width:3px;height:3px;background:#e8e8e8;"></div>
<div style="left:0px;top:258.4px;width:127.5px;height:1.2px;background:#181b1e;"></div>
<svg style="left:0px;top:259.0px" width="24" height="35" viewBox="0 0 24 35"><g fill="#eeeeee"><circle cx="11.6" cy="9.6" r="6"/><rect x="1.75" y="10.4" width="21.3" height="9.5" rx="4.7"/></g></svg>
<div class="t" style="left:29.5px;top:260.8px;font-size:8px;color:#8b8f95;">6</div>
<div style="left:38.2px;top:260.6px;width:19.3px;height:8.8px;background:#2b6141;"><div class="t tb" style="left:3.2px;top:2.4px;color:#38a258">SOLO</div></div>
<div style="left:57.5px;top:260.6px;width:20.3px;height:8.8px;background:#2a4e65;"><div class="t tb" style="left:3.6px;top:2.4px;color:#3c88b8">MUTE</div></div>
<div style="left:77.8px;top:260.6px;width:31.8px;height:8.8px;background:#5b2a2e;"><div class="t tb" style="left:11.6px;top:2.4px;color:#ba3638">REC</div></div>
<div style="left:109.6px;top:260.6px;width:15.9px;height:8.8px;background:#615827;"><div class="t tb" style="left:4px;top:2.4px;color:#ac9a31">FX</div><svg style="left:11.6px;top:3.8px" width="3" height="2" viewBox="0 0 3 2"><path d="M0 0H3L1.5 1.8Z" fill="#ac9a31"/></svg></div>
<div class="t fit" style="left:40.0px;top:271.6px;font-size:7.8px;color:#cfd1d4;transform-origin:0 0;transform:scaleX(0.915);">Atmo A</div>
<div style="left:39px;top:281.6px;width:81px;height:1px;background:#34383d;"></div>
<div style="left:39px;top:281.4px;width:34px;height:1.3px;background:#8d9095;"></div>
<div style="left:40px;top:287.4px;width:79px;height:1px;background:#15181b;"></div>
<div style="left:40px;top:287.3px;width:61px;height:1.2px;background:#4a7cab;"></div>
<div style="left:100.2px;top:286.4px;width:3px;height:3px;background:#e8e8e8;"></div>
<div style="left:0px;top:293.19999999999993px;width:127.5px;height:1.2px;background:#181b1e;"></div>
<svg style="left:0px;top:293.8px" width="24" height="35" viewBox="0 0 24 35"><g fill="#f0f0f0"><ellipse cx="5.3" cy="11.4" rx="2.8" ry="2.2" transform="rotate(-18 5.3 11.4)"/><rect x="7.2" y="3.2" width="1.3" height="8.6"/><ellipse cx="10.1" cy="19.7" rx="2.9" ry="2.3" transform="rotate(-18 10.1 19.7)"/><ellipse cx="18" cy="15.3" rx="2.9" ry="2.3" transform="rotate(-18 18 15.3)"/><rect x="11.7" y="8.6" width="1.3" height="11.2"/><rect x="19.9" y="4" width="1.3" height="11.4"/><path d="M11.7 8.2 L21.2 3.4 V5.8 L11.7 10.6Z"/></g></svg>
<div class="t" style="left:29.5px;top:295.59999999999997px;font-size:8px;color:#8b8f95;">7</div>
<div style="left:38.2px;top:295.4px;width:19.3px;height:8.8px;background:#2b6141;"><div class="t tb" style="left:3.2px;top:2.4px;color:#38a258">SOLO</div></div>
<div style="left:57.5px;top:295.4px;width:20.3px;height:8.8px;background:#2a4e65;"><div class="t tb" style="left:3.6px;top:2.4px;color:#3c88b8">MUTE</div></div>
<div style="left:77.8px;top:295.4px;width:31.8px;height:8.8px;background:#5b2a2e;"><div class="t tb" style="left:11.6px;top:2.4px;color:#ba3638">REC</div></div>
<div style="left:109.6px;top:295.4px;width:15.9px;height:8.8px;background:#615827;"><div class="t tb" style="left:4px;top:2.4px;color:#ac9a31">FX</div><svg style="left:11.6px;top:3.8px" width="3" height="2" viewBox="0 0 3 2"><path d="M0 0H3L1.5 1.8Z" fill="#ac9a31"/></svg></div>
<div class="t fit" style="left:40.0px;top:306.4px;font-size:7.8px;color:#cfd1d4;transform-origin:0 0;transform:scaleX(0.838);">Themes</div>
<div style="left:39px;top:316.4px;width:81px;height:1px;background:#34383d;"></div>
<div style="left:39px;top:316.19999999999993px;width:36px;height:1.3px;background:#8d9095;"></div>
<div style="left:40px;top:322.19999999999993px;width:79px;height:1px;background:#15181b;"></div>
<div style="left:40px;top:322.09999999999997px;width:61px;height:1.2px;background:#4a7cab;"></div>
<div style="left:100.2px;top:321.19999999999993px;width:3px;height:3px;background:#e8e8e8;"></div>
<div style="left:0px;top:327.99999999999994px;width:127.5px;height:1.2px;background:#181b1e;"></div>
<svg style="left:0px;top:328.6px" width="24" height="35" viewBox="0 0 24 35"><g fill="#f0f0f0"><circle cx="8.8" cy="17.6" r="5"/><circle cx="13.6" cy="11" r="3.9"/><path d="M9.6 12 L13 15.6 L16.4 12.6 L12 9Z"/><path d="M15.4 8.2 L21 2.8 L22 3.9 L16.6 9.4Z"/><path d="M19.4 2.6 L22.2 5.6 M21.8 2.4 L19.6 5" stroke="#f0f0f0" stroke-width=".8"/><path d="M1.4 15.2 L15.4 1 L16.2 1.8 L2.2 16Z"/></g><path d="M8.4 13.8 L11.4 16.8" stroke="#22262a" stroke-width=".9"/><path d="M1.9 16.7 L16.5 2.2" stroke="#22262a" stroke-width=".55"/></svg>
<div class="t" style="left:29.5px;top:330.4px;font-size:8px;color:#8b8f95;">8</div>
<div style="left:38.2px;top:330.2px;width:19.3px;height:8.8px;background:#2b6141;"><div class="t tb" style="left:3.2px;top:2.4px;color:#38a258">SOLO</div></div>
<div style="left:57.5px;top:330.2px;width:20.3px;height:8.8px;background:#2a4e65;"><div class="t tb" style="left:3.6px;top:2.4px;color:#3c88b8">MUTE</div></div>
<div style="left:77.8px;top:330.2px;width:31.8px;height:8.8px;background:#5b2a2e;"><div class="t tb" style="left:11.6px;top:2.4px;color:#ba3638">REC</div></div>
<div style="left:109.6px;top:330.2px;width:15.9px;height:8.8px;background:#615827;"><div class="t tb" style="left:4px;top:2.4px;color:#ac9a31">FX</div><svg style="left:11.6px;top:3.8px" width="3" height="2" viewBox="0 0 3 2"><path d="M0 0H3L1.5 1.8Z" fill="#ac9a31"/></svg></div>
<div class="t fit" style="left:40.0px;top:341.2px;font-size:7.8px;color:#cfd1d4;transform-origin:0 0;transform:scaleX(0.865);">Strings</div>
<div style="left:39px;top:351.2px;width:81px;height:1px;background:#34383d;"></div>
<div style="left:39px;top:350.99999999999994px;width:28px;height:1.3px;background:#8d9095;"></div>
<div style="left:40px;top:356.99999999999994px;width:79px;height:1px;background:#15181b;"></div>
<div style="left:40px;top:356.9px;width:61px;height:1.2px;background:#4a7cab;"></div>
<div style="left:100.2px;top:355.99999999999994px;width:3px;height:3px;background:#e8e8e8;"></div>
<div style="left:0px;top:362.79999999999995px;width:127.5px;height:1.2px;background:#181b1e;"></div>
<div style="left:127px;top:85px;width:1px;height:278.4px;background:#15181b;"></div>
<div style="left:1140px;top:41px;width:12px;height:456px;background:#373b43;"></div>
<svg style="left:1141.20px;top:75.80px" width="6.00" height="4.40" viewBox="0 0 6 4.4"><path d="M0 4.4 L3 0 L6 4.4Z" fill="#8a8e93"/></svg>
<div style="left:1141.7px;top:85.4px;width:5.2px;height:375px;background:#767b80;border-radius:2px"></div>
<svg style="left:1141.80px;top:465.00px" width="5.00" height="4.00" viewBox="0 0 5 4"><path d="M0 0 L5 0 L2.5 4Z" fill="#767b82"/></svg>
<div style="left:1142.4px;top:475.5px;width:3.6px;height:1px;background:#767b82;"></div>
<div style="left:1142.4px;top:484px;width:3.6px;height:1px;background:#767b82;"></div>
<div style="left:1143.7px;top:482.7px;width:1px;height:3.6px;background:#767b82;"></div>
<div style="left:1149.6px;top:420px;width:1px;height:10px;background-image:repeating-linear-gradient(to bottom,#6a6f77 0 1px,transparent 1px 2px)"></div>
<div style="left:0px;top:488px;width:1140px;height:9.5px;background:#373b43;"></div>
<svg style="left:129.50px;top:490.80px" width="4.00" height="5.00" viewBox="0 0 4 5"><path d="M4 0 L0 2.5 L4 5Z" fill="#6d7279"/></svg>
<div style="left:139px;top:490.9px;width:968px;height:4.9px;background:#767b80;border-radius:2px"></div>
<svg style="left:1112.50px;top:490.80px" width="4.00" height="5.00" viewBox="0 0 4 5"><path d="M0 0 L4 2.5 L0 5Z" fill="#6d7279"/></svg>
<div style="left:1125px;top:493px;width:3.6px;height:1px;background:#767b82;"></div>
<div style="left:1133.3px;top:493px;width:3.6px;height:1px;background:#767b82;"></div>
<div style="left:1134.6px;top:491.7px;width:1px;height:3.6px;background:#767b82;"></div>
<div style="left:0px;top:496.5px;width:1148.5px;height:34.5px;background:#3f444c;"></div>
<div style="left:0px;top:531px;width:1148.5px;height:4px;background:#34383f;"></div>
<div style="left:30.6px;top:503.9px;width:24.2px;height:24.2px;background:#5087ec;"></div>
<div style="left:78.5px;top:503.9px;width:24.4px;height:24.2px;background:#5087ec;"></div>
<svg style="left:12.00px;top:510.00px" width="12.00" height="12.00" viewBox="0 0 12 12"><rect x="1" y="1.6" width="7.6" height="1.6" fill="#cfd2d6"/><rect x="1" y="4.2" width="7.6" height="1.6" fill="#cfd2d6"/><path d="M3 6 H6 L4.5 8Z" fill="#cfd2d6"/><path d="M8.6 6.4 V10.4 M6.6 8.4 H10.6" stroke="#cfd2d6" stroke-width="1"/></svg>
<svg style="left:35.70px;top:510.00px" width="14.00" height="12.00" viewBox="0 0 14 12"><path d="M6.2 3.2 H4.6 A2.9 2.9 0 0 0 4.6 9 H5.4 M7.8 9 H9.4 A2.9 2.9 0 0 0 9.4 3.2 H8.6" stroke="#fff" stroke-width="1.3" fill="none"/><path d="M5 7.2 L6.8 9 L5 10.8Z M9 1.4 L7.2 3.2 L9 5Z" fill="#fff"/></svg>
<svg style="left:61.30px;top:510.50px" width="10.00" height="11.00" viewBox="0 0 10 11"><rect x="1.4" y="1" width="1.6" height="9" fill="#fff"/><path d="M8.6 1 V10 L3.2 5.5Z" fill="#fff"/></svg>
<div style="left:86.8px;top:511.8px;width:2.4px;height:8.4px;background:#fff;"></div>
<div style="left:92.2px;top:511.8px;width:2.4px;height:8.4px;background:#fff;"></div>
<div style="left:110.4px;top:511.7px;width:8.5px;height:8.5px;background:#fff;"></div>
<svg style="left:132.40px;top:510.00px" width="12.00" height="12.00" viewBox="0 0 12 12"><circle cx="6" cy="6" r="5" fill="#ef4a4e" stroke="#e8dede" stroke-width=".8"/></svg>
<svg style="left:156.50px;top:510.00px" width="12.00" height="12.00" viewBox="0 0 12 12"><g fill="#fff"><circle cx="6" cy="6" r="3.8"/><rect x="5.2" y="0.6" width="1.6" height="10.8" transform="rotate(0 6 6)"/><rect x="5.2" y="0.6" width="1.6" height="10.8" transform="rotate(45 6 6)"/><rect x="5.2" y="0.6" width="1.6" height="10.8" transform="rotate(90 6 6)"/><rect x="5.2" y="0.6" width="1.6" height="10.8" transform="rotate(135 6 6)"/></g><circle cx="6" cy="6" r="2.5" fill="#ef3a40"/></svg>
<div class="t fit" style="left:189.0px;top:505.6px;font-size:9.6px;color:#d9dbde;transform-origin:0 0;transform:scaleX(0.937);">13.04.005</div>
<div class="t fit" style="left:186.2px;top:519.2px;font-size:7.4px;color:#d9dbde;transform-origin:0 0;transform:scaleX(0.930);">Bar.Beats.Ticks</div>
<div class="t fit" style="left:255.8px;top:504.6px;font-size:9.6px;color:#d9dbde;transform-origin:0 0;transform:scaleX(1.016);letter-spacing:.8px;">4/4</div>
<div class="t fit" style="left:256.5px;top:519px;font-size:7.6px;color:#d9dbde;transform-origin:0 0;transform:scaleX(0.988);">小節</div>
<div class="t fit" style="left:294.4px;top:504.6px;font-size:9.6px;color:#d9dbde;transform-origin:0 0;transform:scaleX(0.984);">80</div>
<div class="t fit" style="left:292.8px;top:519.2px;font-size:7.4px;color:#d9dbde;transform-origin:0 0;transform:scaleX(0.905);">BPM</div>
<svg style="left:326.00px;top:510.50px" width="10.00" height="11.00" viewBox="0 0 10 11"><path d="M3.6 1.6 H6.4 L8 10 H2Z" fill="#e6e6e6"/><path d="M2 2 L5.4 7.2" stroke="#3f444c" stroke-width=".9"/><path d="M1.6 1.6 L5 7" stroke="#e6e6e6" stroke-width=".7"/></svg>
<svg style="left:345.20px;top:514.90px" width="4.00" height="3.00" viewBox="0 0 4 3"><path d="M0 0 H4 L2 3Z" fill="#e6e6e6"/></svg>
<div style="left:1020.3px;top:504.8px;width:72.4px;height:2px;background:#363a41;"></div>
<svg style="left:1020.3px;top:504.2px" width="33" height="3.2" viewBox="0 0 33 3.2"><rect x="0.00" y="0" width="1.55" height="3.2" fill="#e6e6e6"/><rect x="2.35" y="0" width="1.55" height="3.2" fill="#e6e6e6"/><rect x="4.70" y="0" width="1.55" height="3.2" fill="#e6e6e6"/><rect x="7.05" y="0" width="1.55" height="3.2" fill="#e6e6e6"/><rect x="9.40" y="0" width="1.55" height="3.2" fill="#e6e6e6"/><rect x="11.75" y="0" width="1.55" height="3.2" fill="#e6e6e6"/><rect x="14.10" y="0" width="1.55" height="3.2" fill="#e6e6e6"/><rect x="16.45" y="0" width="1.55" height="3.2" fill="#e6e6e6"/><rect x="18.80" y="0" width="1.55" height="3.2" fill="#e6e6e6"/><rect x="21.15" y="0" width="1.55" height="3.2" fill="#e6e6e6"/><rect x="23.50" y="0" width="1.55" height="3.2" fill="#e6e6e6"/><rect x="25.85" y="0" width="1.55" height="3.2" fill="#e6e6e6"/><rect x="28.20" y="0" width="1.55" height="3.2" fill="#e6e6e6"/><rect x="30.55" y="0" width="1.55" height="3.2" fill="#e6e6e6"/></svg>
<div style="left:1020.3px;top:523.6px;width:72.4px;height:2px;background:#363a41;"></div>
<svg style="left:1020.3px;top:523px" width="33" height="3.2" viewBox="0 0 33 3.2"><rect x="0.00" y="0" width="1.55" height="3.2" fill="#e6e6e6"/><rect x="2.35" y="0" width="1.55" height="3.2" fill="#e6e6e6"/><rect x="4.70" y="0" width="1.55" height="3.2" fill="#e6e6e6"/><rect x="7.05" y="0" width="1.55" height="3.2" fill="#e6e6e6"/><rect x="9.40" y="0" width="1.55" height="3.2" fill="#e6e6e6"/><rect x="11.75" y="0" width="1.55" height="3.2" fill="#e6e6e6"/><rect x="14.10" y="0" width="1.55" height="3.2" fill="#e6e6e6"/><rect x="16.45" y="0" width="1.55" height="3.2" fill="#e6e6e6"/><rect x="18.80" y="0" width="1.55" height="3.2" fill="#e6e6e6"/><rect x="21.15" y="0" width="1.55" height="3.2" fill="#e6e6e6"/><rect x="23.50" y="0" width="1.55" height="3.2" fill="#e6e6e6"/><rect x="25.85" y="0" width="1.55" height="3.2" fill="#e6e6e6"/><rect x="28.20" y="0" width="1.55" height="3.2" fill="#e6e6e6"/><rect x="30.55" y="0" width="1.55" height="3.2" fill="#e6e6e6"/></svg>
<div style="left:1053.6px;top:523px;width:2.2px;height:3.2px;background:#e89a2a;"></div>
<div style="left:1020.3px;top:514.4px;width:72.4px;height:1.6px;background:#363a41;"></div>
<div style="left:1020.3px;top:514.1px;width:53px;height:2.1px;background:#4d86ee;"></div>
<div style="left:1060.6px;top:509px;width:0.9px;height:3px;background:#555a62;"></div>
<div style="left:1060.6px;top:518.3px;width:0.9px;height:3.2px;background:#555a62;"></div>
<div style="left:1075.1px;top:509px;width:0.9px;height:3px;background:#555a62;"></div>
<div style="left:1075.1px;top:518.3px;width:0.9px;height:3.2px;background:#555a62;"></div>
<div style="left:1072.1px;top:512.3px;width:5.8px;height:5.8px;background:#fff;border-radius:50%"></div>
<div class="t fit" style="left:1104.2px;top:512.6px;font-size:6.8px;color:#5a5f66;transform-origin:0 0;transform:scaleX(0.940);">MIDI</div>
<svg style="left:1125.00px;top:511.20px" width="12.00" height="12.00" viewBox="0 0 12 12"><circle cx="4.6" cy="4.6" r="3.7" fill="none" stroke="#d4d6d9" stroke-width="1"/><path d="M7.4 7.4 L10.4 10.4" stroke="#d4d6d9" stroke-width="1.1"/></svg>
<div style="left:570px;top:532.4px;width:10px;height:1px;background-image:repeating-linear-gradient(to right,#6a6f77 0 1px,transparent 1px 2px)"></div>
<div style="left:0px;top:534.6px;width:1148.5px;height:22.6px;background:#363a42;"></div>
<div style="left:0px;top:534.9px;width:93.8px;height:22.2px;background:#373b43;border-right:1px solid #30343a;border-top:1px solid #33373d"></div>
<div style="left:94.9px;top:534.9px;width:65.4px;height:22.2px;background:#3f444c;"></div>
<div style="left:161.2px;top:534.9px;width:98.4px;height:22.2px;background:#373b43;border-right:1px solid #30343a;border-left:1px solid #30343a;border-top:1px solid #33373d"></div>
<svg style="left:4.50px;top:539.90px" width="11.00" height="11.00" viewBox="0 0 11 11"><g fill="#b9bcc1"><path d="M4 1.8 L10 .6 V2.4 L4 3.6 Z"/><rect x="4" y="2" width=".9" height="7.2"/><rect x="9.1" y="1" width=".9" height="7"/><ellipse cx="3" cy="9.2" rx="1.9" ry="1.4"/><ellipse cx="8.1" cy="8" rx="1.9" ry="1.4"/></g></svg>
<div class="t fit" style="left:23.3px;top:542.4px;font-size:8px;color:#bfc2c7;transform-origin:0 0;transform:scaleX(0.943);">Song Maker AI</div>
<svg style="left:81.00px;top:541.80px" width="8.00" height="8.00" viewBox="0 0 8 8"><path d="M1 1 L7 7 M7 1 L1 7" stroke="#e4e4e4" stroke-width="1.1"/></svg>
<svg style="left:99.00px;top:539.90px" width="10.00" height="11.00" viewBox="0 0 10 11"><g stroke="#e8e8e8" stroke-width=".9"><path d="M2.6 .6 V10.4 M7.4 .6 V10.4"/></g><rect x="1.2" y="5" width="2.8" height="3.4" rx="1.2" fill="#e8e8e8"/><rect x="6" y="3.4" width="2.8" height="3.4" rx="1.2" fill="#e8e8e8"/></svg>
<div class="t fit" style="left:115.8px;top:542.2px;font-size:8px;color:#d6d8db;transform-origin:0 0;transform:scaleX(0.781);">ミキサー</div>
<svg style="left:147.70px;top:541.80px" width="8.00" height="8.00" viewBox="0 0 8 8"><path d="M1 1 L7 7 M7 1 L1 7" stroke="#e4e4e4" stroke-width="1.1"/></svg>
<svg style="left:165.40px;top:540.20px" width="10.00" height="10.00" viewBox="0 0 10 10"><circle cx="5" cy="5" r="4.6" fill="#9a9da2"/><text transform="translate(5 6.7) scale(.5)" font-size="8.8" font-weight="bold" text-anchor="middle" fill="#393d45" font-family="Liberation Sans,sans-serif">FX</text></svg>
<div class="t fit" style="left:180.0px;top:542.2px;font-size:8px;color:#bfc2c7;transform-origin:0 0;transform:scaleX(0.693);">オブジェクトエフェクト</div>
<svg style="left:246.40px;top:541.80px" width="8.00" height="8.00" viewBox="0 0 8 8"><path d="M1 1 L7 7 M7 1 L1 7" stroke="#e4e4e4" stroke-width="1.1"/></svg>
<svg style="left:608.6px;top:477.4px" width="9" height="12" viewBox="0 0 9 12"><path d="M.8 .8 V9.6 L2.9 7.6 L4.4 10.9 L5.8 10.3 L4.3 7.1 H7.3 Z" fill="#fff" stroke="#15181b" stroke-width=".7"/></svg>
<div style="left:0px;top:808px;width:1536px;height:13px;background:#373b43;"></div>
<div style="left:1152.3px;top:41px;width:383.7px;height:766px;background:#3f444c;"></div>
<div style="left:1148.5px;top:41px;width:3.8px;height:766px;background:#373b43;"></div>
<div style="left:1151.6px;top:41px;width:1.2px;height:766px;background:linear-gradient(to right,#26292e,#3f444c)"></div>
<div style="left:1152.3px;top:41px;width:383.7px;height:0.8px;background:#2a2d32;"></div>
<div style="left:1152.3px;top:41.6px;width:65.8px;height:21.6px;background:#373b43;"></div>
<div style="left:1284px;top:41.6px;width:86.4px;height:21.6px;background:#373b43;"></div>
<svg style="left:1157.20px;top:46.70px" width="10.00" height="11.00" viewBox="0 0 10 11"><path d="M1.2 3.6 H8.8 V10.4 H1.2 Z" fill="#e6e6e6"/><path d="M3.2 3.6 V2.6 A1.8 1.8 0 0 1 6.8 2.6 V3.6" stroke="#e6e6e6" stroke-width="1" fill="none"/><path d="M3 8.8 V5.6 L5 7.4 L7 5.6 V8.8" stroke="#373b43" stroke-width="1" fill="none"/></svg>
<div class="t fit" style="left:1177.4px;top:48.6px;font-size:8px;color:#d4d6d9;transform-origin:0 0;transform:scaleX(0.717);">ストア</div>
<svg style="left:1204.50px;top:48.40px" width="8.40" height="8.40" viewBox="0 0 8.4 8.4"><path d="M1 1 L7.4 7.4 M7.4 1 L1 7.4" stroke="#ececec" stroke-width="1.1"/></svg>
<svg style="left:1222.50px;top:46.50px" width="11.00" height="11.00" viewBox="0 0 11 11"><circle cx="5.5" cy="5.5" r="5" fill="#fff"/><path d="M5.5 3.2 V7.8 M4 4.4 V6.6 M7 4.4 V6.6" stroke="#3f444c" stroke-width=".9"/></svg>
<div class="t fit" style="left:1243.0px;top:48.6px;font-size:8px;color:#e0e2e4;transform-origin:0 0;transform:scaleX(0.765);">ループ</div>
<svg style="left:1271.10px;top:48.40px" width="8.40" height="8.40" viewBox="0 0 8.4 8.4"><path d="M1 1 L7.4 7.4 M7.4 1 L1 7.4" stroke="#ececec" stroke-width="1.1"/></svg>
<svg style="left:1288.60px;top:46.40px" width="12.00" height="12.00" viewBox="0 0 12 12"><path d="M3 8.4 A2.4 2.4 0 0 1 3 3.8 A3.2 3.2 0 0 1 9.2 3.6 A2.5 2.5 0 0 1 9.4 8.4" stroke="#c8cacd" stroke-width=".9" fill="none"/><path d="M6 5.4 V10.4 M4.4 9 L6 10.8 L7.6 9" stroke="#c8cacd" stroke-width=".9" fill="none"/></svg>
<div class="t fit" style="left:1312.6px;top:48.6px;font-size:8px;color:#d4d6d9;transform-origin:0 0;transform:scaleX(0.750);">ダウンロード</div>
<svg style="left:1357.50px;top:48.40px" width="8.40" height="8.40" viewBox="0 0 8.4 8.4"><path d="M1 1 L7.4 7.4 M7.4 1 L1 7.4" stroke="#ececec" stroke-width="1.1"/></svg>
<div style="left:1153.9px;top:71.2px;width:75px;height:13.3px;background:#3a3f47;border:1px solid #24272c;border-radius:1px"></div>
<div class="t fit sb" style="left:1159.8px;top:74.2px;font-size:7.4px;color:#f0f0f0;transform-origin:0 0;transform:scaleX(0.737);">すべてのループ</div>
<svg style="left:1221.60px;top:76.70px" width="4.00" height="3.00" viewBox="0 0 4 3"><path d="M0 0 H4 L2 2.6Z" fill="#d8d8d8"/></svg>
<div style="left:1344.1px;top:71.1px;width:165px;height:13.3px;background:#24272c;"></div>
<div class="t fit" style="left:1348.0px;top:74.4px;font-size:7px;color:#5c6168;transform-origin:0 0;transform:scaleX(0.806);">検索: ループ</div>
<svg style="left:1516.30px;top:71.80px" width="12.00" height="12.00" viewBox="0 0 12 12"><g fill="#9a9da2"><circle cx="6" cy="6" r="3.4"/><rect x="5.4" y="0.6" width="1.2" height="10.8" transform="rotate(0 6 6)"/><rect x="5.4" y="0.6" width="1.2" height="10.8" transform="rotate(30 6 6)"/><rect x="5.4" y="0.6" width="1.2" height="10.8" transform="rotate(60 6 6)"/><rect x="5.4" y="0.6" width="1.2" height="10.8" transform="rotate(90 6 6)"/><rect x="5.4" y="0.6" width="1.2" height="10.8" transform="rotate(120 6 6)"/><rect x="5.4" y="0.6" width="1.2" height="10.8" transform="rotate(150 6 6)"/></g><circle cx="6" cy="6" r="1.9" fill="#3f444c"/></svg>
<div style="left:1152.6px;top:92.8px;width:190.4px;height:10.8px;background:#33373e;border:1px solid #24272c"></div>
<div class="t fit" style="left:1156.3px;top:94.8px;font-size:7px;color:#c8cacc;transform-origin:0 0;transform:scaleX(0.722);">サウンドプール</div>
<svg style="left:1312.60px;top:94.40px" width="10.00" height="8.00" viewBox="0 0 10 8"><path d="M.6 2.2 L1.8 3.4 L3.8 .8 M.6 5.6 L1.8 6.8 L3.8 4.2" stroke="#e4e4e4" stroke-width=".9" fill="none"/><rect x="4.8" y="1.4" width="4.8" height="1.3" fill="#e4e4e4"/><rect x="4.8" y="4.8" width="4.8" height="1.3" fill="#e4e4e4"/></svg>
<svg style="left:1329.00px;top:94.20px" width="8.00" height="8.00" viewBox="0 0 8 8"><rect x=".4" y=".4" width="7.2" height="7.2" fill="#e4e4e4"/><path d="M1.6 2.6 H4.6 M1.6 4.4 H6.4 M1.6 6.2 H6.4" stroke="#33373e" stroke-width=".8"/></svg>
<div style="left:1344.1px;top:92.8px;width:191.9px;height:10.8px;background:#33373e;border:1px solid #24272c"></div>
<div class="t fit" style="left:1347.6px;top:94.8px;font-size:7px;color:#c8cacc;transform-origin:0 0;transform:scaleX(0.676);">インストゥルメント</div>
<svg style="left:1510.40px;top:94.40px" width="10.00" height="8.00" viewBox="0 0 10 8"><path d="M.6 2.2 L1.8 3.4 L3.8 .8 M.6 5.6 L1.8 6.8 L3.8 4.2" stroke="#e4e4e4" stroke-width=".9" fill="none"/><rect x="4.8" y="1.4" width="4.8" height="1.3" fill="#e4e4e4"/><rect x="4.8" y="4.8" width="4.8" height="1.3" fill="#e4e4e4"/></svg>
<div style="left:1152.6px;top:103.6px;width:190.4px;height:335px;background:#22262a;"></div>
<svg style="left:1160.80px;top:106.90px" width="10.00" height="11.00" viewBox="0 0 10 11"><path d="M1.2 3.6 H8.8 V10.4 H1.2 Z" fill="#f0f0f0"/><path d="M3.2 3.6 V2.6 A1.8 1.8 0 0 1 6.8 2.6 V3.6" stroke="#f0f0f0" stroke-width="1" fill="none"/><path d="M3 8.8 V5.6 L5 7.4 L7 5.6 V8.8" stroke="#22262a" stroke-width="1" fill="none"/></svg>
<div class="t fit sb" style="left:1179.6px;top:109.7px;font-size:7.6px;color:#f0f0f0;transform-origin:0 0;transform:scaleX(0.721);">クーポンを利用</div>
<svg style="left:1157.9px;top:123.4px;overflow:hidden" width="16" height="16" viewBox="0 0 16 16"><rect width="16" height="16" fill="#f3e9dc"/><rect x="8.6" y="1" width="5" height="9" fill="#3a3148"/><rect x="8" y="9" width="6.4" height="5" fill="#e0409a"/><path d="M2 3 Q5 7 3 12" stroke="#e8c060" stroke-width="1.4" fill="none"/></svg>
<div class="t fit sb" style="left:1179.6px;top:128.0px;font-size:7.6px;color:#8e9297;transform-origin:0 0;transform:scaleX(0.860);">80s - Dancing on my own</div>
<div style="left:1326px;top:127.93px;width:13.9px;height:6.8px;background:#e81123;"></div>
<div class="t fit sb" style="left:1327.4px;top:128.5px;font-size:10.8px;color:#fff;transform-origin:0 0;transform:scale(0.509,.5);">新規</div>
<svg style="left:1157.9px;top:141.8px;overflow:hidden" width="16" height="16" viewBox="0 0 16 16"><rect width="16" height="16" fill="#141018"/><path d="M0 0 H6 L0 5Z M16 0 H10 L16 5Z" fill="#f040b0"/><path d="M0 16 V10 L6 16Z M16 16 V10 L10 16Z" fill="#38d8c0"/><path d="M0 6 L3 9 L0 11Z M16 6 L13 9 L16 11Z" fill="#d8e040"/><path d="M5 13 L8 16 L11 13Z" fill="#f040b0"/><rect x="4" y="5" width="8" height="1.8" fill="#f0f0f0"/><rect x="4.6" y="7.6" width="6.8" height="1.6" fill="#d0d0d0"/></svg>
<div class="t fit sb" style="left:1179.6px;top:146.4px;font-size:7.6px;color:#8e9297;transform-origin:0 0;transform:scaleX(0.817);">80s - Flashback</div>
<div style="left:1326px;top:146.26px;width:13.9px;height:6.8px;background:#e81123;"></div>
<div class="t fit sb" style="left:1327.4px;top:146.9px;font-size:10.8px;color:#fff;transform-origin:0 0;transform:scale(0.509,.5);">新規</div>
<div style="left:1153px;top:159.3px;width:190px;height:17.3px;background:#373b43;border:1px solid #6a6f77"></div>
<svg style="left:1157.9px;top:160.1px;overflow:hidden" width="16" height="16" viewBox="0 0 16 16"><rect width="16" height="16" fill="#1a1214"/><path d="M8 3 L10.5 6 L8.6 9 L10.4 13" stroke="#f0e8e0" stroke-width="1.3" fill="none"/><circle cx="9.4" cy="2.6" r="1.1" fill="#f0e8e0"/><rect x="2" y="1" width="5" height="1.6" fill="#b03030"/><rect x="1" y="13" width="4" height="1.2" fill="#c8c8c8"/></svg>
<div class="t fit sb" style="left:1179.6px;top:164.7px;font-size:7.6px;color:#f4f4f4;transform-origin:0 0;transform:scaleX(0.843);">80s - Nostalgia Drive</div>
<svg style="left:1157.9px;top:178.4px;overflow:hidden" width="16" height="16" viewBox="0 0 16 16"><rect width="16" height="16" fill="#05070c"/><rect x="3" y="3.6" width="10" height="2.6" fill="#20c8a0"/><rect x="3" y="7.2" width="10" height="2.6" fill="#18a080"/><rect x="4" y="12.6" width="5" height="1" fill="#a8b0c0"/></svg>
<div class="t fit sb" style="left:1179.6px;top:183.0px;font-size:7.6px;color:#8e9297;transform-origin:0 0;transform:scaleX(0.829);">Chart Hits - Fade Out</div>
<div style="left:1326px;top:182.92px;width:13.9px;height:6.8px;background:#e81123;"></div>
<div class="t fit sb" style="left:1327.4px;top:183.5px;font-size:10.8px;color:#fff;transform-origin:0 0;transform:scale(0.509,.5);">新規</div>
<svg style="left:1157.9px;top:196.8px;overflow:hidden" width="16" height="16" viewBox="0 0 16 16"><rect width="16" height="16" fill="#5a40a8"/><rect y="9" width="16" height="7" fill="#a898e0"/><circle cx="8.4" cy="7.4" r="2.6" fill="#d8d0f8"/><rect x="5" y="10" width="7" height="5" fill="#e8e4ff"/><rect x="3" y="1.4" width="9" height="1.4" fill="#c8b8f8"/></svg>
<div class="t fit sb" style="left:1179.6px;top:201.3px;font-size:7.6px;color:#8e9297;transform-origin:0 0;transform:scaleX(0.840);">Drum &amp; Bass - Infinity - Part 2</div>
<svg style="left:1157.9px;top:215.1px;overflow:hidden" width="16" height="16" viewBox="0 0 16 16"><rect width="16" height="16" fill="#0a1a38"/><rect y="1" width="16" height="4" fill="#1878c8"/><rect x="2" y="5.4" width="12" height="2.4" fill="#30d8b0"/><rect x="1" y="8.6" width="14" height="2.4" fill="#28a8d8"/><rect y="12" width="16" height="4" fill="#101828"/></svg>
<div class="t fit sb" style="left:1179.6px;top:219.7px;font-size:7.6px;color:#8e9297;transform-origin:0 0;transform:scaleX(0.839);">EDM - Slap House</div>
<svg style="left:1157.9px;top:233.4px;overflow:hidden" width="16" height="16" viewBox="0 0 16 16"><rect width="16" height="16" fill="#e8e4e0"/><rect x="1" y="1" width="6" height="5" fill="#b82020"/><rect x="8" y="2" width="7" height="5" fill="#282428"/><rect x="2" y="7" width="5" height="5" fill="#403838"/><rect x="8" y="8" width="6" height="4" fill="#c83030"/><rect x="0" y="12.6" width="16" height="3.4" fill="#181818"/><rect x="2" y="13.4" width="10" height="1.6" fill="#f0f0f0"/></svg>
<div class="t fit sb" style="left:1179.6px;top:238.0px;font-size:7.6px;color:#8e9297;transform-origin:0 0;transform:scaleX(0.861);">HipHop - Dirty HipHop - Part 2</div>
<svg style="left:1157.9px;top:251.7px;overflow:hidden" width="16" height="16" viewBox="0 0 16 16"><rect width="16" height="16" fill="#f0a818"/><rect x="0" y="0" width="7" height="10" fill="#3888d8"/><rect x="0" y="11" width="16" height="5" fill="#e83098"/><circle cx="10.6" cy="5" r="2.4" fill="#f8d8a0"/><rect x="8.6" y="7" width="4.4" height="5" fill="#f0e050"/></svg>
<div class="t fit sb" style="left:1179.6px;top:256.3px;font-size:7.6px;color:#8e9297;transform-origin:0 0;transform:scaleX(0.846);">Reggaeton - Dame Candela - Part 2</div>
<svg style="left:1157.9px;top:270.1px;overflow:hidden" width="16" height="16" viewBox="0 0 16 16"><rect width="16" height="16" fill="#10161c"/><ellipse cx="8" cy="7" rx="7" ry="2" fill="#e8d8b8"/><ellipse cx="8" cy="7" rx="3" ry="1" fill="#fff"/><rect x="7" y="7" width="2" height="6" fill="#28323c"/><rect x="3" y="13" width="10" height="1.4" fill="#c8a878"/></svg>
<div class="t fit sb" style="left:1179.6px;top:274.7px;font-size:7.6px;color:#8e9297;transform-origin:0 0;transform:scaleX(0.833);">Score - Modern Score</div>
<div style="left:1344.1px;top:103.6px;width:191.9px;height:335px;background:#22262a;"></div>
<div style="left:1344.1px;top:103px;width:191.9px;height:19px;background:#1c1f22;"></div>
<div style="left:1344.1px;top:104px;width:191.9px;height:17px;background:#283f50;"></div>
<svg style="left:1350.27px;top:107.77px" width="9.46" height="9.46" viewBox="0 0 11 11"><path d="M1 9.6 C2 7 3.6 5.4 5.6 4.4 C6.2 2.8 7.4 1.6 9 1 L10 .4 L10.4 2 C10 4.6 8.4 6.6 6 7.4 C4.4 8 2.8 8.6 1 9.6Z" fill="#62b0e8"/><path d="M4 3.4 L6.8 5 M3 4.8 L5.6 6.2 M2 6.2 L4.4 7.4" stroke="#62b0e8" stroke-width=".6"/></svg>
<div class="t fit sb" style="left:1369.8px;top:109.2px;font-size:7.6px;color:#62b0e8;transform-origin:0 0;transform:scaleX(0.733);">Bass</div>
<div class="t fit sb" style="left:1520.9px;top:109.2px;font-size:7.6px;color:#62b0e8;transform-origin:0 0;transform:scaleX(0.945);">8</div>
<div style="left:1344.1px;top:121px;width:191.9px;height:20px;background:#1c1f22;"></div>
<div style="left:1344.1px;top:122px;width:191.9px;height:18px;background:#274a3e;"></div>
<svg style="left:1350.27px;top:126.27px" width="9.46" height="9.46" viewBox="0 0 11 11"><circle cx="5.2" cy="5.8" r="3.6" fill="none" stroke="#62dcae" stroke-width="1.3"/><rect x="2.4" y=".4" width="2.2" height="1.2" fill="#62dcae"/><rect x="5.8" y=".4" width="2.2" height="1.2" fill="#62dcae"/><rect x="0" y="2.2" width="2.6" height="2.6" fill="#62dcae"/><rect x="7.8" y="2.2" width="2.6" height="2" fill="#62dcae"/></svg>
<div class="t fit sb" style="left:1369.8px;top:127.2px;font-size:7.6px;color:#62dcae;transform-origin:0 0;transform:scaleX(0.844);">Drums</div>
<div class="t fit sb" style="left:1516.9px;top:127.2px;font-size:7.6px;color:#62dcae;transform-origin:0 0;transform:scaleX(0.946);">47</div>
<div style="left:1344.1px;top:140px;width:191.9px;height:19px;background:#1c1f22;"></div>
<div style="left:1344.1px;top:141px;width:191.9px;height:17px;background:#264a35;"></div>
<svg style="left:1350.27px;top:144.77px" width="9.46" height="9.46" viewBox="0 0 11 11"><path d="M5.4 .2 L6.6 3 L9.6 1.4 L8.4 4.2 L10.8 5.8 L8.2 6.6 L9 9.8 L6.4 8.2 L4.8 10.8 L4 8 L1 9 L2.6 6.4 L.2 4.6 L3 4 L2.4 1.2 L4.6 3Z" fill="#68d884"/><circle cx="5.5" cy="5.6" r="1.1" fill="#264a35"/></svg>
<div class="t fit sb" style="left:1369.8px;top:146.2px;font-size:7.6px;color:#68d884;transform-origin:0 0;transform:scaleX(0.823);">Fx</div>
<div class="t fit sb" style="left:1516.9px;top:146.2px;font-size:7.6px;color:#68d884;transform-origin:0 0;transform:scaleX(0.946);">13</div>
<div style="left:1344.1px;top:158px;width:191.9px;height:19px;background:#1c1f22;"></div>
<div style="left:1344.1px;top:159px;width:191.9px;height:17px;background:#2e4a2a;"></div>
<svg style="left:1350.27px;top:162.77px" width="9.46" height="9.46" viewBox="0 0 11 11"><path d="M9.8 .4 L10.6 1.2 L6.6 5.4 C7.6 7 6.8 9.4 4.6 10 C2.6 10.6 .6 9.4 .6 7.4 C.6 5.6 2.4 4.4 4 4.6 C4.4 4.2 5 4 5.6 4.2Z" fill="#8ee464"/><circle cx="3.6" cy="7.4" r=".9" fill="#2e4a2a"/></svg>
<div class="t fit sb" style="left:1369.8px;top:164.2px;font-size:7.6px;color:#8ee464;transform-origin:0 0;transform:scaleX(0.863);">Guitar</div>
<div class="t fit sb" style="left:1520.9px;top:164.2px;font-size:7.6px;color:#8ee464;transform-origin:0 0;transform:scaleX(0.945);">4</div>
<div style="left:1344.1px;top:176px;width:191.9px;height:20px;background:#1c1f22;"></div>
<div style="left:1344.1px;top:177px;width:191.9px;height:18px;background:#3f4526;"></div>
<svg style="left:1350.27px;top:181.27px" width="9.46" height="9.46" viewBox="0 0 11 11"><rect x="1.6" y="1.6" width="7.8" height="7.8" fill="none" stroke="#c4da5c" stroke-width="1"/><rect x="1.6" y="1.6" width="7.8" height="3" fill="#c4da5c" opacity=".85"/><rect x="2.6" y="2.6" width="5.8" height="1" fill="#3f4526" opacity=".6"/><path d="M3.5 5 V9 M5.5 5 V9 M7.5 5 V9" stroke="#c4da5c" stroke-width=".7"/></svg>
<div class="t fit sb" style="left:1369.8px;top:182.2px;font-size:7.6px;color:#c4da5c;transform-origin:0 0;transform:scaleX(0.733);">Keys</div>
<div class="t fit sb" style="left:1520.9px;top:182.2px;font-size:7.6px;color:#c4da5c;transform-origin:0 0;transform:scaleX(0.945);">6</div>
<div style="left:1344.1px;top:195px;width:191.9px;height:19px;background:#1c1f22;"></div>
<div style="left:1344.1px;top:196px;width:191.9px;height:17px;background:#4b3529;"></div>
<svg style="left:1350.27px;top:199.77px" width="9.46" height="9.46" viewBox="0 0 11 11"><rect x="1.6" y="1.6" width="7.8" height="7.8" fill="none" stroke="#eaa07c" stroke-width="1"/><rect x="1.6" y="1.6" width="7.8" height="3" fill="#eaa07c" opacity=".85"/><rect x="2.6" y="2.6" width="5.8" height="1" fill="#4b3529" opacity=".6"/><path d="M3.5 5 V9 M5.5 5 V9 M7.5 5 V9" stroke="#eaa07c" stroke-width=".7"/></svg>
<div class="t fit sb" style="left:1369.8px;top:201.2px;font-size:7.6px;color:#eaa07c;transform-origin:0 0;transform:scaleX(0.788);">Pads</div>
<div class="t fit sb" style="left:1520.9px;top:201.2px;font-size:7.6px;color:#eaa07c;transform-origin:0 0;transform:scaleX(0.945);">8</div>
<div style="left:1344.1px;top:213px;width:191.9px;height:19px;background:#1c1f22;"></div>
<div style="left:1344.1px;top:214px;width:191.9px;height:17px;background:#4b2838;"></div>
<svg style="left:1350.27px;top:217.77px" width="9.46" height="9.46" viewBox="0 0 11 11"><rect x="1.6" y="1.6" width="7.8" height="7.8" fill="none" stroke="#ea6c9c" stroke-width="1"/><rect x="1.6" y="1.6" width="7.8" height="3" fill="#ea6c9c" opacity=".85"/><rect x="2.6" y="2.6" width="5.8" height="1" fill="#4b2838" opacity=".6"/><path d="M3.5 5 V9 M5.5 5 V9 M7.5 5 V9" stroke="#ea6c9c" stroke-width=".7"/></svg>
<div class="t fit sb" style="left:1369.8px;top:219.2px;font-size:7.6px;color:#ea6c9c;transform-origin:0 0;transform:scaleX(0.823);">Sequences</div>
<div class="t fit sb" style="left:1520.9px;top:219.2px;font-size:7.6px;color:#ea6c9c;transform-origin:0 0;transform:scaleX(0.945);">5</div>
<div style="left:1344.1px;top:231px;width:191.9px;height:20px;background:#1c1f22;"></div>
<div style="left:1344.1px;top:232px;width:191.9px;height:18px;background:#46274f;"></div>
<svg style="left:1350.27px;top:236.27px" width="9.46" height="9.46" viewBox="0 0 11 11"><rect x="1.6" y="1.6" width="7.8" height="7.8" fill="none" stroke="#d66eea" stroke-width="1"/><rect x="1.6" y="1.6" width="7.8" height="3" fill="#d66eea" opacity=".85"/><rect x="2.6" y="2.6" width="5.8" height="1" fill="#46274f" opacity=".6"/><path d="M3.5 5 V9 M5.5 5 V9 M7.5 5 V9" stroke="#d66eea" stroke-width=".7"/></svg>
<div class="t fit sb" style="left:1369.8px;top:237.2px;font-size:7.6px;color:#d66eea;transform-origin:0 0;transform:scaleX(0.782);">Synth</div>
<div class="t fit sb" style="left:1516.9px;top:237.2px;font-size:7.6px;color:#d66eea;transform-origin:0 0;transform:scaleX(0.946);">10</div>
<div style="left:1152.6px;top:439px;width:383.4px;height:11.4px;background:#33373e;border:1px solid #24272c"></div>
<div class="t fit" style="left:1156.0px;top:441.4px;font-size:7px;color:#d0d2d4;transform-origin:0 0;transform:scaleX(0.797);">1 サウンドプール選択済み, 8 インストゥルメント選択済み, 101 ループ.</div>
<div style="left:1338px;top:452.2px;width:10px;height:1px;background-image:repeating-linear-gradient(to right,#6a6f77 0 1px,transparent 1px 2px)"></div>
<div class="t fit" style="left:1153.4px;top:455.2px;font-size:7px;color:#d0d2d4;transform-origin:0 0;transform:scaleX(0.648);">ピッチ</div>
<div style="left:1153.7px;top:478.6px;width:14px;height:14px;background:#22262a;border:1.3px solid #e8e8e8;border-radius:50%"></div>
<div class="t" style="left:1160.7px;top:485.8px;font-size:7.8px;color:#e8e8e8;transform:translate(-50%,-50%);font-weight:bold">1</div>
<div style="left:1153.7px;top:528.0999999999999px;width:14px;height:14px;background:#22262a;border:1.3px solid #e8e8e8;border-radius:50%"></div>
<div class="t" style="left:1160.7px;top:535.3px;font-size:7.8px;color:#e8e8e8;transform:translate(-50%,-50%);font-weight:bold">2</div>
<div style="left:1153.7px;top:578.0999999999999px;width:14px;height:14px;background:#22262a;border:1.3px solid #e8e8e8;border-radius:50%"></div>
<div class="t" style="left:1160.7px;top:585.3px;font-size:7.8px;color:#e8e8e8;transform:translate(-50%,-50%);font-weight:bold">3</div>
<div style="left:1153.7px;top:628.1999999999999px;width:14px;height:14px;background:#22262a;border:1.3px solid #e8e8e8;border-radius:50%"></div>
<div class="t" style="left:1160.7px;top:635.4px;font-size:7.8px;color:#e8e8e8;transform:translate(-50%,-50%);font-weight:bold">4</div>
<div style="left:1153.7px;top:677.8px;width:14px;height:14px;background:#22262a;border:1.3px solid #e8e8e8;border-radius:50%"></div>
<div class="t" style="left:1160.7px;top:685px;font-size:7.8px;color:#e8e8e8;transform:translate(-50%,-50%);font-weight:bold">5</div>
<div style="left:1153.7px;top:727.8px;width:14px;height:14px;background:#22262a;border:1.3px solid #4d86ee;border-radius:50%"></div>
<div class="t" style="left:1160.7px;top:735px;font-size:7.8px;color:#4d86ee;transform:translate(-50%,-50%);font-weight:bold">6</div>
<div style="left:1153.7px;top:777.8px;width:14px;height:14px;background:#22262a;border:1.3px solid #e8e8e8;border-radius:50%"></div>
<div class="t" style="left:1160.7px;top:785px;font-size:7.8px;color:#e8e8e8;transform:translate(-50%,-50%);font-weight:bold">7</div>
<div style="left:1169.5px;top:454.5px;width:366.8px;height:353.5px;background:#22262a;"></div>
<div style="left:1169.5px;top:454.6px;width:365.8px;height:11px;background:#363b42;"></div>
<div style="left:1198px;top:454.8px;width:0.8px;height:11px;background:#22262a;"></div>
<div style="left:1342.5px;top:454.8px;width:0.8px;height:11px;background:#22262a;"></div>
<div class="t fit" style="left:1202.0px;top:457px;font-size:6.8px;color:#d0d2d4;transform-origin:0 0;transform:scaleX(0.784);">ループ名</div>
<svg style="left:1346.00px;top:456.60px" width="8.00" height="8.00" viewBox="0 0 8 8"><path d="M4 6.6 L1.2 3.6 A1.5 1.5 0 0 1 4 2.2 A1.5 1.5 0 0 1 6.8 3.6 Z" fill="none" stroke="#e8e8e8" stroke-width=".9"/></svg>
<div style="left:1169.5px;top:465px;width:360.3px;height:20px;background:#1d2d3a;"></div>
<div style="left:1169.5px;top:466px;width:360.3px;height:18px;background:#263d4e;"></div>
<div style="left:1198px;top:466px;width:143.6px;height:18px;background:#4f7f9f;"></div>
<div class="t fit sb" style="left:1202.0px;top:472.2px;font-size:6.9px;color:#a4d4f8;transform-origin:0 0;transform:scaleX(0.921);">Don&#39;t Hate Bass A</div>
<svg style="left:1346.00px;top:471.00px" width="8.00" height="8.00" viewBox="0 0 8 8"><path d="M4 6.6 L1.2 3.6 A1.5 1.5 0 0 1 4 2.2 A1.5 1.5 0 0 1 6.8 3.6 Z" fill="none" stroke="#e8e8e8" stroke-width=".9"/></svg>
<div style="left:1169.5px;top:484px;width:360.3px;height:19px;background:#1d2d3a;"></div>
<div style="left:1169.5px;top:485px;width:360.3px;height:17px;background:#263d4e;"></div>
<div style="left:1198px;top:485px;width:143.6px;height:17px;background:#4f7f9f;"></div>
<div class="t fit sb" style="left:1202.0px;top:490.7px;font-size:6.9px;color:#a4d4f8;transform-origin:0 0;transform:scaleX(0.916);">Don&#39;t Hate Bass B</div>
<svg style="left:1346.00px;top:489.50px" width="8.00" height="8.00" viewBox="0 0 8 8"><path d="M4 6.6 L1.2 3.6 A1.5 1.5 0 0 1 4 2.2 A1.5 1.5 0 0 1 6.8 3.6 Z" fill="none" stroke="#e8e8e8" stroke-width=".9"/></svg>
<div style="left:1169.5px;top:502px;width:360.3px;height:20px;background:#1d2d3a;"></div>
<div style="left:1169.5px;top:503px;width:360.3px;height:18px;background:#263d4e;"></div>
<div style="left:1198px;top:503px;width:143.6px;height:18px;background:#4f7f9f;"></div>
<div class="t fit sb" style="left:1202.0px;top:509.2px;font-size:6.9px;color:#a4d4f8;transform-origin:0 0;transform:scaleX(0.893);">Saturday Bright Lights Ba...</div>
<svg style="left:1346.00px;top:508.00px" width="8.00" height="8.00" viewBox="0 0 8 8"><path d="M4 6.6 L1.2 3.6 A1.5 1.5 0 0 1 4 2.2 A1.5 1.5 0 0 1 6.8 3.6 Z" fill="none" stroke="#e8e8e8" stroke-width=".9"/></svg>
<div style="left:1169.5px;top:521px;width:360.3px;height:20px;background:#1d2d3a;"></div>
<div style="left:1169.5px;top:522px;width:360.3px;height:18px;background:#263d4e;"></div>
<div style="left:1198px;top:522px;width:143.6px;height:18px;background:#4f7f9f;"></div>
<div class="t fit sb" style="left:1202.0px;top:528.2px;font-size:6.9px;color:#a4d4f8;transform-origin:0 0;transform:scaleX(0.893);">Saturday Bright Lights Ba...</div>
<svg style="left:1346.00px;top:527.00px" width="8.00" height="8.00" viewBox="0 0 8 8"><path d="M4 6.6 L1.2 3.6 A1.5 1.5 0 0 1 4 2.2 A1.5 1.5 0 0 1 6.8 3.6 Z" fill="none" stroke="#e8e8e8" stroke-width=".9"/></svg>
<div style="left:1169.5px;top:540px;width:360.3px;height:19px;background:#1d2d3a;"></div>
<div style="left:1169.5px;top:541px;width:360.3px;height:17px;background:#263d4e;"></div>
<div style="left:1198px;top:541px;width:143.6px;height:17px;background:#4f7f9f;"></div>
<div class="t fit sb" style="left:1202.0px;top:546.7px;font-size:6.9px;color:#a4d4f8;transform-origin:0 0;transform:scaleX(0.895);">Sunday Bright Lights Bas...</div>
<svg style="left:1346.00px;top:545.50px" width="8.00" height="8.00" viewBox="0 0 8 8"><path d="M4 6.6 L1.2 3.6 A1.5 1.5 0 0 1 4 2.2 A1.5 1.5 0 0 1 6.8 3.6 Z" fill="none" stroke="#e8e8e8" stroke-width=".9"/></svg>
<div style="left:1169.5px;top:558px;width:360.3px;height:20px;background:#1d2d3a;"></div>
<div style="left:1169.5px;top:559px;width:360.3px;height:18px;background:#263d4e;"></div>
<div style="left:1198px;top:559px;width:143.6px;height:18px;background:#4f7f9f;"></div>
<div class="t fit sb" style="left:1202.0px;top:565.2px;font-size:6.9px;color:#a4d4f8;transform-origin:0 0;transform:scaleX(0.895);">Sunday Bright Lights Bas...</div>
<svg style="left:1346.00px;top:564.00px" width="8.00" height="8.00" viewBox="0 0 8 8"><path d="M4 6.6 L1.2 3.6 A1.5 1.5 0 0 1 4 2.2 A1.5 1.5 0 0 1 6.8 3.6 Z" fill="none" stroke="#e8e8e8" stroke-width=".9"/></svg>
<div style="left:1169.5px;top:577px;width:360.3px;height:19px;background:#1d2d3a;"></div>
<div style="left:1169.5px;top:578px;width:360.3px;height:17px;background:#263d4e;"></div>
<div style="left:1198px;top:578px;width:143.6px;height:17px;background:#4f7f9f;"></div>
<div class="t fit sb" style="left:1202.0px;top:583.7px;font-size:6.9px;color:#a4d4f8;transform-origin:0 0;transform:scaleX(0.889);">Xavier my Dear Bass A</div>
<svg style="left:1346.00px;top:582.50px" width="8.00" height="8.00" viewBox="0 0 8 8"><path d="M4 6.6 L1.2 3.6 A1.5 1.5 0 0 1 4 2.2 A1.5 1.5 0 0 1 6.8 3.6 Z" fill="none" stroke="#e8e8e8" stroke-width=".9"/></svg>
<div style="left:1169.5px;top:595px;width:360.3px;height:20px;background:#1d2d3a;"></div>
<div style="left:1169.5px;top:596px;width:360.3px;height:18px;background:#263d4e;"></div>
<div style="left:1198px;top:596px;width:143.6px;height:18px;background:#4f7f9f;"></div>
<div class="t fit sb" style="left:1202.0px;top:602.2px;font-size:6.9px;color:#a4d4f8;transform-origin:0 0;transform:scaleX(0.886);">Xavier my Dear Bass B</div>
<svg style="left:1346.00px;top:601.00px" width="8.00" height="8.00" viewBox="0 0 8 8"><path d="M4 6.6 L1.2 3.6 A1.5 1.5 0 0 1 4 2.2 A1.5 1.5 0 0 1 6.8 3.6 Z" fill="none" stroke="#e8e8e8" stroke-width=".9"/></svg>
<div style="left:1169.5px;top:614px;width:360.3px;height:20px;background:#1d382c;"></div>
<div style="left:1169.5px;top:615px;width:360.3px;height:18px;background:#274c3c;"></div>
<div style="left:1198px;top:615px;width:143.6px;height:18px;background:#3d8767;"></div>
<div class="t fit sb" style="left:1202.0px;top:621.2px;font-size:6.9px;color:#9cecc4;transform-origin:0 0;transform:scaleX(0.945);">Don&#39;t Hate Drums A</div>
<svg style="left:1346.00px;top:620.00px" width="8.00" height="8.00" viewBox="0 0 8 8"><path d="M4 6.6 L1.2 3.6 A1.5 1.5 0 0 1 4 2.2 A1.5 1.5 0 0 1 6.8 3.6 Z" fill="none" stroke="#e8e8e8" stroke-width=".9"/></svg>
<div style="left:1169.5px;top:633px;width:360.3px;height:19px;background:#1d382c;"></div>
<div style="left:1169.5px;top:634px;width:360.3px;height:17px;background:#274c3c;"></div>
<div style="left:1198px;top:634px;width:143.6px;height:17px;background:#3d8767;"></div>
<div class="t fit sb" style="left:1202.0px;top:639.7px;font-size:6.9px;color:#9cecc4;transform-origin:0 0;transform:scaleX(0.941);">Don&#39;t Hate Drums B</div>
<svg style="left:1346.00px;top:638.50px" width="8.00" height="8.00" viewBox="0 0 8 8"><path d="M4 6.6 L1.2 3.6 A1.5 1.5 0 0 1 4 2.2 A1.5 1.5 0 0 1 6.8 3.6 Z" fill="none" stroke="#e8e8e8" stroke-width=".9"/></svg>
<div style="left:1169.5px;top:651px;width:360.3px;height:20px;background:#1d382c;"></div>
<div style="left:1169.5px;top:652px;width:360.3px;height:18px;background:#274c3c;"></div>
<div style="left:1198px;top:652px;width:143.6px;height:18px;background:#3d8767;"></div>
<div class="t fit sb" style="left:1202.0px;top:658.2px;font-size:6.9px;color:#9cecc4;transform-origin:0 0;transform:scaleX(0.941);">Don&#39;t Hate Drums C</div>
<svg style="left:1346.00px;top:657.00px" width="8.00" height="8.00" viewBox="0 0 8 8"><path d="M4 6.6 L1.2 3.6 A1.5 1.5 0 0 1 4 2.2 A1.5 1.5 0 0 1 6.8 3.6 Z" fill="none" stroke="#e8e8e8" stroke-width=".9"/></svg>
<div style="left:1169.5px;top:670px;width:360.3px;height:20px;background:#1d382c;"></div>
<div style="left:1169.5px;top:671px;width:360.3px;height:18px;background:#274c3c;"></div>
<div style="left:1198px;top:671px;width:143.6px;height:18px;background:#3d8767;"></div>
<div class="t fit sb" style="left:1202.0px;top:677.2px;font-size:6.9px;color:#9cecc4;transform-origin:0 0;transform:scaleX(0.941);">Don&#39;t Hate Drums D</div>
<svg style="left:1346.00px;top:676.00px" width="8.00" height="8.00" viewBox="0 0 8 8"><path d="M4 6.6 L1.2 3.6 A1.5 1.5 0 0 1 4 2.2 A1.5 1.5 0 0 1 6.8 3.6 Z" fill="none" stroke="#e8e8e8" stroke-width=".9"/></svg>
<div style="left:1169.5px;top:689px;width:360.3px;height:19px;background:#1d382c;"></div>
<div style="left:1169.5px;top:690px;width:360.3px;height:17px;background:#274c3c;"></div>
<div style="left:1198px;top:690px;width:143.6px;height:17px;background:#3d8767;"></div>
<div class="t fit sb" style="left:1202.0px;top:695.7px;font-size:6.9px;color:#9cecc4;transform-origin:0 0;transform:scaleX(0.939);">Don&#39;t Hate Drums E</div>
<svg style="left:1346.00px;top:694.50px" width="8.00" height="8.00" viewBox="0 0 8 8"><path d="M4 6.6 L1.2 3.6 A1.5 1.5 0 0 1 4 2.2 A1.5 1.5 0 0 1 6.8 3.6 Z" fill="none" stroke="#e8e8e8" stroke-width=".9"/></svg>
<div style="left:1169.5px;top:707px;width:360.3px;height:20px;background:#1d382c;"></div>
<div style="left:1169.5px;top:708px;width:360.3px;height:18px;background:#274c3c;"></div>
<div style="left:1198px;top:708px;width:143.6px;height:18px;background:#3d8767;"></div>
<div class="t fit sb" style="left:1202.0px;top:714.2px;font-size:6.9px;color:#9cecc4;transform-origin:0 0;transform:scaleX(0.945);">Don&#39;t Hate Drums F</div>
<svg style="left:1346.00px;top:713.00px" width="8.00" height="8.00" viewBox="0 0 8 8"><path d="M4 6.6 L1.2 3.6 A1.5 1.5 0 0 1 4 2.2 A1.5 1.5 0 0 1 6.8 3.6 Z" fill="none" stroke="#e8e8e8" stroke-width=".9"/></svg>
<div style="left:1169.5px;top:726px;width:360.3px;height:19px;background:#1d382c;"></div>
<div style="left:1169.5px;top:727px;width:360.3px;height:17px;background:#274c3c;"></div>
<div style="left:1198px;top:727px;width:143.6px;height:17px;background:#3d8767;"></div>
<div class="t fit sb" style="left:1202.0px;top:732.7px;font-size:6.9px;color:#9cecc4;transform-origin:0 0;transform:scaleX(0.943);">Don&#39;t Hate Drums G</div>
<svg style="left:1346.00px;top:731.50px" width="8.00" height="8.00" viewBox="0 0 8 8"><path d="M4 6.6 L1.2 3.6 A1.5 1.5 0 0 1 4 2.2 A1.5 1.5 0 0 1 6.8 3.6 Z" fill="none" stroke="#e8e8e8" stroke-width=".9"/></svg>
<div style="left:1169.5px;top:744px;width:360.3px;height:20px;background:#1d382c;"></div>
<div style="left:1169.5px;top:745px;width:360.3px;height:18px;background:#274c3c;"></div>
<div style="left:1198px;top:745px;width:143.6px;height:18px;background:#3d8767;"></div>
<div class="t fit sb" style="left:1202.0px;top:751.2px;font-size:6.9px;color:#9cecc4;transform-origin:0 0;transform:scaleX(0.949);">Don&#39;t Hate Drums H</div>
<svg style="left:1346.00px;top:750.00px" width="8.00" height="8.00" viewBox="0 0 8 8"><path d="M4 6.6 L1.2 3.6 A1.5 1.5 0 0 1 4 2.2 A1.5 1.5 0 0 1 6.8 3.6 Z" fill="none" stroke="#e8e8e8" stroke-width=".9"/></svg>
<div style="left:1169.5px;top:763px;width:360.3px;height:20px;background:#1d382c;"></div>
<div style="left:1169.5px;top:764px;width:360.3px;height:18px;background:#274c3c;"></div>
<div style="left:1198px;top:764px;width:143.6px;height:18px;background:#3d8767;"></div>
<div class="t fit sb" style="left:1202.0px;top:770.2px;font-size:6.9px;color:#9cecc4;transform-origin:0 0;transform:scaleX(0.947);">Don&#39;t Hate Drums I</div>
<svg style="left:1346.00px;top:769.00px" width="8.00" height="8.00" viewBox="0 0 8 8"><path d="M4 6.6 L1.2 3.6 A1.5 1.5 0 0 1 4 2.2 A1.5 1.5 0 0 1 6.8 3.6 Z" fill="none" stroke="#e8e8e8" stroke-width=".9"/></svg>
<div style="left:1169.5px;top:782px;width:360.3px;height:19px;background:#1d382c;"></div>
<div style="left:1169.5px;top:783px;width:360.3px;height:17px;background:#274c3c;"></div>
<div style="left:1198px;top:783px;width:143.6px;height:17px;background:#3d8767;"></div>
<div class="t fit sb" style="left:1202.0px;top:788.7px;font-size:6.9px;color:#9cecc4;transform-origin:0 0;transform:scaleX(0.927);">Don&#39;t Hate Drums J</div>
<svg style="left:1346.00px;top:787.50px" width="8.00" height="8.00" viewBox="0 0 8 8"><path d="M4 6.6 L1.2 3.6 A1.5 1.5 0 0 1 4 2.2 A1.5 1.5 0 0 1 6.8 3.6 Z" fill="none" stroke="#e8e8e8" stroke-width=".9"/></svg>
<div style="left:1169.5px;top:800px;width:360.3px;height:3px;background:#22262a;"></div>
<svg style="left:0;top:0" width="1536" height="821" viewBox="0 0 1536 821"><path d="M1284.7 468.0 L1285.4 468.1 L1286.1 468.6 L1286.8 468.9 L1287.5 468.5 L1288.2 468.6 L1288.9 473.2 L1289.6 473.4 L1290.3 473.3 L1291.0 468.4 L1291.7 467.9 L1292.4 468.5 L1293.1 468.8 L1293.8 468.1 L1294.5 468.3 L1295.2 473.4 L1295.9 473.1 L1296.6 473.1 L1297.3 468.1 L1298.0 467.9 L1298.7 468.8 L1299.4 468.2 L1300.1 467.9 L1300.8 468.2 L1301.5 473.3 L1302.2 473.4 L1302.9 473.3 L1303.6 468.3 L1304.3 467.9 L1305.0 467.8 L1305.7 468.5 L1306.4 468.0 L1307.1 468.8 L1307.8 473.2 L1308.5 473.3 L1309.2 473.5 L1309.9 468.2 L1310.6 468.6 L1311.3 468.0 L1312.0 468.3 L1312.7 469.2 L1313.4 468.5 L1314.1 473.2 L1314.8 473.4 L1315.5 473.4 L1316.2 468.0 L1316.9 468.9 L1317.6 468.4 L1318.3 468.9 L1319.0 467.8 L1319.7 468.1 L1320.4 473.3 L1321.1 473.4 L1321.8 473.4 L1322.5 468.5 L1323.2 467.9 L1323.9 469.1 L1324.6 468.4 L1325.3 468.2 L1326.0 468.4 L1326.7 473.2 L1327.4 473.3 L1328.1 473.1 L1328.8 468.4 L1329.5 468.4 L1330.2 468.6 L1330.9 468.4 L1331.6 468.7 L1332.3 468.4 L1333.0 473.4 L1333.7 473.4 L1334.4 473.4 L1335.1 468.3 L1335.8 468.3 L1336.5 468.5 L1337.2 469.1 L1337.9 468.1 L1338.6 468.0 L1339.3 473.1 L1340.0 473.2 L1340.7 473.1 L1341.4 467.9 L1341.4 482.1 L1340.7 476.9 L1340.0 476.8 L1339.3 476.9 L1338.6 482.0 L1337.9 481.9 L1337.2 480.9 L1336.5 481.5 L1335.8 481.7 L1335.1 481.7 L1334.4 476.6 L1333.7 476.6 L1333.0 476.6 L1332.3 481.6 L1331.6 481.3 L1330.9 481.6 L1330.2 481.4 L1329.5 481.6 L1328.8 481.6 L1328.1 476.9 L1327.4 476.7 L1326.7 476.8 L1326.0 481.6 L1325.3 481.8 L1324.6 481.6 L1323.9 480.9 L1323.2 482.1 L1322.5 481.5 L1321.8 476.6 L1321.1 476.6 L1320.4 476.7 L1319.7 481.9 L1319.0 482.2 L1318.3 481.1 L1317.6 481.6 L1316.9 481.1 L1316.2 482.0 L1315.5 476.6 L1314.8 476.6 L1314.1 476.8 L1313.4 481.5 L1312.7 480.8 L1312.0 481.7 L1311.3 482.0 L1310.6 481.4 L1309.9 481.8 L1309.2 476.5 L1308.5 476.7 L1307.8 476.8 L1307.1 481.2 L1306.4 482.0 L1305.7 481.5 L1305.0 482.2 L1304.3 482.1 L1303.6 481.7 L1302.9 476.7 L1302.2 476.6 L1301.5 476.7 L1300.8 481.8 L1300.1 482.1 L1299.4 481.8 L1298.7 481.2 L1298.0 482.1 L1297.3 481.9 L1296.6 476.9 L1295.9 476.9 L1295.2 476.6 L1294.5 481.7 L1293.8 481.9 L1293.1 481.2 L1292.4 481.5 L1291.7 482.1 L1291.0 481.6 L1290.3 476.7 L1289.6 476.6 L1288.9 476.8 L1288.2 481.4 L1287.5 481.5 L1286.8 481.1 L1286.1 481.4 L1285.4 481.9 L1284.7 482.0Z" fill="#80d2ff"/><path d="M1284.7 487.5 L1285.4 486.5 L1286.1 486.6 L1286.8 487.4 L1287.5 487.0 L1288.2 487.1 L1288.9 491.7 L1289.6 491.7 L1290.3 491.9 L1291.0 487.7 L1291.7 486.5 L1292.4 487.1 L1293.1 486.6 L1293.8 487.7 L1294.5 487.1 L1295.2 491.7 L1295.9 491.9 L1296.6 491.6 L1297.3 486.4 L1298.0 487.7 L1298.7 487.7 L1299.4 486.9 L1300.1 486.4 L1300.8 487.2 L1301.5 491.9 L1302.2 491.8 L1302.9 492.0 L1303.6 487.4 L1304.3 487.1 L1305.0 487.0 L1305.7 487.4 L1306.4 487.4 L1307.1 487.4 L1307.8 491.8 L1308.5 491.9 L1309.2 492.0 L1309.9 486.5 L1310.6 486.9 L1311.3 486.8 L1312.0 487.5 L1312.7 486.3 L1313.4 486.5 L1314.1 491.9 L1314.8 491.9 L1315.5 491.7 L1316.2 486.7 L1316.9 486.4 L1317.6 487.1 L1318.3 486.5 L1319.0 486.8 L1319.7 487.3 L1320.4 491.8 L1321.1 491.6 L1321.8 491.7 L1322.5 487.0 L1323.2 486.9 L1323.9 487.7 L1324.6 487.4 L1325.3 486.6 L1326.0 487.1 L1326.7 491.9 L1327.4 491.8 L1328.1 491.7 L1328.8 486.8 L1329.5 487.2 L1330.2 487.1 L1330.9 487.0 L1331.6 486.6 L1332.3 487.0 L1333.0 491.8 L1333.7 491.8 L1334.4 492.0 L1335.1 487.7 L1335.8 486.7 L1336.5 486.3 L1337.2 486.9 L1337.9 487.2 L1338.6 487.5 L1339.3 491.8 L1340.0 491.6 L1340.7 491.7 L1341.4 486.9 L1341.4 500.1 L1340.7 495.3 L1340.0 495.4 L1339.3 495.2 L1338.6 499.5 L1337.9 499.8 L1337.2 500.1 L1336.5 500.7 L1335.8 500.3 L1335.1 499.3 L1334.4 495.0 L1333.7 495.2 L1333.0 495.2 L1332.3 500.0 L1331.6 500.4 L1330.9 500.0 L1330.2 499.9 L1329.5 499.8 L1328.8 500.2 L1328.1 495.3 L1327.4 495.2 L1326.7 495.1 L1326.0 499.9 L1325.3 500.4 L1324.6 499.6 L1323.9 499.3 L1323.2 500.1 L1322.5 500.0 L1321.8 495.3 L1321.1 495.4 L1320.4 495.2 L1319.7 499.7 L1319.0 500.2 L1318.3 500.5 L1317.6 499.9 L1316.9 500.6 L1316.2 500.3 L1315.5 495.3 L1314.8 495.1 L1314.1 495.1 L1313.4 500.5 L1312.7 500.7 L1312.0 499.5 L1311.3 500.2 L1310.6 500.1 L1309.9 500.5 L1309.2 495.0 L1308.5 495.1 L1307.8 495.2 L1307.1 499.6 L1306.4 499.6 L1305.7 499.6 L1305.0 500.0 L1304.3 499.9 L1303.6 499.6 L1302.9 495.0 L1302.2 495.2 L1301.5 495.1 L1300.8 499.8 L1300.1 500.6 L1299.4 500.1 L1298.7 499.3 L1298.0 499.3 L1297.3 500.6 L1296.6 495.4 L1295.9 495.1 L1295.2 495.3 L1294.5 499.9 L1293.8 499.3 L1293.1 500.4 L1292.4 499.9 L1291.7 500.5 L1291.0 499.3 L1290.3 495.1 L1289.6 495.3 L1288.9 495.3 L1288.2 499.9 L1287.5 500.0 L1286.8 499.6 L1286.1 500.4 L1285.4 500.5 L1284.7 499.5Z" fill="#80d2ff"/><path d="M1284.7 509.7 L1285.4 509.7 L1286.1 509.7 L1286.8 504.5 L1287.5 504.5 L1288.2 505.7 L1288.9 505.7 L1289.6 504.6 L1290.3 504.8 L1291.0 504.9 L1291.7 505.3 L1292.4 504.9 L1293.1 504.9 L1293.8 505.0 L1294.5 505.6 L1295.2 505.2 L1295.9 505.2 L1296.6 504.8 L1297.3 504.4 L1298.0 504.5 L1298.7 505.0 L1299.4 505.2 L1300.1 505.4 L1300.8 505.7 L1301.5 505.7 L1302.2 505.1 L1302.9 505.3 L1303.6 505.2 L1304.3 504.5 L1305.0 505.0 L1305.7 505.0 L1306.4 505.4 L1307.1 505.7 L1307.8 505.3 L1308.5 505.6 L1309.2 505.1 L1309.9 504.4 L1310.6 504.8 L1311.3 505.5 L1312.0 504.5 L1312.7 504.7 L1313.4 504.8 L1314.1 504.5 L1314.8 504.7 L1315.5 504.7 L1316.2 505.3 L1316.9 504.4 L1317.6 504.5 L1318.3 505.5 L1319.0 504.7 L1319.7 504.8 L1320.4 505.1 L1321.1 505.0 L1321.8 505.1 L1322.5 504.5 L1323.2 505.1 L1323.9 504.6 L1324.6 505.3 L1325.3 504.6 L1326.0 504.5 L1326.7 505.1 L1327.4 505.0 L1328.1 504.5 L1328.8 504.8 L1329.5 505.1 L1330.2 505.5 L1330.9 505.3 L1331.6 504.8 L1332.3 505.5 L1333.0 504.5 L1333.7 505.4 L1334.4 504.5 L1335.1 505.3 L1335.8 504.5 L1336.5 504.8 L1337.2 505.1 L1337.9 505.1 L1338.6 504.9 L1339.3 505.0 L1340.0 505.3 L1340.7 505.5 L1341.4 505.1 L1341.4 518.9 L1340.7 518.5 L1340.0 518.7 L1339.3 519.0 L1338.6 519.1 L1337.9 518.9 L1337.2 518.9 L1336.5 519.2 L1335.8 519.5 L1335.1 518.7 L1334.4 519.5 L1333.7 518.6 L1333.0 519.5 L1332.3 518.5 L1331.6 519.2 L1330.9 518.7 L1330.2 518.5 L1329.5 518.9 L1328.8 519.2 L1328.1 519.5 L1327.4 519.0 L1326.7 518.9 L1326.0 519.5 L1325.3 519.4 L1324.6 518.7 L1323.9 519.4 L1323.2 518.9 L1322.5 519.5 L1321.8 518.9 L1321.1 519.0 L1320.4 518.9 L1319.7 519.2 L1319.0 519.3 L1318.3 518.5 L1317.6 519.5 L1316.9 519.6 L1316.2 518.7 L1315.5 519.3 L1314.8 519.3 L1314.1 519.5 L1313.4 519.2 L1312.7 519.3 L1312.0 519.5 L1311.3 518.5 L1310.6 519.2 L1309.9 519.6 L1309.2 518.9 L1308.5 518.4 L1307.8 518.7 L1307.1 518.3 L1306.4 518.6 L1305.7 519.0 L1305.0 519.0 L1304.3 519.5 L1303.6 518.8 L1302.9 518.7 L1302.2 518.9 L1301.5 518.3 L1300.8 518.3 L1300.1 518.6 L1299.4 518.8 L1298.7 519.0 L1298.0 519.5 L1297.3 519.6 L1296.6 519.2 L1295.9 518.8 L1295.2 518.8 L1294.5 518.4 L1293.8 519.0 L1293.1 519.1 L1292.4 519.1 L1291.7 518.7 L1291.0 519.1 L1290.3 519.2 L1289.6 519.4 L1288.9 518.3 L1288.2 518.3 L1287.5 519.5 L1286.8 519.5 L1286.1 514.3 L1285.4 514.3 L1284.7 514.3Z" fill="#80d2ff"/><path d="M1284.7 528.7 L1285.4 528.7 L1286.1 528.7 L1286.8 524.4 L1287.5 524.0 L1288.2 524.3 L1288.9 523.9 L1289.6 523.9 L1290.3 524.7 L1291.0 524.7 L1291.7 523.6 L1292.4 524.4 L1293.1 524.4 L1293.8 523.4 L1294.5 524.1 L1295.2 523.6 L1295.9 524.1 L1296.6 523.9 L1297.3 524.6 L1298.0 523.9 L1298.7 523.6 L1299.4 524.1 L1300.1 523.8 L1300.8 523.8 L1301.5 524.7 L1302.2 523.7 L1302.9 524.0 L1303.6 524.4 L1304.3 524.7 L1305.0 523.6 L1305.7 524.1 L1306.4 523.8 L1307.1 523.6 L1307.8 523.8 L1308.5 523.5 L1309.2 524.2 L1309.9 523.7 L1310.6 524.2 L1311.3 523.5 L1312.0 523.6 L1312.7 524.6 L1313.4 524.6 L1314.1 524.5 L1314.8 523.4 L1315.5 524.2 L1316.2 523.9 L1316.9 524.4 L1317.6 524.1 L1318.3 524.2 L1319.0 524.3 L1319.7 524.0 L1320.4 524.0 L1321.1 523.5 L1321.8 523.8 L1322.5 523.5 L1323.2 523.6 L1323.9 523.4 L1324.6 523.8 L1325.3 524.5 L1326.0 523.6 L1326.7 523.4 L1327.4 523.5 L1328.1 524.0 L1328.8 523.8 L1329.5 524.5 L1330.2 523.6 L1330.9 524.0 L1331.6 524.4 L1332.3 524.7 L1333.0 523.6 L1333.7 523.4 L1334.4 524.6 L1335.1 523.7 L1335.8 524.2 L1336.5 524.6 L1337.2 524.4 L1337.9 523.7 L1338.6 523.6 L1339.3 524.7 L1340.0 523.9 L1340.7 524.7 L1341.4 523.8 L1341.4 538.2 L1340.7 537.3 L1340.0 538.1 L1339.3 537.3 L1338.6 538.4 L1337.9 538.3 L1337.2 537.6 L1336.5 537.4 L1335.8 537.8 L1335.1 538.3 L1334.4 537.4 L1333.7 538.6 L1333.0 538.4 L1332.3 537.3 L1331.6 537.6 L1330.9 538.0 L1330.2 538.4 L1329.5 537.5 L1328.8 538.2 L1328.1 538.0 L1327.4 538.5 L1326.7 538.6 L1326.0 538.4 L1325.3 537.5 L1324.6 538.2 L1323.9 538.6 L1323.2 538.4 L1322.5 538.5 L1321.8 538.2 L1321.1 538.5 L1320.4 538.0 L1319.7 538.0 L1319.0 537.7 L1318.3 537.8 L1317.6 537.9 L1316.9 537.6 L1316.2 538.1 L1315.5 537.8 L1314.8 538.6 L1314.1 537.5 L1313.4 537.4 L1312.7 537.4 L1312.0 538.4 L1311.3 538.5 L1310.6 537.8 L1309.9 538.3 L1309.2 537.8 L1308.5 538.5 L1307.8 538.2 L1307.1 538.4 L1306.4 538.2 L1305.7 537.9 L1305.0 538.4 L1304.3 537.3 L1303.6 537.6 L1302.9 538.0 L1302.2 538.3 L1301.5 537.3 L1300.8 538.2 L1300.1 538.2 L1299.4 537.9 L1298.7 538.4 L1298.0 538.1 L1297.3 537.4 L1296.6 538.1 L1295.9 537.9 L1295.2 538.4 L1294.5 537.9 L1293.8 538.6 L1293.1 537.6 L1292.4 537.6 L1291.7 538.4 L1291.0 537.3 L1290.3 537.3 L1289.6 538.1 L1288.9 538.1 L1288.2 537.7 L1287.5 538.0 L1286.8 537.6 L1286.1 533.3 L1285.4 533.3 L1284.7 533.3Z" fill="#80d2ff"/><path d="M1284.7 542.8 L1285.4 542.9 L1286.1 542.6 L1286.8 542.9 L1287.5 543.0 L1288.2 542.6 L1288.9 542.0 L1289.6 542.1 L1290.3 542.2 L1291.0 542.8 L1291.7 542.4 L1292.4 542.7 L1293.1 542.8 L1293.8 542.9 L1294.5 542.8 L1295.2 542.0 L1295.9 542.1 L1296.6 542.1 L1297.3 542.1 L1298.0 542.8 L1298.7 542.7 L1299.4 542.3 L1300.1 542.2 L1300.8 542.1 L1301.5 542.0 L1302.2 542.9 L1302.9 542.3 L1303.6 542.3 L1304.3 542.5 L1305.0 542.8 L1305.7 542.5 L1306.4 542.9 L1307.1 542.0 L1307.8 542.1 L1308.5 542.4 L1309.2 542.7 L1309.9 542.0 L1310.6 544.5 L1311.3 544.3 L1312.0 544.3 L1312.7 544.6 L1313.4 544.6 L1314.1 544.5 L1314.8 544.6 L1315.5 544.8 L1316.2 544.7 L1316.9 544.3 L1317.6 544.9 L1318.3 544.9 L1319.0 544.5 L1319.7 544.8 L1320.4 542.4 L1321.1 542.5 L1321.8 542.6 L1322.5 541.9 L1323.2 542.8 L1323.9 542.6 L1324.6 542.8 L1325.3 542.3 L1326.0 542.7 L1326.7 542.6 L1327.4 542.2 L1328.1 542.7 L1328.8 542.4 L1329.5 542.0 L1330.2 542.9 L1330.9 543.0 L1331.6 542.8 L1332.3 542.2 L1333.0 542.3 L1333.7 542.8 L1334.4 542.7 L1335.1 542.8 L1335.8 542.5 L1336.5 543.0 L1337.2 542.2 L1337.9 542.0 L1338.6 542.0 L1339.3 542.2 L1340.0 541.9 L1340.7 543.0 L1341.4 542.7 L1341.4 556.3 L1340.7 556.0 L1340.0 557.1 L1339.3 556.8 L1338.6 557.0 L1337.9 557.0 L1337.2 556.8 L1336.5 556.0 L1335.8 556.5 L1335.1 556.2 L1334.4 556.3 L1333.7 556.2 L1333.0 556.7 L1332.3 556.8 L1331.6 556.2 L1330.9 556.0 L1330.2 556.1 L1329.5 557.0 L1328.8 556.6 L1328.1 556.3 L1327.4 556.8 L1326.7 556.4 L1326.0 556.3 L1325.3 556.7 L1324.6 556.2 L1323.9 556.4 L1323.2 556.2 L1322.5 557.1 L1321.8 556.4 L1321.1 556.5 L1320.4 556.6 L1319.7 554.2 L1319.0 554.5 L1318.3 554.1 L1317.6 554.1 L1316.9 554.7 L1316.2 554.3 L1315.5 554.2 L1314.8 554.4 L1314.1 554.5 L1313.4 554.4 L1312.7 554.4 L1312.0 554.7 L1311.3 554.7 L1310.6 554.5 L1309.9 557.0 L1309.2 556.3 L1308.5 556.6 L1307.8 556.9 L1307.1 557.0 L1306.4 556.1 L1305.7 556.5 L1305.0 556.2 L1304.3 556.5 L1303.6 556.7 L1302.9 556.7 L1302.2 556.1 L1301.5 557.0 L1300.8 556.9 L1300.1 556.8 L1299.4 556.7 L1298.7 556.3 L1298.0 556.2 L1297.3 556.9 L1296.6 556.9 L1295.9 556.9 L1295.2 557.0 L1294.5 556.2 L1293.8 556.1 L1293.1 556.2 L1292.4 556.3 L1291.7 556.6 L1291.0 556.2 L1290.3 556.8 L1289.6 556.9 L1288.9 557.0 L1288.2 556.4 L1287.5 556.0 L1286.8 556.1 L1286.1 556.4 L1285.4 556.1 L1284.7 556.2Z" fill="#80d2ff"/><path d="M1284.7 560.8 L1285.4 560.7 L1286.1 560.6 L1286.8 560.5 L1287.5 560.7 L1288.2 560.5 L1288.9 561.5 L1289.6 561.0 L1290.3 560.5 L1291.0 560.8 L1291.7 560.5 L1292.4 561.4 L1293.1 561.0 L1293.8 561.3 L1294.5 560.9 L1295.2 560.9 L1295.9 561.5 L1296.6 561.3 L1297.3 561.2 L1298.0 560.5 L1298.7 560.7 L1299.4 561.4 L1300.1 560.6 L1300.8 561.4 L1301.5 560.8 L1302.2 561.4 L1302.9 561.5 L1303.6 560.5 L1304.3 561.3 L1305.0 561.3 L1305.7 560.4 L1306.4 560.5 L1307.1 561.2 L1307.8 560.4 L1308.5 560.9 L1309.2 560.8 L1309.9 561.3 L1310.6 562.7 L1311.3 562.9 L1312.0 562.7 L1312.7 562.8 L1313.4 563.2 L1314.1 563.2 L1314.8 563.3 L1315.5 563.4 L1316.2 563.4 L1316.9 563.2 L1317.6 563.0 L1318.3 563.5 L1319.0 562.9 L1319.7 563.2 L1320.4 561.2 L1321.1 560.6 L1321.8 561.0 L1322.5 561.2 L1323.2 561.0 L1323.9 560.7 L1324.6 561.5 L1325.3 560.4 L1326.0 561.5 L1326.7 560.7 L1327.4 560.6 L1328.1 561.5 L1328.8 560.6 L1329.5 561.1 L1330.2 560.9 L1330.9 561.5 L1331.6 561.5 L1332.3 561.3 L1333.0 560.5 L1333.7 561.3 L1334.4 560.7 L1335.1 560.5 L1335.8 560.5 L1336.5 561.1 L1337.2 561.1 L1337.9 560.9 L1338.6 560.7 L1339.3 561.4 L1340.0 560.7 L1340.7 560.6 L1341.4 560.6 L1341.4 575.4 L1340.7 575.4 L1340.0 575.3 L1339.3 574.6 L1338.6 575.3 L1337.9 575.1 L1337.2 574.9 L1336.5 574.9 L1335.8 575.5 L1335.1 575.5 L1334.4 575.3 L1333.7 574.7 L1333.0 575.5 L1332.3 574.7 L1331.6 574.5 L1330.9 574.5 L1330.2 575.1 L1329.5 574.9 L1328.8 575.4 L1328.1 574.5 L1327.4 575.4 L1326.7 575.3 L1326.0 574.5 L1325.3 575.6 L1324.6 574.5 L1323.9 575.3 L1323.2 575.0 L1322.5 574.8 L1321.8 575.0 L1321.1 575.4 L1320.4 574.8 L1319.7 572.8 L1319.0 573.1 L1318.3 572.5 L1317.6 573.0 L1316.9 572.8 L1316.2 572.6 L1315.5 572.6 L1314.8 572.7 L1314.1 572.8 L1313.4 572.8 L1312.7 573.2 L1312.0 573.3 L1311.3 573.1 L1310.6 573.3 L1309.9 574.7 L1309.2 575.2 L1308.5 575.1 L1307.8 575.6 L1307.1 574.8 L1306.4 575.5 L1305.7 575.6 L1305.0 574.7 L1304.3 574.7 L1303.6 575.5 L1302.9 574.5 L1302.2 574.6 L1301.5 575.2 L1300.8 574.6 L1300.1 575.4 L1299.4 574.6 L1298.7 575.3 L1298.0 575.5 L1297.3 574.8 L1296.6 574.7 L1295.9 574.5 L1295.2 575.1 L1294.5 575.1 L1293.8 574.7 L1293.1 575.0 L1292.4 574.6 L1291.7 575.5 L1291.0 575.2 L1290.3 575.5 L1289.6 575.0 L1288.9 574.5 L1288.2 575.5 L1287.5 575.3 L1286.8 575.5 L1286.1 575.4 L1285.4 575.3 L1284.7 575.2Z" fill="#80d2ff"/><path d="M1284.7 584.2 L1285.4 584.2 L1286.1 584.2 L1286.8 579.2 L1287.5 579.1 L1288.2 579.6 L1288.9 579.9 L1289.6 580.3 L1290.3 579.4 L1291.0 579.6 L1291.7 579.2 L1292.4 579.8 L1293.1 579.2 L1293.8 579.9 L1294.5 579.2 L1295.2 579.3 L1295.9 579.7 L1296.6 579.5 L1297.3 579.3 L1298.0 580.0 L1298.7 579.5 L1299.4 579.2 L1300.1 579.9 L1300.8 579.2 L1301.5 579.3 L1302.2 579.1 L1302.9 579.8 L1303.6 580.1 L1304.3 579.2 L1305.0 579.2 L1305.7 579.7 L1306.4 580.1 L1307.1 580.0 L1307.8 579.4 L1308.5 579.9 L1309.2 579.0 L1309.9 579.5 L1310.6 580.0 L1311.3 579.4 L1312.0 579.8 L1312.7 579.0 L1313.4 579.0 L1314.1 579.6 L1314.8 579.4 L1315.5 579.3 L1316.2 579.2 L1316.9 578.9 L1317.6 580.2 L1318.3 579.8 L1319.0 579.4 L1319.7 579.9 L1320.4 579.5 L1321.1 580.1 L1321.8 579.1 L1322.5 579.5 L1323.2 580.1 L1323.9 579.4 L1324.6 579.8 L1325.3 580.0 L1326.0 579.6 L1326.7 580.1 L1327.4 580.0 L1328.1 579.1 L1328.8 579.3 L1329.5 580.3 L1330.2 579.2 L1330.9 580.2 L1331.6 579.8 L1332.3 579.0 L1333.0 579.4 L1333.7 579.8 L1334.4 579.8 L1335.1 579.7 L1335.8 580.1 L1336.5 578.9 L1337.2 580.2 L1337.9 579.7 L1338.6 579.2 L1339.3 579.7 L1340.0 578.9 L1340.7 579.9 L1341.4 578.9 L1341.4 594.1 L1340.7 593.1 L1340.0 594.1 L1339.3 593.3 L1338.6 593.8 L1337.9 593.3 L1337.2 592.8 L1336.5 594.1 L1335.8 592.9 L1335.1 593.3 L1334.4 593.2 L1333.7 593.2 L1333.0 593.6 L1332.3 594.0 L1331.6 593.2 L1330.9 592.8 L1330.2 593.8 L1329.5 592.7 L1328.8 593.7 L1328.1 593.9 L1327.4 593.0 L1326.7 592.9 L1326.0 593.4 L1325.3 593.0 L1324.6 593.2 L1323.9 593.6 L1323.2 592.9 L1322.5 593.5 L1321.8 593.9 L1321.1 592.9 L1320.4 593.5 L1319.7 593.1 L1319.0 593.6 L1318.3 593.2 L1317.6 592.8 L1316.9 594.1 L1316.2 593.8 L1315.5 593.7 L1314.8 593.6 L1314.1 593.4 L1313.4 594.0 L1312.7 594.0 L1312.0 593.2 L1311.3 593.6 L1310.6 593.0 L1309.9 593.5 L1309.2 594.0 L1308.5 593.1 L1307.8 593.6 L1307.1 593.0 L1306.4 592.9 L1305.7 593.3 L1305.0 593.8 L1304.3 593.8 L1303.6 592.9 L1302.9 593.2 L1302.2 593.9 L1301.5 593.7 L1300.8 593.8 L1300.1 593.1 L1299.4 593.8 L1298.7 593.5 L1298.0 593.0 L1297.3 593.7 L1296.6 593.5 L1295.9 593.3 L1295.2 593.7 L1294.5 593.8 L1293.8 593.1 L1293.1 593.8 L1292.4 593.2 L1291.7 593.8 L1291.0 593.4 L1290.3 593.6 L1289.6 592.7 L1288.9 593.1 L1288.2 593.4 L1287.5 593.9 L1286.8 593.8 L1286.1 588.8 L1285.4 588.8 L1284.7 588.8Z" fill="#80d2ff"/><path d="M1284.7 602.7 L1285.4 602.7 L1286.1 602.7 L1286.8 598.3 L1287.5 598.6 L1288.2 597.9 L1288.9 598.7 L1289.6 598.0 L1290.3 598.3 L1291.0 598.7 L1291.7 598.1 L1292.4 598.7 L1293.1 598.2 L1293.8 598.7 L1294.5 598.6 L1295.2 598.2 L1295.9 597.6 L1296.6 598.6 L1297.3 598.5 L1298.0 597.9 L1298.7 597.5 L1299.4 598.0 L1300.1 598.2 L1300.8 597.4 L1301.5 598.7 L1302.2 597.6 L1302.9 598.4 L1303.6 598.6 L1304.3 598.6 L1305.0 598.3 L1305.7 597.7 L1306.4 598.5 L1307.1 598.0 L1307.8 597.9 L1308.5 598.3 L1309.2 598.0 L1309.9 598.7 L1310.6 598.7 L1311.3 598.5 L1312.0 597.8 L1312.7 598.2 L1313.4 598.3 L1314.1 598.0 L1314.8 598.1 L1315.5 598.4 L1316.2 597.7 L1316.9 597.8 L1317.6 598.4 L1318.3 598.0 L1319.0 598.0 L1319.7 597.6 L1320.4 597.8 L1321.1 598.4 L1321.8 597.4 L1322.5 598.6 L1323.2 598.2 L1323.9 597.7 L1324.6 598.6 L1325.3 598.1 L1326.0 598.7 L1326.7 597.9 L1327.4 597.7 L1328.1 598.0 L1328.8 597.6 L1329.5 598.3 L1330.2 597.8 L1330.9 598.0 L1331.6 598.0 L1332.3 598.1 L1333.0 597.6 L1333.7 597.5 L1334.4 598.1 L1335.1 597.9 L1335.8 598.7 L1336.5 597.8 L1337.2 597.9 L1337.9 597.4 L1338.6 597.6 L1339.3 598.4 L1340.0 598.2 L1340.7 597.9 L1341.4 598.7 L1341.4 611.3 L1340.7 612.1 L1340.0 611.8 L1339.3 611.6 L1338.6 612.4 L1337.9 612.6 L1337.2 612.1 L1336.5 612.2 L1335.8 611.3 L1335.1 612.1 L1334.4 611.9 L1333.7 612.5 L1333.0 612.4 L1332.3 611.9 L1331.6 612.0 L1330.9 612.0 L1330.2 612.2 L1329.5 611.7 L1328.8 612.4 L1328.1 612.0 L1327.4 612.3 L1326.7 612.1 L1326.0 611.3 L1325.3 611.9 L1324.6 611.4 L1323.9 612.3 L1323.2 611.8 L1322.5 611.4 L1321.8 612.6 L1321.1 611.6 L1320.4 612.2 L1319.7 612.4 L1319.0 612.0 L1318.3 612.0 L1317.6 611.6 L1316.9 612.2 L1316.2 612.3 L1315.5 611.6 L1314.8 611.9 L1314.1 612.0 L1313.4 611.7 L1312.7 611.8 L1312.0 612.2 L1311.3 611.5 L1310.6 611.3 L1309.9 611.3 L1309.2 612.0 L1308.5 611.7 L1307.8 612.1 L1307.1 612.0 L1306.4 611.5 L1305.7 612.3 L1305.0 611.7 L1304.3 611.4 L1303.6 611.4 L1302.9 611.6 L1302.2 612.4 L1301.5 611.3 L1300.8 612.6 L1300.1 611.8 L1299.4 612.0 L1298.7 612.5 L1298.0 612.1 L1297.3 611.5 L1296.6 611.4 L1295.9 612.4 L1295.2 611.8 L1294.5 611.4 L1293.8 611.3 L1293.1 611.8 L1292.4 611.3 L1291.7 611.9 L1291.0 611.3 L1290.3 611.7 L1289.6 612.0 L1288.9 611.3 L1288.2 612.1 L1287.5 611.4 L1286.8 611.7 L1286.1 607.3 L1285.4 607.3 L1284.7 607.3Z" fill="#80d2ff"/><path d="M1284.7 618.5 L1285.4 619.0 L1286.1 619.3 L1286.8 617.5 L1287.5 618.7 L1288.2 619.4 L1288.9 620.2 L1289.6 620.6 L1290.3 621.0 L1291.0 620.7 L1291.7 622.9 L1292.4 618.6 L1293.1 619.4 L1293.8 618.9 L1294.5 619.3 L1295.2 619.2 L1295.9 618.8 L1296.6 622.8 L1297.3 619.4 L1298.0 620.9 L1298.7 620.7 L1299.4 617.0 L1300.1 618.6 L1300.8 619.4 L1301.5 619.8 L1302.2 618.8 L1302.9 618.9 L1303.6 622.7 L1304.3 620.1 L1305.0 621.1 L1305.7 620.7 L1306.4 618.6 L1307.1 619.4 L1307.8 619.1 L1308.5 619.1 L1309.2 622.0 L1309.9 622.5 L1310.6 619.5 L1311.3 620.6 L1312.0 622.8 L1312.7 620.3 L1313.4 618.7 L1314.1 618.9 L1314.8 618.6 L1315.5 618.6 L1316.2 622.6 L1316.9 620.2 L1317.6 620.0 L1318.3 620.0 L1319.0 622.5 L1319.7 623.1 L1320.4 618.1 L1321.1 617.6 L1321.8 621.7 L1322.5 618.0 L1323.2 622.0 L1323.9 618.5 L1324.6 618.8 L1325.3 620.6 L1326.0 622.7 L1326.7 620.5 L1327.4 621.9 L1328.1 619.1 L1328.8 622.1 L1329.5 618.9 L1330.2 618.6 L1330.9 619.6 L1331.6 620.2 L1332.3 622.6 L1333.0 619.9 L1333.7 622.8 L1334.4 618.1 L1335.1 619.1 L1335.8 617.8 L1336.5 618.2 L1337.2 619.6 L1337.9 618.8 L1338.6 620.5 L1339.3 619.2 L1340.0 619.6 L1340.7 621.0 L1341.4 617.6 L1341.4 630.4 L1340.7 627.0 L1340.0 628.4 L1339.3 628.8 L1338.6 627.5 L1337.9 629.2 L1337.2 628.4 L1336.5 629.8 L1335.8 630.2 L1335.1 628.9 L1334.4 629.9 L1333.7 625.2 L1333.0 628.1 L1332.3 625.4 L1331.6 627.8 L1330.9 628.4 L1330.2 629.4 L1329.5 629.1 L1328.8 625.9 L1328.1 628.9 L1327.4 626.1 L1326.7 627.5 L1326.0 625.3 L1325.3 627.4 L1324.6 629.2 L1323.9 629.5 L1323.2 626.0 L1322.5 630.0 L1321.8 626.3 L1321.1 630.4 L1320.4 629.9 L1319.7 624.9 L1319.0 625.5 L1318.3 628.0 L1317.6 628.0 L1316.9 627.8 L1316.2 625.4 L1315.5 629.4 L1314.8 629.4 L1314.1 629.1 L1313.4 629.3 L1312.7 627.7 L1312.0 625.2 L1311.3 627.4 L1310.6 628.5 L1309.9 625.5 L1309.2 626.0 L1308.5 628.9 L1307.8 628.9 L1307.1 628.6 L1306.4 629.4 L1305.7 627.3 L1305.0 626.9 L1304.3 627.9 L1303.6 625.3 L1302.9 629.1 L1302.2 629.2 L1301.5 628.2 L1300.8 628.6 L1300.1 629.4 L1299.4 631.0 L1298.7 627.3 L1298.0 627.1 L1297.3 628.6 L1296.6 625.2 L1295.9 629.2 L1295.2 628.8 L1294.5 628.7 L1293.8 629.1 L1293.1 628.6 L1292.4 629.4 L1291.7 625.1 L1291.0 627.3 L1290.3 627.0 L1289.6 627.4 L1288.9 627.8 L1288.2 628.6 L1287.5 629.3 L1286.8 630.5 L1286.1 628.7 L1285.4 629.0 L1284.7 629.5Z" fill="#80f2b8"/><path d="M1284.7 636.3 L1285.4 637.5 L1286.1 638.0 L1286.8 640.3 L1287.5 637.4 L1288.2 638.7 L1288.9 637.7 L1289.6 640.9 L1290.3 641.3 L1291.0 639.0 L1291.7 639.2 L1292.4 636.8 L1293.1 637.8 L1293.8 636.7 L1294.5 640.8 L1295.2 638.2 L1295.9 638.5 L1296.6 638.9 L1297.3 640.9 L1298.0 639.2 L1298.7 639.9 L1299.4 640.0 L1300.1 640.4 L1300.8 636.9 L1301.5 640.9 L1302.2 638.5 L1302.9 641.3 L1303.6 638.3 L1304.3 638.8 L1305.0 641.2 L1305.7 641.3 L1306.4 636.1 L1307.1 637.8 L1307.8 640.5 L1308.5 637.9 L1309.2 640.4 L1309.9 637.6 L1310.6 638.8 L1311.3 639.3 L1312.0 638.6 L1312.7 641.2 L1313.4 636.8 L1314.1 636.5 L1314.8 637.2 L1315.5 640.6 L1316.2 637.0 L1316.9 638.1 L1317.6 638.3 L1318.3 639.2 L1319.0 639.5 L1319.7 639.8 L1320.4 635.5 L1321.1 636.1 L1321.8 636.4 L1322.5 637.9 L1323.2 637.8 L1323.9 637.2 L1324.6 640.9 L1325.3 637.9 L1326.0 639.5 L1326.7 639.6 L1327.4 635.0 L1328.1 640.9 L1328.8 637.6 L1329.5 637.0 L1330.2 640.9 L1330.9 640.8 L1331.6 638.9 L1332.3 641.0 L1333.0 638.9 L1333.7 638.7 L1334.4 640.0 L1335.1 636.0 L1335.8 636.0 L1336.5 641.0 L1337.2 640.7 L1337.9 640.8 L1338.6 637.6 L1339.3 641.4 L1340.0 638.8 L1340.7 641.4 L1341.4 636.3 L1341.4 648.7 L1340.7 643.6 L1340.0 646.2 L1339.3 643.6 L1338.6 647.4 L1337.9 644.2 L1337.2 644.3 L1336.5 644.0 L1335.8 649.0 L1335.1 649.0 L1334.4 645.0 L1333.7 646.3 L1333.0 646.1 L1332.3 644.0 L1331.6 646.1 L1330.9 644.2 L1330.2 644.1 L1329.5 648.0 L1328.8 647.4 L1328.1 644.1 L1327.4 650.0 L1326.7 645.4 L1326.0 645.5 L1325.3 647.1 L1324.6 644.1 L1323.9 647.8 L1323.2 647.2 L1322.5 647.1 L1321.8 648.6 L1321.1 648.9 L1320.4 649.5 L1319.7 645.2 L1319.0 645.5 L1318.3 645.8 L1317.6 646.7 L1316.9 646.9 L1316.2 648.0 L1315.5 644.4 L1314.8 647.8 L1314.1 648.5 L1313.4 648.2 L1312.7 643.8 L1312.0 646.4 L1311.3 645.7 L1310.6 646.2 L1309.9 647.4 L1309.2 644.6 L1308.5 647.1 L1307.8 644.5 L1307.1 647.2 L1306.4 648.9 L1305.7 643.7 L1305.0 643.8 L1304.3 646.2 L1303.6 646.7 L1302.9 643.7 L1302.2 646.5 L1301.5 644.1 L1300.8 648.1 L1300.1 644.6 L1299.4 645.0 L1298.7 645.1 L1298.0 645.8 L1297.3 644.1 L1296.6 646.1 L1295.9 646.5 L1295.2 646.8 L1294.5 644.2 L1293.8 648.3 L1293.1 647.2 L1292.4 648.2 L1291.7 645.8 L1291.0 646.0 L1290.3 643.7 L1289.6 644.1 L1288.9 647.3 L1288.2 646.3 L1287.5 647.6 L1286.8 644.7 L1286.1 647.0 L1285.4 647.5 L1284.7 648.7Z" fill="#80f2b8"/><path d="M1284.7 654.5 L1285.4 654.8 L1286.1 654.6 L1286.8 659.0 L1287.5 655.9 L1288.2 656.8 L1288.9 659.1 L1289.6 656.3 L1290.3 657.4 L1291.0 657.3 L1291.7 657.6 L1292.4 655.9 L1293.1 654.1 L1293.8 659.0 L1294.5 659.6 L1295.2 655.3 L1295.9 656.8 L1296.6 657.2 L1297.3 659.7 L1298.0 657.4 L1298.7 658.3 L1299.4 659.0 L1300.1 655.3 L1300.8 655.2 L1301.5 658.9 L1302.2 656.1 L1302.9 659.4 L1303.6 659.4 L1304.3 657.7 L1305.0 656.8 L1305.7 657.9 L1306.4 655.5 L1307.1 659.3 L1307.8 659.1 L1308.5 655.5 L1309.2 655.6 L1309.9 656.8 L1310.6 657.7 L1311.3 657.4 L1312.0 658.0 L1312.7 657.6 L1313.4 653.9 L1314.1 655.8 L1314.8 654.5 L1315.5 659.1 L1316.2 656.1 L1316.9 656.6 L1317.6 656.6 L1318.3 659.6 L1319.0 657.5 L1319.7 659.9 L1320.4 656.1 L1321.1 659.3 L1321.8 656.4 L1322.5 654.7 L1323.2 656.2 L1323.9 656.4 L1324.6 656.3 L1325.3 656.7 L1326.0 657.1 L1326.7 658.1 L1327.4 654.5 L1328.1 654.8 L1328.8 654.6 L1329.5 655.0 L1330.2 656.2 L1330.9 655.9 L1331.6 657.5 L1332.3 656.5 L1333.0 656.5 L1333.7 659.7 L1334.4 654.5 L1335.1 655.9 L1335.8 656.4 L1336.5 659.4 L1337.2 654.9 L1337.9 656.4 L1338.6 656.3 L1339.3 657.1 L1340.0 657.2 L1340.7 657.8 L1341.4 654.4 L1341.4 667.6 L1340.7 664.2 L1340.0 664.8 L1339.3 664.9 L1338.6 665.7 L1337.9 665.6 L1337.2 667.1 L1336.5 662.6 L1335.8 665.6 L1335.1 666.1 L1334.4 667.5 L1333.7 662.3 L1333.0 665.5 L1332.3 665.5 L1331.6 664.5 L1330.9 666.1 L1330.2 665.8 L1329.5 667.0 L1328.8 667.4 L1328.1 667.2 L1327.4 667.5 L1326.7 663.9 L1326.0 664.9 L1325.3 665.3 L1324.6 665.7 L1323.9 665.6 L1323.2 665.8 L1322.5 667.3 L1321.8 665.6 L1321.1 662.7 L1320.4 665.9 L1319.7 662.1 L1319.0 664.5 L1318.3 662.4 L1317.6 665.4 L1316.9 665.4 L1316.2 665.9 L1315.5 662.9 L1314.8 667.5 L1314.1 666.2 L1313.4 668.1 L1312.7 664.4 L1312.0 664.0 L1311.3 664.6 L1310.6 664.3 L1309.9 665.2 L1309.2 666.4 L1308.5 666.5 L1307.8 662.9 L1307.1 662.7 L1306.4 666.5 L1305.7 664.1 L1305.0 665.2 L1304.3 664.3 L1303.6 662.6 L1302.9 662.6 L1302.2 665.9 L1301.5 663.1 L1300.8 666.8 L1300.1 666.7 L1299.4 663.0 L1298.7 663.7 L1298.0 664.6 L1297.3 662.3 L1296.6 664.8 L1295.9 665.2 L1295.2 666.7 L1294.5 662.4 L1293.8 663.0 L1293.1 667.9 L1292.4 666.1 L1291.7 664.4 L1291.0 664.7 L1290.3 664.6 L1289.6 665.7 L1288.9 662.9 L1288.2 665.2 L1287.5 666.1 L1286.8 663.0 L1286.1 667.4 L1285.4 667.2 L1284.7 667.5Z" fill="#80f2b8"/><path d="M1284.7 673.9 L1285.4 673.0 L1286.1 674.3 L1286.8 675.4 L1287.5 674.7 L1288.2 676.1 L1288.9 676.4 L1289.6 678.4 L1290.3 675.4 L1291.0 676.3 L1291.7 679.1 L1292.4 677.9 L1293.1 675.1 L1293.8 675.7 L1294.5 675.1 L1295.2 675.2 L1295.9 675.5 L1296.6 675.9 L1297.3 675.4 L1298.0 676.0 L1298.7 677.0 L1299.4 678.1 L1300.1 673.6 L1300.8 673.8 L1301.5 673.9 L1302.2 676.2 L1302.9 674.7 L1303.6 675.0 L1304.3 676.8 L1305.0 676.0 L1305.7 677.3 L1306.4 672.7 L1307.1 675.2 L1307.8 678.4 L1308.5 678.0 L1309.2 675.0 L1309.9 676.1 L1310.6 676.4 L1311.3 676.7 L1312.0 676.8 L1312.7 676.1 L1313.4 674.4 L1314.1 674.9 L1314.8 673.7 L1315.5 675.7 L1316.2 675.7 L1316.9 674.9 L1317.6 678.6 L1318.3 676.7 L1319.0 676.8 L1319.7 676.9 L1320.4 672.6 L1321.1 674.0 L1321.8 678.3 L1322.5 673.9 L1323.2 675.6 L1323.9 674.9 L1324.6 676.3 L1325.3 675.4 L1326.0 678.8 L1326.7 677.3 L1327.4 674.5 L1328.1 674.7 L1328.8 674.2 L1329.5 675.5 L1330.2 676.0 L1330.9 675.2 L1331.6 675.5 L1332.3 675.3 L1333.0 677.0 L1333.7 678.8 L1334.4 674.6 L1335.1 677.9 L1335.8 674.7 L1336.5 673.6 L1337.2 674.6 L1337.9 678.6 L1338.6 676.5 L1339.3 675.6 L1340.0 677.0 L1340.7 676.6 L1341.4 674.2 L1341.4 685.8 L1340.7 683.4 L1340.0 683.0 L1339.3 684.4 L1338.6 683.5 L1337.9 681.4 L1337.2 685.4 L1336.5 686.4 L1335.8 685.3 L1335.1 682.1 L1334.4 685.4 L1333.7 681.2 L1333.0 683.0 L1332.3 684.7 L1331.6 684.5 L1330.9 684.8 L1330.2 684.0 L1329.5 684.5 L1328.8 685.8 L1328.1 685.3 L1327.4 685.5 L1326.7 682.7 L1326.0 681.2 L1325.3 684.6 L1324.6 683.7 L1323.9 685.1 L1323.2 684.4 L1322.5 686.1 L1321.8 681.7 L1321.1 686.0 L1320.4 687.4 L1319.7 683.1 L1319.0 683.2 L1318.3 683.3 L1317.6 681.4 L1316.9 685.1 L1316.2 684.3 L1315.5 684.3 L1314.8 686.3 L1314.1 685.1 L1313.4 685.6 L1312.7 683.9 L1312.0 683.2 L1311.3 683.3 L1310.6 683.6 L1309.9 683.9 L1309.2 685.0 L1308.5 682.0 L1307.8 681.6 L1307.1 684.8 L1306.4 687.3 L1305.7 682.7 L1305.0 684.0 L1304.3 683.2 L1303.6 685.0 L1302.9 685.3 L1302.2 683.8 L1301.5 686.1 L1300.8 686.2 L1300.1 686.4 L1299.4 681.9 L1298.7 683.0 L1298.0 684.0 L1297.3 684.6 L1296.6 684.1 L1295.9 684.5 L1295.2 684.8 L1294.5 684.9 L1293.8 684.3 L1293.1 684.9 L1292.4 682.1 L1291.7 680.9 L1291.0 683.7 L1290.3 684.6 L1289.6 681.6 L1288.9 683.6 L1288.2 683.9 L1287.5 685.3 L1286.8 684.6 L1286.1 685.7 L1285.4 687.0 L1284.7 686.1Z" fill="#80f2b8"/><path d="M1284.7 692.3 L1285.4 696.3 L1286.1 694.0 L1286.8 693.7 L1287.5 693.1 L1288.2 693.7 L1288.9 694.8 L1289.6 695.0 L1290.3 695.4 L1291.0 695.6 L1291.7 695.5 L1292.4 696.1 L1293.1 693.9 L1293.8 696.6 L1294.5 692.4 L1295.2 694.5 L1295.9 694.7 L1296.6 697.0 L1297.3 697.0 L1298.0 695.5 L1298.7 695.4 L1299.4 692.2 L1300.1 696.6 L1300.8 692.6 L1301.5 692.4 L1302.2 694.0 L1302.9 693.6 L1303.6 695.0 L1304.3 694.9 L1305.0 694.5 L1305.7 695.9 L1306.4 692.6 L1307.1 693.4 L1307.8 693.3 L1308.5 694.2 L1309.2 694.3 L1309.9 694.9 L1310.6 694.6 L1311.3 695.3 L1312.0 695.3 L1312.7 695.2 L1313.4 692.4 L1314.1 693.5 L1314.8 693.3 L1315.5 692.8 L1316.2 694.6 L1316.9 693.4 L1317.6 697.2 L1318.3 695.3 L1319.0 694.1 L1319.7 697.3 L1320.4 692.8 L1321.1 691.8 L1321.8 693.6 L1322.5 693.3 L1323.2 694.1 L1323.9 696.6 L1324.6 694.6 L1325.3 694.9 L1326.0 694.8 L1326.7 694.8 L1327.4 692.9 L1328.1 692.2 L1328.8 693.8 L1329.5 693.4 L1330.2 693.7 L1330.9 693.7 L1331.6 693.4 L1332.3 694.0 L1333.0 694.6 L1333.7 694.7 L1334.4 692.7 L1335.1 692.0 L1335.8 694.0 L1336.5 692.3 L1337.2 692.7 L1337.9 693.7 L1338.6 697.0 L1339.3 694.7 L1340.0 694.1 L1340.7 695.0 L1341.4 693.2 L1341.4 703.8 L1340.7 702.0 L1340.0 702.9 L1339.3 702.3 L1338.6 700.0 L1337.9 703.3 L1337.2 704.3 L1336.5 704.7 L1335.8 703.0 L1335.1 705.0 L1334.4 704.3 L1333.7 702.3 L1333.0 702.4 L1332.3 703.0 L1331.6 703.6 L1330.9 703.3 L1330.2 703.3 L1329.5 703.6 L1328.8 703.2 L1328.1 704.8 L1327.4 704.1 L1326.7 702.2 L1326.0 702.2 L1325.3 702.1 L1324.6 702.4 L1323.9 700.4 L1323.2 702.9 L1322.5 703.7 L1321.8 703.4 L1321.1 705.2 L1320.4 704.2 L1319.7 699.7 L1319.0 702.9 L1318.3 701.7 L1317.6 699.8 L1316.9 703.6 L1316.2 702.4 L1315.5 704.2 L1314.8 703.7 L1314.1 703.5 L1313.4 704.6 L1312.7 701.8 L1312.0 701.7 L1311.3 701.7 L1310.6 702.4 L1309.9 702.1 L1309.2 702.7 L1308.5 702.8 L1307.8 703.7 L1307.1 703.6 L1306.4 704.4 L1305.7 701.1 L1305.0 702.5 L1304.3 702.1 L1303.6 702.0 L1302.9 703.4 L1302.2 703.0 L1301.5 704.6 L1300.8 704.4 L1300.1 700.4 L1299.4 704.8 L1298.7 701.6 L1298.0 701.5 L1297.3 700.0 L1296.6 700.0 L1295.9 702.3 L1295.2 702.5 L1294.5 704.6 L1293.8 700.4 L1293.1 703.1 L1292.4 700.9 L1291.7 701.5 L1291.0 701.4 L1290.3 701.6 L1289.6 702.0 L1288.9 702.2 L1288.2 703.3 L1287.5 703.9 L1286.8 703.3 L1286.1 703.0 L1285.4 700.7 L1284.7 704.7Z" fill="#80f2b8"/><path d="M1284.7 711.4 L1285.4 710.6 L1286.1 712.1 L1286.8 712.5 L1287.5 715.1 L1288.2 712.2 L1288.9 713.0 L1289.6 712.3 L1290.3 714.0 L1291.0 714.0 L1291.7 713.4 L1292.4 710.2 L1293.1 710.2 L1293.8 712.2 L1294.5 712.0 L1295.2 712.1 L1295.9 712.8 L1296.6 715.7 L1297.3 712.6 L1298.0 712.8 L1298.7 713.7 L1299.4 711.9 L1300.1 715.0 L1300.8 712.3 L1301.5 712.4 L1302.2 712.0 L1302.9 713.2 L1303.6 713.3 L1304.3 713.6 L1305.0 714.1 L1305.7 713.1 L1306.4 710.4 L1307.1 715.4 L1307.8 710.8 L1308.5 715.1 L1309.2 712.3 L1309.9 711.7 L1310.6 713.3 L1311.3 713.3 L1312.0 714.0 L1312.7 713.6 L1313.4 711.6 L1314.1 711.0 L1314.8 711.8 L1315.5 712.2 L1316.2 712.8 L1316.9 713.2 L1317.6 713.5 L1318.3 713.0 L1319.0 714.1 L1319.7 715.9 L1320.4 712.1 L1321.1 712.1 L1321.8 712.0 L1322.5 712.7 L1323.2 712.4 L1323.9 713.4 L1324.6 712.7 L1325.3 713.0 L1326.0 713.1 L1326.7 714.3 L1327.4 709.7 L1328.1 711.7 L1328.8 710.6 L1329.5 711.5 L1330.2 712.6 L1330.9 712.9 L1331.6 713.5 L1332.3 713.7 L1333.0 715.6 L1333.7 713.2 L1334.4 710.8 L1335.1 711.5 L1335.8 715.1 L1336.5 714.9 L1337.2 711.3 L1337.9 712.7 L1338.6 715.8 L1339.3 713.2 L1340.0 712.6 L1340.7 714.2 L1341.4 711.7 L1341.4 722.3 L1340.7 719.8 L1340.0 721.4 L1339.3 720.8 L1338.6 718.2 L1337.9 721.3 L1337.2 722.7 L1336.5 719.1 L1335.8 718.9 L1335.1 722.5 L1334.4 723.2 L1333.7 720.8 L1333.0 718.4 L1332.3 720.3 L1331.6 720.5 L1330.9 721.1 L1330.2 721.4 L1329.5 722.5 L1328.8 723.4 L1328.1 722.3 L1327.4 724.3 L1326.7 719.7 L1326.0 720.9 L1325.3 721.0 L1324.6 721.3 L1323.9 720.6 L1323.2 721.6 L1322.5 721.3 L1321.8 722.0 L1321.1 721.9 L1320.4 721.9 L1319.7 718.1 L1319.0 719.9 L1318.3 721.0 L1317.6 720.5 L1316.9 720.8 L1316.2 721.2 L1315.5 721.8 L1314.8 722.2 L1314.1 723.0 L1313.4 722.4 L1312.7 720.4 L1312.0 720.0 L1311.3 720.7 L1310.6 720.7 L1309.9 722.3 L1309.2 721.7 L1308.5 718.9 L1307.8 723.2 L1307.1 718.6 L1306.4 723.6 L1305.7 720.9 L1305.0 719.9 L1304.3 720.4 L1303.6 720.7 L1302.9 720.8 L1302.2 722.0 L1301.5 721.6 L1300.8 721.7 L1300.1 719.0 L1299.4 722.1 L1298.7 720.3 L1298.0 721.2 L1297.3 721.4 L1296.6 718.3 L1295.9 721.2 L1295.2 721.9 L1294.5 722.0 L1293.8 721.8 L1293.1 723.8 L1292.4 723.8 L1291.7 720.6 L1291.0 720.0 L1290.3 720.0 L1289.6 721.7 L1288.9 721.0 L1288.2 721.8 L1287.5 718.9 L1286.8 721.5 L1286.1 721.9 L1285.4 723.4 L1284.7 722.6Z" fill="#80f2b8"/><path d="M1284.7 730.3 L1285.4 729.2 L1286.1 730.4 L1286.8 729.6 L1287.5 730.9 L1288.2 731.0 L1288.9 731.8 L1289.6 730.7 L1290.3 732.1 L1291.0 734.2 L1291.7 732.3 L1292.4 730.4 L1293.1 730.7 L1293.8 731.1 L1294.5 729.4 L1295.2 729.7 L1295.9 730.8 L1296.6 733.9 L1297.3 731.5 L1298.0 734.4 L1298.7 731.8 L1299.4 730.2 L1300.1 730.5 L1300.8 733.6 L1301.5 733.5 L1302.2 734.0 L1302.9 733.8 L1303.6 734.0 L1304.3 731.7 L1305.0 731.9 L1305.7 732.3 L1306.4 733.3 L1307.1 729.8 L1307.8 729.2 L1308.5 734.0 L1309.2 730.2 L1309.9 731.9 L1310.6 730.5 L1311.3 731.8 L1312.0 731.2 L1312.7 732.5 L1313.4 729.1 L1314.1 730.3 L1314.8 731.1 L1315.5 729.3 L1316.2 731.1 L1316.9 731.2 L1317.6 734.3 L1318.3 732.1 L1319.0 731.3 L1319.7 732.5 L1320.4 728.3 L1321.1 729.0 L1321.8 729.8 L1322.5 729.3 L1323.2 730.6 L1323.9 731.2 L1324.6 730.4 L1325.3 731.1 L1326.0 731.2 L1326.7 732.5 L1327.4 729.4 L1328.1 733.6 L1328.8 730.6 L1329.5 731.0 L1330.2 730.7 L1330.9 731.1 L1331.6 731.6 L1332.3 734.1 L1333.0 734.4 L1333.7 734.2 L1334.4 728.8 L1335.1 729.2 L1335.8 730.2 L1336.5 729.8 L1337.2 731.5 L1337.9 731.3 L1338.6 730.3 L1339.3 732.2 L1340.0 731.1 L1340.7 732.6 L1341.4 729.4 L1341.4 741.6 L1340.7 738.4 L1340.0 739.9 L1339.3 738.8 L1338.6 740.7 L1337.9 739.7 L1337.2 739.5 L1336.5 741.2 L1335.8 740.8 L1335.1 741.8 L1334.4 742.2 L1333.7 736.8 L1333.0 736.6 L1332.3 736.9 L1331.6 739.4 L1330.9 739.9 L1330.2 740.3 L1329.5 740.0 L1328.8 740.4 L1328.1 737.4 L1327.4 741.6 L1326.7 738.5 L1326.0 739.8 L1325.3 739.9 L1324.6 740.6 L1323.9 739.8 L1323.2 740.4 L1322.5 741.7 L1321.8 741.2 L1321.1 742.0 L1320.4 742.7 L1319.7 738.5 L1319.0 739.7 L1318.3 738.9 L1317.6 736.7 L1316.9 739.8 L1316.2 739.9 L1315.5 741.7 L1314.8 739.9 L1314.1 740.7 L1313.4 741.9 L1312.7 738.5 L1312.0 739.8 L1311.3 739.2 L1310.6 740.5 L1309.9 739.1 L1309.2 740.8 L1308.5 737.0 L1307.8 741.8 L1307.1 741.2 L1306.4 737.7 L1305.7 738.7 L1305.0 739.1 L1304.3 739.3 L1303.6 737.0 L1302.9 737.2 L1302.2 737.0 L1301.5 737.5 L1300.8 737.4 L1300.1 740.5 L1299.4 740.8 L1298.7 739.2 L1298.0 736.6 L1297.3 739.5 L1296.6 737.1 L1295.9 740.2 L1295.2 741.3 L1294.5 741.6 L1293.8 739.9 L1293.1 740.3 L1292.4 740.6 L1291.7 738.7 L1291.0 736.8 L1290.3 738.9 L1289.6 740.3 L1288.9 739.2 L1288.2 740.0 L1287.5 740.1 L1286.8 741.4 L1286.1 740.6 L1285.4 741.8 L1284.7 740.7Z" fill="#80f2b8"/><path d="M1284.7 751.4 L1285.4 751.7 L1286.1 751.6 L1286.8 747.8 L1287.5 748.2 L1288.2 749.8 L1288.9 749.2 L1289.6 750.3 L1290.3 749.6 L1291.0 750.1 L1291.7 750.3 L1292.4 748.7 L1293.1 752.1 L1293.8 748.5 L1294.5 748.8 L1295.2 748.9 L1295.9 748.9 L1296.6 749.9 L1297.3 752.9 L1298.0 751.0 L1298.7 750.5 L1299.4 748.5 L1300.1 751.7 L1300.8 752.4 L1301.5 749.0 L1302.2 749.1 L1302.9 752.4 L1303.6 749.0 L1304.3 750.6 L1305.0 749.9 L1305.7 750.2 L1306.4 751.9 L1307.1 747.2 L1307.8 752.1 L1308.5 748.9 L1309.2 748.5 L1309.9 749.0 L1310.6 750.6 L1311.3 752.4 L1312.0 750.4 L1312.7 752.6 L1313.4 749.0 L1314.1 748.0 L1314.8 747.9 L1315.5 748.4 L1316.2 752.6 L1316.9 749.8 L1317.6 750.0 L1318.3 749.9 L1319.0 750.2 L1319.7 750.2 L1320.4 746.8 L1321.1 749.4 L1321.8 748.8 L1322.5 752.2 L1323.2 749.6 L1323.9 749.7 L1324.6 749.4 L1325.3 750.3 L1326.0 750.0 L1326.7 753.0 L1327.4 746.9 L1328.1 749.1 L1328.8 748.2 L1329.5 751.8 L1330.2 749.9 L1330.9 748.9 L1331.6 749.7 L1332.3 750.2 L1333.0 751.1 L1333.7 751.1 L1334.4 746.9 L1335.1 747.9 L1335.8 747.8 L1336.5 749.3 L1337.2 752.2 L1337.9 749.3 L1338.6 750.3 L1339.3 749.5 L1340.0 749.7 L1340.7 750.3 L1341.4 752.0 L1341.4 756.0 L1340.7 757.7 L1340.0 758.3 L1339.3 758.5 L1338.6 757.7 L1337.9 758.7 L1337.2 755.8 L1336.5 758.7 L1335.8 760.2 L1335.1 760.1 L1334.4 761.1 L1333.7 756.9 L1333.0 756.9 L1332.3 757.8 L1331.6 758.3 L1330.9 759.1 L1330.2 758.1 L1329.5 756.2 L1328.8 759.8 L1328.1 758.9 L1327.4 761.1 L1326.7 755.0 L1326.0 758.0 L1325.3 757.7 L1324.6 758.6 L1323.9 758.3 L1323.2 758.4 L1322.5 755.8 L1321.8 759.2 L1321.1 758.6 L1320.4 761.2 L1319.7 757.8 L1319.0 757.8 L1318.3 758.1 L1317.6 758.0 L1316.9 758.2 L1316.2 755.4 L1315.5 759.6 L1314.8 760.1 L1314.1 760.0 L1313.4 759.0 L1312.7 755.4 L1312.0 757.6 L1311.3 755.6 L1310.6 757.4 L1309.9 759.0 L1309.2 759.5 L1308.5 759.1 L1307.8 755.9 L1307.1 760.8 L1306.4 756.1 L1305.7 757.8 L1305.0 758.1 L1304.3 757.4 L1303.6 759.0 L1302.9 755.6 L1302.2 758.9 L1301.5 759.0 L1300.8 755.6 L1300.1 756.3 L1299.4 759.5 L1298.7 757.5 L1298.0 757.0 L1297.3 755.1 L1296.6 758.1 L1295.9 759.1 L1295.2 759.1 L1294.5 759.2 L1293.8 759.5 L1293.1 755.9 L1292.4 759.3 L1291.7 757.7 L1291.0 757.9 L1290.3 758.4 L1289.6 757.7 L1288.9 758.8 L1288.2 758.2 L1287.5 759.8 L1286.8 760.2 L1286.1 756.4 L1285.4 756.3 L1284.7 756.6Z" fill="#80f2b8"/><path d="M1284.7 767.1 L1285.4 767.2 L1286.1 767.6 L1286.8 768.2 L1287.5 769.0 L1288.2 771.5 L1288.9 768.1 L1289.6 768.4 L1290.3 769.6 L1291.0 769.1 L1291.7 770.5 L1292.4 766.7 L1293.1 768.0 L1293.8 768.2 L1294.5 768.3 L1295.2 768.0 L1295.9 771.6 L1296.6 768.0 L1297.3 768.7 L1298.0 771.9 L1298.7 770.1 L1299.4 768.1 L1300.1 770.8 L1300.8 766.8 L1301.5 767.0 L1302.2 767.6 L1302.9 768.3 L1303.6 771.8 L1304.3 769.6 L1305.0 769.6 L1305.7 769.5 L1306.4 767.4 L1307.1 766.1 L1307.8 767.2 L1308.5 771.4 L1309.2 771.6 L1309.9 769.4 L1310.6 771.3 L1311.3 768.8 L1312.0 771.6 L1312.7 769.5 L1313.4 771.2 L1314.1 767.1 L1314.8 771.4 L1315.5 771.3 L1316.2 768.2 L1316.9 771.4 L1317.6 769.6 L1318.3 768.8 L1319.0 771.7 L1319.7 770.1 L1320.4 771.2 L1321.1 767.3 L1321.8 768.1 L1322.5 766.9 L1323.2 768.7 L1323.9 768.1 L1324.6 768.0 L1325.3 771.6 L1326.0 769.6 L1326.7 772.0 L1327.4 765.5 L1328.1 767.1 L1328.8 767.5 L1329.5 767.7 L1330.2 768.9 L1330.9 768.0 L1331.6 769.0 L1332.3 768.5 L1333.0 770.0 L1333.7 770.1 L1334.4 767.0 L1335.1 767.8 L1335.8 766.9 L1336.5 768.3 L1337.2 771.2 L1337.9 771.1 L1338.6 771.4 L1339.3 768.1 L1340.0 769.7 L1340.7 769.1 L1341.4 766.3 L1341.4 779.7 L1340.7 776.9 L1340.0 776.3 L1339.3 777.9 L1338.6 774.6 L1337.9 774.9 L1337.2 774.8 L1336.5 777.7 L1335.8 779.1 L1335.1 778.2 L1334.4 779.0 L1333.7 775.9 L1333.0 776.0 L1332.3 777.5 L1331.6 777.0 L1330.9 778.0 L1330.2 777.1 L1329.5 778.3 L1328.8 778.5 L1328.1 778.9 L1327.4 780.5 L1326.7 774.0 L1326.0 776.4 L1325.3 774.4 L1324.6 778.0 L1323.9 777.9 L1323.2 777.3 L1322.5 779.1 L1321.8 777.9 L1321.1 778.7 L1320.4 774.8 L1319.7 775.9 L1319.0 774.3 L1318.3 777.2 L1317.6 776.4 L1316.9 774.6 L1316.2 777.8 L1315.5 774.7 L1314.8 774.6 L1314.1 778.9 L1313.4 774.8 L1312.7 776.5 L1312.0 774.4 L1311.3 777.2 L1310.6 774.7 L1309.9 776.6 L1309.2 774.4 L1308.5 774.6 L1307.8 778.8 L1307.1 779.9 L1306.4 778.6 L1305.7 776.5 L1305.0 776.4 L1304.3 776.4 L1303.6 774.2 L1302.9 777.7 L1302.2 778.4 L1301.5 779.0 L1300.8 779.2 L1300.1 775.2 L1299.4 777.9 L1298.7 775.9 L1298.0 774.1 L1297.3 777.3 L1296.6 778.0 L1295.9 774.4 L1295.2 778.0 L1294.5 777.7 L1293.8 777.8 L1293.1 778.0 L1292.4 779.3 L1291.7 775.5 L1291.0 776.9 L1290.3 776.4 L1289.6 777.6 L1288.9 777.9 L1288.2 774.5 L1287.5 777.0 L1286.8 777.8 L1286.1 778.4 L1285.4 778.8 L1284.7 778.9Z" fill="#80f2b8"/><path d="M1284.7 789.0 L1285.4 788.6 L1286.1 788.4 L1286.8 789.4 L1287.5 788.7 L1288.2 788.8 L1288.9 788.8 L1289.6 789.7 L1290.3 789.8 L1291.0 789.2 L1291.7 788.7 L1292.4 789.4 L1293.1 789.1 L1293.8 789.3 L1294.5 788.5 L1295.2 788.4 L1295.9 789.2 L1296.6 788.3 L1297.3 789.7 L1298.0 788.6 L1298.7 788.5 L1299.4 789.6 L1300.1 788.8 L1300.8 789.0 L1301.5 788.4 L1302.2 789.5 L1302.9 789.0 L1303.6 788.5 L1304.3 788.9 L1305.0 789.4 L1305.7 789.7 L1306.4 788.4 L1307.1 789.1 L1307.8 788.3 L1308.5 789.6 L1309.2 788.6 L1309.9 788.6 L1310.6 788.4 L1311.3 789.8 L1312.0 789.3 L1312.7 789.7 L1313.4 788.7 L1314.1 789.3 L1314.8 788.4 L1315.5 789.3 L1316.2 788.7 L1316.9 788.5 L1317.6 789.5 L1318.3 789.0 L1319.0 788.4 L1319.7 789.0 L1320.4 789.3 L1321.1 789.4 L1321.8 788.6 L1322.5 789.5 L1323.2 788.9 L1323.9 789.0 L1324.6 789.0 L1325.3 789.6 L1326.0 788.8 L1326.7 788.4 L1327.4 789.3 L1328.1 789.3 L1328.8 788.4 L1329.5 788.9 L1330.2 789.4 L1330.9 789.8 L1331.6 788.7 L1332.3 789.3 L1333.0 789.1 L1333.7 789.4 L1334.4 788.9 L1335.1 788.7 L1335.8 789.4 L1336.5 789.7 L1337.2 788.3 L1337.9 788.4 L1338.6 789.8 L1339.3 789.0 L1340.0 788.8 L1340.7 789.2 L1341.4 788.7 L1341.4 794.3 L1340.7 793.8 L1340.0 794.2 L1339.3 794.0 L1338.6 793.2 L1337.9 794.6 L1337.2 794.7 L1336.5 793.3 L1335.8 793.6 L1335.1 794.3 L1334.4 794.1 L1333.7 793.6 L1333.0 793.9 L1332.3 793.7 L1331.6 794.3 L1330.9 793.2 L1330.2 793.6 L1329.5 794.1 L1328.8 794.6 L1328.1 793.7 L1327.4 793.7 L1326.7 794.6 L1326.0 794.2 L1325.3 793.4 L1324.6 794.0 L1323.9 794.0 L1323.2 794.1 L1322.5 793.5 L1321.8 794.4 L1321.1 793.6 L1320.4 793.7 L1319.7 794.0 L1319.0 794.6 L1318.3 794.0 L1317.6 793.5 L1316.9 794.5 L1316.2 794.3 L1315.5 793.7 L1314.8 794.6 L1314.1 793.7 L1313.4 794.3 L1312.7 793.3 L1312.0 793.7 L1311.3 793.2 L1310.6 794.6 L1309.9 794.4 L1309.2 794.4 L1308.5 793.4 L1307.8 794.7 L1307.1 793.9 L1306.4 794.6 L1305.7 793.3 L1305.0 793.6 L1304.3 794.1 L1303.6 794.5 L1302.9 794.0 L1302.2 793.5 L1301.5 794.6 L1300.8 794.0 L1300.1 794.2 L1299.4 793.4 L1298.7 794.5 L1298.0 794.4 L1297.3 793.3 L1296.6 794.7 L1295.9 793.8 L1295.2 794.6 L1294.5 794.5 L1293.8 793.7 L1293.1 793.9 L1292.4 793.6 L1291.7 794.3 L1291.0 793.8 L1290.3 793.2 L1289.6 793.3 L1288.9 794.2 L1288.2 794.2 L1287.5 794.3 L1286.8 793.6 L1286.1 794.6 L1285.4 794.4 L1284.7 794.0Z" fill="#80f2b8"/></svg>
<div style="left:1198px;top:466px;width:332px;height:18px;border:1px solid rgba(150,210,250,.62)"></div>
<svg style="left:1176.27px;top:470.67px" width="9.46" height="9.46" viewBox="0 0 11 11"><path d="M1 9.6 C2 7 3.6 5.4 5.6 4.4 C6.2 2.8 7.4 1.6 9 1 L10 .4 L10.4 2 C10 4.6 8.4 6.6 6 7.4 C4.4 8 2.8 8.6 1 9.6Z" fill="#86d2ff"/><path d="M4 3.4 L6.8 5 M3 4.8 L5.6 6.2 M2 6.2 L4.4 7.4" stroke="#86d2ff" stroke-width=".6"/></svg>
<svg style="left:1176.67px;top:619.87px" width="9.46" height="9.46" viewBox="0 0 11 11"><circle cx="5.2" cy="5.8" r="3.6" fill="none" stroke="#84f4bc" stroke-width="1.3"/><rect x="2.4" y=".4" width="2.2" height="1.2" fill="#84f4bc"/><rect x="5.8" y=".4" width="2.2" height="1.2" fill="#84f4bc"/><rect x="0" y="2.2" width="2.6" height="2.6" fill="#84f4bc"/><rect x="7.8" y="2.2" width="2.6" height="2" fill="#84f4bc"/></svg>
<div style="left:1531.4px;top:467.8px;width:3.4px;height:59.2px;background:#e6e6e6;border-radius:1.7px"></div>
<div style="left:1171px;top:802.6px;width:332px;height:3.4px;background:#d6d8da;border-radius:1.7px"></div>
<div style="left:0px;top:557.2px;width:1148.5px;height:250.8px;background:#22262a;"></div>
<div class="t" style="left:8.6px;top:592.3px;font-size:7.7px;color:#e0e0e0;transform:translate(-50%,-50%) rotate(-90deg);">Sends</div>
<div class="t" style="left:8.6px;top:617.4px;font-size:7.7px;color:#e0e0e0;transform:translate(-50%,-50%) rotate(-90deg);">Fx</div>
<div class="t" style="left:8.6px;top:643.7px;font-size:7.7px;color:#555a61;transform:translate(-50%,-50%) rotate(-90deg);">Pan</div>
<div class="t" style="left:8.6px;top:728px;font-size:7.7px;color:#e0e0e0;transform:translate(-50%,-50%) rotate(-90deg);">Volume</div>
<div style="left:15.6px;top:559.2px;width:58.8px;height:240px;background:#2c3035;"></div>
<div style="left:15.6px;top:559.2px;width:58.8px;height:3.6px;background:#4da8e0;"></div>
<div style="left:15.6px;top:795.6px;width:58.8px;height:3.6px;background:#4da8e0;"></div>
<div class="t" style="left:21.8px;top:571.8px;font-size:9px;color:#fff;transform:translate(-50%,-50%);font-weight:bold">1</div>
<div style="left:37.4px;top:566px;width:35.5px;height:11.6px;background:#202327;"></div>
<div class="t" style="left:55.1px;top:572px;font-size:6.2px;color:#d2d4d6;transform:translate(-50%,-50%);">REC</div>
<svg style="left:21.50px;top:583.80px" width="20.00" height="20.00" viewBox="0 0 20 20"><circle cx="10" cy="10" r="9" fill="#1b1e22"/><circle cx="10" cy="10" r="6.5" fill="#3b4047"/><path d="M6 10.2 L9.6 13.4 H6Z" fill="#4da8e0"/></svg>
<svg style="left:48.80px;top:583.80px" width="20.00" height="20.00" viewBox="0 0 20 20"><circle cx="10" cy="10" r="9" fill="#1b1e22"/><circle cx="10" cy="10" r="6.5" fill="#3b4047"/><path d="M6 10.2 L9.6 13.4 H6Z" fill="#4da8e0"/></svg>
<div style="left:22.6px;top:610.9px;width:44.6px;height:14.2px;background:#5a522e;"></div>
<div class="t" style="left:44.7px;top:618.2px;font-size:8.8px;color:#d4bf3c;transform:translate(-50%,-50%);">FX</div>
<div style="left:21.6px;top:633px;width:21.8px;height:14.2px;background:#2c503c;"></div>
<div class="t" style="left:32.2px;top:640.3px;font-size:8.8px;color:#3fa862;transform:translate(-50%,-50%);">S</div>
<div style="left:46.6px;top:633px;width:22.4px;height:14.2px;background:#2b475a;"></div>
<div class="t" style="left:57.800000000000004px;top:640.3px;font-size:8.8px;color:#4a8fc0;transform:translate(-50%,-50%);">M</div>
<div class="t" style="left:45.0px;top:655.6px;font-size:8px;color:#b8babd;transform:translate(-50%,-50%);">0.0</div>
<div style="left:15.6px;top:686.6px;width:11.000000000000002px;height:1px;background:#4f545a;"></div>
<div style="left:63.6px;top:686.6px;width:10.79999999999999px;height:1px;background:#4f545a;"></div>
<div style="left:15.6px;top:711.2px;width:7.4px;height:1px;background:#4f545a;"></div>
<div style="left:67.0px;top:711.2px;width:7.3999999999999915px;height:1px;background:#4f545a;"></div>
<div style="left:43.3px;top:661.8px;width:3.4px;height:114px;background:#1e2125;border-radius:1.7px"></div>
<svg style="left:36.2px;top:768.6px" width="3.4" height="7" viewBox="0 0 3.4 7"><rect x="0" y="5.60" width="3.4" height="1.1" fill="#dedede"/><rect x="0" y="3.90" width="3.4" height="1.1" fill="#dedede"/><rect x="0" y="2.20" width="3.4" height="1.1" fill="#dedede"/><rect x="0" y="0.50" width="3.4" height="1.1" fill="#dedede"/></svg>
<svg style="left:50.9px;top:768.6px" width="3.4" height="7" viewBox="0 0 3.4 7"><rect x="0" y="5.60" width="3.4" height="1.1" fill="#dedede"/><rect x="0" y="3.90" width="3.4" height="1.1" fill="#dedede"/><rect x="0" y="2.20" width="3.4" height="1.1" fill="#dedede"/><rect x="0" y="0.50" width="3.4" height="1.1" fill="#dedede"/></svg>
<div style="left:37.5px;top:683.1px;width:15px;height:14.7px;background:#373b40;border:1px solid #5d6268;border-radius:1px;box-shadow:0 0 2px rgba(0,0,0,.7)"></div><div style="left:40.6px;top:687.0px;width:8.8px;height:1.6px;background:#e4e4e4;"></div><div style="left:40.6px;top:691.5px;width:8.8px;height:1.6px;background:#e4e4e4;"></div>
<div class="t" style="left:45.8px;top:789px;font-size:8px;color:#d6d8da;transform:translate(-50%,-50%);">Drums A</div>
<div style="left:78.03999999999999px;top:559.2px;width:58.8px;height:240px;background:#2c3035;"></div>
<div style="left:78.03999999999999px;top:559.2px;width:58.8px;height:3.6px;background:#4da8e0;"></div>
<div style="left:78.03999999999999px;top:795.6px;width:58.8px;height:3.6px;background:#4da8e0;"></div>
<div class="t" style="left:84.24px;top:571.8px;font-size:9px;color:#fff;transform:translate(-50%,-50%);font-weight:bold">2</div>
<div style="left:99.83999999999999px;top:566px;width:35.5px;height:11.6px;background:#202327;"></div>
<div class="t" style="left:117.53999999999999px;top:572px;font-size:6.2px;color:#d2d4d6;transform:translate(-50%,-50%);">REC</div>
<svg style="left:83.94px;top:583.80px" width="20.00" height="20.00" viewBox="0 0 20 20"><circle cx="10" cy="10" r="9" fill="#1b1e22"/><circle cx="10" cy="10" r="6.5" fill="#3b4047"/><path d="M6 10.2 L9.6 13.4 H6Z" fill="#4da8e0"/></svg>
<svg style="left:111.24px;top:583.80px" width="20.00" height="20.00" viewBox="0 0 20 20"><circle cx="10" cy="10" r="9" fill="#1b1e22"/><circle cx="10" cy="10" r="6.5" fill="#3b4047"/><path d="M6 10.2 L9.6 13.4 H6Z" fill="#4da8e0"/></svg>
<div style="left:85.03999999999999px;top:610.9px;width:44.6px;height:14.2px;background:#5a522e;"></div>
<div class="t" style="left:107.14px;top:618.2px;font-size:8.8px;color:#d4bf3c;transform:translate(-50%,-50%);">FX</div>
<div style="left:84.03999999999999px;top:633px;width:21.8px;height:14.2px;background:#2c503c;"></div>
<div class="t" style="left:94.63999999999999px;top:640.3px;font-size:8.8px;color:#3fa862;transform:translate(-50%,-50%);">S</div>
<div style="left:109.03999999999999px;top:633px;width:22.4px;height:14.2px;background:#2b475a;"></div>
<div class="t" style="left:120.24px;top:640.3px;font-size:8.8px;color:#4a8fc0;transform:translate(-50%,-50%);">M</div>
<div class="t" style="left:107.44px;top:655.6px;font-size:8px;color:#b8babd;transform:translate(-50%,-50%);">0.0</div>
<div style="left:78.03999999999999px;top:686.6px;width:11.0px;height:1px;background:#4f545a;"></div>
<div style="left:126.03999999999999px;top:686.6px;width:10.799999999999983px;height:1px;background:#4f545a;"></div>
<div style="left:78.03999999999999px;top:711.2px;width:7.400000000000006px;height:1px;background:#4f545a;"></div>
<div style="left:129.44px;top:711.2px;width:7.399999999999977px;height:1px;background:#4f545a;"></div>
<div style="left:105.74px;top:661.8px;width:3.4px;height:114px;background:#1e2125;border-radius:1.7px"></div>


<div style="left:99.94px;top:683.1px;width:15px;height:14.7px;background:#373b40;border:1px solid #5d6268;border-radius:1px;box-shadow:0 0 2px rgba(0,0,0,.7)"></div><div style="left:103.03999999999999px;top:687.0px;width:8.8px;height:1.6px;background:#e4e4e4;"></div><div style="left:103.03999999999999px;top:691.5px;width:8.8px;height:1.6px;background:#e4e4e4;"></div>
<div class="t" style="left:108.24px;top:789px;font-size:8px;color:#d6d8da;transform:translate(-50%,-50%);">Drums B</div>
<div style="left:140.48px;top:559.2px;width:58.8px;height:240px;background:#2c3035;"></div>
<div style="left:140.48px;top:559.2px;width:58.8px;height:3.6px;background:#4da8e0;"></div>
<div style="left:140.48px;top:795.6px;width:58.8px;height:3.6px;background:#4da8e0;"></div>
<div class="t" style="left:146.67999999999998px;top:571.8px;font-size:9px;color:#fff;transform:translate(-50%,-50%);font-weight:bold">3</div>
<div style="left:162.28px;top:566px;width:35.5px;height:11.6px;background:#202327;"></div>
<div class="t" style="left:179.98px;top:572px;font-size:6.2px;color:#d2d4d6;transform:translate(-50%,-50%);">REC</div>
<svg style="left:146.38px;top:583.80px" width="20.00" height="20.00" viewBox="0 0 20 20"><circle cx="10" cy="10" r="9" fill="#1b1e22"/><circle cx="10" cy="10" r="6.5" fill="#3b4047"/><path d="M6 10.2 L9.6 13.4 H6Z" fill="#4da8e0"/></svg>
<svg style="left:173.68px;top:583.80px" width="20.00" height="20.00" viewBox="0 0 20 20"><circle cx="10" cy="10" r="9" fill="#1b1e22"/><circle cx="10" cy="10" r="6.5" fill="#3b4047"/><path d="M6 10.2 L9.6 13.4 H6Z" fill="#4da8e0"/></svg>
<div style="left:147.48px;top:610.9px;width:44.6px;height:14.2px;background:#5a522e;"></div>
<div class="t" style="left:169.57999999999998px;top:618.2px;font-size:8.8px;color:#d4bf3c;transform:translate(-50%,-50%);">FX</div>
<div style="left:146.48px;top:633px;width:21.8px;height:14.2px;background:#2c503c;"></div>
<div class="t" style="left:157.07999999999998px;top:640.3px;font-size:8.8px;color:#3fa862;transform:translate(-50%,-50%);">S</div>
<div style="left:171.48px;top:633px;width:22.4px;height:14.2px;background:#2b475a;"></div>
<div class="t" style="left:182.68px;top:640.3px;font-size:8.8px;color:#4a8fc0;transform:translate(-50%,-50%);">M</div>
<div class="t" style="left:169.88px;top:655.6px;font-size:8px;color:#b8babd;transform:translate(-50%,-50%);">0.0</div>
<div style="left:140.48px;top:686.6px;width:11.0px;height:1px;background:#4f545a;"></div>
<div style="left:188.48px;top:686.6px;width:10.799999999999983px;height:1px;background:#4f545a;"></div>
<div style="left:140.48px;top:711.2px;width:7.400000000000006px;height:1px;background:#4f545a;"></div>
<div style="left:191.88px;top:711.2px;width:7.399999999999977px;height:1px;background:#4f545a;"></div>
<div style="left:168.18px;top:661.8px;width:3.4px;height:114px;background:#1e2125;border-radius:1.7px"></div>


<div style="left:162.38px;top:683.1px;width:15px;height:14.7px;background:#373b40;border:1px solid #5d6268;border-radius:1px;box-shadow:0 0 2px rgba(0,0,0,.7)"></div><div style="left:165.48px;top:687.0px;width:8.8px;height:1.6px;background:#e4e4e4;"></div><div style="left:165.48px;top:691.5px;width:8.8px;height:1.6px;background:#e4e4e4;"></div>
<div class="t" style="left:170.68px;top:789px;font-size:8px;color:#d6d8da;transform:translate(-50%,-50%);">Bass A</div>
<div style="left:202.92px;top:559.2px;width:58.8px;height:240px;background:#2c3035;"></div>
<div style="left:202.92px;top:559.2px;width:58.8px;height:3.6px;background:#4da8e0;"></div>
<div style="left:202.92px;top:795.6px;width:58.8px;height:3.6px;background:#4da8e0;"></div>
<div class="t" style="left:209.11999999999998px;top:571.8px;font-size:9px;color:#fff;transform:translate(-50%,-50%);font-weight:bold">4</div>
<div style="left:224.72px;top:566px;width:35.5px;height:11.6px;background:#202327;"></div>
<div class="t" style="left:242.42px;top:572px;font-size:6.2px;color:#d2d4d6;transform:translate(-50%,-50%);">REC</div>
<svg style="left:208.82px;top:583.80px" width="20.00" height="20.00" viewBox="0 0 20 20"><circle cx="10" cy="10" r="9" fill="#1b1e22"/><circle cx="10" cy="10" r="6.5" fill="#3b4047"/><path d="M6 10.2 L9.6 13.4 H6Z" fill="#4da8e0"/></svg>
<svg style="left:236.12px;top:583.80px" width="20.00" height="20.00" viewBox="0 0 20 20"><circle cx="10" cy="10" r="9" fill="#1b1e22"/><circle cx="10" cy="10" r="6.5" fill="#3b4047"/><path d="M6 10.2 L9.6 13.4 H6Z" fill="#4da8e0"/></svg>
<div style="left:209.92px;top:610.9px;width:44.6px;height:14.2px;background:#5a522e;"></div>
<div class="t" style="left:232.01999999999998px;top:618.2px;font-size:8.8px;color:#d4bf3c;transform:translate(-50%,-50%);">FX</div>
<div style="left:208.92px;top:633px;width:21.8px;height:14.2px;background:#2c503c;"></div>
<div class="t" style="left:219.51999999999998px;top:640.3px;font-size:8.8px;color:#3fa862;transform:translate(-50%,-50%);">S</div>
<div style="left:233.92px;top:633px;width:22.4px;height:14.2px;background:#2b475a;"></div>
<div class="t" style="left:245.12px;top:640.3px;font-size:8.8px;color:#4a8fc0;transform:translate(-50%,-50%);">M</div>
<div class="t" style="left:232.32px;top:655.6px;font-size:8px;color:#b8babd;transform:translate(-50%,-50%);">0.0</div>
<div style="left:202.92px;top:686.6px;width:11.0px;height:1px;background:#4f545a;"></div>
<div style="left:250.92px;top:686.6px;width:10.799999999999983px;height:1px;background:#4f545a;"></div>
<div style="left:202.92px;top:711.2px;width:7.400000000000006px;height:1px;background:#4f545a;"></div>
<div style="left:254.32px;top:711.2px;width:7.399999999999977px;height:1px;background:#4f545a;"></div>
<div style="left:230.62px;top:661.8px;width:3.4px;height:114px;background:#1e2125;border-radius:1.7px"></div>


<div style="left:224.82px;top:683.1px;width:15px;height:14.7px;background:#373b40;border:1px solid #5d6268;border-radius:1px;box-shadow:0 0 2px rgba(0,0,0,.7)"></div><div style="left:227.92px;top:687.0px;width:8.8px;height:1.6px;background:#e4e4e4;"></div><div style="left:227.92px;top:691.5px;width:8.8px;height:1.6px;background:#e4e4e4;"></div>
<div class="t" style="left:233.12px;top:789px;font-size:8px;color:#d6d8da;transform:translate(-50%,-50%);">Bass B</div>
<div style="left:265.36px;top:559.2px;width:58.8px;height:240px;background:#2c3035;"></div>
<div style="left:265.36px;top:559.2px;width:58.8px;height:3.6px;background:#4da8e0;"></div>
<div style="left:265.36px;top:795.6px;width:58.8px;height:3.6px;background:#4da8e0;"></div>
<div class="t" style="left:271.56px;top:571.8px;font-size:9px;color:#fff;transform:translate(-50%,-50%);font-weight:bold">5</div>
<div style="left:287.16px;top:566px;width:35.5px;height:11.6px;background:#202327;"></div>
<div class="t" style="left:304.86px;top:572px;font-size:6.2px;color:#d2d4d6;transform:translate(-50%,-50%);">REC</div>
<svg style="left:271.26px;top:583.80px" width="20.00" height="20.00" viewBox="0 0 20 20"><circle cx="10" cy="10" r="9" fill="#1b1e22"/><circle cx="10" cy="10" r="6.5" fill="#3b4047"/><path d="M6 10.2 L9.6 13.4 H6Z" fill="#4da8e0"/></svg>
<svg style="left:298.56px;top:583.80px" width="20.00" height="20.00" viewBox="0 0 20 20"><circle cx="10" cy="10" r="9" fill="#1b1e22"/><circle cx="10" cy="10" r="6.5" fill="#3b4047"/><path d="M6 10.2 L9.6 13.4 H6Z" fill="#4da8e0"/></svg>
<div style="left:272.36px;top:610.9px;width:44.6px;height:14.2px;background:#5a522e;"></div>
<div class="t" style="left:294.46px;top:618.2px;font-size:8.8px;color:#d4bf3c;transform:translate(-50%,-50%);">FX</div>
<div style="left:271.36px;top:633px;width:21.8px;height:14.2px;background:#2c503c;"></div>
<div class="t" style="left:281.96000000000004px;top:640.3px;font-size:8.8px;color:#3fa862;transform:translate(-50%,-50%);">S</div>
<div style="left:296.36px;top:633px;width:22.4px;height:14.2px;background:#2b475a;"></div>
<div class="t" style="left:307.56px;top:640.3px;font-size:8.8px;color:#4a8fc0;transform:translate(-50%,-50%);">M</div>
<div class="t" style="left:294.76px;top:655.6px;font-size:8px;color:#b8babd;transform:translate(-50%,-50%);">0.0</div>
<div style="left:265.36px;top:686.6px;width:11.0px;height:1px;background:#4f545a;"></div>
<div style="left:313.36px;top:686.6px;width:10.800000000000011px;height:1px;background:#4f545a;"></div>
<div style="left:265.36px;top:711.2px;width:7.399999999999977px;height:1px;background:#4f545a;"></div>
<div style="left:316.76px;top:711.2px;width:7.400000000000034px;height:1px;background:#4f545a;"></div>
<div style="left:293.06px;top:661.8px;width:3.4px;height:114px;background:#1e2125;border-radius:1.7px"></div>
<svg style="left:286.0px;top:739.6px" width="3.4" height="36" viewBox="0 0 3.4 36"><rect x="0" y="34.60" width="3.4" height="1.1" fill="#dedede"/><rect x="0" y="32.90" width="3.4" height="1.1" fill="#dedede"/><rect x="0" y="31.20" width="3.4" height="1.1" fill="#dedede"/><rect x="0" y="29.50" width="3.4" height="1.1" fill="#dedede"/><rect x="0" y="27.80" width="3.4" height="1.1" fill="#dedede"/><rect x="0" y="26.10" width="3.4" height="1.1" fill="#dedede"/><rect x="0" y="24.40" width="3.4" height="1.1" fill="#dedede"/><rect x="0" y="22.70" width="3.4" height="1.1" fill="#dedede"/><rect x="0" y="21.00" width="3.4" height="1.1" fill="#dedede"/><rect x="0" y="19.30" width="3.4" height="1.1" fill="#dedede"/><rect x="0" y="17.60" width="3.4" height="1.1" fill="#dedede"/><rect x="0" y="15.90" width="3.4" height="1.1" fill="#dedede"/><rect x="0" y="14.20" width="3.4" height="1.1" fill="#dedede"/><rect x="0" y="12.50" width="3.4" height="1.1" fill="#dedede"/><rect x="0" y="10.80" width="3.4" height="1.1" fill="#dedede"/><rect x="0" y="9.10" width="3.4" height="1.1" fill="#dedede"/><rect x="0" y="7.40" width="3.4" height="1.1" fill="#dedede"/><rect x="0" y="5.70" width="3.4" height="1.1" fill="#dedede"/><rect x="0" y="4.00" width="3.4" height="1.1" fill="#dedede"/><rect x="0" y="2.30" width="3.4" height="1.1" fill="#dedede"/><rect x="0" y="0.60" width="3.4" height="1.1" fill="#dedede"/></svg>
<svg style="left:300.7px;top:732.6px" width="3.4" height="43" viewBox="0 0 3.4 43"><rect x="0" y="41.60" width="3.4" height="1.1" fill="#dedede"/><rect x="0" y="39.90" width="3.4" height="1.1" fill="#dedede"/><rect x="0" y="38.20" width="3.4" height="1.1" fill="#dedede"/><rect x="0" y="36.50" width="3.4" height="1.1" fill="#dedede"/><rect x="0" y="34.80" width="3.4" height="1.1" fill="#dedede"/><rect x="0" y="33.10" width="3.4" height="1.1" fill="#dedede"/><rect x="0" y="31.40" width="3.4" height="1.1" fill="#dedede"/><rect x="0" y="29.70" width="3.4" height="1.1" fill="#dedede"/><rect x="0" y="28.00" width="3.4" height="1.1" fill="#dedede"/><rect x="0" y="26.30" width="3.4" height="1.1" fill="#dedede"/><rect x="0" y="24.60" width="3.4" height="1.1" fill="#dedede"/><rect x="0" y="22.90" width="3.4" height="1.1" fill="#dedede"/><rect x="0" y="21.20" width="3.4" height="1.1" fill="#dedede"/><rect x="0" y="19.50" width="3.4" height="1.1" fill="#dedede"/><rect x="0" y="17.80" width="3.4" height="1.1" fill="#dedede"/><rect x="0" y="16.10" width="3.4" height="1.1" fill="#dedede"/><rect x="0" y="14.40" width="3.4" height="1.1" fill="#dedede"/><rect x="0" y="12.70" width="3.4" height="1.1" fill="#dedede"/><rect x="0" y="11.00" width="3.4" height="1.1" fill="#dedede"/><rect x="0" y="9.30" width="3.4" height="1.1" fill="#dedede"/><rect x="0" y="7.60" width="3.4" height="1.1" fill="#dedede"/><rect x="0" y="5.90" width="3.4" height="1.1" fill="#dedede"/><rect x="0" y="4.20" width="3.4" height="1.1" fill="#dedede"/><rect x="0" y="2.50" width="3.4" height="1.1" fill="#dedede"/><rect x="0" y="0.80" width="3.4" height="1.1" fill="#dedede"/></svg>
<div style="left:287.26px;top:683.1px;width:15px;height:14.7px;background:#373b40;border:1px solid #5d6268;border-radius:1px;box-shadow:0 0 2px rgba(0,0,0,.7)"></div><div style="left:290.36px;top:687.0px;width:8.8px;height:1.6px;background:#e4e4e4;"></div><div style="left:290.36px;top:691.5px;width:8.8px;height:1.6px;background:#e4e4e4;"></div>
<div class="t" style="left:295.56px;top:789px;font-size:8px;color:#d6d8da;transform:translate(-50%,-50%);">Atmo B</div>
<div style="left:327.8px;top:559.2px;width:58.8px;height:240px;background:#2c3035;"></div>
<div style="left:327.8px;top:559.2px;width:58.8px;height:3.6px;background:#4da8e0;"></div>
<div style="left:327.8px;top:795.6px;width:58.8px;height:3.6px;background:#4da8e0;"></div>
<div class="t" style="left:334.0px;top:571.8px;font-size:9px;color:#fff;transform:translate(-50%,-50%);font-weight:bold">6</div>
<div style="left:349.6px;top:566px;width:35.5px;height:11.6px;background:#202327;"></div>
<div class="t" style="left:367.3px;top:572px;font-size:6.2px;color:#d2d4d6;transform:translate(-50%,-50%);">REC</div>
<svg style="left:333.70px;top:583.80px" width="20.00" height="20.00" viewBox="0 0 20 20"><circle cx="10" cy="10" r="9" fill="#1b1e22"/><circle cx="10" cy="10" r="6.5" fill="#3b4047"/><path d="M6 10.2 L9.6 13.4 H6Z" fill="#4da8e0"/></svg>
<svg style="left:361.00px;top:583.80px" width="20.00" height="20.00" viewBox="0 0 20 20"><circle cx="10" cy="10" r="9" fill="#1b1e22"/><circle cx="10" cy="10" r="6.5" fill="#3b4047"/><path d="M6 10.2 L9.6 13.4 H6Z" fill="#4da8e0"/></svg>
<div style="left:334.8px;top:610.9px;width:44.6px;height:14.2px;background:#5a522e;"></div>
<div class="t" style="left:356.9px;top:618.2px;font-size:8.8px;color:#d4bf3c;transform:translate(-50%,-50%);">FX</div>
<div style="left:333.8px;top:633px;width:21.8px;height:14.2px;background:#2c503c;"></div>
<div class="t" style="left:344.40000000000003px;top:640.3px;font-size:8.8px;color:#3fa862;transform:translate(-50%,-50%);">S</div>
<div style="left:358.8px;top:633px;width:22.4px;height:14.2px;background:#2b475a;"></div>
<div class="t" style="left:370.0px;top:640.3px;font-size:8.8px;color:#4a8fc0;transform:translate(-50%,-50%);">M</div>
<div class="t" style="left:357.2px;top:655.6px;font-size:8px;color:#b8babd;transform:translate(-50%,-50%);">0.0</div>
<div style="left:327.8px;top:686.6px;width:11.0px;height:1px;background:#4f545a;"></div>
<div style="left:375.8px;top:686.6px;width:10.800000000000011px;height:1px;background:#4f545a;"></div>
<div style="left:327.8px;top:711.2px;width:7.399999999999977px;height:1px;background:#4f545a;"></div>
<div style="left:379.2px;top:711.2px;width:7.400000000000034px;height:1px;background:#4f545a;"></div>
<div style="left:355.5px;top:661.8px;width:3.4px;height:114px;background:#1e2125;border-radius:1.7px"></div>
<svg style="left:348.4px;top:728.6px" width="3.4" height="47" viewBox="0 0 3.4 47"><rect x="0" y="45.60" width="3.4" height="1.1" fill="#dedede"/><rect x="0" y="43.90" width="3.4" height="1.1" fill="#dedede"/><rect x="0" y="42.20" width="3.4" height="1.1" fill="#dedede"/><rect x="0" y="40.50" width="3.4" height="1.1" fill="#dedede"/><rect x="0" y="38.80" width="3.4" height="1.1" fill="#dedede"/><rect x="0" y="37.10" width="3.4" height="1.1" fill="#dedede"/><rect x="0" y="35.40" width="3.4" height="1.1" fill="#dedede"/><rect x="0" y="33.70" width="3.4" height="1.1" fill="#dedede"/><rect x="0" y="32.00" width="3.4" height="1.1" fill="#dedede"/><rect x="0" y="30.30" width="3.4" height="1.1" fill="#dedede"/><rect x="0" y="28.60" width="3.4" height="1.1" fill="#dedede"/><rect x="0" y="26.90" width="3.4" height="1.1" fill="#dedede"/><rect x="0" y="25.20" width="3.4" height="1.1" fill="#dedede"/><rect x="0" y="23.50" width="3.4" height="1.1" fill="#dedede"/><rect x="0" y="21.80" width="3.4" height="1.1" fill="#dedede"/><rect x="0" y="20.10" width="3.4" height="1.1" fill="#dedede"/><rect x="0" y="18.40" width="3.4" height="1.1" fill="#dedede"/><rect x="0" y="16.70" width="3.4" height="1.1" fill="#dedede"/><rect x="0" y="15.00" width="3.4" height="1.1" fill="#dedede"/><rect x="0" y="13.30" width="3.4" height="1.1" fill="#dedede"/><rect x="0" y="11.60" width="3.4" height="1.1" fill="#dedede"/><rect x="0" y="9.90" width="3.4" height="1.1" fill="#dedede"/><rect x="0" y="8.20" width="3.4" height="1.1" fill="#dedede"/><rect x="0" y="6.50" width="3.4" height="1.1" fill="#dedede"/><rect x="0" y="4.80" width="3.4" height="1.1" fill="#dedede"/><rect x="0" y="3.10" width="3.4" height="1.1" fill="#dedede"/><rect x="0" y="1.40" width="3.4" height="1.1" fill="#dedede"/></svg>
<svg style="left:363.1px;top:730.6px" width="3.4" height="45" viewBox="0 0 3.4 45"><rect x="0" y="43.60" width="3.4" height="1.1" fill="#dedede"/><rect x="0" y="41.90" width="3.4" height="1.1" fill="#dedede"/><rect x="0" y="40.20" width="3.4" height="1.1" fill="#dedede"/><rect x="0" y="38.50" width="3.4" height="1.1" fill="#dedede"/><rect x="0" y="36.80" width="3.4" height="1.1" fill="#dedede"/><rect x="0" y="35.10" width="3.4" height="1.1" fill="#dedede"/><rect x="0" y="33.40" width="3.4" height="1.1" fill="#dedede"/><rect x="0" y="31.70" width="3.4" height="1.1" fill="#dedede"/><rect x="0" y="30.00" width="3.4" height="1.1" fill="#dedede"/><rect x="0" y="28.30" width="3.4" height="1.1" fill="#dedede"/><rect x="0" y="26.60" width="3.4" height="1.1" fill="#dedede"/><rect x="0" y="24.90" width="3.4" height="1.1" fill="#dedede"/><rect x="0" y="23.20" width="3.4" height="1.1" fill="#dedede"/><rect x="0" y="21.50" width="3.4" height="1.1" fill="#dedede"/><rect x="0" y="19.80" width="3.4" height="1.1" fill="#dedede"/><rect x="0" y="18.10" width="3.4" height="1.1" fill="#dedede"/><rect x="0" y="16.40" width="3.4" height="1.1" fill="#dedede"/><rect x="0" y="14.70" width="3.4" height="1.1" fill="#dedede"/><rect x="0" y="13.00" width="3.4" height="1.1" fill="#dedede"/><rect x="0" y="11.30" width="3.4" height="1.1" fill="#dedede"/><rect x="0" y="9.60" width="3.4" height="1.1" fill="#dedede"/><rect x="0" y="7.90" width="3.4" height="1.1" fill="#dedede"/><rect x="0" y="6.20" width="3.4" height="1.1" fill="#dedede"/><rect x="0" y="4.50" width="3.4" height="1.1" fill="#dedede"/><rect x="0" y="2.80" width="3.4" height="1.1" fill="#dedede"/><rect x="0" y="1.10" width="3.4" height="1.1" fill="#dedede"/></svg>
<div style="left:349.7px;top:683.1px;width:15px;height:14.7px;background:#373b40;border:1px solid #5d6268;border-radius:1px;box-shadow:0 0 2px rgba(0,0,0,.7)"></div><div style="left:352.8px;top:687.0px;width:8.8px;height:1.6px;background:#e4e4e4;"></div><div style="left:352.8px;top:691.5px;width:8.8px;height:1.6px;background:#e4e4e4;"></div>
<div class="t" style="left:358.0px;top:789px;font-size:8px;color:#d6d8da;transform:translate(-50%,-50%);">Atmo A</div>
<div style="left:390.24px;top:559.2px;width:58.8px;height:240px;background:#2c3035;"></div>
<div style="left:390.24px;top:559.2px;width:58.8px;height:3.6px;background:#4da8e0;"></div>
<div style="left:390.24px;top:795.6px;width:58.8px;height:3.6px;background:#4da8e0;"></div>
<div class="t" style="left:396.44px;top:571.8px;font-size:9px;color:#fff;transform:translate(-50%,-50%);font-weight:bold">7</div>
<div style="left:412.04px;top:566px;width:35.5px;height:11.6px;background:#202327;"></div>
<div class="t" style="left:429.74px;top:572px;font-size:6.2px;color:#d2d4d6;transform:translate(-50%,-50%);">REC</div>
<svg style="left:396.14px;top:583.80px" width="20.00" height="20.00" viewBox="0 0 20 20"><circle cx="10" cy="10" r="9" fill="#1b1e22"/><circle cx="10" cy="10" r="6.5" fill="#3b4047"/><path d="M6 10.2 L9.6 13.4 H6Z" fill="#4da8e0"/></svg>
<svg style="left:423.44px;top:583.80px" width="20.00" height="20.00" viewBox="0 0 20 20"><circle cx="10" cy="10" r="9" fill="#1b1e22"/><circle cx="10" cy="10" r="6.5" fill="#3b4047"/><path d="M6 10.2 L9.6 13.4 H6Z" fill="#4da8e0"/></svg>
<div style="left:397.24px;top:610.9px;width:44.6px;height:14.2px;background:#5a522e;"></div>
<div class="t" style="left:419.34px;top:618.2px;font-size:8.8px;color:#d4bf3c;transform:translate(-50%,-50%);">FX</div>
<div style="left:396.24px;top:633px;width:21.8px;height:14.2px;background:#2c503c;"></div>
<div class="t" style="left:406.84000000000003px;top:640.3px;font-size:8.8px;color:#3fa862;transform:translate(-50%,-50%);">S</div>
<div style="left:421.24px;top:633px;width:22.4px;height:14.2px;background:#2b475a;"></div>
<div class="t" style="left:432.44px;top:640.3px;font-size:8.8px;color:#4a8fc0;transform:translate(-50%,-50%);">M</div>
<div class="t" style="left:419.64px;top:655.6px;font-size:8px;color:#b8babd;transform:translate(-50%,-50%);">0.0</div>
<div style="left:390.24px;top:686.6px;width:11.0px;height:1px;background:#4f545a;"></div>
<div style="left:438.24px;top:686.6px;width:10.800000000000011px;height:1px;background:#4f545a;"></div>
<div style="left:390.24px;top:711.2px;width:7.399999999999977px;height:1px;background:#4f545a;"></div>
<div style="left:441.64px;top:711.2px;width:7.400000000000034px;height:1px;background:#4f545a;"></div>
<div style="left:417.94px;top:661.8px;width:3.4px;height:114px;background:#1e2125;border-radius:1.7px"></div>
<svg style="left:410.8px;top:730.6px" width="3.4" height="45" viewBox="0 0 3.4 45"><rect x="0" y="43.60" width="3.4" height="1.1" fill="#dedede"/><rect x="0" y="41.90" width="3.4" height="1.1" fill="#dedede"/><rect x="0" y="40.20" width="3.4" height="1.1" fill="#dedede"/><rect x="0" y="38.50" width="3.4" height="1.1" fill="#dedede"/><rect x="0" y="36.80" width="3.4" height="1.1" fill="#dedede"/><rect x="0" y="35.10" width="3.4" height="1.1" fill="#dedede"/><rect x="0" y="33.40" width="3.4" height="1.1" fill="#dedede"/><rect x="0" y="31.70" width="3.4" height="1.1" fill="#dedede"/><rect x="0" y="30.00" width="3.4" height="1.1" fill="#dedede"/><rect x="0" y="28.30" width="3.4" height="1.1" fill="#dedede"/><rect x="0" y="26.60" width="3.4" height="1.1" fill="#dedede"/><rect x="0" y="24.90" width="3.4" height="1.1" fill="#dedede"/><rect x="0" y="23.20" width="3.4" height="1.1" fill="#dedede"/><rect x="0" y="21.50" width="3.4" height="1.1" fill="#dedede"/><rect x="0" y="19.80" width="3.4" height="1.1" fill="#dedede"/><rect x="0" y="18.10" width="3.4" height="1.1" fill="#dedede"/><rect x="0" y="16.40" width="3.4" height="1.1" fill="#dedede"/><rect x="0" y="14.70" width="3.4" height="1.1" fill="#dedede"/><rect x="0" y="13.00" width="3.4" height="1.1" fill="#dedede"/><rect x="0" y="11.30" width="3.4" height="1.1" fill="#dedede"/><rect x="0" y="9.60" width="3.4" height="1.1" fill="#dedede"/><rect x="0" y="7.90" width="3.4" height="1.1" fill="#dedede"/><rect x="0" y="6.20" width="3.4" height="1.1" fill="#dedede"/><rect x="0" y="4.50" width="3.4" height="1.1" fill="#dedede"/><rect x="0" y="2.80" width="3.4" height="1.1" fill="#dedede"/><rect x="0" y="1.10" width="3.4" height="1.1" fill="#dedede"/></svg>
<svg style="left:425.5px;top:730.6px" width="3.4" height="45" viewBox="0 0 3.4 45"><rect x="0" y="43.60" width="3.4" height="1.1" fill="#dedede"/><rect x="0" y="41.90" width="3.4" height="1.1" fill="#dedede"/><rect x="0" y="40.20" width="3.4" height="1.1" fill="#dedede"/><rect x="0" y="38.50" width="3.4" height="1.1" fill="#dedede"/><rect x="0" y="36.80" width="3.4" height="1.1" fill="#dedede"/><rect x="0" y="35.10" width="3.4" height="1.1" fill="#dedede"/><rect x="0" y="33.40" width="3.4" height="1.1" fill="#dedede"/><rect x="0" y="31.70" width="3.4" height="1.1" fill="#dedede"/><rect x="0" y="30.00" width="3.4" height="1.1" fill="#dedede"/><rect x="0" y="28.30" width="3.4" height="1.1" fill="#dedede"/><rect x="0" y="26.60" width="3.4" height="1.1" fill="#dedede"/><rect x="0" y="24.90" width="3.4" height="1.1" fill="#dedede"/><rect x="0" y="23.20" width="3.4" height="1.1" fill="#dedede"/><rect x="0" y="21.50" width="3.4" height="1.1" fill="#dedede"/><rect x="0" y="19.80" width="3.4" height="1.1" fill="#dedede"/><rect x="0" y="18.10" width="3.4" height="1.1" fill="#dedede"/><rect x="0" y="16.40" width="3.4" height="1.1" fill="#dedede"/><rect x="0" y="14.70" width="3.4" height="1.1" fill="#dedede"/><rect x="0" y="13.00" width="3.4" height="1.1" fill="#dedede"/><rect x="0" y="11.30" width="3.4" height="1.1" fill="#dedede"/><rect x="0" y="9.60" width="3.4" height="1.1" fill="#dedede"/><rect x="0" y="7.90" width="3.4" height="1.1" fill="#dedede"/><rect x="0" y="6.20" width="3.4" height="1.1" fill="#dedede"/><rect x="0" y="4.50" width="3.4" height="1.1" fill="#dedede"/><rect x="0" y="2.80" width="3.4" height="1.1" fill="#dedede"/><rect x="0" y="1.10" width="3.4" height="1.1" fill="#dedede"/></svg>
<div style="left:412.14px;top:683.1px;width:15px;height:14.7px;background:#373b40;border:1px solid #5d6268;border-radius:1px;box-shadow:0 0 2px rgba(0,0,0,.7)"></div><div style="left:415.24px;top:687.0px;width:8.8px;height:1.6px;background:#e4e4e4;"></div><div style="left:415.24px;top:691.5px;width:8.8px;height:1.6px;background:#e4e4e4;"></div>
<div class="t" style="left:420.44px;top:789px;font-size:8px;color:#d6d8da;transform:translate(-50%,-50%);">Themes</div>
<div style="left:452.68px;top:559.2px;width:58.8px;height:240px;background:#2c3035;"></div>
<div style="left:452.68px;top:559.2px;width:58.8px;height:3.6px;background:#4da8e0;"></div>
<div style="left:452.68px;top:795.6px;width:58.8px;height:3.6px;background:#4da8e0;"></div>
<div class="t" style="left:458.88px;top:571.8px;font-size:9px;color:#fff;transform:translate(-50%,-50%);font-weight:bold">8</div>
<div style="left:474.48px;top:566px;width:35.5px;height:11.6px;background:#202327;"></div>
<div class="t" style="left:492.18px;top:572px;font-size:6.2px;color:#d2d4d6;transform:translate(-50%,-50%);">REC</div>
<svg style="left:458.58px;top:583.80px" width="20.00" height="20.00" viewBox="0 0 20 20"><circle cx="10" cy="10" r="9" fill="#1b1e22"/><circle cx="10" cy="10" r="6.5" fill="#3b4047"/><path d="M6 10.2 L9.6 13.4 H6Z" fill="#4da8e0"/></svg>
<svg style="left:485.88px;top:583.80px" width="20.00" height="20.00" viewBox="0 0 20 20"><circle cx="10" cy="10" r="9" fill="#1b1e22"/><circle cx="10" cy="10" r="6.5" fill="#3b4047"/><path d="M6 10.2 L9.6 13.4 H6Z" fill="#4da8e0"/></svg>
<div style="left:459.68px;top:610.9px;width:44.6px;height:14.2px;background:#5a522e;"></div>
<div class="t" style="left:481.78px;top:618.2px;font-size:8.8px;color:#d4bf3c;transform:translate(-50%,-50%);">FX</div>
<div style="left:458.68px;top:633px;width:21.8px;height:14.2px;background:#2c503c;"></div>
<div class="t" style="left:469.28000000000003px;top:640.3px;font-size:8.8px;color:#3fa862;transform:translate(-50%,-50%);">S</div>
<div style="left:483.68px;top:633px;width:22.4px;height:14.2px;background:#2b475a;"></div>
<div class="t" style="left:494.88px;top:640.3px;font-size:8.8px;color:#4a8fc0;transform:translate(-50%,-50%);">M</div>
<div class="t" style="left:482.08px;top:655.6px;font-size:8px;color:#b8babd;transform:translate(-50%,-50%);">0.0</div>
<div style="left:452.68px;top:686.6px;width:11.0px;height:1px;background:#4f545a;"></div>
<div style="left:500.68px;top:686.6px;width:10.800000000000011px;height:1px;background:#4f545a;"></div>
<div style="left:452.68px;top:711.2px;width:7.399999999999977px;height:1px;background:#4f545a;"></div>
<div style="left:504.08px;top:711.2px;width:7.400000000000034px;height:1px;background:#4f545a;"></div>
<div style="left:480.38px;top:661.8px;width:3.4px;height:114px;background:#1e2125;border-radius:1.7px"></div>
<svg style="left:473.3px;top:737.6px" width="3.4" height="38" viewBox="0 0 3.4 38"><rect x="0" y="36.60" width="3.4" height="1.1" fill="#dedede"/><rect x="0" y="34.90" width="3.4" height="1.1" fill="#dedede"/><rect x="0" y="33.20" width="3.4" height="1.1" fill="#dedede"/><rect x="0" y="31.50" width="3.4" height="1.1" fill="#dedede"/><rect x="0" y="29.80" width="3.4" height="1.1" fill="#dedede"/><rect x="0" y="28.10" width="3.4" height="1.1" fill="#dedede"/><rect x="0" y="26.40" width="3.4" height="1.1" fill="#dedede"/><rect x="0" y="24.70" width="3.4" height="1.1" fill="#dedede"/><rect x="0" y="23.00" width="3.4" height="1.1" fill="#dedede"/><rect x="0" y="21.30" width="3.4" height="1.1" fill="#dedede"/><rect x="0" y="19.60" width="3.4" height="1.1" fill="#dedede"/><rect x="0" y="17.90" width="3.4" height="1.1" fill="#dedede"/><rect x="0" y="16.20" width="3.4" height="1.1" fill="#dedede"/><rect x="0" y="14.50" width="3.4" height="1.1" fill="#dedede"/><rect x="0" y="12.80" width="3.4" height="1.1" fill="#dedede"/><rect x="0" y="11.10" width="3.4" height="1.1" fill="#dedede"/><rect x="0" y="9.40" width="3.4" height="1.1" fill="#dedede"/><rect x="0" y="7.70" width="3.4" height="1.1" fill="#dedede"/><rect x="0" y="6.00" width="3.4" height="1.1" fill="#dedede"/><rect x="0" y="4.30" width="3.4" height="1.1" fill="#dedede"/><rect x="0" y="2.60" width="3.4" height="1.1" fill="#dedede"/><rect x="0" y="0.90" width="3.4" height="1.1" fill="#dedede"/></svg>
<svg style="left:488.0px;top:737.6px" width="3.4" height="38" viewBox="0 0 3.4 38"><rect x="0" y="36.60" width="3.4" height="1.1" fill="#dedede"/><rect x="0" y="34.90" width="3.4" height="1.1" fill="#dedede"/><rect x="0" y="33.20" width="3.4" height="1.1" fill="#dedede"/><rect x="0" y="31.50" width="3.4" height="1.1" fill="#dedede"/><rect x="0" y="29.80" width="3.4" height="1.1" fill="#dedede"/><rect x="0" y="28.10" width="3.4" height="1.1" fill="#dedede"/><rect x="0" y="26.40" width="3.4" height="1.1" fill="#dedede"/><rect x="0" y="24.70" width="3.4" height="1.1" fill="#dedede"/><rect x="0" y="23.00" width="3.4" height="1.1" fill="#dedede"/><rect x="0" y="21.30" width="3.4" height="1.1" fill="#dedede"/><rect x="0" y="19.60" width="3.4" height="1.1" fill="#dedede"/><rect x="0" y="17.90" width="3.4" height="1.1" fill="#dedede"/><rect x="0" y="16.20" width="3.4" height="1.1" fill="#dedede"/><rect x="0" y="14.50" width="3.4" height="1.1" fill="#dedede"/><rect x="0" y="12.80" width="3.4" height="1.1" fill="#dedede"/><rect x="0" y="11.10" width="3.4" height="1.1" fill="#dedede"/><rect x="0" y="9.40" width="3.4" height="1.1" fill="#dedede"/><rect x="0" y="7.70" width="3.4" height="1.1" fill="#dedede"/><rect x="0" y="6.00" width="3.4" height="1.1" fill="#dedede"/><rect x="0" y="4.30" width="3.4" height="1.1" fill="#dedede"/><rect x="0" y="2.60" width="3.4" height="1.1" fill="#dedede"/><rect x="0" y="0.90" width="3.4" height="1.1" fill="#dedede"/></svg>
<div style="left:474.58px;top:683.1px;width:15px;height:14.7px;background:#373b40;border:1px solid #5d6268;border-radius:1px;box-shadow:0 0 2px rgba(0,0,0,.7)"></div><div style="left:477.68px;top:687.0px;width:8.8px;height:1.6px;background:#e4e4e4;"></div><div style="left:477.68px;top:691.5px;width:8.8px;height:1.6px;background:#e4e4e4;"></div>
<div class="t" style="left:482.88px;top:789px;font-size:8px;color:#d6d8da;transform:translate(-50%,-50%);">Strings</div>
<div style="left:516.6px;top:559.2px;width:19px;height:240px;border:1px dashed #33373d"></div>
<svg style="left:521.80px;top:675.00px" width="8.00" height="8.00" viewBox="0 0 8 8"><path d="M4 0 V8 M0 4 H8" stroke="#d8d8d8" stroke-width="1.1"/></svg>
<div style="left:916.2px;top:559.2px;width:58.6px;height:240px;background:#2c3035;"></div>
<div class="t" style="left:945.5px;top:571.8px;font-size:9.2px;color:#fff;transform:translate(-50%,-50%);font-weight:bold">AUX FX</div>
<div style="left:923.2px;top:610.9px;width:44.8px;height:14.4px;background:#c3b548;"></div>
<div class="t" style="left:945.5px;top:618.3px;font-size:8.6px;color:#5e5722;transform:translate(-50%,-50%);">FX</div>
<div style="left:922.4000000000001px;top:633px;width:21.8px;height:14.2px;background:#2c503c;"></div>
<div class="t" style="left:933.0px;top:640.3px;font-size:8.8px;color:#3fa862;transform:translate(-50%,-50%);">S</div>
<div style="left:947.4000000000001px;top:633px;width:22.4px;height:14.2px;background:#2b475a;"></div>
<div class="t" style="left:958.6px;top:640.3px;font-size:8.8px;color:#4a8fc0;transform:translate(-50%,-50%);">M</div>
<div class="t" style="left:945.5px;top:655.6px;font-size:8px;color:#b8babd;transform:translate(-50%,-50%);">0.0</div>
<div style="left:916.2px;top:686.6px;width:11.0px;height:1px;background:#4f545a;"></div>
<div style="left:964.2px;top:686.6px;width:10.600000000000023px;height:1px;background:#4f545a;"></div>
<div style="left:916.2px;top:711.2px;width:7.399999999999977px;height:1px;background:#4f545a;"></div>
<div style="left:967.6px;top:711.2px;width:7.2000000000000455px;height:1px;background:#4f545a;"></div>
<div style="left:943.8px;top:661.8px;width:3.4px;height:114px;background:#1e2125;border-radius:1.7px"></div>
<div style="left:938.0px;top:683.1px;width:15px;height:14.7px;background:#373b40;border:1px solid #5d6268;border-radius:1px;box-shadow:0 0 2px rgba(0,0,0,.7)"></div><div style="left:941.1px;top:687.0px;width:8.8px;height:1.6px;background:#e4e4e4;"></div><div style="left:941.1px;top:691.5px;width:8.8px;height:1.6px;background:#e4e4e4;"></div>
<div class="t" style="left:945.5px;top:784.2px;font-size:7.6px;color:#e8e8e8;transform:translate(-50%,-50%);font-weight:bold">1</div>
<div style="left:978.6px;top:559.2px;width:58.6px;height:240px;background:#2c3035;"></div>
<div class="t" style="left:1007.9px;top:571.8px;font-size:9.2px;color:#fff;transform:translate(-50%,-50%);font-weight:bold">AUX FX</div>
<div style="left:985.6px;top:610.9px;width:44.8px;height:14.4px;background:#c3b548;"></div>
<div class="t" style="left:1007.9px;top:618.3px;font-size:8.6px;color:#5e5722;transform:translate(-50%,-50%);">FX</div>
<div style="left:984.8000000000001px;top:633px;width:21.8px;height:14.2px;background:#2c503c;"></div>
<div class="t" style="left:995.4px;top:640.3px;font-size:8.8px;color:#3fa862;transform:translate(-50%,-50%);">S</div>
<div style="left:1009.8000000000001px;top:633px;width:22.4px;height:14.2px;background:#2b475a;"></div>
<div class="t" style="left:1021.0px;top:640.3px;font-size:8.8px;color:#4a8fc0;transform:translate(-50%,-50%);">M</div>
<div class="t" style="left:1007.9px;top:655.6px;font-size:8px;color:#b8babd;transform:translate(-50%,-50%);">0.0</div>
<div style="left:978.6px;top:686.6px;width:11.0px;height:1px;background:#4f545a;"></div>
<div style="left:1026.6px;top:686.6px;width:10.600000000000136px;height:1px;background:#4f545a;"></div>
<div style="left:978.6px;top:711.2px;width:7.399999999999977px;height:1px;background:#4f545a;"></div>
<div style="left:1030.0px;top:711.2px;width:7.2000000000000455px;height:1px;background:#4f545a;"></div>
<div style="left:1006.1999999999999px;top:661.8px;width:3.4px;height:114px;background:#1e2125;border-radius:1.7px"></div>
<div style="left:1000.4px;top:683.1px;width:15px;height:14.7px;background:#373b40;border:1px solid #5d6268;border-radius:1px;box-shadow:0 0 2px rgba(0,0,0,.7)"></div><div style="left:1003.5px;top:687.0px;width:8.8px;height:1.6px;background:#e4e4e4;"></div><div style="left:1003.5px;top:691.5px;width:8.8px;height:1.6px;background:#e4e4e4;"></div>
<div class="t" style="left:1007.9px;top:784.2px;font-size:7.6px;color:#e8e8e8;transform:translate(-50%,-50%);font-weight:bold">2</div>
<div style="left:1040.8px;top:559.2px;width:88.4px;height:240px;background:#2c3035;"></div>
<div style="left:1040.8px;top:559.2px;width:88.4px;height:3.8px;background:#f4f4f4;"></div>
<div style="left:1040.8px;top:795.6px;width:88.4px;height:3.6px;background:#f4f4f4;"></div>
<div class="t" style="left:1085.0px;top:571.8px;font-size:8px;color:#fff;transform:translate(-50%,-50%);font-weight:bold">Master</div>
<div style="left:1048.2px;top:610.9px;width:74px;height:14.4px;background:#c3b548;"></div>
<div class="t" style="left:1085.0px;top:618.3px;font-size:8.6px;color:#5e5722;transform:translate(-50%,-50%);">FX</div>
<div style="left:1045.8px;top:633px;width:37.3px;height:14.2px;background:#28382f;"></div>
<div class="t" style="left:1064.3999999999999px;top:640.3px;font-size:8px;color:#35553f;transform:translate(-50%,-50%);">Reset S</div>
<div style="left:1087.3px;top:633px;width:36.5px;height:14.2px;background:#27333d;"></div>
<div class="t" style="left:1105.6px;top:640.3px;font-size:8px;color:#354b5e;transform:translate(-50%,-50%);">Reset M</div>
<div class="t" style="left:1062.8px;top:655.6px;font-size:7.6px;color:#b8babd;transform:translate(-50%,-50%);">−0.1</div>
<div class="t" style="left:1106.8px;top:655.6px;font-size:7.6px;color:#b8babd;transform:translate(-50%,-50%);">−0.1</div>
<div style="left:1040.8px;top:686.6px;width:11.0px;height:1px;background:#4f545a;"></div>
<div style="left:1118.8px;top:686.6px;width:10.400000000000091px;height:1px;background:#4f545a;"></div>
<div style="left:1040.8px;top:711.2px;width:7.400000000000091px;height:1px;background:#4f545a;"></div>
<div style="left:1122.2px;top:711.2px;width:7.0px;height:1px;background:#4f545a;"></div>
<div style="left:1072.3px;top:661.8px;width:3.4px;height:114px;background:#1e2125;border-radius:1.7px"></div>
<div style="left:1066.5px;top:684px;width:15px;height:14.7px;background:#373b40;border:1px solid #5d6268;border-radius:1px;box-shadow:0 0 2px rgba(0,0,0,.7)"></div><div style="left:1069.6px;top:688.3px;width:8.8px;height:0.9px;background:#b4b6b8;"></div><div style="left:1069.6px;top:692.8px;width:8.8px;height:0.9px;background:#b4b6b8;"></div>
<div style="left:1094.3px;top:661.8px;width:3.4px;height:114px;background:#1e2125;border-radius:1.7px"></div>
<div style="left:1088.5px;top:684px;width:15px;height:14.7px;background:#373b40;border:1px solid #5d6268;border-radius:1px;box-shadow:0 0 2px rgba(0,0,0,.7)"></div><div style="left:1091.6px;top:688.3px;width:8.8px;height:0.9px;background:#b4b6b8;"></div><div style="left:1091.6px;top:692.8px;width:8.8px;height:0.9px;background:#b4b6b8;"></div>
<svg style="left:1060.2px;top:722.8px" width="3" height="53" viewBox="0 0 3 53"><rect x="0" y="51.60" width="3" height="1.1" fill="#dedede"/><rect x="0" y="49.90" width="3" height="1.1" fill="#dedede"/><rect x="0" y="48.20" width="3" height="1.1" fill="#dedede"/><rect x="0" y="46.50" width="3" height="1.1" fill="#dedede"/><rect x="0" y="44.80" width="3" height="1.1" fill="#dedede"/><rect x="0" y="43.10" width="3" height="1.1" fill="#dedede"/><rect x="0" y="41.40" width="3" height="1.1" fill="#dedede"/><rect x="0" y="39.70" width="3" height="1.1" fill="#dedede"/><rect x="0" y="38.00" width="3" height="1.1" fill="#dedede"/><rect x="0" y="36.30" width="3" height="1.1" fill="#dedede"/><rect x="0" y="34.60" width="3" height="1.1" fill="#dedede"/><rect x="0" y="32.90" width="3" height="1.1" fill="#dedede"/><rect x="0" y="31.20" width="3" height="1.1" fill="#dedede"/><rect x="0" y="29.50" width="3" height="1.1" fill="#dedede"/><rect x="0" y="27.80" width="3" height="1.1" fill="#dedede"/><rect x="0" y="26.10" width="3" height="1.1" fill="#dedede"/><rect x="0" y="24.40" width="3" height="1.1" fill="#dedede"/><rect x="0" y="22.70" width="3" height="1.1" fill="#dedede"/><rect x="0" y="21.00" width="3" height="1.1" fill="#dedede"/><rect x="0" y="19.30" width="3" height="1.1" fill="#dedede"/><rect x="0" y="17.60" width="3" height="1.1" fill="#dedede"/><rect x="0" y="15.90" width="3" height="1.1" fill="#dedede"/><rect x="0" y="14.20" width="3" height="1.1" fill="#dedede"/><rect x="0" y="12.50" width="3" height="1.1" fill="#dedede"/><rect x="0" y="10.80" width="3" height="1.1" fill="#dedede"/><rect x="0" y="9.10" width="3" height="1.1" fill="#dedede"/><rect x="0" y="7.40" width="3" height="1.1" fill="#dedede"/><rect x="0" y="5.70" width="3" height="1.1" fill="#dedede"/><rect x="0" y="4.00" width="3" height="1.1" fill="#dedede"/><rect x="0" y="2.30" width="3" height="1.1" fill="#e8962a"/><rect x="0" y="0.60" width="3" height="1.1" fill="#e8962a"/></svg>
<svg style="left:1108.0px;top:719.8px" width="3" height="56" viewBox="0 0 3 56"><rect x="0" y="54.60" width="3" height="1.1" fill="#dedede"/><rect x="0" y="52.90" width="3" height="1.1" fill="#dedede"/><rect x="0" y="51.20" width="3" height="1.1" fill="#dedede"/><rect x="0" y="49.50" width="3" height="1.1" fill="#dedede"/><rect x="0" y="47.80" width="3" height="1.1" fill="#dedede"/><rect x="0" y="46.10" width="3" height="1.1" fill="#dedede"/><rect x="0" y="44.40" width="3" height="1.1" fill="#dedede"/><rect x="0" y="42.70" width="3" height="1.1" fill="#dedede"/><rect x="0" y="41.00" width="3" height="1.1" fill="#dedede"/><rect x="0" y="39.30" width="3" height="1.1" fill="#dedede"/><rect x="0" y="37.60" width="3" height="1.1" fill="#dedede"/><rect x="0" y="35.90" width="3" height="1.1" fill="#dedede"/><rect x="0" y="34.20" width="3" height="1.1" fill="#dedede"/><rect x="0" y="32.50" width="3" height="1.1" fill="#dedede"/><rect x="0" y="30.80" width="3" height="1.1" fill="#dedede"/><rect x="0" y="29.10" width="3" height="1.1" fill="#dedede"/><rect x="0" y="27.40" width="3" height="1.1" fill="#dedede"/><rect x="0" y="25.70" width="3" height="1.1" fill="#dedede"/><rect x="0" y="24.00" width="3" height="1.1" fill="#dedede"/><rect x="0" y="22.30" width="3" height="1.1" fill="#dedede"/><rect x="0" y="20.60" width="3" height="1.1" fill="#dedede"/><rect x="0" y="18.90" width="3" height="1.1" fill="#dedede"/><rect x="0" y="17.20" width="3" height="1.1" fill="#dedede"/><rect x="0" y="15.50" width="3" height="1.1" fill="#dedede"/><rect x="0" y="13.80" width="3" height="1.1" fill="#dedede"/><rect x="0" y="12.10" width="3" height="1.1" fill="#dedede"/><rect x="0" y="10.40" width="3" height="1.1" fill="#dedede"/><rect x="0" y="8.70" width="3" height="1.1" fill="#dedede"/><rect x="0" y="7.00" width="3" height="1.1" fill="#dedede"/><rect x="0" y="5.30" width="3" height="1.1" fill="#dedede"/><rect x="0" y="3.60" width="3" height="1.1" fill="#e8962a"/><rect x="0" y="1.90" width="3" height="1.1" fill="#e8962a"/></svg>
<div class="t" style="left:1067.6px;top:786px;font-size:7.6px;color:#dcdee0;transform:translate(-50%,-50%);">L</div>
<div class="t" style="left:1101px;top:786px;font-size:7.6px;color:#dcdee0;transform:translate(-50%,-50%);">R</div>
<svg style="left:1082.00px;top:783.40px" width="6.00" height="6.00" viewBox="0 0 6 6"><rect x="1" y="2.8" width="4" height="3" fill="#9a9da2"/><path d="M1.8 2.8 V2 A1.2 1.2 0 0 1 4.2 2 V2.8" stroke="#9a9da2" stroke-width=".7" fill="none"/></svg>
<svg style="left:1132.80px;top:560.00px" width="12.00" height="12.00" viewBox="0 0 12 12"><g fill="#fff"><circle cx="6" cy="6" r="3.7"/><rect x="5.1" y="0.4" width="1.8" height="11.2" transform="rotate(0 6 6)"/><rect x="5.1" y="0.4" width="1.8" height="11.2" transform="rotate(45 6 6)"/><rect x="5.1" y="0.4" width="1.8" height="11.2" transform="rotate(90 6 6)"/><rect x="5.1" y="0.4" width="1.8" height="11.2" transform="rotate(135 6 6)"/></g><circle cx="6" cy="6" r="1.8" fill="#22262a"/></svg>
<div class="t" style="left:1146.8px;top:663px;font-size:6.4px;color:#8e9298;transform:translate(-100%,-50%)">6</div>
<div class="t" style="left:1146.8px;top:688px;font-size:6.4px;color:#8e9298;transform:translate(-100%,-50%)">0</div>
<div class="t" style="left:1146.8px;top:712px;font-size:6.4px;color:#8e9298;transform:translate(-100%,-50%)">−6</div>
<div class="t" style="left:1146.8px;top:735.5px;font-size:6.4px;color:#8e9298;transform:translate(-100%,-50%)">−20</div>
<div class="t" style="left:1146.8px;top:757.6px;font-size:6.4px;color:#8e9298;transform:translate(-100%,-50%)">−40</div>
<div class="t" style="left:1146.8px;top:777.6px;font-size:6.4px;color:#8e9298;transform:translate(-100%,-50%)">−inf</div>
</body></html>
